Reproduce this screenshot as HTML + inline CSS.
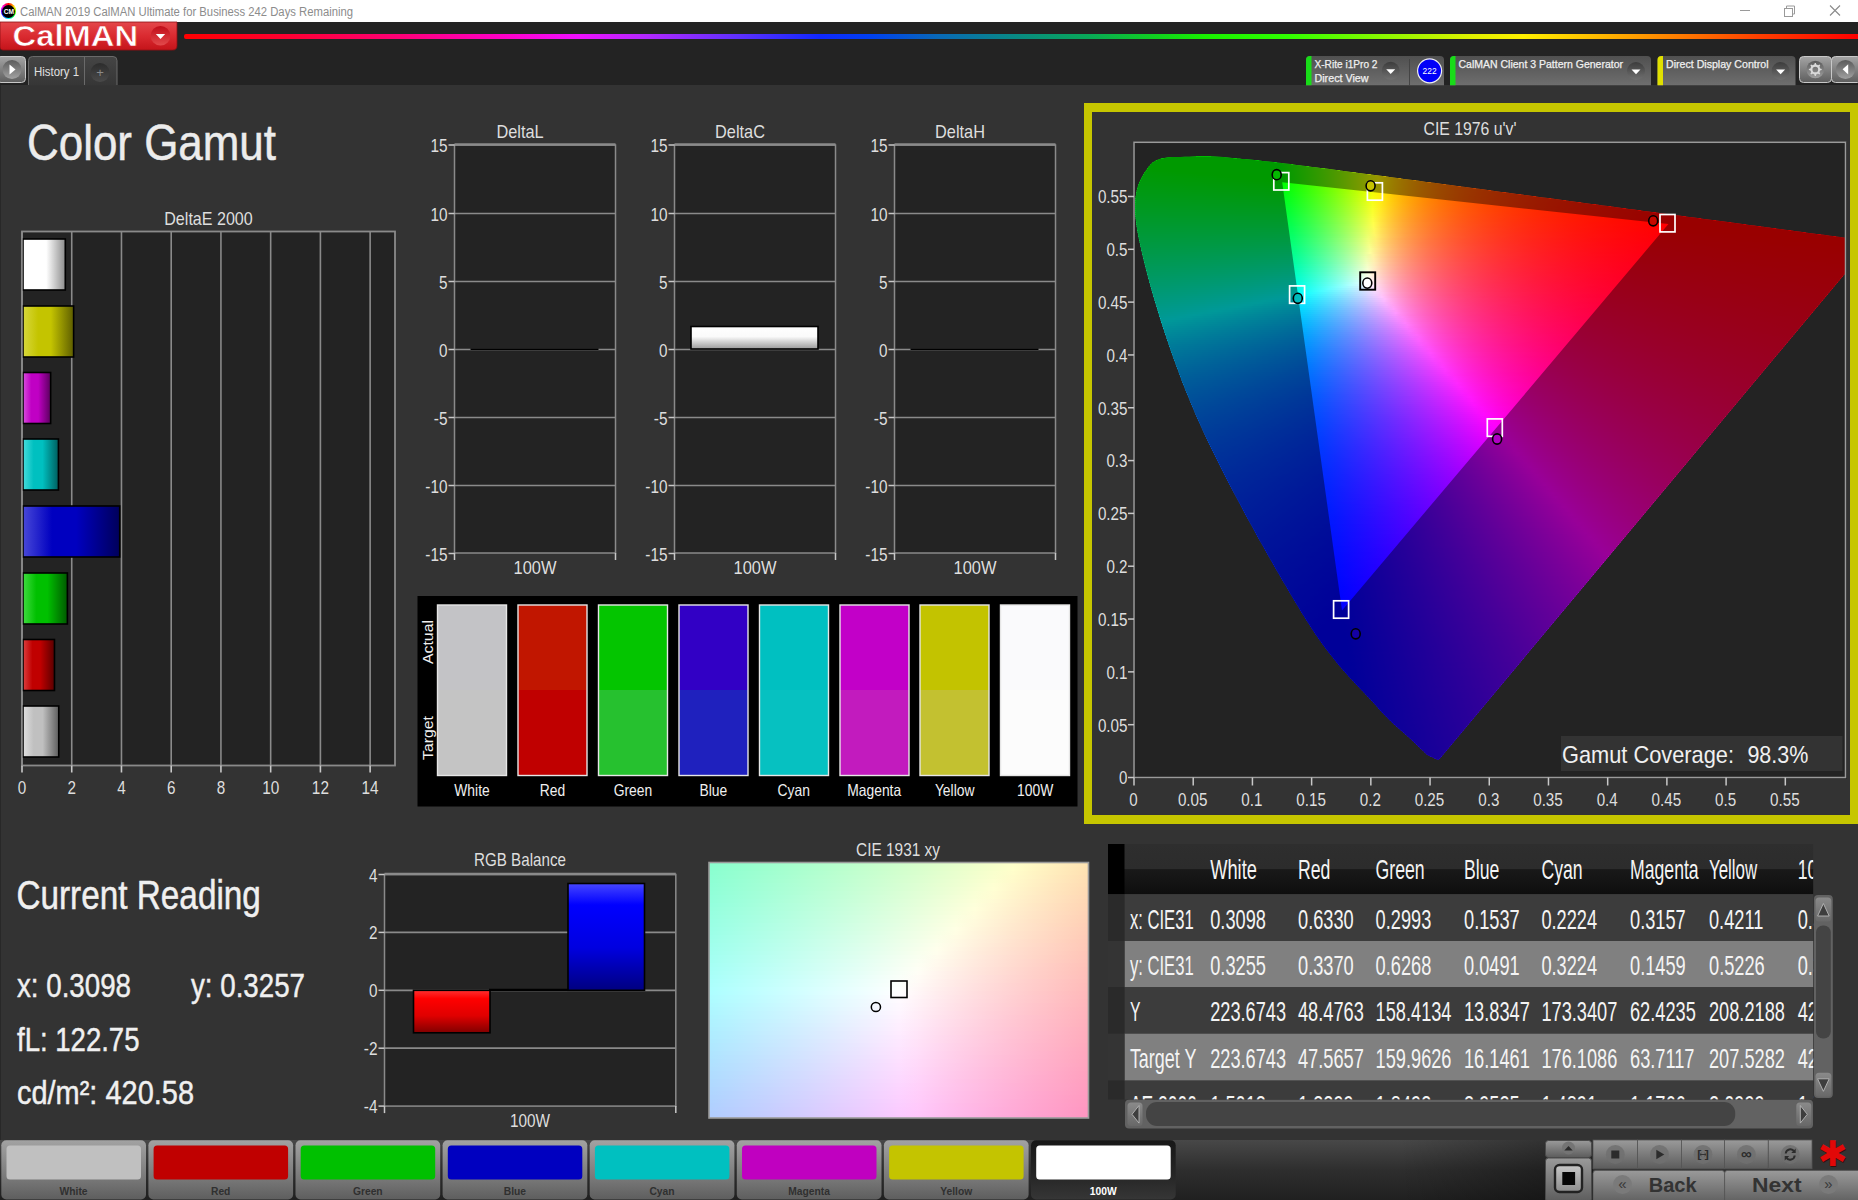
<!DOCTYPE html>
<html><head><meta charset="utf-8"><title>CalMAN</title>
<style>
html,body{margin:0;padding:0;background:#333;overflow:hidden}
body{width:1858px;height:1200px;position:relative;font-family:"Liberation Sans",sans-serif}
#r{position:absolute;left:0;top:0;width:1858px;height:1200px;overflow:hidden;background:#333}
#r div{position:absolute}
#r svg{position:absolute;left:0;top:0}
svg text{font-family:"Liberation Sans",sans-serif}
</style></head><body><div id="r">
<div style="left:0px;top:0px;width:1858px;height:22px;background:#fff"></div>
<div style="left:0px;top:22px;width:1858px;height:63.3px;background:#232323"></div>
<div style="left:0px;top:85.3px;width:1px;height:1055px;background:#282828"></div>
<div style="left:184px;top:34px;width:1674px;height:5px;background:linear-gradient(90deg,#ff0000 0%,#ff0030 6%,#ff0078 13%,#ff00c8 19%,#f010ff 23.5%,#b428ff 27.5%,#6030ff 33%,#1028ff 38%,#0040f0 41%,#0868b8 45%,#088c80 50%,#08a858 54%,#10d020 58%,#18f000 61%,#30ff00 66%,#90f800 72%,#e0f000 77%,#fff000 80%,#ffc000 84%,#ff8000 89%,#ff4000 94%,#ff0000 100%);border-radius:2px 0 0 2px"></div>
<div style="left:1.2px;top:3.4px;width:15.2px;height:15.2px;border-radius:50%;background:conic-gradient(#f00,#ff0,#0f0,#0ff,#00f,#f0f,#f00)"></div>
<div style="left:2.3px;top:4.5px;width:13px;height:13px;border-radius:50%;background:#000"></div>
<div style="left:1084px;top:103px;width:774px;height:721px;background:#c6c600"></div>
<div style="left:1092px;top:112px;width:757.5px;height:703px;background:#333"></div>
<div style="left:1133px;top:141.5px;width:713.5px;height:637px;background:#232323"></div>
<div style="left:1134.0px;top:142.3px;width:711.5px;height:635.2px;overflow:hidden;clip-path:polygon(305.9px 616.2px,304.1px 617.6px,293.4px 612.7px,291.7px 611.1px,289.8px 609.3px,288.5px 608.0px,286.9px 606.6px,285.3px 605.0px,283.5px 603.3px,281.6px 601.4px,279.5px 599.4px,277.2px 597.2px,274.9px 595.1px,272.4px 592.9px,269.9px 590.7px,267.3px 588.4px,265.9px 587.2px,264.5px 586.0px,263.0px 584.7px,261.5px 583.3px,259.9px 581.9px,258.3px 580.4px,256.7px 578.8px,254.9px 577.1px,253.2px 575.3px,251.3px 573.4px,249.4px 571.5px,247.4px 569.4px,245.4px 567.1px,243.3px 564.8px,241.1px 562.3px,238.8px 559.7px,236.5px 557.2px,234.1px 554.7px,231.7px 552.1px,229.2px 549.5px,226.7px 546.9px,224.2px 544.2px,221.5px 541.4px,218.9px 538.5px,216.1px 535.6px,213.3px 532.5px,210.4px 529.3px,207.5px 525.9px,204.5px 522.4px,201.5px 518.7px,198.4px 514.8px,195.2px 510.8px,191.9px 506.5px,188.6px 502.0px,185.2px 497.2px,181.7px 492.2px,178.2px 486.9px,174.6px 481.3px,170.9px 475.4px,167.0px 469.2px,163.0px 462.5px,158.7px 455.4px,154.4px 448.0px,149.8px 440.3px,145.1px 432.3px,140.4px 424.0px,135.5px 415.5px,130.6px 406.8px,125.6px 397.9px,120.6px 388.9px,115.6px 379.8px,110.6px 370.6px,105.6px 361.3px,100.7px 352.0px,95.8px 342.8px,91.0px 333.5px,86.4px 324.4px,81.9px 315.3px,77.5px 306.4px,73.3px 297.6px,69.2px 289.0px,65.4px 280.6px,61.8px 272.5px,58.4px 264.5px,55.0px 256.3px,51.7px 248.1px,48.4px 239.9px,45.3px 231.5px,42.2px 223.2px,39.2px 214.9px,36.3px 206.6px,33.4px 198.3px,30.7px 190.1px,28.0px 181.9px,25.5px 173.9px,23.1px 166.0px,20.7px 158.2px,18.5px 150.6px,16.4px 143.1px,14.4px 135.9px,12.5px 128.8px,10.8px 122.0px,9.2px 115.5px,7.7px 109.2px,6.4px 103.2px,5.2px 97.6px,4.1px 92.2px,3.2px 87.2px,2.5px 82.5px,1.9px 78.0px,1.5px 73.8px,1.2px 69.8px,1.1px 66.0px,1.1px 62.5px,1.3px 59.2px,1.5px 56.1px,1.9px 53.2px,2.4px 50.4px,2.9px 47.8px,3.6px 45.3px,4.3px 43.0px,5.1px 40.8px,6.0px 38.7px,6.9px 36.7px,7.9px 34.8px,9.0px 33.0px,10.0px 31.2px,11.1px 29.5px,12.3px 27.9px,13.4px 26.2px,14.5px 24.6px,15.8px 23.1px,17.1px 21.7px,18.4px 20.5px,19.9px 19.4px,23.1px 17.7px,26.6px 16.4px,30.3px 15.6px,34.3px 15.0px,38.3px 14.7px,42.5px 14.6px,46.7px 14.6px,51.0px 14.5px,55.2px 14.5px,59.4px 14.2px,63.5px 14.0px,67.6px 13.9px,71.8px 13.9px,76.0px 14.0px,80.3px 14.2px,84.7px 14.5px,89.1px 14.8px,93.7px 15.2px,96.0px 15.4px,98.3px 15.7px,100.7px 15.9px,103.1px 16.1px,105.5px 16.3px,107.9px 16.6px,110.4px 16.8px,113.0px 17.0px,115.5px 17.3px,118.1px 17.5px,120.6px 17.8px,123.2px 18.0px,125.9px 18.3px,128.5px 18.6px,131.1px 18.9px,133.8px 19.2px,136.5px 19.5px,139.3px 19.8px,142.0px 20.1px,144.8px 20.4px,147.7px 20.8px,150.5px 21.1px,153.4px 21.5px,156.4px 21.8px,159.3px 22.2px,162.4px 22.6px,165.4px 23.0px,168.6px 23.4px,171.7px 23.8px,175.0px 24.2px,178.2px 24.6px,181.6px 25.0px,184.9px 25.4px,188.3px 25.9px,191.8px 26.3px,195.3px 26.7px,198.8px 27.2px,202.4px 27.7px,206.0px 28.1px,209.7px 28.6px,213.3px 29.1px,217.1px 29.6px,220.9px 30.1px,224.7px 30.6px,228.5px 31.1px,232.5px 31.6px,236.4px 32.1px,240.4px 32.7px,244.5px 33.2px,248.5px 33.8px,252.7px 34.3px,256.9px 34.9px,261.1px 35.4px,265.4px 36.0px,269.7px 36.6px,274.1px 37.2px,278.5px 37.7px,283.1px 38.3px,287.7px 38.9px,292.3px 39.6px,297.0px 40.2px,301.8px 40.8px,306.6px 41.5px,311.5px 42.1px,316.5px 42.8px,321.4px 43.4px,326.4px 44.1px,331.5px 44.8px,336.5px 45.5px,341.6px 46.1px,346.8px 46.8px,351.9px 47.5px,357.0px 48.2px,362.2px 48.9px,367.3px 49.6px,372.5px 50.3px,377.7px 51.0px,382.8px 51.6px,387.9px 52.3px,393.1px 53.0px,398.2px 53.7px,403.4px 54.4px,408.7px 55.1px,414.0px 55.8px,419.4px 56.5px,424.8px 57.2px,430.2px 58.0px,435.7px 58.7px,441.1px 59.4px,446.6px 60.2px,452.1px 60.9px,457.5px 61.6px,463.0px 62.3px,468.4px 63.1px,473.8px 63.8px,479.1px 64.5px,484.4px 65.2px,489.6px 65.9px,494.8px 66.6px,499.9px 67.3px,504.9px 67.9px,509.8px 68.6px,514.6px 69.2px,519.4px 69.9px,524.0px 70.5px,528.6px 71.1px,533.2px 71.7px,537.7px 72.3px,542.2px 72.9px,546.6px 73.5px,551.0px 74.1px,555.4px 74.7px,559.7px 75.2px,563.9px 75.8px,568.1px 76.4px,572.2px 76.9px,576.3px 77.5px,580.3px 78.0px,584.3px 78.5px,588.2px 79.0px,592.0px 79.5px,595.8px 80.0px,599.5px 80.5px,603.1px 81.0px,606.7px 81.5px,610.1px 82.0px,613.5px 82.4px,616.9px 82.9px,620.1px 83.3px,623.3px 83.7px,626.3px 84.1px,629.3px 84.5px,632.3px 84.9px,635.1px 85.3px,637.9px 85.7px,640.6px 86.0px,643.2px 86.4px,645.8px 86.7px,648.3px 87.0px,650.8px 87.4px,653.2px 87.7px,655.6px 88.0px,657.9px 88.3px,660.2px 88.6px,662.4px 88.9px,666.7px 89.5px,670.9px 90.1px,674.9px 90.6px,678.9px 91.1px,682.7px 91.6px,686.2px 92.1px,689.6px 92.5px,692.8px 93.0px,695.8px 93.4px,698.7px 93.8px,701.4px 94.1px,704.0px 94.5px,706.4px 94.8px,708.8px 95.1px,711.0px 95.4px,714.1px 95.8px,716.7px 96.2px,719.0px 96.5px,721.6px 96.8px,723.9px 97.1px,726.3px 97.5px,728.7px 97.8px,731.0px 98.1px,733.3px 98.4px,735.6px 98.7px,737.9px 99.0px)"><div style="left:61.9px;top:12.0px;width:15.3px;height:2.5px;background:linear-gradient(90deg,#00ff00,#00ff00,#00ff00,#00ff00)"></div><div style="left:26.9px;top:14.0px;width:76.4px;height:2.5px;background:linear-gradient(90deg,#00ff00,#00ff00,#00ff00,#00ff00,#00ff00,#00ff00,#00ff00,#00ff00,#00ff00,#00ff00,#00ff00,#00ff00)"></div><div style="left:21.0px;top:16.0px;width:103.6px;height:2.5px;background:linear-gradient(90deg,#00ff00,#00ff00,#00ff00,#00ff00,#00ff00,#00ff00,#00ff00,#00ff00,#00ff00,#00ff00,#00ff00,#00ff00,#00ff00,#00ff00,#00ff00)"></div><div style="left:17.6px;top:18.0px;width:125.1px;height:2.5px;background:linear-gradient(90deg,#00ff00,#00ff00,#00ff00,#00ff00,#00ff00,#00ff00,#00ff00,#00ff00,#00ff00,#00ff00,#00ff00,#00ff00,#00ff00,#00ff00,#00ff00,#00ff00,#00ff00,#00ff00)"></div><div style="left:15.3px;top:20.0px;width:143.8px;height:2.5px;background:linear-gradient(90deg,#00ff00,#00ff00,#00ff00,#00ff00,#00ff00,#00ff00,#00ff00,#00ff00,#00ff00,#00ff00,#00ff00,#00ff00,#00ff00,#00ff00,#00ff00,#00ff00,#00ff00,#00ff00,#00ff00,#0dff00,#1cff00)"></div><div style="left:13.5px;top:22.0px;width:161.5px;height:2.5px;background:linear-gradient(90deg,#00ff00,#00ff00,#00ff00,#00ff00,#00ff00,#00ff00,#00ff00,#00ff00,#00ff00,#00ff00,#00ff00,#00ff00,#00ff00,#00ff00,#00ff00,#00ff00,#00ff00,#00ff00,#00ff00,#0fff00,#1eff00,#2eff00,#3fff00)"></div><div style="left:12.1px;top:24.0px;width:178.9px;height:2.5px;background:linear-gradient(90deg,#00ff00,#00ff00,#00ff00,#00ff00,#00ff00,#00ff00,#00ff00,#00ff00,#00ff00,#00ff00,#00ff00,#00ff00,#00ff00,#00ff00,#00ff00,#00ff00,#00ff00,#00ff00,#00ff00,#10ff00,#1fff00,#30ff00,#41ff00,#53ff00,#65ff00)"></div><div style="left:10.7px;top:26.0px;width:195.8px;height:2.5px;background:linear-gradient(90deg,#00ff03,#00ff02,#00ff01,#00ff00,#00ff00,#00ff00,#00ff00,#00ff00,#00ff00,#00ff00,#00ff00,#00ff00,#00ff00,#00ff00,#00ff00,#00ff00,#00ff00,#00ff00,#00ff00,#04ff00,#13ff00,#23ff00,#33ff00,#44ff00,#56ff00,#68ff00,#7aff00,#8eff00)"></div><div style="left:9.3px;top:28.0px;width:212.4px;height:2.5px;background:linear-gradient(90deg,#00ff05,#00ff04,#00ff03,#00ff02,#00ff01,#00ff00,#00ff00,#00ff00,#00ff00,#00ff00,#00ff00,#00ff00,#00ff00,#00ff00,#00ff00,#00ff00,#00ff00,#00ff00,#00ff00,#04ff00,#13ff00,#23ff00,#33ff00,#45ff00,#56ff00,#69ff00,#7cff00,#90ff00,#a4ff00,#baff00)"></div><div style="left:8.1px;top:30.0px;width:228.8px;height:2.5px;background:linear-gradient(90deg,#00ff08,#00ff07,#00ff06,#00ff05,#00ff04,#00ff03,#00ff02,#00ff01,#00ff00,#00ff00,#00ff00,#00ff00,#00ff00,#00ff00,#00ff00,#00ff00,#00ff00,#00ff00,#00ff00,#03ff00,#12ff00,#22ff00,#33ff00,#44ff00,#56ff00,#69ff00,#7cff00,#90ff00,#a5ff00,#bbff00,#d2ff00,#e9ff00)"></div><div style="left:6.9px;top:32.0px;width:245.0px;height:2.5px;background:linear-gradient(90deg,#00ff0b,#00ff0a,#00ff09,#00ff08,#00ff07,#00ff06,#00ff05,#00ff04,#00ff03,#00ff02,#00ff01,#00ff00,#00ff00,#00ff00,#00ff00,#00ff00,#00ff00,#00ff00,#00ff00,#01ff00,#11ff00,#21ff00,#32ff00,#43ff00,#56ff00,#68ff00,#7cff00,#90ff00,#a5ff00,#bbff00,#d2ff00,#eaff00,#fffb00,#ffe400)"></div><div style="left:5.8px;top:34.0px;width:261.1px;height:2.5px;background:linear-gradient(90deg,#00ff0d,#00ff0c,#00ff0b,#00ff0b,#00ff0a,#00ff09,#00ff08,#00ff07,#00ff06,#00ff05,#00ff04,#00ff02,#00ff01,#00ff00,#00ff00,#00ff00,#00ff00,#00ff00,#00ff00,#00ff00,#10ff00,#20ff00,#31ff00,#43ff00,#55ff00,#68ff00,#7bff00,#90ff00,#a5ff00,#bbff00,#d3ff00,#ebff00,#fffa00,#ffe300,#ffcf00,#ffbd00)"></div><div style="left:4.8px;top:36.0px;width:277.2px;height:2.5px;background:linear-gradient(90deg,#00ff10,#00ff0f,#00ff0e,#00ff0d,#00ff0c,#00ff0b,#00ff0b,#00ff0a,#00ff09,#00ff08,#00ff07,#00ff05,#00ff04,#00ff03,#00ff02,#00ff01,#00ff00,#00ff00,#00ff00,#00ff00,#0eff00,#1fff00,#30ff00,#42ff00,#54ff00,#67ff00,#7bff00,#8fff00,#a5ff00,#bbff00,#d3ff00,#ebff00,#fff900,#ffe200,#ffce00,#ffbc00,#ffad00,#ff9f00)"></div><div style="left:4.0px;top:38.0px;width:293.1px;height:2.5px;background:linear-gradient(90deg,#00ff12,#00ff12,#00ff11,#00ff10,#00ff0f,#00ff0e,#00ff0e,#00ff0d,#00ff0c,#00ff0b,#00ff0a,#00ff09,#00ff08,#00ff07,#00ff06,#00ff04,#00ff03,#00ff02,#00ff01,#00ff00,#05ff00,#15ff00,#25ff00,#36ff00,#48ff00,#5aff00,#6dff00,#81ff00,#95ff00,#abff00,#c1ff00,#d8ff00,#f0ff00,#fff500,#ffdf00,#ffcb00,#ffba00,#ffab00,#ff9e00,#ff9200,#ff8700)"></div><div style="left:3.2px;top:40.0px;width:308.9px;height:2.5px;background:linear-gradient(90deg,#00ff15,#00ff14,#00ff14,#00ff13,#00ff12,#00ff11,#00ff10,#00ff10,#00ff0f,#00ff0e,#00ff0d,#00ff0c,#00ff0b,#00ff0a,#00ff09,#00ff08,#00ff06,#00ff05,#00ff04,#00ff03,#04ff01,#14ff00,#24ff00,#35ff00,#47ff00,#59ff00,#6dff00,#80ff00,#95ff00,#abff00,#c1ff00,#d9ff00,#f1ff00,#fff400,#ffde00,#ffca00,#ffb900,#ffaa00,#ff9d00,#ff9100,#ff8600,#ff7c00,#ff7300)"></div><div style="left:2.5px;top:42.0px;width:324.6px;height:2.5px;background:linear-gradient(90deg,#00ff18,#00ff17,#00ff16,#00ff16,#00ff15,#00ff14,#00ff13,#00ff12,#00ff12,#00ff11,#00ff10,#00ff0f,#00ff0e,#00ff0d,#00ff0c,#00ff0b,#00ff0a,#00ff09,#00ff07,#00ff06,#03ff05,#13ff04,#23ff02,#35ff01,#46ff00,#59ff00,#6cff00,#80ff00,#95ff00,#abff00,#c1ff00,#d9ff00,#f2ff00,#fff300,#ffdd00,#ffc900,#ffb800,#ffa900,#ff9c00,#ff9000,#ff8500,#ff7b00,#ff7300,#ff6a00,#ff6300)"></div><div style="left:1.9px;top:44.0px;width:340.2px;height:2.5px;background:linear-gradient(90deg,#00ff1a,#00ff1a,#00ff19,#00ff18,#00ff18,#00ff17,#00ff16,#00ff15,#00ff14,#00ff14,#00ff13,#00ff12,#00ff11,#00ff10,#00ff0f,#00ff0e,#00ff0d,#00ff0c,#00ff0b,#00ff0a,#02ff08,#12ff07,#22ff06,#34ff05,#46ff03,#58ff02,#6cff00,#80ff00,#95ff00,#abff00,#c1ff00,#d9ff00,#f2ff00,#fff200,#ffdc00,#ffc900,#ffb800,#ffa900,#ff9b00,#ff8f00,#ff8500,#ff7b00,#ff7200,#ff6a00,#ff6200,#ff5b00,#ff5500)"></div><div style="left:1.4px;top:46.0px;width:355.7px;height:2.5px;background:linear-gradient(90deg,#00ff1d,#00ff1c,#00ff1c,#00ff1b,#00ff1a,#00ff1a,#00ff19,#00ff18,#00ff17,#00ff17,#00ff16,#00ff15,#00ff14,#00ff13,#00ff12,#00ff11,#00ff10,#00ff0f,#00ff0e,#00ff0d,#01ff0c,#11ff0b,#22ff09,#33ff08,#45ff07,#58ff06,#6bff04,#7fff03,#94ff01,#aaff00,#c1ff00,#d9ff00,#f2ff00,#fff200,#ffdc00,#ffc800,#ffb700,#ffa800,#ff9b00,#ff8f00,#ff8400,#ff7a00,#ff7100,#ff6900,#ff6200,#ff5b00,#ff5500,#ff4f00,#ff4900)"></div><div style="left:0.9px;top:48.0px;width:371.1px;height:2.5px;background:linear-gradient(90deg,#00ff20,#00ff1f,#00ff1e,#00ff1e,#00ff1d,#00ff1c,#00ff1c,#00ff1b,#00ff1a,#00ff1a,#00ff19,#00ff18,#00ff17,#00ff16,#00ff15,#00ff14,#00ff14,#00ff13,#00ff12,#00ff10,#00ff0f,#10ff0e,#21ff0d,#32ff0c,#44ff0b,#57ff09,#6bff08,#7fff07,#94ff05,#aaff04,#c1ff02,#d9ff00,#f3ff00,#fff200,#ffdb00,#ffc800,#ffb600,#ffa700,#ff9a00,#ff8e00,#ff8300,#ff7900,#ff7100,#ff6800,#ff6100,#ff5a00,#ff5400,#ff4e00,#ff4900,#ff4400,#ff3f00)"></div><div style="left:0.6px;top:50.0px;width:386.4px;height:2.5px;background:linear-gradient(90deg,#00ff22,#00ff22,#00ff21,#00ff21,#00ff20,#00ff1f,#00ff1f,#00ff1e,#00ff1d,#00ff1d,#00ff1c,#00ff1b,#00ff1a,#00ff19,#00ff19,#00ff18,#00ff17,#00ff16,#00ff15,#00ff14,#00ff13,#0fff12,#20ff11,#31ff10,#44ff0e,#56ff0d,#6aff0c,#7fff0b,#94ff09,#aaff08,#c1ff06,#daff05,#f3ff03,#fff101,#ffdb00,#ffc700,#ffb600,#ffa700,#ff9900,#ff8d00,#ff8300,#ff7900,#ff7000,#ff6800,#ff6000,#ff5a00,#ff5300,#ff4d00,#ff4800,#ff4300,#ff3e00,#ff3a00,#ff3600)"></div><div style="left:0.3px;top:52.0px;width:401.7px;height:2.5px;background:linear-gradient(90deg,#00ff25,#00ff24,#00ff24,#00ff23,#00ff23,#00ff22,#00ff22,#00ff21,#00ff20,#00ff20,#00ff1f,#00ff1e,#00ff1d,#00ff1d,#00ff1c,#00ff1b,#00ff1a,#00ff19,#00ff18,#00ff17,#00ff17,#0eff15,#1fff14,#31ff13,#43ff12,#56ff11,#6aff10,#7eff0f,#94ff0d,#aaff0c,#c1ff0a,#daff09,#f3ff07,#fff105,#ffda03,#ffc602,#ffb500,#ffa600,#ff9900,#ff8d00,#ff8200,#ff7800,#ff6f00,#ff6700,#ff6000,#ff5900,#ff5300,#ff4d00,#ff4800,#ff4200,#ff3e00,#ff3900,#ff3500,#ff3100,#ff2e00)"></div><div style="left:0.0px;top:54.0px;width:416.9px;height:2.5px;background:linear-gradient(90deg,#00ff28,#00ff27,#00ff27,#00ff26,#00ff26,#00ff25,#00ff24,#00ff24,#00ff23,#00ff23,#00ff22,#00ff21,#00ff21,#00ff20,#00ff1f,#00ff1e,#00ff1e,#00ff1d,#00ff1c,#00ff1b,#00ff1a,#0dff19,#1eff18,#30ff17,#42ff16,#55ff15,#69ff14,#7eff13,#93ff11,#aaff10,#c1ff0f,#daff0d,#f4ff0c,#fff00a,#ffd907,#ffc605,#ffb504,#ffa602,#ff9801,#ff8c00,#ff8100,#ff7800,#ff6f00,#ff6700,#ff5f00,#ff5800,#ff5200,#ff4c00,#ff4700,#ff4200,#ff3d00,#ff3900,#ff3500,#ff3100,#ff2d00,#ff2a00,#ff2700)"></div><div style="left:0.0px;top:56.0px;width:432.0px;height:2.5px;background:linear-gradient(90deg,#00ff2a,#00ff2a,#00ff29,#00ff29,#00ff28,#00ff28,#00ff27,#00ff27,#00ff26,#00ff26,#00ff25,#00ff24,#00ff24,#00ff23,#00ff22,#00ff22,#00ff21,#00ff20,#00ff1f,#00ff1f,#00ff1e,#0dff1d,#1eff1c,#30ff1b,#42ff1a,#55ff19,#69ff18,#7eff17,#94ff16,#aaff14,#c2ff13,#dbff12,#f4ff10,#ffef0e,#ffd90b,#ffc509,#ffb407,#ffa505,#ff9704,#ff8b02,#ff8101,#ff7700,#ff6e00,#ff6600,#ff5f00,#ff5800,#ff5200,#ff4c00,#ff4600,#ff4100,#ff3d00,#ff3800,#ff3400,#ff3000,#ff2d00,#ff2900,#ff2600,#ff2300,#ff2000)"></div><div style="left:0.0px;top:58.0px;width:446.9px;height:2.5px;background:linear-gradient(90deg,#00ff2d,#00ff2d,#00ff2c,#00ff2c,#00ff2b,#00ff2b,#00ff2a,#00ff2a,#00ff29,#00ff29,#00ff28,#00ff28,#00ff27,#00ff26,#00ff26,#00ff25,#00ff24,#00ff24,#00ff23,#00ff22,#00ff21,#0cff20,#1dff20,#2fff1f,#42ff1e,#55ff1d,#69ff1c,#7eff1b,#94ff1a,#aaff19,#c2ff17,#dbff16,#f5ff15,#ffef12,#ffd80f,#ffc40d,#ffb30b,#ffa409,#ff9707,#ff8b05,#ff8004,#ff7603,#ff6d02,#ff6501,#ff5e00,#ff5700,#ff5100,#ff4b00,#ff4600,#ff4100,#ff3c00,#ff3800,#ff3400,#ff3000,#ff2c00,#ff2900,#ff2600,#ff2300,#ff2000,#ff1d00,#ff1b00)"></div><div style="left:0.0px;top:60.0px;width:461.9px;height:2.5px;background:linear-gradient(90deg,#00ff30,#00ff2f,#00ff2f,#00ff2f,#00ff2e,#00ff2e,#00ff2d,#00ff2d,#00ff2c,#00ff2c,#00ff2b,#00ff2b,#00ff2a,#00ff2a,#00ff29,#00ff28,#00ff28,#00ff27,#00ff26,#00ff26,#00ff25,#0cff24,#1dff23,#2fff23,#41ff22,#55ff21,#69ff20,#7eff1f,#94ff1e,#abff1d,#c3ff1c,#dcff1b,#f6ff1a,#ffee17,#ffd713,#ffc411,#ffb20e,#ffa30c,#ff960a,#ff8a08,#ff7f07,#ff7605,#ff6d04,#ff6503,#ff5d02,#ff5701,#ff5000,#ff4b00,#ff4500,#ff4000,#ff3c00,#ff3700,#ff3300,#ff2f00,#ff2c00,#ff2800,#ff2500,#ff2200,#ff1f00,#ff1d00,#ff1a00,#ff1800,#ff1500)"></div><div style="left:0.0px;top:62.0px;width:476.9px;height:2.5px;background:linear-gradient(90deg,#00ff32,#00ff32,#00ff32,#00ff31,#00ff31,#00ff31,#00ff30,#00ff30,#00ff2f,#00ff2f,#00ff2e,#00ff2e,#00ff2d,#00ff2d,#00ff2c,#00ff2c,#00ff2b,#00ff2b,#00ff2a,#00ff29,#00ff29,#0bff28,#1dff27,#2eff27,#41ff26,#55ff25,#69ff24,#7eff23,#94ff22,#abff21,#c3ff20,#dcff1f,#f6ff1e,#ffed1b,#ffd617,#ffc314,#ffb212,#ffa30f,#ff950d,#ff890b,#ff7f0a,#ff7508,#ff6c07,#ff6405,#ff5d04,#ff5603,#ff5002,#ff4a01,#ff4500,#ff4000,#ff3b00,#ff3700,#ff3300,#ff2f00,#ff2b00,#ff2800,#ff2500,#ff2200,#ff1f00,#ff1c00,#ff1a00,#ff1700,#ff1500,#ff1300,#ff1100)"></div><div style="left:0.0px;top:64.0px;width:491.9px;height:2.5px;background:linear-gradient(90deg,#00ff35,#00ff35,#00ff35,#00ff34,#00ff34,#00ff33,#00ff33,#00ff33,#00ff32,#00ff32,#00ff31,#00ff31,#00ff31,#00ff30,#00ff30,#00ff2f,#00ff2f,#00ff2e,#00ff2e,#00ff2d,#00ff2c,#0bff2c,#1cff2b,#2eff2a,#41ff2a,#54ff29,#69ff28,#7eff27,#94ff27,#abff26,#c3ff25,#ddff24,#f7ff23,#ffec1f,#ffd61c,#ffc218,#ffb115,#ffa213,#ff9510,#ff890e,#ff7e0c,#ff740b,#ff6c09,#ff6408,#ff5c06,#ff5505,#ff4f04,#ff4a03,#ff4402,#ff3f01,#ff3b01,#ff3600,#ff3200,#ff2e00,#ff2b00,#ff2800,#ff2400,#ff2100,#ff1f00,#ff1c00,#ff1900,#ff1700,#ff1500,#ff1200,#ff1000,#ff0e00,#ff0c00)"></div><div style="left:0.0px;top:66.0px;width:506.9px;height:2.5px;background:linear-gradient(90deg,#00ff38,#00ff38,#00ff37,#00ff37,#00ff37,#00ff36,#00ff36,#00ff36,#00ff35,#00ff35,#00ff35,#00ff34,#00ff34,#00ff33,#00ff33,#00ff33,#00ff32,#00ff32,#00ff31,#00ff31,#00ff30,#0aff30,#1cff2f,#2eff2e,#41ff2e,#54ff2d,#69ff2c,#7eff2c,#94ff2b,#abff2a,#c4ff29,#ddff29,#f8ff28,#ffec24,#ffd520,#ffc11c,#ffb019,#ffa116,#ff9413,#ff8811,#ff7d0f,#ff740d,#ff6b0c,#ff630a,#ff5c09,#ff5508,#ff4f06,#ff4905,#ff4404,#ff3f03,#ff3a03,#ff3602,#ff3201,#ff2e00,#ff2a00,#ff2700,#ff2400,#ff2100,#ff1e00,#ff1b00,#ff1900,#ff1600,#ff1400,#ff1200,#ff1000,#ff0e00,#ff0c00,#ff0a00,#ff0800)"></div><div style="left:0.0px;top:68.0px;width:521.9px;height:2.5px;background:linear-gradient(90deg,#00ff3b,#00ff3b,#00ff3a,#00ff3a,#00ff3a,#00ff39,#00ff39,#00ff39,#00ff39,#00ff38,#00ff38,#00ff38,#00ff37,#00ff37,#00ff36,#00ff36,#00ff36,#00ff35,#00ff35,#00ff34,#00ff34,#0aff33,#1bff33,#2dff32,#40ff32,#54ff31,#68ff31,#7eff30,#94ff2f,#acff2f,#c4ff2e,#deff2d,#f9ff2d,#ffeb28,#ffd424,#ffc120,#ffb01c,#ffa019,#ff9317,#ff8714,#ff7d12,#ff7310,#ff6a0e,#ff620d,#ff5b0b,#ff540a,#ff4e09,#ff4807,#ff4306,#ff3e05,#ff3a04,#ff3504,#ff3103,#ff2e02,#ff2a01,#ff2701,#ff2300,#ff2000,#ff1e00,#ff1b00,#ff1800,#ff1600,#ff1400,#ff1200,#ff0f00,#ff0d00,#ff0c00,#ff0a00,#ff0800,#ff0600,#ff0500)"></div><div style="left:0.0px;top:70.0px;width:536.9px;height:2.5px;background:linear-gradient(90deg,#00ff3e,#00ff3d,#00ff3d,#00ff3d,#00ff3d,#00ff3c,#00ff3c,#00ff3c,#00ff3c,#00ff3b,#00ff3b,#00ff3b,#00ff3b,#00ff3a,#00ff3a,#00ff3a,#00ff39,#00ff39,#00ff38,#00ff38,#00ff38,#09ff37,#1bff37,#2dff36,#40ff36,#54ff36,#68ff35,#7eff34,#94ff34,#acff33,#c4ff33,#deff32,#f9ff31,#ffea2d,#ffd328,#ffc024,#ffaf20,#ffa01d,#ff921a,#ff8717,#ff7c15,#ff7213,#ff6a11,#ff620f,#ff5a0d,#ff540c,#ff4e0b,#ff4809,#ff4308,#ff3e07,#ff3906,#ff3505,#ff3104,#ff2d04,#ff2903,#ff2602,#ff2301,#ff2001,#ff1d00,#ff1b00,#ff1800,#ff1600,#ff1300,#ff1100,#ff0f00,#ff0d00,#ff0b00,#ff0900,#ff0800,#ff0600,#ff0400,#ff0300,#ff0100)"></div><div style="left:0.0px;top:72.0px;width:551.9px;height:2.5px;background:linear-gradient(90deg,#00ff40,#00ff40,#00ff40,#00ff40,#00ff40,#00ff3f,#00ff3f,#00ff3f,#00ff3f,#00ff3f,#00ff3e,#00ff3e,#00ff3e,#00ff3e,#00ff3d,#00ff3d,#00ff3d,#00ff3d,#00ff3c,#00ff3c,#00ff3c,#09ff3b,#1aff3b,#2dff3b,#40ff3a,#54ff3a,#68ff39,#7eff39,#94ff38,#acff38,#c5ff37,#dfff37,#faff36,#ffe931,#ffd32c,#ffbf27,#ffae23,#ff9f20,#ff921d,#ff861a,#ff7b18,#ff7215,#ff6913,#ff6112,#ff5a10,#ff530e,#ff4d0d,#ff470c,#ff420a,#ff3d09,#ff3908,#ff3407,#ff3006,#ff2d05,#ff2904,#ff2604,#ff2303,#ff2002,#ff1d02,#ff1a01,#ff1800,#ff1500,#ff1300,#ff1100,#ff0f00,#ff0d00,#ff0b00,#ff0900,#ff0700,#ff0600,#ff0400,#ff0200,#ff0100,#ff0000,#ff0000)"></div><div style="left:0.0px;top:74.0px;width:566.9px;height:2.5px;background:linear-gradient(90deg,#00ff43,#00ff43,#00ff43,#00ff43,#00ff43,#00ff42,#00ff42,#00ff42,#00ff42,#00ff42,#00ff42,#00ff41,#00ff41,#00ff41,#00ff41,#00ff41,#00ff40,#00ff40,#00ff40,#00ff40,#00ff3f,#08ff3f,#1aff3f,#2cff3f,#3fff3e,#53ff3e,#68ff3e,#7eff3d,#95ff3d,#acff3d,#c5ff3c,#dfff3c,#fbff3b,#ffe936,#ffd230,#ffbe2b,#ffad27,#ff9e23,#ff9120,#ff851d,#ff7b1a,#ff7118,#ff6816,#ff6014,#ff5912,#ff5211,#ff4c0f,#ff470e,#ff410c,#ff3d0b,#ff380a,#ff3409,#ff3008,#ff2c07,#ff2906,#ff2505,#ff2205,#ff1f04,#ff1c03,#ff1a02,#ff1702,#ff1501,#ff1201,#ff1000,#ff0e00,#ff0c00,#ff0a00,#ff0900,#ff0700,#ff0500,#ff0400,#ff0200,#ff0100,#ff0000,#ff0000,#ff0000,#ff0000)"></div><div style="left:0.2px;top:76.0px;width:581.7px;height:2.5px;background:linear-gradient(90deg,#00ff46,#00ff46,#00ff46,#00ff46,#00ff46,#00ff46,#00ff45,#00ff45,#00ff45,#00ff45,#00ff45,#00ff45,#00ff45,#00ff45,#00ff44,#00ff44,#00ff44,#00ff44,#00ff44,#00ff44,#00ff43,#08ff43,#1aff43,#2cff43,#3fff43,#53ff42,#68ff42,#7eff42,#95ff42,#adff41,#c6ff41,#e0ff41,#fcff41,#ffe73a,#ffd134,#ffbd2f,#ffac2b,#ff9d27,#ff9023,#ff8420,#ff7a1d,#ff701b,#ff6819,#ff6016,#ff5815,#ff5213,#ff4c11,#ff4610,#ff410e,#ff3c0d,#ff370c,#ff330b,#ff2f0a,#ff2b09,#ff2808,#ff2507,#ff2206,#ff1f05,#ff1c05,#ff1904,#ff1703,#ff1403,#ff1202,#ff1001,#ff0e01,#ff0c00,#ff0a00,#ff0800,#ff0600,#ff0500,#ff0300,#ff0200,#ff0000,#ff0000,#ff0000,#ff0000,#ff0000,#ff0000,#ff0000)"></div><div style="left:0.4px;top:78.0px;width:596.5px;height:2.5px;background:linear-gradient(90deg,#00ff49,#00ff49,#00ff49,#00ff49,#00ff49,#00ff49,#00ff49,#00ff48,#00ff48,#00ff48,#00ff48,#00ff48,#00ff48,#00ff48,#00ff48,#00ff48,#00ff48,#00ff48,#00ff48,#00ff47,#00ff47,#08ff47,#1aff47,#2cff47,#3fff47,#54ff47,#69ff47,#7fff46,#96ff46,#aeff46,#c7ff46,#e1ff46,#fdff46,#ffe63f,#ffd038,#ffbc33,#ffab2e,#ff9c2a,#ff8f26,#ff8323,#ff7920,#ff6f1d,#ff671b,#ff5f19,#ff5817,#ff5115,#ff4b13,#ff4512,#ff4010,#ff3b0f,#ff370e,#ff330c,#ff2f0b,#ff2b0a,#ff2709,#ff2408,#ff2108,#ff1e07,#ff1b06,#ff1905,#ff1605,#ff1404,#ff1203,#ff1003,#ff0d02,#ff0b02,#ff0a01,#ff0801,#ff0600,#ff0400,#ff0300,#ff0100,#ff0000,#ff0000,#ff0000,#ff0000,#ff0000,#ff0000,#ff0000,#ff0000,#ff0000)"></div><div style="left:0.7px;top:80.0px;width:611.3px;height:2.5px;background:linear-gradient(90deg,#00ff4c,#00ff4c,#00ff4c,#00ff4c,#00ff4c,#00ff4c,#00ff4c,#00ff4c,#00ff4c,#00ff4c,#00ff4c,#00ff4c,#00ff4c,#00ff4c,#00ff4b,#00ff4b,#00ff4b,#00ff4b,#00ff4b,#00ff4b,#00ff4b,#08ff4b,#1aff4b,#2cff4b,#40ff4b,#54ff4b,#69ff4b,#7fff4b,#96ff4b,#afff4b,#c8ff4b,#e3ff4b,#ffff4b,#ffe543,#ffce3c,#ffbb37,#ffaa32,#ff9b2d,#ff8e2a,#ff8326,#ff7823,#ff6f20,#ff661e,#ff5e1b,#ff5719,#ff5017,#ff4a15,#ff4514,#ff4012,#ff3b11,#ff3610,#ff320e,#ff2e0d,#ff2a0c,#ff270b,#ff240a,#ff2109,#ff1e08,#ff1b07,#ff1807,#ff1606,#ff1305,#ff1105,#ff0f04,#ff0d03,#ff0b03,#ff0902,#ff0702,#ff0601,#ff0401,#ff0300,#ff0100,#ff0000,#ff0000,#ff0000,#ff0000,#ff0000,#ff0000,#ff0000,#ff0000,#ff0000,#ff0000,#ff0000)"></div><div style="left:0.9px;top:82.0px;width:626.0px;height:2.5px;background:linear-gradient(90deg,#00ff4f,#00ff4f,#00ff4f,#00ff4f,#00ff4f,#00ff4f,#00ff4f,#00ff4f,#00ff4f,#00ff4f,#00ff4f,#00ff4f,#00ff4f,#00ff4f,#00ff4f,#00ff4f,#00ff4f,#00ff4f,#00ff4f,#00ff4f,#00ff4f,#07ff4f,#19ff4f,#2cff4f,#40ff50,#54ff50,#6aff50,#80ff50,#97ff50,#afff50,#c9ff50,#e4ff50,#fffe50,#ffe448,#ffcd41,#ffba3b,#ffa935,#ff9a31,#ff8d2d,#ff8229,#ff7726,#ff6e23,#ff6520,#ff5d1e,#ff561c,#ff5019,#ff4a18,#ff4416,#ff3f14,#ff3a13,#ff3611,#ff3110,#ff2e0f,#ff2a0e,#ff260d,#ff230c,#ff200b,#ff1d0a,#ff1a09,#ff1808,#ff1507,#ff1307,#ff1106,#ff0f05,#ff0d05,#ff0b04,#ff0903,#ff0703,#ff0502,#ff0402,#ff0201,#ff0101,#ff0000,#ff0000,#ff0000,#ff0000,#ff0000,#ff0000,#ff0000,#ff0000,#ff0000,#ff0000,#ff0000,#ff0000,#ff0000)"></div><div style="left:1.2px;top:84.0px;width:640.8px;height:2.5px;background:linear-gradient(90deg,#00ff52,#00ff52,#00ff52,#00ff52,#00ff52,#00ff52,#00ff52,#00ff52,#00ff52,#00ff52,#00ff52,#00ff52,#00ff53,#00ff53,#00ff53,#00ff53,#00ff53,#00ff53,#00ff53,#00ff53,#00ff53,#07ff54,#1aff54,#2cff54,#40ff54,#55ff54,#6aff54,#80ff54,#98ff55,#b0ff55,#caff55,#e5ff55,#fffd55,#ffe24c,#ffcc45,#ffb93e,#ffa839,#ff9934,#ff8c30,#ff812c,#ff7629,#ff6d26,#ff6423,#ff5d20,#ff551e,#ff4f1c,#ff491a,#ff4318,#ff3e16,#ff3915,#ff3513,#ff3112,#ff2d11,#ff290f,#ff260e,#ff230d,#ff200c,#ff1d0b,#ff1a0a,#ff170a,#ff1509,#ff1308,#ff1007,#ff0e07,#ff0c06,#ff0a05,#ff0805,#ff0704,#ff0504,#ff0303,#ff0202,#ff0002,#ff0002,#ff0001,#ff0001,#ff0000,#ff0000,#ff0000,#ff0000,#ff0000,#ff0000,#ff0000,#ff0000,#ff0000,#ff0000,#ff0000,#ff0000)"></div><div style="left:1.5px;top:86.0px;width:655.5px;height:2.5px;background:linear-gradient(90deg,#00ff55,#00ff55,#00ff55,#00ff55,#00ff55,#00ff55,#00ff55,#00ff55,#00ff56,#00ff56,#00ff56,#00ff56,#00ff56,#00ff56,#00ff56,#00ff57,#00ff57,#00ff57,#00ff57,#00ff57,#00ff58,#07ff58,#1aff58,#2dff58,#40ff58,#55ff59,#6bff59,#81ff59,#99ff59,#b1ff5a,#cbff5a,#e6ff5a,#fffb59,#ffe150,#ffcb49,#ffb842,#ffa73c,#ff9837,#ff8b33,#ff802f,#ff752b,#ff6c28,#ff6325,#ff5c23,#ff5520,#ff4e1e,#ff481c,#ff431a,#ff3e18,#ff3917,#ff3415,#ff3014,#ff2c12,#ff2911,#ff2510,#ff220f,#ff1f0e,#ff1c0d,#ff190c,#ff170b,#ff140a,#ff1209,#ff1009,#ff0e08,#ff0c07,#ff0a06,#ff0806,#ff0605,#ff0505,#ff0304,#ff0104,#ff0003,#ff0003,#ff0002,#ff0002,#ff0001,#ff0001,#ff0000,#ff0000,#ff0000,#ff0000,#ff0000,#ff0000,#ff0000,#ff0000,#ff0000,#ff0000,#ff0000,#ff0000)"></div><div style="left:1.8px;top:88.0px;width:670.2px;height:2.5px;background:linear-gradient(90deg,#00ff58,#00ff58,#00ff58,#00ff58,#00ff58,#00ff58,#00ff58,#00ff59,#00ff59,#00ff59,#00ff59,#00ff59,#00ff5a,#00ff5a,#00ff5a,#00ff5a,#00ff5b,#00ff5b,#00ff5b,#00ff5b,#00ff5c,#07ff5c,#1aff5c,#2dff5d,#41ff5d,#55ff5d,#6bff5e,#82ff5e,#9aff5e,#b2ff5f,#ccff5f,#e8ff60,#fff95e,#ffdf55,#ffc94d,#ffb646,#ffa640,#ff973b,#ff8a36,#ff7f32,#ff742e,#ff6b2b,#ff6328,#ff5b25,#ff5423,#ff4d20,#ff481e,#ff421c,#ff3d1a,#ff3819,#ff3417,#ff3015,#ff2c14,#ff2813,#ff2512,#ff2210,#ff1f0f,#ff1c0e,#ff190d,#ff160c,#ff140b,#ff120b,#ff0f0a,#ff0d09,#ff0b08,#ff0908,#ff0807,#ff0606,#ff0406,#ff0305,#ff0105,#ff0004,#ff0004,#ff0003,#ff0003,#ff0002,#ff0002,#ff0001,#ff0001,#ff0001,#ff0000,#ff0000,#ff0000,#ff0000,#ff0000,#ff0000,#ff0000,#ff0000,#ff0000,#ff0000,#ff0000)"></div><div style="left:2.2px;top:90.0px;width:684.8px;height:2.5px;background:linear-gradient(90deg,#00ff5b,#00ff5b,#00ff5b,#00ff5b,#00ff5b,#00ff5c,#00ff5c,#00ff5c,#00ff5c,#00ff5c,#00ff5d,#00ff5d,#00ff5d,#00ff5e,#00ff5e,#00ff5e,#00ff5e,#00ff5f,#00ff5f,#00ff60,#00ff60,#08ff60,#1aff61,#2dff61,#41ff62,#56ff62,#6cff62,#83ff63,#9aff63,#b4ff64,#ceff65,#e9ff65,#fff863,#ffde59,#ffc851,#ffb54a,#ffa443,#ff963e,#ff8939,#ff7e35,#ff7331,#ff6a2e,#ff622a,#ff5a27,#ff5325,#ff4d22,#ff4720,#ff411e,#ff3c1c,#ff381a,#ff3319,#ff2f17,#ff2b16,#ff2814,#ff2413,#ff2112,#ff1e11,#ff1b10,#ff190f,#ff160e,#ff140d,#ff110c,#ff0f0b,#ff0d0a,#ff0b0a,#ff0909,#ff0708,#ff0508,#ff0407,#ff0206,#ff0106,#ff0005,#ff0005,#ff0004,#ff0004,#ff0003,#ff0003,#ff0002,#ff0002,#ff0001,#ff0001,#ff0001,#ff0000,#ff0000,#ff0000,#ff0000,#ff0000,#ff0000,#ff0000,#ff0000,#ff0000,#ff0000,#ff0000)"></div><div style="left:2.6px;top:92.0px;width:699.4px;height:2.5px;background:linear-gradient(90deg,#00ff5e,#00ff5e,#00ff5e,#00ff5e,#00ff5f,#00ff5f,#00ff5f,#00ff5f,#00ff60,#00ff60,#00ff60,#00ff61,#00ff61,#00ff61,#00ff62,#00ff62,#00ff62,#00ff63,#00ff63,#00ff64,#00ff64,#08ff65,#1aff65,#2dff66,#42ff66,#57ff67,#6cff67,#83ff68,#9bff69,#b5ff69,#cfff6a,#ebff6b,#fff668,#ffdc5e,#ffc655,#ffb44d,#ffa347,#ff9541,#ff883c,#ff7d38,#ff7234,#ff6930,#ff612d,#ff592a,#ff5227,#ff4c25,#ff4622,#ff4120,#ff3c1e,#ff371c,#ff331b,#ff2e19,#ff2b18,#ff2716,#ff2415,#ff2114,#ff1e12,#ff1b11,#ff1810,#ff150f,#ff130e,#ff110d,#ff0f0d,#ff0d0c,#ff0b0b,#ff090a,#ff0709,#ff0509,#ff0308,#ff0207,#ff0007,#ff0006,#ff0006,#ff0005,#ff0005,#ff0004,#ff0004,#ff0003,#ff0003,#ff0002,#ff0002,#ff0002,#ff0001,#ff0001,#ff0000,#ff0000,#ff0000,#ff0000,#ff0000,#ff0000,#ff0000,#ff0000,#ff0000,#ff0000,#ff0000)"></div><div style="left:3.0px;top:94.0px;width:708.5px;height:2.5px;background:linear-gradient(90deg,#00ff61,#00ff61,#00ff61,#00ff61,#00ff62,#00ff62,#00ff62,#00ff63,#00ff63,#00ff63,#00ff64,#00ff64,#00ff65,#00ff65,#00ff65,#00ff66,#00ff66,#00ff67,#00ff67,#00ff68,#00ff68,#09ff69,#1cff6a,#2fff6a,#43ff6b,#59ff6c,#6fff6c,#86ff6d,#9eff6e,#b8ff6f,#d3ff6f,#efff70,#fff26b,#ffd961,#ffc358,#ffb151,#ffa04a,#ff9244,#ff863f,#ff7a3a,#ff7036,#ff6732,#ff5f2f,#ff582c,#ff5129,#ff4a27,#ff4524,#ff3f22,#ff3a20,#ff361e,#ff311c,#ff2d1b,#ff2a19,#ff2618,#ff2316,#ff2015,#ff1d14,#ff1a13,#ff1711,#ff1510,#ff120f,#ff100f,#ff0e0e,#ff0c0d,#ff0a0c,#ff080b,#ff060b,#ff040a,#ff0309,#ff0108,#ff0008,#ff0007,#ff0007,#ff0006,#ff0006,#ff0005,#ff0005,#ff0004,#ff0004,#ff0003,#ff0003,#ff0002,#ff0002,#ff0002,#ff0001,#ff0001,#ff0001,#ff0000,#ff0000,#ff0000,#ff0000,#ff0000,#ff0000,#ff0000,#ff0000,#ff0000)"></div><div style="left:3.4px;top:96.0px;width:708.1px;height:2.5px;background:linear-gradient(90deg,#00ff64,#00ff64,#00ff64,#00ff65,#00ff65,#00ff65,#00ff66,#00ff66,#00ff67,#00ff67,#00ff67,#00ff68,#00ff68,#00ff69,#00ff69,#00ff6a,#00ff6a,#00ff6b,#00ff6c,#00ff6c,#00ff6d,#09ff6d,#1cff6e,#2fff6f,#44ff70,#59ff70,#70ff71,#87ff72,#9fff73,#b9ff74,#d4ff75,#f1ff76,#fff070,#ffd765,#ffc25c,#ffaf54,#ff9f4d,#ff9147,#ff8542,#ff793d,#ff6f39,#ff6635,#ff5e32,#ff572e,#ff502b,#ff4a29,#ff4426,#ff3f24,#ff3a22,#ff3520,#ff311e,#ff2d1c,#ff291b,#ff2519,#ff2218,#ff1f17,#ff1c15,#ff1914,#ff1713,#ff1412,#ff1211,#ff0f10,#ff0d0f,#ff0b0e,#ff090d,#ff070c,#ff060c,#ff040b,#ff020a,#ff010a,#ff0009,#ff0008,#ff0008,#ff0007,#ff0007,#ff0006,#ff0006,#ff0005,#ff0005,#ff0004,#ff0004,#ff0003,#ff0003,#ff0002,#ff0002,#ff0002,#ff0001,#ff0001,#ff0001,#ff0000,#ff0000,#ff0000,#ff0000,#ff0000,#ff0000,#ff0000)"></div><div style="left:3.8px;top:98.0px;width:707.7px;height:2.5px;background:linear-gradient(90deg,#00ff67,#00ff67,#00ff67,#00ff68,#00ff68,#00ff69,#00ff69,#00ff6a,#00ff6a,#00ff6b,#00ff6b,#00ff6c,#00ff6c,#00ff6d,#00ff6d,#00ff6e,#00ff6e,#00ff6f,#00ff70,#00ff70,#00ff71,#09ff72,#1cff73,#30ff74,#44ff74,#5aff75,#70ff76,#88ff77,#a1ff78,#baff79,#d6ff7a,#f2ff7c,#ffef75,#ffd66a,#ffc060,#ffae58,#ff9e51,#ff904b,#ff8445,#ff7840,#ff6f3c,#ff6638,#ff5d34,#ff5631,#ff4f2e,#ff492b,#ff4328,#ff3e26,#ff3924,#ff3422,#ff3020,#ff2c1e,#ff281d,#ff251b,#ff221a,#ff1e18,#ff1c17,#ff1916,#ff1614,#ff1413,#ff1112,#ff0f11,#ff0d10,#ff0b0f,#ff090f,#ff070e,#ff050d,#ff040c,#ff020b,#ff000b,#ff000a,#ff0009,#ff0009,#ff0008,#ff0008,#ff0007,#ff0007,#ff0006,#ff0006,#ff0005,#ff0005,#ff0004,#ff0004,#ff0003,#ff0003,#ff0003,#ff0002,#ff0002,#ff0001,#ff0001,#ff0001,#ff0000,#ff0000,#ff0000,#ff0000,#ff0000)"></div><div style="left:4.2px;top:100.0px;width:707.3px;height:2.5px;background:linear-gradient(90deg,#00ff6a,#00ff6a,#00ff6b,#00ff6b,#00ff6c,#00ff6c,#00ff6d,#00ff6d,#00ff6e,#00ff6e,#00ff6f,#00ff6f,#00ff70,#00ff71,#00ff71,#00ff72,#00ff73,#00ff73,#00ff74,#00ff75,#00ff76,#09ff76,#1cff77,#30ff78,#45ff79,#5aff7a,#71ff7b,#89ff7c,#a2ff7e,#bcff7f,#d7ff80,#f4ff81,#ffed7a,#ffd46e,#ffbf64,#ffad5c,#ff9d54,#ff8f4e,#ff8248,#ff7743,#ff6e3f,#ff653a,#ff5d37,#ff5533,#ff4e30,#ff482d,#ff422b,#ff3d28,#ff3826,#ff3424,#ff2f22,#ff2c20,#ff281e,#ff241d,#ff211b,#ff1e1a,#ff1b18,#ff1817,#ff1616,#ff1315,#ff1114,#ff0f13,#ff0c12,#ff0a11,#ff0910,#ff070f,#ff050e,#ff030d,#ff020d,#ff000c,#ff000b,#ff000b,#ff000a,#ff0009,#ff0009,#ff0008,#ff0008,#ff0007,#ff0007,#ff0006,#ff0006,#ff0005,#ff0005,#ff0004,#ff0004,#ff0003,#ff0003,#ff0003,#ff0002,#ff0002,#ff0002,#ff0001,#ff0001,#ff0001,#ff0000,#ff0000)"></div><div style="left:4.6px;top:102.0px;width:706.9px;height:2.5px;background:linear-gradient(90deg,#00ff6d,#00ff6d,#00ff6e,#00ff6e,#00ff6f,#00ff70,#00ff70,#00ff71,#00ff71,#00ff72,#00ff72,#00ff73,#00ff74,#00ff74,#00ff75,#00ff76,#00ff77,#00ff77,#00ff78,#00ff79,#00ff7a,#0aff7b,#1dff7c,#31ff7d,#45ff7e,#5bff7f,#72ff80,#8aff82,#a3ff83,#bdff84,#d9ff86,#f6ff87,#ffeb7e,#ffd372,#ffbe68,#ffab60,#ff9c58,#ff8e51,#ff814b,#ff7646,#ff6d41,#ff643d,#ff5c39,#ff5436,#ff4e32,#ff4730,#ff422d,#ff3d2a,#ff3828,#ff3326,#ff2f24,#ff2b22,#ff2720,#ff241e,#ff211d,#ff1d1b,#ff1b1a,#ff1819,#ff1517,#ff1316,#ff1015,#ff0e14,#ff0c13,#ff0a12,#ff0811,#ff0610,#ff050f,#ff030f,#ff010e,#ff000d,#ff000c,#ff000c,#ff000b,#ff000a,#ff000a,#ff0009,#ff0009,#ff0008,#ff0008,#ff0007,#ff0007,#ff0006,#ff0006,#ff0005,#ff0005,#ff0004,#ff0004,#ff0003,#ff0003,#ff0003,#ff0002,#ff0002,#ff0002,#ff0001,#ff0001,#ff0001)"></div><div style="left:5.0px;top:104.0px;width:706.5px;height:2.5px;background:linear-gradient(90deg,#00ff70,#00ff71,#00ff71,#00ff72,#00ff72,#00ff73,#00ff74,#00ff74,#00ff75,#00ff75,#00ff76,#00ff77,#00ff78,#00ff78,#00ff79,#00ff7a,#00ff7b,#00ff7c,#00ff7d,#00ff7e,#00ff7f,#0aff80,#1dff81,#31ff82,#46ff83,#5cff84,#73ff86,#8bff87,#a4ff88,#beff8a,#daff8c,#f8ff8d,#ffe983,#ffd177,#ffbc6c,#ffaa63,#ff9a5b,#ff8d55,#ff804e,#ff7549,#ff6c44,#ff6340,#ff5b3c,#ff5438,#ff4d35,#ff4732,#ff412f,#ff3c2c,#ff372a,#ff3228,#ff2e26,#ff2a24,#ff2722,#ff2320,#ff201e,#ff1d1d,#ff1a1b,#ff171a,#ff1519,#ff1218,#ff1016,#ff0e15,#ff0c14,#ff0a13,#ff0812,#ff0611,#ff0411,#ff0210,#ff010f,#ff000e,#ff000d,#ff000d,#ff000c,#ff000b,#ff000b,#ff000a,#ff000a,#ff0009,#ff0008,#ff0008,#ff0007,#ff0007,#ff0006,#ff0006,#ff0006,#ff0005,#ff0005,#ff0004,#ff0004,#ff0004,#ff0003,#ff0003,#ff0002,#ff0002,#ff0002,#ff0001)"></div><div style="left:5.5px;top:106.0px;width:706.0px;height:2.5px;background:linear-gradient(90deg,#00ff73,#00ff74,#00ff75,#00ff75,#00ff76,#00ff76,#00ff77,#00ff78,#00ff78,#00ff79,#00ff7a,#00ff7b,#00ff7c,#00ff7c,#00ff7d,#00ff7e,#00ff7f,#00ff80,#00ff81,#00ff82,#00ff83,#0aff84,#1dff86,#31ff87,#46ff88,#5cff8a,#74ff8b,#8cff8c,#a5ff8e,#c0ff90,#dcff91,#f9ff93,#ffe888,#ffcf7b,#ffbb70,#ffa967,#ff995f,#ff8b58,#ff7f52,#ff744c,#ff6b47,#ff6242,#ff5a3e,#ff533b,#ff4c37,#ff4634,#ff4031,#ff3b2e,#ff362c,#ff322a,#ff2e27,#ff2a25,#ff2623,#ff2322,#ff1f20,#ff1c1e,#ff1a1d,#ff171c,#ff141a,#ff1219,#ff0f18,#ff0d17,#ff0b16,#ff0915,#ff0714,#ff0513,#ff0412,#ff0211,#ff0010,#ff000f,#ff000f,#ff000e,#ff000d,#ff000c,#ff000c,#ff000b,#ff000b,#ff000a,#ff0009,#ff0009,#ff0008,#ff0008,#ff0007,#ff0007,#ff0006,#ff0006,#ff0006,#ff0005,#ff0005,#ff0004,#ff0004,#ff0004,#ff0003,#ff0003,#ff0003,#ff0002)"></div><div style="left:5.9px;top:108.0px;width:705.6px;height:2.5px;background:linear-gradient(90deg,#00ff77,#00ff77,#00ff78,#00ff79,#00ff79,#00ff7a,#00ff7b,#00ff7b,#00ff7c,#00ff7d,#00ff7e,#00ff7f,#00ff7f,#00ff80,#00ff81,#00ff82,#00ff83,#00ff84,#00ff86,#00ff87,#00ff88,#0aff89,#1eff8a,#32ff8c,#47ff8d,#5dff8f,#74ff90,#8dff92,#a6ff94,#c1ff95,#ddff97,#fbff99,#ffe68c,#ffce7f,#ffb974,#ffa76b,#ff9862,#ff8a5b,#ff7e55,#ff734f,#ff6a4a,#ff6145,#ff5941,#ff523d,#ff4b39,#ff4536,#ff4033,#ff3a30,#ff362e,#ff312b,#ff2d29,#ff2927,#ff2525,#ff2223,#ff1f22,#ff1c20,#ff191f,#ff161d,#ff141c,#ff111a,#ff0f19,#ff0d18,#ff0b17,#ff0916,#ff0715,#ff0514,#ff0313,#ff0212,#ff0011,#ff0010,#ff0010,#ff000f,#ff000e,#ff000d,#ff000d,#ff000c,#ff000c,#ff000b,#ff000a,#ff000a,#ff0009,#ff0009,#ff0008,#ff0008,#ff0007,#ff0007,#ff0006,#ff0006,#ff0006,#ff0005,#ff0005,#ff0004,#ff0004,#ff0004,#ff0003,#ff0003)"></div><div style="left:6.4px;top:110.0px;width:705.1px;height:2.5px;background:linear-gradient(90deg,#00ff7a,#00ff7b,#00ff7b,#00ff7c,#00ff7d,#00ff7d,#00ff7e,#00ff7f,#00ff80,#00ff81,#00ff82,#00ff83,#00ff83,#00ff84,#00ff86,#00ff87,#00ff88,#00ff89,#00ff8a,#00ff8b,#00ff8d,#0aff8e,#1eff8f,#32ff91,#48ff92,#5eff94,#75ff96,#8eff98,#a8ff99,#c3ff9b,#dfff9d,#fdffa0,#ffe491,#ffcc84,#ffb878,#ffa66e,#ff9766,#ff895e,#ff7d58,#ff7252,#ff694d,#ff6048,#ff5843,#ff513f,#ff4a3c,#ff4438,#ff3f35,#ff3a32,#ff3530,#ff312d,#ff2c2b,#ff2929,#ff2527,#ff2225,#ff1e23,#ff1b22,#ff1820,#ff161f,#ff131d,#ff111c,#ff0f1b,#ff0c19,#ff0a18,#ff0817,#ff0616,#ff0515,#ff0314,#ff0113,#ff0012,#ff0012,#ff0011,#ff0010,#ff000f,#ff000f,#ff000e,#ff000d,#ff000d,#ff000c,#ff000b,#ff000b,#ff000a,#ff000a,#ff0009,#ff0009,#ff0008,#ff0008,#ff0007,#ff0007,#ff0006,#ff0006,#ff0006,#ff0005,#ff0005,#ff0004,#ff0004,#ff0004)"></div><div style="left:6.9px;top:112.0px;width:704.6px;height:2.5px;background:linear-gradient(90deg,#00ff7d,#00ff7e,#00ff7f,#00ff7f,#00ff80,#00ff81,#00ff82,#00ff83,#00ff84,#00ff85,#00ff86,#00ff87,#00ff88,#00ff89,#00ff8a,#00ff8b,#00ff8c,#00ff8e,#00ff8f,#00ff90,#00ff92,#0fff93,#23ff95,#38ff96,#4eff98,#65ff9a,#7dff9c,#96ff9e,#b1ffa0,#cdffa2,#eaffa4,#fff5a0,#ffda91,#ffc384,#ffb078,#ff9f6f,#ff9066,#ff835f,#ff7758,#ff6d52,#ff644d,#ff5c48,#ff5444,#ff4d40,#ff473c,#ff4139,#ff3c36,#ff3733,#ff3231,#ff2e2e,#ff2a2c,#ff262a,#ff2228,#ff1f26,#ff1c24,#ff1922,#ff1621,#ff141f,#ff111e,#ff0f1c,#ff0d1b,#ff0b1a,#ff0919,#ff0718,#ff0517,#ff0316,#ff0115,#ff0014,#ff0013,#ff0012,#ff0011,#ff0010,#ff0010,#ff000f,#ff000e,#ff000e,#ff000d,#ff000c,#ff000c,#ff000b,#ff000b,#ff000a,#ff000a,#ff0009,#ff0009,#ff0008,#ff0008,#ff0007,#ff0007,#ff0006,#ff0006,#ff0006,#ff0005,#ff0005,#ff0004)"></div><div style="left:7.3px;top:114.0px;width:704.2px;height:2.5px;background:linear-gradient(90deg,#00ff80,#00ff81,#00ff82,#00ff83,#00ff84,#00ff85,#00ff86,#00ff86,#00ff87,#00ff88,#00ff8a,#00ff8b,#00ff8c,#00ff8d,#00ff8e,#00ff8f,#00ff91,#00ff92,#00ff93,#00ff95,#00ff97,#0fff98,#23ff9a,#39ff9c,#4fff9d,#66ff9f,#7effa1,#97ffa3,#b2ffa6,#ceffa8,#ecffab,#fff3a5,#ffd895,#ffc188,#ffae7c,#ff9d72,#ff8f6a,#ff8262,#ff765b,#ff6c55,#ff6350,#ff5b4b,#ff5346,#ff4c42,#ff463f,#ff403b,#ff3b38,#ff3635,#ff3132,#ff2d30,#ff292e,#ff252b,#ff2229,#ff1f27,#ff1b26,#ff1924,#ff1622,#ff1321,#ff111f,#ff0e1e,#ff0c1d,#ff0a1b,#ff081a,#ff0619,#ff0418,#ff0317,#ff0116,#ff0015,#ff0014,#ff0013,#ff0012,#ff0012,#ff0011,#ff0010,#ff000f,#ff000f,#ff000e,#ff000d,#ff000d,#ff000c,#ff000c,#ff000b,#ff000a,#ff000a,#ff0009,#ff0009,#ff0008,#ff0008,#ff0008,#ff0007,#ff0007,#ff0006,#ff0006,#ff0006,#ff0005)"></div><div style="left:7.8px;top:116.0px;width:703.7px;height:2.5px;background:linear-gradient(90deg,#00ff84,#00ff85,#00ff85,#00ff86,#00ff87,#00ff88,#00ff89,#00ff8a,#00ff8b,#00ff8c,#00ff8d,#00ff8f,#00ff90,#00ff91,#00ff92,#00ff94,#00ff95,#00ff97,#00ff98,#00ff9a,#00ff9b,#10ff9d,#24ff9f,#39ffa1,#4fffa3,#67ffa5,#7fffa7,#99ffa9,#b4ffac,#d0ffae,#eeffb1,#fff1aa,#ffd69a,#ffc08c,#ffad80,#ff9c76,#ff8d6d,#ff8165,#ff755e,#ff6b58,#ff6253,#ff5a4e,#ff5249,#ff4b45,#ff4541,#ff3f3d,#ff3a3a,#ff3537,#ff3134,#ff2c32,#ff282f,#ff252d,#ff212b,#ff1e29,#ff1b27,#ff1825,#ff1524,#ff1322,#ff1021,#ff0e1f,#ff0c1e,#ff0a1d,#ff081b,#ff061a,#ff0419,#ff0218,#ff0117,#ff0016,#ff0015,#ff0014,#ff0013,#ff0013,#ff0012,#ff0011,#ff0010,#ff0010,#ff000f,#ff000e,#ff000e,#ff000d,#ff000c,#ff000c,#ff000b,#ff000b,#ff000a,#ff000a,#ff0009,#ff0009,#ff0008,#ff0008,#ff0008,#ff0007,#ff0007,#ff0006,#ff0006)"></div><div style="left:8.3px;top:118.0px;width:703.2px;height:2.5px;background:linear-gradient(90deg,#00ff87,#00ff88,#00ff89,#00ff8a,#00ff8b,#00ff8c,#00ff8d,#00ff8e,#00ff8f,#00ff90,#00ff92,#00ff93,#00ff94,#00ff95,#00ff97,#00ff98,#00ff9a,#00ff9b,#00ff9d,#00ff9f,#00ffa0,#10ffa2,#24ffa4,#3affa6,#50ffa8,#68ffaa,#80ffad,#9affaf,#b5ffb2,#d2ffb5,#f0ffb7,#ffefaf,#ffd59e,#ffbe90,#ffab84,#ff9b7a,#ff8c70,#ff7f68,#ff7461,#ff6a5b,#ff6155,#ff5950,#ff514b,#ff4b47,#ff4443,#ff3f40,#ff393c,#ff3539,#ff3036,#ff2c34,#ff2831,#ff242f,#ff212d,#ff1d2b,#ff1a29,#ff1827,#ff1525,#ff1224,#ff1022,#ff0e21,#ff0b1f,#ff091e,#ff071d,#ff051c,#ff041a,#ff0219,#ff0018,#ff0017,#ff0016,#ff0015,#ff0015,#ff0014,#ff0013,#ff0012,#ff0011,#ff0011,#ff0010,#ff000f,#ff000f,#ff000e,#ff000d,#ff000d,#ff000c,#ff000c,#ff000b,#ff000b,#ff000a,#ff000a,#ff0009,#ff0009,#ff0008,#ff0008,#ff0007,#ff0007,#ff0007)"></div><div style="left:8.8px;top:120.0px;width:702.7px;height:2.5px;background:linear-gradient(90deg,#00ff8b,#00ff8b,#00ff8c,#00ff8d,#00ff8f,#00ff90,#00ff91,#00ff92,#00ff93,#00ff94,#00ff96,#00ff97,#00ff98,#00ff9a,#00ff9b,#00ff9d,#00ff9e,#00ffa0,#00ffa2,#00ffa3,#00ffa5,#10ffa7,#25ffa9,#3affac,#51ffae,#68ffb0,#81ffb3,#9bffb5,#b7ffb8,#d4ffbb,#f2ffbe,#ffedb4,#ffd3a3,#ffbd94,#ffaa88,#ff997d,#ff8b74,#ff7e6c,#ff7364,#ff695e,#ff6058,#ff5853,#ff514e,#ff4a4a,#ff4446,#ff3e42,#ff393e,#ff343b,#ff2f38,#ff2b36,#ff2733,#ff2431,#ff202e,#ff1d2c,#ff1a2a,#ff1729,#ff1427,#ff1225,#ff0f24,#ff0d22,#ff0b21,#ff091f,#ff071e,#ff051d,#ff031c,#ff011b,#ff0019,#ff0018,#ff0017,#ff0017,#ff0016,#ff0015,#ff0014,#ff0013,#ff0012,#ff0012,#ff0011,#ff0010,#ff0010,#ff000f,#ff000e,#ff000e,#ff000d,#ff000d,#ff000c,#ff000c,#ff000b,#ff000a,#ff000a,#ff000a,#ff0009,#ff0009,#ff0008,#ff0008,#ff0007)"></div><div style="left:9.3px;top:122.0px;width:702.2px;height:2.5px;background:linear-gradient(90deg,#00ff8e,#00ff8f,#00ff90,#00ff91,#00ff92,#00ff93,#00ff95,#00ff96,#00ff97,#00ff98,#00ff9a,#00ff9b,#00ff9d,#00ff9e,#00ffa0,#00ffa1,#00ffa3,#00ffa5,#00ffa7,#00ffa8,#00ffaa,#11ffad,#25ffaf,#3bffb1,#52ffb3,#69ffb6,#82ffb9,#9dffbb,#b8ffbe,#d5ffc1,#f4ffc5,#ffebb8,#ffd1a7,#ffbb98,#ffa88c,#ff9881,#ff8a77,#ff7d6f,#ff7267,#ff6861,#ff5f5b,#ff5755,#ff5050,#ff494c,#ff4348,#ff3d44,#ff3841,#ff333d,#ff2f3a,#ff2a38,#ff2735,#ff2332,#ff2030,#ff1c2e,#ff192c,#ff162a,#ff1428,#ff1127,#ff0f25,#ff0d23,#ff0a22,#ff0821,#ff061f,#ff051e,#ff031d,#ff011c,#ff001b,#ff001a,#ff0019,#ff0018,#ff0017,#ff0016,#ff0015,#ff0014,#ff0013,#ff0013,#ff0012,#ff0011,#ff0011,#ff0010,#ff000f,#ff000f,#ff000e,#ff000d,#ff000d,#ff000c,#ff000c,#ff000b,#ff000b,#ff000a,#ff000a,#ff0009,#ff0009,#ff0009,#ff0008)"></div><div style="left:9.8px;top:124.0px;width:701.7px;height:2.5px;background:linear-gradient(90deg,#00ff91,#00ff93,#00ff94,#00ff95,#00ff96,#00ff97,#00ff98,#00ff9a,#00ff9b,#00ff9c,#00ff9e,#00ff9f,#00ffa1,#00ffa2,#00ffa4,#00ffa6,#00ffa8,#00ffa9,#00ffab,#00ffad,#00ffb0,#11ffb2,#26ffb4,#3cffb7,#52ffb9,#6affbc,#84ffbf,#9effc2,#baffc5,#d7ffc8,#f6ffcb,#ffe9bd,#ffcfab,#ffb99c,#ffa790,#ff9684,#ff887b,#ff7c72,#ff716a,#ff6764,#ff5e5d,#ff5658,#ff4f53,#ff484e,#ff424a,#ff3c46,#ff3743,#ff323f,#ff2e3c,#ff2a39,#ff2637,#ff2234,#ff1f32,#ff1c30,#ff192e,#ff162c,#ff132a,#ff1128,#ff0e26,#ff0c25,#ff0a23,#ff0822,#ff0621,#ff041f,#ff021e,#ff011d,#ff001c,#ff001b,#ff001a,#ff0019,#ff0018,#ff0017,#ff0016,#ff0015,#ff0014,#ff0014,#ff0013,#ff0012,#ff0011,#ff0011,#ff0010,#ff0010,#ff000f,#ff000e,#ff000e,#ff000d,#ff000d,#ff000c,#ff000c,#ff000b,#ff000b,#ff000a,#ff000a,#ff0009,#ff0009)"></div><div style="left:10.3px;top:126.0px;width:701.2px;height:2.5px;background:linear-gradient(90deg,#00ff95,#00ff96,#00ff97,#00ff98,#00ff9a,#00ff9b,#00ff9c,#00ff9e,#00ff9f,#00ffa0,#00ffa2,#00ffa4,#00ffa5,#00ffa7,#00ffa9,#00ffaa,#00ffac,#00ffae,#00ffb0,#00ffb3,#00ffb5,#12ffb7,#27ffba,#3cffbc,#53ffbf,#6bffc2,#85ffc5,#9fffc8,#bbffcb,#d9ffcf,#f8ffd2,#ffe7c2,#ffcdb0,#ffb8a0,#ffa593,#ff9588,#ff877e,#ff7b75,#ff706d,#ff6666,#ff5d60,#ff555a,#ff4e55,#ff4751,#ff414c,#ff3c48,#ff3645,#ff3241,#ff2d3e,#ff293b,#ff2539,#ff2236,#ff1e34,#ff1b31,#ff182f,#ff152d,#ff132b,#ff102a,#ff0e28,#ff0c26,#ff0925,#ff0723,#ff0622,#ff0421,#ff021f,#ff001e,#ff001d,#ff001c,#ff001b,#ff001a,#ff0019,#ff0018,#ff0017,#ff0016,#ff0015,#ff0015,#ff0014,#ff0013,#ff0012,#ff0012,#ff0011,#ff0010,#ff0010,#ff000f,#ff000f,#ff000e,#ff000e,#ff000d,#ff000c,#ff000c,#ff000b,#ff000b,#ff000b,#ff000a,#ff000a)"></div><div style="left:10.8px;top:128.0px;width:700.7px;height:2.5px;background:linear-gradient(90deg,#00ff98,#00ff9a,#00ff9b,#00ff9c,#00ff9d,#00ff9f,#00ffa0,#00ffa2,#00ffa3,#00ffa5,#00ffa6,#00ffa8,#00ffaa,#00ffab,#00ffad,#00ffaf,#00ffb1,#00ffb3,#00ffb5,#00ffb8,#00ffba,#12ffbd,#27ffbf,#3dffc2,#54ffc5,#6cffc8,#86ffcb,#a1ffce,#bdffd2,#dbffd5,#fbffd9,#ffe5c7,#ffccb4,#ffb6a5,#ffa497,#ff948b,#ff8681,#ff7a78,#ff6f70,#ff6569,#ff5c63,#ff545d,#ff4d58,#ff4653,#ff404f,#ff3b4b,#ff3647,#ff3143,#ff2d40,#ff283d,#ff253a,#ff2138,#ff1e35,#ff1b33,#ff1831,#ff152f,#ff122d,#ff102b,#ff0d29,#ff0b28,#ff0926,#ff0725,#ff0523,#ff0322,#ff0221,#ff001f,#ff001e,#ff001d,#ff001c,#ff001b,#ff001a,#ff0019,#ff0018,#ff0017,#ff0016,#ff0016,#ff0015,#ff0014,#ff0013,#ff0013,#ff0012,#ff0011,#ff0011,#ff0010,#ff000f,#ff000f,#ff000e,#ff000e,#ff000d,#ff000d,#ff000c,#ff000c,#ff000b,#ff000b,#ff000a)"></div><div style="left:11.3px;top:130.0px;width:700.2px;height:2.5px;background:linear-gradient(90deg,#00ff9c,#00ff9d,#00ff9f,#00ffa0,#00ffa1,#00ffa3,#00ffa4,#00ffa6,#00ffa7,#00ffa9,#00ffaa,#00ffac,#00ffae,#00ffb0,#00ffb2,#00ffb4,#00ffb6,#00ffb8,#00ffbb,#00ffbd,#00ffbf,#13ffc2,#28ffc5,#3effc8,#55ffcb,#6effce,#87ffd1,#a2ffd5,#bfffd8,#ddffdc,#fdffe0,#ffe3cc,#ffcab9,#ffb4a9,#ffa29b,#ff928f,#ff8485,#ff787c,#ff6d73,#ff646c,#ff5b66,#ff5360,#ff4c5a,#ff4655,#ff4051,#ff3a4d,#ff3549,#ff3045,#ff2c42,#ff283f,#ff243c,#ff203a,#ff1d37,#ff1a35,#ff1732,#ff1430,#ff122e,#ff0f2d,#ff0d2b,#ff0b29,#ff0928,#ff0726,#ff0525,#ff0323,#ff0122,#ff0021,#ff001f,#ff001e,#ff001d,#ff001c,#ff001b,#ff001a,#ff0019,#ff0018,#ff0018,#ff0017,#ff0016,#ff0015,#ff0014,#ff0014,#ff0013,#ff0012,#ff0012,#ff0011,#ff0010,#ff0010,#ff000f,#ff000f,#ff000e,#ff000e,#ff000d,#ff000d,#ff000c,#ff000c,#ff000b)"></div><div style="left:11.9px;top:132.0px;width:699.6px;height:2.5px;background:linear-gradient(90deg,#00ffa0,#00ffa1,#00ffa2,#00ffa4,#00ffa5,#00ffa7,#00ffa8,#00ffaa,#00ffab,#00ffad,#00ffaf,#00ffb1,#00ffb3,#00ffb5,#00ffb7,#00ffb9,#00ffbb,#00ffbd,#00ffc0,#00ffc2,#00ffc5,#13ffc8,#28ffcb,#3fffce,#56ffd1,#6fffd4,#89ffd8,#a4ffdb,#c1ffdf,#dfffe3,#ffffe8,#ffe1d0,#ffc8bd,#ffb3ad,#ffa19f,#ff9193,#ff8388,#ff777f,#ff6c76,#ff636f,#ff5a68,#ff5262,#ff4b5d,#ff4558,#ff3f53,#ff394f,#ff344b,#ff3047,#ff2b44,#ff2741,#ff233e,#ff203b,#ff1d39,#ff1936,#ff1734,#ff1432,#ff1130,#ff0f2e,#ff0c2c,#ff0a2b,#ff0829,#ff0627,#ff0426,#ff0225,#ff0123,#ff0022,#ff0021,#ff001f,#ff001e,#ff001d,#ff001c,#ff001b,#ff001a,#ff0019,#ff0019,#ff0018,#ff0017,#ff0016,#ff0015,#ff0015,#ff0014,#ff0013,#ff0012,#ff0012,#ff0011,#ff0011,#ff0010,#ff000f,#ff000f,#ff000e,#ff000e,#ff000d,#ff000d,#ff000c,#ff000c)"></div><div style="left:12.4px;top:134.0px;width:697.7px;height:2.5px;background:linear-gradient(90deg,#00ffa3,#00ffa5,#00ffa6,#00ffa7,#00ffa9,#00ffab,#00ffac,#00ffae,#00ffb0,#00ffb1,#00ffb3,#00ffb5,#00ffb7,#00ffb9,#00ffbb,#00ffbe,#00ffc0,#00ffc2,#00ffc5,#00ffc7,#00ffca,#13ffcd,#28ffd0,#3effd3,#56ffd7,#6fffda,#88ffde,#a4ffe2,#c1ffe6,#dfffea,#fffeee,#ffe0d6,#ffc7c3,#ffb2b2,#ffa0a3,#ff9097,#ff838c,#ff7782,#ff6c7a,#ff6272,#ff5a6b,#ff5265,#ff4b60,#ff445a,#ff3e56,#ff3951,#ff344d,#ff2f4a,#ff2b46,#ff2743,#ff2340,#ff203d,#ff1c3b,#ff1938,#ff1636,#ff1434,#ff1132,#ff0f30,#ff0c2e,#ff0a2c,#ff082a,#ff0629,#ff0427,#ff0226,#ff0025,#ff0023,#ff0022,#ff0021,#ff0020,#ff001f,#ff001e,#ff001d,#ff001c,#ff001b,#ff001a,#ff0019,#ff0018,#ff0017,#ff0016,#ff0016,#ff0015,#ff0014,#ff0013,#ff0013,#ff0012,#ff0012,#ff0011,#ff0010,#ff0010,#ff000f,#ff000f,#ff000e,#ff000e,#ff000d,#ff000d)"></div><div style="left:12.9px;top:136.0px;width:695.5px;height:2.5px;background:linear-gradient(90deg,#00ffa7,#00ffa8,#00ffaa,#00ffab,#00ffad,#00ffaf,#00ffb0,#00ffb2,#00ffb4,#00ffb6,#00ffb8,#00ffba,#00ffbc,#00ffbe,#00ffc0,#00ffc3,#00ffc5,#00ffc8,#00ffcb,#00ffcd,#02ffd0,#17ffd3,#2dffd7,#44ffda,#5cffde,#75ffe1,#90ffe5,#acffe9,#caffee,#e9fff3,#fff4ed,#ffd7d6,#ffc0c2,#ffabb2,#ff9aa3,#ff8b97,#ff7e8c,#ff7283,#ff687a,#ff5e73,#ff566c,#ff4e66,#ff4860,#ff415b,#ff3c56,#ff3652,#ff314e,#ff2d4a,#ff2947,#ff2544,#ff2141,#ff1e3e,#ff1a3b,#ff1739,#ff1437,#ff1234,#ff0f32,#ff0d30,#ff0b2e,#ff082d,#ff062b,#ff0429,#ff0328,#ff0126,#ff0025,#ff0024,#ff0023,#ff0021,#ff0020,#ff001f,#ff001e,#ff001d,#ff001c,#ff001b,#ff001a,#ff0019,#ff0018,#ff0018,#ff0017,#ff0016,#ff0015,#ff0015,#ff0014,#ff0013,#ff0013,#ff0012,#ff0011,#ff0011,#ff0010,#ff0010,#ff000f,#ff000f,#ff000e,#ff000e)"></div><div style="left:13.5px;top:138.0px;width:693.3px;height:2.5px;background:linear-gradient(90deg,#00ffab,#00ffac,#00ffae,#00ffaf,#00ffb1,#00ffb3,#00ffb4,#00ffb6,#00ffb8,#00ffba,#00ffbc,#00ffbe,#00ffc0,#00ffc3,#00ffc5,#00ffc8,#00ffca,#00ffcd,#00ffd0,#00ffd3,#01ffd6,#16ffd9,#2cffdc,#43ffe0,#5bffe4,#75ffe8,#8fffec,#acfff0,#c9fff5,#e9fffa,#fff4f4,#ffd7dc,#ffbfc8,#ffabb7,#ff9aa8,#ff8b9c,#ff7d91,#ff7287,#ff677e,#ff5e76,#ff566f,#ff4e69,#ff4763,#ff415e,#ff3b59,#ff3655,#ff3151,#ff2d4d,#ff2849,#ff2446,#ff2143,#ff1d40,#ff1a3d,#ff173b,#ff1438,#ff1236,#ff0f34,#ff0d32,#ff0a30,#ff082e,#ff062d,#ff042b,#ff0229,#ff0128,#ff0027,#ff0025,#ff0024,#ff0023,#ff0022,#ff0020,#ff001f,#ff001e,#ff001d,#ff001c,#ff001b,#ff001a,#ff001a,#ff0019,#ff0018,#ff0017,#ff0016,#ff0016,#ff0015,#ff0014,#ff0014,#ff0013,#ff0012,#ff0012,#ff0011,#ff0011,#ff0010,#ff000f,#ff000f,#ff000e)"></div><div style="left:14.0px;top:140.0px;width:691.1px;height:2.5px;background:linear-gradient(90deg,#00ffae,#00ffb0,#00ffb2,#00ffb3,#00ffb5,#00ffb7,#00ffb9,#00ffba,#00ffbc,#00ffbe,#00ffc1,#00ffc3,#00ffc5,#00ffc8,#00ffca,#00ffcd,#00ffcf,#00ffd2,#00ffd5,#00ffd8,#01ffdb,#16ffdf,#2cffe2,#43ffe6,#5bffea,#74ffee,#8ffff2,#abfff7,#c9fffc,#e7fdff,#fff4fb,#ffd7e2,#ffbfcd,#ffabbc,#ff9aad,#ff8aa0,#ff7d95,#ff728b,#ff6782,#ff5e7a,#ff5673,#ff4e6c,#ff4766,#ff4161,#ff3b5c,#ff3657,#ff3153,#ff2c4f,#ff284c,#ff2448,#ff2145,#ff1d42,#ff1a3f,#ff173d,#ff143a,#ff1138,#ff0f36,#ff0d34,#ff0a32,#ff0830,#ff062e,#ff042d,#ff022b,#ff0129,#ff0028,#ff0027,#ff0025,#ff0024,#ff0023,#ff0022,#ff0021,#ff0020,#ff001e,#ff001d,#ff001d,#ff001c,#ff001b,#ff001a,#ff0019,#ff0018,#ff0017,#ff0017,#ff0016,#ff0015,#ff0015,#ff0014,#ff0013,#ff0013,#ff0012,#ff0011,#ff0011,#ff0010,#ff0010,#ff000f)"></div><div style="left:14.6px;top:142.0px;width:688.9px;height:2.5px;background:linear-gradient(90deg,#00ffb2,#00ffb4,#00ffb5,#00ffb7,#00ffb9,#00ffbb,#00ffbd,#00ffbf,#00ffc1,#00ffc3,#00ffc5,#00ffc8,#00ffca,#00ffcd,#00ffcf,#00ffd2,#00ffd5,#00ffd8,#00ffdb,#00ffde,#05ffe2,#1affe5,#31ffe9,#48ffed,#61fff1,#7bfff6,#97fffa,#b4ffff,#cefaff,#eaf5ff,#ffeaf9,#ffcfe1,#ffb8cd,#ffa4bc,#ff94ad,#ff85a0,#ff7895,#ff6d8b,#ff6382,#ff5a7a,#ff5273,#ff4b6d,#ff4467,#ff3e61,#ff385c,#ff3358,#ff2e54,#ff2a50,#ff264c,#ff2249,#ff1e46,#ff1b43,#ff1840,#ff153d,#ff123b,#ff1039,#ff0d36,#ff0b34,#ff0932,#ff0731,#ff052f,#ff032d,#ff012b,#ff002a,#ff0029,#ff0027,#ff0026,#ff0025,#ff0023,#ff0022,#ff0021,#ff0020,#ff001f,#ff001e,#ff001d,#ff001c,#ff001b,#ff001a,#ff0019,#ff0019,#ff0018,#ff0017,#ff0016,#ff0016,#ff0015,#ff0014,#ff0014,#ff0013,#ff0012,#ff0012,#ff0011,#ff0011,#ff0010)"></div><div style="left:15.1px;top:144.0px;width:686.7px;height:2.5px;background:linear-gradient(90deg,#00ffb6,#00ffb8,#00ffb9,#00ffbb,#00ffbd,#00ffbf,#00ffc1,#00ffc3,#00ffc5,#00ffc8,#00ffca,#00ffcc,#00ffcf,#00ffd2,#00ffd4,#00ffd7,#00ffda,#00ffdd,#00ffe0,#00ffe4,#04ffe7,#1affeb,#30ffef,#48fff3,#61fff8,#7bfffc,#95fdff,#aff8ff,#c9f3ff,#e3eeff,#fee9ff,#ffcee7,#ffb8d2,#ffa4c1,#ff93b2,#ff85a4,#ff7899,#ff6d8f,#ff6386,#ff5a7e,#ff5276,#ff4a70,#ff446a,#ff3e64,#ff385f,#ff335a,#ff2e56,#ff2a52,#ff264e,#ff224b,#ff1e48,#ff1b45,#ff1842,#ff153f,#ff123d,#ff103a,#ff0d38,#ff0b36,#ff0934,#ff0632,#ff0430,#ff032f,#ff012d,#ff002b,#ff002a,#ff0029,#ff0027,#ff0026,#ff0025,#ff0023,#ff0022,#ff0021,#ff0020,#ff001f,#ff001e,#ff001d,#ff001c,#ff001b,#ff001b,#ff001a,#ff0019,#ff0018,#ff0017,#ff0017,#ff0016,#ff0015,#ff0015,#ff0014,#ff0013,#ff0013,#ff0012,#ff0012,#ff0011)"></div><div style="left:15.7px;top:146.0px;width:684.4px;height:2.5px;background:linear-gradient(90deg,#00ffba,#00ffbc,#00ffbd,#00ffbf,#00ffc1,#00ffc3,#00ffc5,#00ffc8,#00ffca,#00ffcc,#00ffcf,#00ffd1,#00ffd4,#00ffd6,#00ffd9,#00ffdc,#00ffdf,#00ffe3,#00ffe6,#00ffea,#04ffed,#19fff1,#30fff5,#47fff9,#60fffe,#79fbff,#91f7ff,#aaf2ff,#c3edff,#dde8ff,#f7e3ff,#ffceed,#ffb7d8,#ffa4c6,#ff93b6,#ff85a9,#ff789d,#ff6d93,#ff6289,#ff5a81,#ff517a,#ff4a73,#ff436d,#ff3d67,#ff3862,#ff335d,#ff2e59,#ff2a55,#ff2551,#ff224d,#ff1e4a,#ff1b47,#ff1844,#ff1541,#ff123f,#ff0f3c,#ff0d3a,#ff0b38,#ff0836,#ff0634,#ff0432,#ff0230,#ff012f,#ff002d,#ff002b,#ff002a,#ff0029,#ff0027,#ff0026,#ff0025,#ff0024,#ff0022,#ff0021,#ff0020,#ff001f,#ff001e,#ff001d,#ff001d,#ff001c,#ff001b,#ff001a,#ff0019,#ff0018,#ff0018,#ff0017,#ff0016,#ff0016,#ff0015,#ff0014,#ff0014,#ff0013,#ff0013,#ff0012)"></div><div style="left:16.3px;top:148.0px;width:682.2px;height:2.5px;background:linear-gradient(90deg,#00ffbe,#00ffc0,#00ffc1,#00ffc3,#00ffc6,#00ffc8,#00ffca,#00ffcc,#00ffcf,#00ffd1,#00ffd4,#00ffd6,#00ffd9,#00ffdc,#00ffdf,#00ffe2,#00ffe5,#00ffe9,#00ffec,#00fff0,#08fff4,#1efff8,#35fffc,#4dfdff,#64f8ff,#7cf4ff,#94efff,#adeaff,#c6e5ff,#dfe0ff,#f9dbff,#ffc6ec,#ffb0d7,#ff9dc5,#ff8db6,#ff7fa9,#ff739d,#ff6893,#ff5e89,#ff5681,#ff4e7a,#ff4773,#ff406d,#ff3a67,#ff3562,#ff305d,#ff2b59,#ff2755,#ff2351,#ff1f4e,#ff1c4a,#ff1947,#ff1644,#ff1342,#ff103f,#ff0e3d,#ff0b3a,#ff0938,#ff0736,#ff0534,#ff0332,#ff0131,#ff002f,#ff002d,#ff002c,#ff002a,#ff0029,#ff0028,#ff0026,#ff0025,#ff0024,#ff0023,#ff0022,#ff0021,#ff0020,#ff001f,#ff001e,#ff001d,#ff001c,#ff001b,#ff001a,#ff001a,#ff0019,#ff0018,#ff0017,#ff0017,#ff0016,#ff0015,#ff0015,#ff0014,#ff0013,#ff0013)"></div><div style="left:16.8px;top:150.0px;width:679.9px;height:2.5px;background:linear-gradient(90deg,#00ffc2,#00ffc4,#00ffc6,#00ffc8,#00ffca,#00ffcc,#00ffce,#00ffd1,#00ffd3,#00ffd6,#00ffd8,#00ffdb,#00ffde,#00ffe1,#00ffe4,#00ffe7,#00ffeb,#00ffee,#00fff2,#00fff6,#07fffa,#1dfffe,#34fbff,#4af7ff,#61f2ff,#79eeff,#90e9ff,#a8e4ff,#c1dfff,#dadaff,#f3d5ff,#ffc6f2,#ffb0dd,#ff9dca,#ff8dbb,#ff7fad,#ff73a1,#ff6897,#ff5e8d,#ff5585,#ff4e7d,#ff4776,#ff4070,#ff3a6a,#ff3565,#ff3060,#ff2b5c,#ff2757,#ff2354,#ff1f50,#ff1c4d,#ff1949,#ff1646,#ff1344,#ff1041,#ff0d3f,#ff0b3c,#ff093a,#ff0738,#ff0536,#ff0334,#ff0132,#ff0031,#ff002f,#ff002d,#ff002c,#ff002a,#ff0029,#ff0028,#ff0027,#ff0025,#ff0024,#ff0023,#ff0022,#ff0021,#ff0020,#ff001f,#ff001e,#ff001d,#ff001c,#ff001b,#ff001b,#ff001a,#ff0019,#ff0018,#ff0018,#ff0017,#ff0016,#ff0016,#ff0015,#ff0014,#ff0014)"></div><div style="left:17.4px;top:152.0px;width:677.7px;height:2.5px;background:linear-gradient(90deg,#00ffc6,#00ffc8,#00ffca,#00ffcc,#00ffce,#00ffd0,#00ffd3,#00ffd5,#00ffd8,#00ffda,#00ffdd,#00ffe0,#00ffe3,#00ffe6,#00ffe9,#00ffed,#00fff0,#00fff4,#00fff8,#00fffc,#07feff,#1cfaff,#32f5ff,#48f1ff,#5fecff,#75e8ff,#8de3ff,#a4deff,#bcdaff,#d4d5ff,#edd0ff,#ffc5f8,#ffafe2,#ff9dd0,#ff8dc0,#ff7fb2,#ff72a5,#ff679b,#ff5e91,#ff5588,#ff4d80,#ff4679,#ff4073,#ff3a6d,#ff3568,#ff3063,#ff2b5e,#ff275a,#ff2356,#ff1f52,#ff1c4f,#ff184c,#ff1549,#ff1246,#ff1043,#ff0d40,#ff0b3e,#ff093c,#ff063a,#ff0438,#ff0236,#ff0134,#ff0032,#ff0030,#ff002f,#ff002d,#ff002c,#ff002a,#ff0029,#ff0028,#ff0027,#ff0025,#ff0024,#ff0023,#ff0022,#ff0021,#ff0020,#ff001f,#ff001e,#ff001d,#ff001d,#ff001c,#ff001b,#ff001a,#ff0019,#ff0019,#ff0018,#ff0017,#ff0017,#ff0016,#ff0015,#ff0015)"></div><div style="left:18.0px;top:154.0px;width:675.4px;height:2.5px;background:linear-gradient(90deg,#00ffca,#00ffcc,#00ffce,#00ffd0,#00ffd2,#00ffd5,#00ffd7,#00ffda,#00ffdc,#00ffdf,#00ffe2,#00ffe5,#00ffe8,#00ffeb,#00ffef,#00fff2,#00fff6,#00fff9,#00fffd,#00fcff,#06f8ff,#1bf4ff,#30f0ff,#46ebff,#5ce7ff,#72e2ff,#89deff,#a0d9ff,#b7d4ff,#cfcfff,#e7caff,#ffc5ff,#ffafe8,#ff9cd5,#ff8cc5,#ff7eb6,#ff72aa,#ff679f,#ff5e95,#ff558c,#ff4d84,#ff467d,#ff4076,#ff3a70,#ff346a,#ff2f65,#ff2b61,#ff265c,#ff2258,#ff1f54,#ff1b51,#ff184e,#ff154b,#ff1248,#ff1045,#ff0d42,#ff0b40,#ff083e,#ff063b,#ff0439,#ff0237,#ff0035,#ff0034,#ff0032,#ff0030,#ff002f,#ff002d,#ff002c,#ff002b,#ff0029,#ff0028,#ff0027,#ff0026,#ff0024,#ff0023,#ff0022,#ff0021,#ff0020,#ff001f,#ff001e,#ff001e,#ff001d,#ff001c,#ff001b,#ff001a,#ff001a,#ff0019,#ff0018,#ff0018,#ff0017,#ff0016,#ff0016)"></div><div style="left:18.6px;top:156.0px;width:673.2px;height:2.5px;background:linear-gradient(90deg,#00ffce,#00ffd0,#00ffd2,#00ffd4,#00ffd7,#00ffd9,#00ffdc,#00ffde,#00ffe1,#00ffe4,#00ffe7,#00ffea,#00ffed,#00fff1,#00fff4,#00fff8,#00fffc,#00feff,#00faff,#00f6ff,#0af2ff,#1fedff,#34e9ff,#4ae4ff,#5fe0ff,#75dbff,#8cd7ff,#a3d2ff,#bacdff,#d1c9ff,#e9c4ff,#ffbdfd,#ffa8e7,#ff96d4,#ff87c4,#ff79b6,#ff6da9,#ff639e,#ff5995,#ff518c,#ff4a84,#ff437d,#ff3c76,#ff3770,#ff326b,#ff2d66,#ff2861,#ff245d,#ff2059,#ff1d55,#ff1951,#ff164e,#ff134b,#ff1048,#ff0e45,#ff0b43,#ff0940,#ff073e,#ff053c,#ff033a,#ff0138,#ff0036,#ff0034,#ff0032,#ff0031,#ff002f,#ff002e,#ff002c,#ff002b,#ff002a,#ff0028,#ff0027,#ff0026,#ff0025,#ff0024,#ff0023,#ff0022,#ff0021,#ff0020,#ff001f,#ff001e,#ff001d,#ff001c,#ff001b,#ff001b,#ff001a,#ff0019,#ff0019,#ff0018,#ff0017,#ff0017)"></div><div style="left:19.2px;top:158.0px;width:670.9px;height:2.5px;background:linear-gradient(90deg,#00ffd2,#00ffd4,#00ffd6,#00ffd9,#00ffdb,#00ffde,#00ffe0,#00ffe3,#00ffe6,#00ffe9,#00ffec,#00ffef,#00fff3,#00fff6,#00fffa,#00fffe,#00fcff,#00f8ff,#00f4ff,#00f0ff,#09ecff,#1ee8ff,#32e3ff,#47dfff,#5ddbff,#72d6ff,#88d2ff,#9fcdff,#b5c8ff,#ccc4ff,#e4bfff,#fbbaff,#ffa8ec,#ff96d9,#ff86c9,#ff79ba,#ff6dad,#ff63a2,#ff5998,#ff518f,#ff4987,#ff4280,#ff3c79,#ff3773,#ff316d,#ff2c68,#ff2863,#ff245f,#ff205b,#ff1c57,#ff1954,#ff1650,#ff134d,#ff104a,#ff0e47,#ff0b45,#ff0942,#ff0740,#ff053e,#ff033b,#ff0139,#ff0037,#ff0036,#ff0034,#ff0032,#ff0031,#ff002f,#ff002e,#ff002c,#ff002b,#ff002a,#ff0028,#ff0027,#ff0026,#ff0025,#ff0024,#ff0023,#ff0022,#ff0021,#ff0020,#ff001f,#ff001e,#ff001d,#ff001d,#ff001c,#ff001b,#ff001a,#ff001a,#ff0019,#ff0018,#ff0017)"></div><div style="left:19.8px;top:160.0px;width:668.7px;height:2.5px;background:linear-gradient(90deg,#00ffd6,#00ffd8,#00ffdb,#00ffdd,#00ffe0,#00ffe2,#00ffe5,#00ffe8,#00ffeb,#00ffee,#00fff1,#00fff4,#00fff8,#00fffc,#00ffff,#00fbff,#00f7ff,#00f3ff,#00efff,#00ebff,#09e7ff,#1de3ff,#31deff,#46daff,#5ad6ff,#70d1ff,#85cdff,#9bc8ff,#b1c3ff,#c7bfff,#debaff,#f5b5ff,#ffa7f2,#ff95de,#ff86cd,#ff79bf,#ff6db2,#ff62a6,#ff599c,#ff5193,#ff498b,#ff4283,#ff3c7c,#ff3676,#ff3170,#ff2c6b,#ff2866,#ff2462,#ff205d,#ff1c59,#ff1956,#ff1652,#ff134f,#ff104c,#ff0d49,#ff0b46,#ff0944,#ff0642,#ff043f,#ff023d,#ff003b,#ff0039,#ff0037,#ff0035,#ff0034,#ff0032,#ff0031,#ff002f,#ff002e,#ff002c,#ff002b,#ff002a,#ff0028,#ff0027,#ff0026,#ff0025,#ff0024,#ff0023,#ff0022,#ff0021,#ff0020,#ff001f,#ff001e,#ff001e,#ff001d,#ff001c,#ff001b,#ff001b,#ff001a,#ff0019,#ff0018)"></div><div style="left:20.4px;top:162.0px;width:666.4px;height:2.5px;background:linear-gradient(90deg,#00ffda,#00ffdc,#00ffdf,#00ffe2,#00ffe4,#00ffe7,#00ffea,#00ffed,#00fff0,#00fff3,#00fff7,#00fffa,#00fffe,#00fdff,#00f9ff,#00f5ff,#00f1ff,#00edff,#00e9ff,#00e5ff,#0ce1ff,#20dcff,#34d8ff,#49d4ff,#5ecfff,#73cbff,#88c7ff,#9ec2ff,#b4bdff,#cab9ff,#e1b4ff,#f7afff,#ffa0f0,#ff8fdd,#ff80cc,#ff73be,#ff68b1,#ff5ea6,#ff559c,#ff4d93,#ff468a,#ff3f83,#ff397c,#ff3376,#ff2e70,#ff2a6b,#ff2566,#ff2162,#ff1e5e,#ff1a5a,#ff1756,#ff1453,#ff114f,#ff0e4c,#ff0c49,#ff0947,#ff0744,#ff0542,#ff0340,#ff013d,#ff003b,#ff0039,#ff0038,#ff0036,#ff0034,#ff0032,#ff0031,#ff002f,#ff002e,#ff002d,#ff002b,#ff002a,#ff0029,#ff0028,#ff0026,#ff0025,#ff0024,#ff0023,#ff0022,#ff0021,#ff0020,#ff0020,#ff001f,#ff001e,#ff001d,#ff001c,#ff001c,#ff001b,#ff001a,#ff0019)"></div><div style="left:21.0px;top:164.0px;width:664.1px;height:2.5px;background:linear-gradient(90deg,#00ffde,#00ffe1,#00ffe3,#00ffe6,#00ffe9,#00ffec,#00ffef,#00fff2,#00fff5,#00fff8,#00fffc,#00ffff,#00fbff,#00f7ff,#00f3ff,#00f0ff,#00ecff,#00e8ff,#00e4ff,#00e0ff,#0cdcff,#1fd8ff,#33d3ff,#47cfff,#5bcbff,#70c6ff,#85c2ff,#9abdff,#b0b9ff,#c5b4ff,#dbafff,#f2abff,#ffa0f6,#ff8fe2,#ff80d1,#ff73c2,#ff68b5,#ff5eaa,#ff559f,#ff4d96,#ff458e,#ff3f86,#ff397f,#ff3379,#ff2e73,#ff296e,#ff2569,#ff2164,#ff1d60,#ff1a5c,#ff1758,#ff1455,#ff1151,#ff0e4e,#ff0b4b,#ff0949,#ff0746,#ff0544,#ff0341,#ff013f,#ff003d,#ff003b,#ff0039,#ff0037,#ff0036,#ff0034,#ff0032,#ff0031,#ff002f,#ff002e,#ff002d,#ff002b,#ff002a,#ff0029,#ff0028,#ff0027,#ff0025,#ff0024,#ff0023,#ff0022,#ff0022,#ff0021,#ff0020,#ff001f,#ff001e,#ff001d,#ff001d,#ff001c,#ff001b,#ff001a)"></div><div style="left:21.6px;top:166.0px;width:661.9px;height:2.5px;background:linear-gradient(90deg,#00ffe3,#00ffe5,#00ffe8,#00ffea,#00ffed,#00fff0,#00fff3,#00fff7,#00fffa,#00fffd,#00fdff,#00faff,#00f6ff,#00f2ff,#00eeff,#00ebff,#00e7ff,#00e3ff,#00dfff,#00dbff,#0bd7ff,#1ed3ff,#32cfff,#45caff,#59c6ff,#6dc2ff,#82bdff,#96b9ff,#abb4ff,#c1b0ff,#d6abff,#eca7ff,#ffa0fc,#ff8ee7,#ff80d6,#ff73c7,#ff67ba,#ff5dae,#ff54a3,#ff4c9a,#ff4591,#ff3e89,#ff3882,#ff337c,#ff2e76,#ff2970,#ff256b,#ff2167,#ff1d62,#ff1a5e,#ff165a,#ff1357,#ff1054,#ff0e50,#ff0b4d,#ff094b,#ff0748,#ff0445,#ff0243,#ff0141,#ff003f,#ff003d,#ff003b,#ff0039,#ff0037,#ff0035,#ff0034,#ff0032,#ff0031,#ff002f,#ff002e,#ff002d,#ff002b,#ff002a,#ff0029,#ff0028,#ff0027,#ff0026,#ff0025,#ff0024,#ff0023,#ff0022,#ff0021,#ff0020,#ff001f,#ff001e,#ff001e,#ff001d,#ff001c,#ff001b)"></div><div style="left:22.2px;top:168.0px;width:659.6px;height:2.5px;background:linear-gradient(90deg,#00ffe7,#00ffea,#00ffec,#00ffef,#00fff2,#00fff5,#00fff8,#00fffc,#00ffff,#00fbff,#00f8ff,#00f4ff,#00f0ff,#00edff,#00e9ff,#00e5ff,#00e1ff,#00ddff,#00d9ff,#00d5ff,#0fd1ff,#22cdff,#35c9ff,#48c5ff,#5cc0ff,#70bcff,#85b8ff,#99b3ff,#aeafff,#c3aaff,#d9a6ff,#efa1ff,#ff99f9,#ff88e6,#ff7ad5,#ff6ec6,#ff63b9,#ff59ad,#ff50a3,#ff4999,#ff4291,#ff3b89,#ff3582,#ff307c,#ff2b76,#ff2770,#ff226b,#ff1f67,#ff1b62,#ff185e,#ff145b,#ff1157,#ff0f54,#ff0c51,#ff0a4e,#ff074b,#ff0548,#ff0346,#ff0143,#ff0041,#ff003f,#ff003d,#ff003b,#ff0039,#ff0037,#ff0036,#ff0034,#ff0032,#ff0031,#ff0030,#ff002e,#ff002d,#ff002c,#ff002a,#ff0029,#ff0028,#ff0027,#ff0026,#ff0025,#ff0024,#ff0023,#ff0022,#ff0021,#ff0020,#ff001f,#ff001f,#ff001e,#ff001d,#ff001c)"></div><div style="left:22.8px;top:170.0px;width:657.3px;height:2.5px;background:linear-gradient(90deg,#00ffeb,#00ffee,#00fff1,#00fff4,#00fff7,#00fffa,#00fffd,#00fdff,#00faff,#00f6ff,#00f3ff,#00efff,#00ecff,#00e8ff,#00e4ff,#00e0ff,#00ddff,#00d9ff,#00d5ff,#00d1ff,#0ecdff,#21c9ff,#34c5ff,#47c0ff,#5abcff,#6eb8ff,#82b4ff,#96afff,#aaabff,#bfa6ff,#d4a2ff,#e99dff,#ff98ff,#ff88eb,#ff7ada,#ff6dca,#ff62bd,#ff59b1,#ff50a6,#ff489d,#ff4194,#ff3b8c,#ff3585,#ff307f,#ff2b79,#ff2673,#ff226e,#ff1e69,#ff1b65,#ff1761,#ff145d,#ff1159,#ff0e56,#ff0c53,#ff0950,#ff074d,#ff054a,#ff0347,#ff0145,#ff0043,#ff0041,#ff003f,#ff003d,#ff003b,#ff0039,#ff0037,#ff0035,#ff0034,#ff0032,#ff0031,#ff002f,#ff002e,#ff002d,#ff002c,#ff002a,#ff0029,#ff0028,#ff0027,#ff0026,#ff0025,#ff0024,#ff0023,#ff0022,#ff0021,#ff0020,#ff0020,#ff001f,#ff001e,#ff001d)"></div><div style="left:23.4px;top:172.0px;width:655.0px;height:2.5px;background:linear-gradient(90deg,#00fff0,#00fff2,#00fff5,#00fff8,#00fffc,#00ffff,#00fcff,#00f8ff,#00f5ff,#00f1ff,#00eeff,#00eaff,#00e7ff,#00e3ff,#00dfff,#00dcff,#00d8ff,#00d4ff,#00d0ff,#00ccff,#0dc8ff,#20c4ff,#32c0ff,#45bcff,#58b8ff,#6bb4ff,#7fb0ff,#93abff,#a7a7ff,#bba2ff,#cf9eff,#e499ff,#f995ff,#ff88f0,#ff79de,#ff6dcf,#ff62c1,#ff58b5,#ff50aa,#ff48a0,#ff4198,#ff3b90,#ff3588,#ff2f82,#ff2b7c,#ff2676,#ff2271,#ff1e6c,#ff1a67,#ff1763,#ff145f,#ff115b,#ff0e58,#ff0c55,#ff0952,#ff074f,#ff054c,#ff0349,#ff0147,#ff0044,#ff0042,#ff0040,#ff003e,#ff003c,#ff003a,#ff0039,#ff0037,#ff0035,#ff0034,#ff0032,#ff0031,#ff002f,#ff002e,#ff002d,#ff002c,#ff002a,#ff0029,#ff0028,#ff0027,#ff0026,#ff0025,#ff0024,#ff0023,#ff0022,#ff0021,#ff0021,#ff0020,#ff001f,#ff001e)"></div><div style="left:24.0px;top:174.0px;width:652.7px;height:2.5px;background:linear-gradient(90deg,#00fff4,#00fff7,#00fffa,#00fffd,#00feff,#00faff,#00f7ff,#00f4ff,#00f0ff,#00edff,#00e9ff,#00e6ff,#00e2ff,#00dfff,#00dbff,#00d7ff,#00d4ff,#00d0ff,#00ccff,#00c8ff,#0dc4ff,#1fc0ff,#31bcff,#43b8ff,#56b4ff,#69b0ff,#7cacff,#8fa7ff,#a3a3ff,#b79fff,#cb9aff,#df96ff,#f491ff,#ff87f6,#ff79e3,#ff6dd3,#ff62c5,#ff58b9,#ff4fae,#ff48a4,#ff419b,#ff3a93,#ff348b,#ff2f85,#ff2a7e,#ff2679,#ff2273,#ff1e6e,#ff1a6a,#ff1765,#ff1461,#ff115e,#ff0e5a,#ff0b57,#ff0954,#ff0751,#ff044e,#ff024b,#ff0049,#ff0046,#ff0044,#ff0042,#ff0040,#ff003e,#ff003c,#ff003a,#ff0038,#ff0037,#ff0035,#ff0034,#ff0032,#ff0031,#ff002f,#ff002e,#ff002d,#ff002c,#ff002b,#ff0029,#ff0028,#ff0027,#ff0026,#ff0025,#ff0024,#ff0023,#ff0023,#ff0022,#ff0021,#ff0020,#ff001f)"></div><div style="left:24.7px;top:176.0px;width:650.4px;height:2.5px;background:linear-gradient(90deg,#00fff9,#00fffc,#00ffff,#00fcff,#00f9ff,#00f5ff,#00f2ff,#00efff,#00ebff,#00e8ff,#00e4ff,#00e1ff,#00ddff,#00daff,#00d6ff,#00d2ff,#00cfff,#00cbff,#00c7ff,#00c3ff,#10bfff,#22bbff,#34b7ff,#46b3ff,#59afff,#6cabff,#7fa7ff,#92a2ff,#a69eff,#b99aff,#cd95ff,#e291ff,#f68cff,#ff81f4,#ff74e2,#ff68d2,#ff5dc4,#ff54b8,#ff4cad,#ff44a3,#ff3d9b,#ff3792,#ff328b,#ff2c84,#ff287e,#ff2378,#ff1f73,#ff1c6e,#ff186a,#ff1565,#ff1261,#ff0f5e,#ff0c5a,#ff0a57,#ff0754,#ff0551,#ff034e,#ff014b,#ff0049,#ff0046,#ff0044,#ff0042,#ff0040,#ff003e,#ff003c,#ff003a,#ff0039,#ff0037,#ff0035,#ff0034,#ff0032,#ff0031,#ff0030,#ff002e,#ff002d,#ff002c,#ff002b,#ff002a,#ff0029,#ff0027,#ff0026,#ff0025,#ff0025,#ff0024,#ff0023,#ff0022,#ff0021,#ff0020)"></div><div style="left:25.3px;top:178.0px;width:648.1px;height:2.5px;background:linear-gradient(90deg,#00fffd,#00feff,#00fbff,#00f7ff,#00f4ff,#00f1ff,#00eeff,#00eaff,#00e7ff,#00e3ff,#00e0ff,#00dcff,#00d9ff,#00d5ff,#00d2ff,#00ceff,#00caff,#00c7ff,#00c3ff,#00bfff,#0fbbff,#21b7ff,#33b3ff,#45afff,#57abff,#69a7ff,#7ca3ff,#8f9fff,#a29aff,#b596ff,#c992ff,#dd8dff,#f189ff,#ff81f9,#ff73e7,#ff67d7,#ff5dc9,#ff54bc,#ff4bb1,#ff44a7,#ff3d9e,#ff3796,#ff318e,#ff2c87,#ff2781,#ff237b,#ff1f76,#ff1b71,#ff186c,#ff1468,#ff1164,#ff0f60,#ff0c5c,#ff0959,#ff0756,#ff0553,#ff0350,#ff014d,#ff004b,#ff0048,#ff0046,#ff0044,#ff0042,#ff0040,#ff003e,#ff003c,#ff003a,#ff0038,#ff0037,#ff0035,#ff0034,#ff0032,#ff0031,#ff0030,#ff002e,#ff002d,#ff002c,#ff002b,#ff002a,#ff0029,#ff0028,#ff0027,#ff0026,#ff0025,#ff0024,#ff0023,#ff0022,#ff0021)"></div><div style="left:25.9px;top:180.0px;width:645.8px;height:2.5px;background:linear-gradient(90deg,#00fcff,#00f9ff,#00f6ff,#00f3ff,#00f0ff,#00ecff,#00e9ff,#00e6ff,#00e2ff,#00dfff,#00dcff,#00d8ff,#00d5ff,#00d1ff,#00ceff,#00caff,#00c6ff,#00c3ff,#00bfff,#00bbff,#0fb7ff,#20b3ff,#32afff,#43abff,#55a7ff,#67a3ff,#799fff,#8c9bff,#9f97ff,#b293ff,#c58eff,#d88aff,#ec85ff,#ff80fe,#ff73eb,#ff67db,#ff5dcd,#ff53c0,#ff4bb5,#ff43ab,#ff3da1,#ff3799,#ff3191,#ff2c8a,#ff2784,#ff237e,#ff1f78,#ff1b73,#ff176e,#ff146a,#ff1166,#ff0e62,#ff0c5e,#ff095b,#ff0758,#ff0555,#ff0252,#ff004f,#ff004c,#ff004a,#ff0048,#ff0045,#ff0043,#ff0041,#ff003f,#ff003d,#ff003c,#ff003a,#ff0038,#ff0037,#ff0035,#ff0034,#ff0032,#ff0031,#ff0030,#ff002e,#ff002d,#ff002c,#ff002b,#ff002a,#ff0029,#ff0028,#ff0027,#ff0026,#ff0025,#ff0024,#ff0023,#ff0022)"></div><div style="left:26.6px;top:182.0px;width:643.5px;height:2.5px;background:linear-gradient(90deg,#00f8ff,#00f5ff,#00f2ff,#00eeff,#00ebff,#00e8ff,#00e5ff,#00e1ff,#00deff,#00dbff,#00d7ff,#00d4ff,#00d0ff,#00cdff,#00c9ff,#00c5ff,#00c2ff,#00beff,#00baff,#01b6ff,#12b3ff,#23afff,#35abff,#46a7ff,#58a3ff,#6a9fff,#7c9bff,#8f96ff,#a192ff,#b48eff,#c78aff,#db85ff,#ee81ff,#ff7bfc,#ff6eea,#ff62da,#ff58cc,#ff4fbf,#ff47b4,#ff40aa,#ff39a1,#ff3498,#ff2e91,#ff298a,#ff2584,#ff207e,#ff1c78,#ff1973,#ff156e,#ff126a,#ff0f66,#ff0d62,#ff0a5e,#ff075b,#ff0558,#ff0355,#ff0152,#ff004f,#ff004c,#ff004a,#ff0048,#ff0045,#ff0043,#ff0041,#ff003f,#ff003d,#ff003c,#ff003a,#ff0038,#ff0037,#ff0035,#ff0034,#ff0032,#ff0031,#ff0030,#ff002f,#ff002d,#ff002c,#ff002b,#ff002a,#ff0029,#ff0028,#ff0027,#ff0026,#ff0025,#ff0024,#ff0023)"></div><div style="left:27.2px;top:184.0px;width:641.2px;height:2.5px;background:linear-gradient(90deg,#00f3ff,#00f0ff,#00edff,#00eaff,#00e7ff,#00e4ff,#00e0ff,#00ddff,#00daff,#00d6ff,#00d3ff,#00d0ff,#00ccff,#00c9ff,#00c5ff,#00c1ff,#00beff,#00baff,#00b6ff,#01b3ff,#12afff,#22abff,#33a7ff,#45a3ff,#569fff,#689bff,#7a97ff,#8c93ff,#9e8fff,#b18bff,#c386ff,#d682ff,#ea7eff,#fd79ff,#ff6dee,#ff62de,#ff58d0,#ff4fc3,#ff47b8,#ff40ad,#ff39a4,#ff339c,#ff2e94,#ff298d,#ff2486,#ff2080,#ff1c7b,#ff1976,#ff1571,#ff126c,#ff0f68,#ff0c64,#ff0a60,#ff075d,#ff055a,#ff0357,#ff0154,#ff0051,#ff004e,#ff004c,#ff0049,#ff0047,#ff0045,#ff0043,#ff0041,#ff003f,#ff003d,#ff003b,#ff003a,#ff0038,#ff0037,#ff0035,#ff0034,#ff0032,#ff0031,#ff0030,#ff002f,#ff002d,#ff002c,#ff002b,#ff002a,#ff0029,#ff0028,#ff0027,#ff0026,#ff0025,#ff0024)"></div><div style="left:27.9px;top:186.0px;width:638.9px;height:2.5px;background:linear-gradient(90deg,#00efff,#00ecff,#00e9ff,#00e6ff,#00e3ff,#00e0ff,#00dcff,#00d9ff,#00d6ff,#00d2ff,#00cfff,#00ccff,#00c8ff,#00c5ff,#00c1ff,#00beff,#00baff,#00b6ff,#00b3ff,#00afff,#11abff,#21a8ff,#32a4ff,#43a0ff,#549cff,#6698ff,#7794ff,#8990ff,#9b8cff,#ad88ff,#bf83ff,#d27fff,#e57bff,#f876ff,#ff6df3,#ff61e3,#ff57d4,#ff4ec7,#ff46bb,#ff3fb1,#ff39a8,#ff339f,#ff2d97,#ff2990,#ff2489,#ff2083,#ff1c7d,#ff1878,#ff1573,#ff126f,#ff0f6a,#ff0c66,#ff0963,#ff075f,#ff055c,#ff0359,#ff0056,#ff0053,#ff0050,#ff004d,#ff004b,#ff0049,#ff0047,#ff0044,#ff0042,#ff0040,#ff003f,#ff003d,#ff003b,#ff003a,#ff0038,#ff0036,#ff0035,#ff0034,#ff0032,#ff0031,#ff0030,#ff002f,#ff002d,#ff002c,#ff002b,#ff002a,#ff0029,#ff0028,#ff0027,#ff0026,#ff0025)"></div><div style="left:28.5px;top:188.0px;width:636.5px;height:2.5px;background:linear-gradient(90deg,#00ebff,#00e8ff,#00e5ff,#00e2ff,#00deff,#00dbff,#00d8ff,#00d5ff,#00d1ff,#00ceff,#00cbff,#00c7ff,#00c4ff,#00c0ff,#00bdff,#00b9ff,#00b6ff,#00b2ff,#00aeff,#04abff,#14a7ff,#25a3ff,#359fff,#469bff,#5798ff,#6994ff,#7a90ff,#8c8bff,#9e87ff,#b083ff,#c27fff,#d57bff,#e776ff,#fa72ff,#ff68f1,#ff5de1,#ff53d3,#ff4bc6,#ff43ba,#ff3cb0,#ff36a7,#ff309e,#ff2b97,#ff268f,#ff2189,#ff1d83,#ff1a7d,#ff1678,#ff1373,#ff106f,#ff0d6a,#ff0a66,#ff0863,#ff055f,#ff035c,#ff0159,#ff0056,#ff0053,#ff0050,#ff004e,#ff004b,#ff0049,#ff0047,#ff0045,#ff0042,#ff0041,#ff003f,#ff003d,#ff003b,#ff003a,#ff0038,#ff0037,#ff0035,#ff0034,#ff0032,#ff0031,#ff0030,#ff002f,#ff002e,#ff002c,#ff002b,#ff002a,#ff0029,#ff0028,#ff0027,#ff0026)"></div><div style="left:29.2px;top:190.0px;width:634.2px;height:2.5px;background:linear-gradient(90deg,#00e7ff,#00e4ff,#00e1ff,#00deff,#00dbff,#00d7ff,#00d4ff,#00d1ff,#00ceff,#00caff,#00c7ff,#00c4ff,#00c0ff,#00bdff,#00b9ff,#00b6ff,#00b2ff,#00afff,#00abff,#03a7ff,#13a4ff,#24a0ff,#349cff,#4598ff,#5594ff,#6690ff,#788cff,#8988ff,#9b84ff,#ac80ff,#be7cff,#d078ff,#e374ff,#f56fff,#ff67f6,#ff5ce6,#ff53d7,#ff4aca,#ff42be,#ff3cb4,#ff35aa,#ff30a2,#ff2a9a,#ff2692,#ff218c,#ff1d85,#ff1980,#ff167a,#ff1375,#ff0f71,#ff0d6d,#ff0a68,#ff0765,#ff0561,#ff035e,#ff015a,#ff0057,#ff0055,#ff0052,#ff004f,#ff004d,#ff004a,#ff0048,#ff0046,#ff0044,#ff0042,#ff0040,#ff003e,#ff003d,#ff003b,#ff0039,#ff0038,#ff0036,#ff0035,#ff0034,#ff0032,#ff0031,#ff0030,#ff002f,#ff002e,#ff002c,#ff002b,#ff002a,#ff0029,#ff0028,#ff0027)"></div><div style="left:29.8px;top:192.0px;width:631.9px;height:2.5px;background:linear-gradient(90deg,#00e3ff,#00e0ff,#00ddff,#00daff,#00d7ff,#00d4ff,#00d0ff,#00cdff,#00caff,#00c7ff,#00c3ff,#00c0ff,#00bdff,#00b9ff,#00b6ff,#00b2ff,#00afff,#00abff,#00a8ff,#03a4ff,#13a0ff,#239dff,#3399ff,#4395ff,#5491ff,#648dff,#758aff,#8686ff,#9882ff,#a97dff,#bb79ff,#cc75ff,#de71ff,#f16dff,#ff67fb,#ff5cea,#ff52db,#ff4ace,#ff42c2,#ff3bb7,#ff35ae,#ff2fa5,#ff2a9d,#ff2595,#ff218f,#ff1d88,#ff1982,#ff167d,#ff1278,#ff0f73,#ff0c6f,#ff0a6b,#ff0767,#ff0563,#ff0360,#ff005c,#ff0059,#ff0056,#ff0054,#ff0051,#ff004f,#ff004c,#ff004a,#ff0048,#ff0046,#ff0044,#ff0042,#ff0040,#ff003e,#ff003c,#ff003b,#ff0039,#ff0038,#ff0036,#ff0035,#ff0034,#ff0032,#ff0031,#ff0030,#ff002f,#ff002e,#ff002d,#ff002b,#ff002a,#ff0029,#ff0028)"></div><div style="left:30.5px;top:194.0px;width:629.5px;height:2.5px;background:linear-gradient(90deg,#00dfff,#00dcff,#00d9ff,#00d6ff,#00d3ff,#00d0ff,#00ccff,#00c9ff,#00c6ff,#00c3ff,#00bfff,#00bcff,#00b9ff,#00b5ff,#00b2ff,#00aeff,#00abff,#00a7ff,#00a4ff,#06a0ff,#169cff,#2699ff,#3695ff,#4691ff,#578dff,#6789ff,#7885ff,#8981ff,#9a7dff,#ac79ff,#bd75ff,#cf71ff,#e16dff,#f369ff,#ff62f9,#ff57e8,#ff4ed9,#ff46cc,#ff3fc1,#ff38b6,#ff32ad,#ff2ca4,#ff279c,#ff2395,#ff1e8e,#ff1a88,#ff1782,#ff137d,#ff1078,#ff0d73,#ff0b6f,#ff086b,#ff0567,#ff0363,#ff0160,#ff005c,#ff0059,#ff0056,#ff0054,#ff0051,#ff004f,#ff004c,#ff004a,#ff0048,#ff0046,#ff0044,#ff0042,#ff0040,#ff003e,#ff003d,#ff003b,#ff0039,#ff0038,#ff0036,#ff0035,#ff0034,#ff0032,#ff0031,#ff0030,#ff002f,#ff002e,#ff002d,#ff002c,#ff002b,#ff002a)"></div><div style="left:31.2px;top:196.0px;width:627.2px;height:2.5px;background:linear-gradient(90deg,#00dbff,#00d8ff,#00d5ff,#00d2ff,#00cfff,#00ccff,#00c9ff,#00c6ff,#00c2ff,#00bfff,#00bcff,#00b9ff,#00b5ff,#00b2ff,#00aeff,#00abff,#00a8ff,#00a4ff,#00a0ff,#069dff,#1599ff,#2596ff,#3592ff,#458eff,#558aff,#6586ff,#7683ff,#867fff,#977bff,#a877ff,#ba73ff,#cb6fff,#dd6aff,#ef66ff,#ff61fd,#ff57ed,#ff4ede,#ff46d0,#ff3ec5,#ff37ba,#ff31b0,#ff2ca7,#ff279f,#ff2298,#ff1e91,#ff1a8b,#ff1685,#ff137f,#ff107a,#ff0d75,#ff0a71,#ff086d,#ff0569,#ff0365,#ff0162,#ff005e,#ff005b,#ff0058,#ff0055,#ff0053,#ff0050,#ff004e,#ff004c,#ff0049,#ff0047,#ff0045,#ff0043,#ff0041,#ff0040,#ff003e,#ff003c,#ff003b,#ff0039,#ff0038,#ff0036,#ff0035,#ff0034,#ff0032,#ff0031,#ff0030,#ff002f,#ff002e,#ff002d,#ff002c,#ff002b)"></div><div style="left:31.8px;top:198.0px;width:624.9px;height:2.5px;background:linear-gradient(90deg,#00d8ff,#00d5ff,#00d2ff,#00cfff,#00cbff,#00c8ff,#00c5ff,#00c2ff,#00bfff,#00bcff,#00b8ff,#00b5ff,#00b2ff,#00afff,#00abff,#00a8ff,#00a4ff,#00a1ff,#009dff,#069aff,#1596ff,#2493ff,#348fff,#438bff,#5387ff,#6384ff,#7380ff,#847cff,#9478ff,#a574ff,#b670ff,#c76cff,#d968ff,#ea64ff,#fc60ff,#ff57f1,#ff4de2,#ff45d4,#ff3ec8,#ff37bd,#ff31b4,#ff2cab,#ff27a2,#ff229b,#ff1e94,#ff1a8d,#ff1687,#ff1382,#ff107d,#ff0d78,#ff0a73,#ff076f,#ff056b,#ff0367,#ff0164,#ff0060,#ff005d,#ff005a,#ff0057,#ff0055,#ff0052,#ff0050,#ff004d,#ff004b,#ff0049,#ff0047,#ff0045,#ff0043,#ff0041,#ff003f,#ff003e,#ff003c,#ff003b,#ff0039,#ff0038,#ff0036,#ff0035,#ff0034,#ff0032,#ff0031,#ff0030,#ff002f,#ff002e,#ff002d,#ff002c)"></div><div style="left:32.5px;top:200.0px;width:622.5px;height:2.5px;background:linear-gradient(90deg,#00d4ff,#00d1ff,#00ceff,#00cbff,#00c8ff,#00c5ff,#00c2ff,#00bfff,#00bcff,#00b8ff,#00b5ff,#00b2ff,#00afff,#00abff,#00a8ff,#00a5ff,#00a1ff,#009eff,#009aff,#0597ff,#1493ff,#2390ff,#338cff,#4288ff,#5285ff,#6181ff,#717dff,#8179ff,#9276ff,#a272ff,#b36eff,#c46aff,#d566ff,#e662ff,#f75eff,#ff56f6,#ff4de6,#ff45d9,#ff3dcc,#ff37c1,#ff31b7,#ff2bae,#ff26a5,#ff229e,#ff1d97,#ff1a90,#ff168a,#ff1384,#ff0f7f,#ff0c7a,#ff0a76,#ff0771,#ff056d,#ff0269,#ff0066,#ff0062,#ff005f,#ff005c,#ff0059,#ff0056,#ff0054,#ff0051,#ff004f,#ff004d,#ff004a,#ff0048,#ff0046,#ff0044,#ff0043,#ff0041,#ff003f,#ff003d,#ff003c,#ff003a,#ff0039,#ff0038,#ff0036,#ff0035,#ff0034,#ff0032,#ff0031,#ff0030,#ff002f,#ff002e,#ff002d)"></div><div style="left:33.2px;top:202.0px;width:620.2px;height:2.5px;background:linear-gradient(90deg,#00d0ff,#00cdff,#00caff,#00c7ff,#00c4ff,#00c1ff,#00beff,#00bbff,#00b8ff,#00b5ff,#00b1ff,#00aeff,#00abff,#00a8ff,#00a4ff,#00a1ff,#009eff,#009aff,#0097ff,#0893ff,#1790ff,#268cff,#3688ff,#4585ff,#5481ff,#647dff,#7479ff,#8476ff,#9472ff,#a56eff,#b56aff,#c666ff,#d762ff,#e85eff,#fa5aff,#ff52f4,#ff49e4,#ff41d7,#ff3acb,#ff33c0,#ff2eb6,#ff28ad,#ff24a5,#ff1f9d,#ff1b96,#ff178f,#ff1489,#ff1084,#ff0d7f,#ff0b7a,#ff0875,#ff0571,#ff036d,#ff0169,#ff0066,#ff0062,#ff005f,#ff005c,#ff0059,#ff0056,#ff0054,#ff0051,#ff004f,#ff004d,#ff004a,#ff0048,#ff0046,#ff0044,#ff0043,#ff0041,#ff003f,#ff003d,#ff003c,#ff003a,#ff0039,#ff0038,#ff0036,#ff0035,#ff0034,#ff0032,#ff0031,#ff0030,#ff002f,#ff002e)"></div><div style="left:33.9px;top:204.0px;width:617.8px;height:2.5px;background:linear-gradient(90deg,#00cdff,#00caff,#00c7ff,#00c4ff,#00c1ff,#00beff,#00bbff,#00b8ff,#00b5ff,#00b1ff,#00aeff,#00abff,#00a8ff,#00a5ff,#00a1ff,#009eff,#009bff,#0097ff,#0094ff,#0890ff,#178dff,#2589ff,#3486ff,#4482ff,#537eff,#627bff,#7277ff,#8273ff,#926fff,#a26bff,#b268ff,#c364ff,#d360ff,#e45cff,#f558ff,#ff51f8,#ff48e9,#ff41db,#ff39cf,#ff33c3,#ff2db9,#ff28b0,#ff23a8,#ff1fa0,#ff1b99,#ff1792,#ff138c,#ff1086,#ff0d81,#ff0a7c,#ff0878,#ff0573,#ff036f,#ff016b,#ff0068,#ff0064,#ff0061,#ff005e,#ff005b,#ff0058,#ff0055,#ff0053,#ff0050,#ff004e,#ff004c,#ff004a,#ff0048,#ff0046,#ff0044,#ff0042,#ff0041,#ff003f,#ff003d,#ff003c,#ff003a,#ff0039,#ff0037,#ff0036,#ff0035,#ff0034,#ff0032,#ff0031,#ff0030,#ff002f)"></div><div style="left:34.6px;top:206.0px;width:615.4px;height:2.5px;background:linear-gradient(90deg,#00c9ff,#00c7ff,#00c4ff,#00c1ff,#00beff,#00bbff,#00b8ff,#00b5ff,#00b1ff,#00aeff,#00abff,#00a8ff,#00a5ff,#00a2ff,#009eff,#009bff,#0098ff,#0094ff,#0091ff,#088dff,#168aff,#2586ff,#3383ff,#427fff,#517cff,#6078ff,#7074ff,#7f71ff,#8f6dff,#9f69ff,#af65ff,#bf61ff,#cf5eff,#e05aff,#f156ff,#ff51fd,#ff48ed,#ff40df,#ff39d2,#ff33c7,#ff2dbd,#ff28b3,#ff23ab,#ff1ea3,#ff1a9c,#ff1795,#ff138f,#ff1089,#ff0d84,#ff0a7f,#ff077a,#ff0575,#ff0371,#ff006d,#ff006a,#ff0066,#ff0063,#ff0060,#ff005d,#ff005a,#ff0057,#ff0055,#ff0052,#ff0050,#ff004e,#ff004b,#ff0049,#ff0047,#ff0045,#ff0044,#ff0042,#ff0040,#ff003f,#ff003d,#ff003c,#ff003a,#ff0039,#ff0037,#ff0036,#ff0035,#ff0034,#ff0032,#ff0031,#ff0030)"></div><div style="left:35.3px;top:208.0px;width:613.1px;height:2.5px;background:linear-gradient(90deg,#00c6ff,#00c3ff,#00c0ff,#00bdff,#00baff,#00b7ff,#00b4ff,#00b1ff,#00aeff,#00abff,#00a8ff,#00a5ff,#00a1ff,#009eff,#009bff,#0098ff,#0094ff,#0091ff,#008dff,#0a8aff,#1986ff,#2783ff,#367fff,#457cff,#5478ff,#6375ff,#7371ff,#826dff,#9269ff,#a266ff,#b262ff,#c25eff,#d25aff,#e256ff,#f352ff,#ff4cfa,#ff44eb,#ff3cdd,#ff36d1,#ff30c6,#ff2abc,#ff25b2,#ff20aa,#ff1ca2,#ff189b,#ff1494,#ff118e,#ff0e88,#ff0b83,#ff087e,#ff0679,#ff0375,#ff0171,#ff006d,#ff0069,#ff0066,#ff0063,#ff005f,#ff005d,#ff005a,#ff0057,#ff0054,#ff0052,#ff0050,#ff004d,#ff004b,#ff0049,#ff0047,#ff0045,#ff0044,#ff0042,#ff0040,#ff003f,#ff003d,#ff003c,#ff003a,#ff0039,#ff0037,#ff0036,#ff0035,#ff0034,#ff0032,#ff0031)"></div><div style="left:36.0px;top:210.0px;width:610.7px;height:2.5px;background:linear-gradient(90deg,#00c3ff,#00c0ff,#00bdff,#00baff,#00b7ff,#00b4ff,#00b1ff,#00aeff,#00abff,#00a8ff,#00a5ff,#00a2ff,#009eff,#009bff,#0098ff,#0095ff,#0091ff,#008eff,#008bff,#0a87ff,#1884ff,#2780ff,#357dff,#4479ff,#5376ff,#6172ff,#716fff,#806bff,#8f67ff,#9f63ff,#ae60ff,#be5cff,#ce58ff,#de54ff,#ef50ff,#ff4cff,#ff44ef,#ff3ce1,#ff35d5,#ff2fc9,#ff2abf,#ff25b6,#ff20ad,#ff1ca5,#ff189e,#ff1497,#ff1191,#ff0e8b,#ff0b86,#ff0881,#ff057c,#ff0377,#ff0173,#ff006f,#ff006b,#ff0068,#ff0065,#ff0061,#ff005e,#ff005c,#ff0059,#ff0056,#ff0054,#ff0051,#ff004f,#ff004d,#ff004b,#ff0049,#ff0047,#ff0045,#ff0043,#ff0042,#ff0040,#ff003e,#ff003d,#ff003b,#ff003a,#ff0039,#ff0037,#ff0036,#ff0035,#ff0034,#ff0032)"></div><div style="left:36.7px;top:212.0px;width:608.3px;height:2.5px;background:linear-gradient(90deg,#00c0ff,#00bdff,#00baff,#00b7ff,#00b4ff,#00b1ff,#00aeff,#00abff,#00a8ff,#00a5ff,#00a2ff,#009fff,#009cff,#0098ff,#0095ff,#0092ff,#008fff,#008bff,#0088ff,#0a85ff,#1881ff,#267eff,#347aff,#4377ff,#5173ff,#6070ff,#6f6cff,#7e69ff,#8d65ff,#9c61ff,#ab5eff,#bb5aff,#cb56ff,#da52ff,#eb4eff,#fb4aff,#ff43f3,#ff3ce5,#ff35d8,#ff2fcd,#ff29c2,#ff24b9,#ff20b0,#ff1ba8,#ff17a1,#ff149a,#ff1094,#ff0d8e,#ff0a88,#ff0883,#ff057e,#ff037a,#ff0075,#ff0071,#ff006d,#ff006a,#ff0067,#ff0063,#ff0060,#ff005d,#ff005b,#ff0058,#ff0055,#ff0053,#ff0051,#ff004e,#ff004c,#ff004a,#ff0048,#ff0047,#ff0045,#ff0043,#ff0041,#ff0040,#ff003e,#ff003d,#ff003b,#ff003a,#ff0039,#ff0037,#ff0036,#ff0035,#ff0034)"></div><div style="left:37.4px;top:214.0px;width:606.0px;height:2.5px;background:linear-gradient(90deg,#00bcff,#00baff,#00b7ff,#00b4ff,#00b1ff,#00aeff,#00abff,#00a8ff,#00a5ff,#00a2ff,#009fff,#009cff,#0098ff,#0095ff,#0092ff,#008fff,#008bff,#0088ff,#0085ff,#0d81ff,#1b7eff,#297bff,#3777ff,#4574ff,#5470ff,#626dff,#7169ff,#8065ff,#8f62ff,#9f5eff,#ae5aff,#be56ff,#cd53ff,#dd4fff,#ed4bff,#fd47ff,#ff3ff1,#ff38e3,#ff32d7,#ff2ccb,#ff26c1,#ff21b8,#ff1daf,#ff19a7,#ff15a0,#ff1299,#ff0e93,#ff0b8d,#ff0887,#ff0682,#ff037e,#ff0179,#ff0075,#ff0071,#ff006d,#ff006a,#ff0066,#ff0063,#ff0060,#ff005d,#ff005a,#ff0058,#ff0055,#ff0053,#ff0051,#ff004e,#ff004c,#ff004a,#ff0048,#ff0046,#ff0045,#ff0043,#ff0041,#ff0040,#ff003e,#ff003d,#ff003b,#ff003a,#ff0039,#ff0037,#ff0036,#ff0035)"></div><div style="left:38.1px;top:216.0px;width:603.6px;height:2.5px;background:linear-gradient(90deg,#00b9ff,#00b7ff,#00b4ff,#00b1ff,#00aeff,#00abff,#00a8ff,#00a5ff,#00a2ff,#009fff,#009cff,#0099ff,#0096ff,#0093ff,#008fff,#008cff,#0089ff,#0086ff,#0082ff,#0c7fff,#1a7cff,#2878ff,#3675ff,#4471ff,#526eff,#616aff,#6f67ff,#7e63ff,#8d60ff,#9c5cff,#ab58ff,#ba55ff,#ca51ff,#d94dff,#e949ff,#f945ff,#ff3ff5,#ff38e7,#ff31db,#ff2bcf,#ff26c5,#ff21bb,#ff1db2,#ff18aa,#ff15a3,#ff119c,#ff0e95,#ff0b90,#ff088a,#ff0585,#ff0380,#ff017b,#ff0077,#ff0073,#ff006f,#ff006c,#ff0068,#ff0065,#ff0062,#ff005f,#ff005c,#ff0059,#ff0057,#ff0054,#ff0052,#ff0050,#ff004e,#ff004c,#ff004a,#ff0048,#ff0046,#ff0044,#ff0043,#ff0041,#ff003f,#ff003e,#ff003d,#ff003b,#ff003a,#ff0038,#ff0037,#ff0036)"></div><div style="left:38.8px;top:218.0px;width:601.2px;height:2.5px;background:linear-gradient(90deg,#00b6ff,#00b4ff,#00b1ff,#00aeff,#00abff,#00a8ff,#00a5ff,#00a2ff,#009fff,#009cff,#0099ff,#0096ff,#0093ff,#0090ff,#008dff,#008aff,#0086ff,#0083ff,#0080ff,#0c7dff,#1979ff,#2776ff,#3573ff,#436fff,#516cff,#5f68ff,#6d65ff,#7c61ff,#8a5eff,#995aff,#a856ff,#b753ff,#c64fff,#d64bff,#e547ff,#f544ff,#ff3efa,#ff37eb,#ff31de,#ff2bd3,#ff26c8,#ff21be,#ff1cb5,#ff18ad,#ff14a6,#ff119f,#ff0e98,#ff0b92,#ff088d,#ff0587,#ff0382,#ff007e,#ff0079,#ff0075,#ff0071,#ff006e,#ff006a,#ff0067,#ff0064,#ff0061,#ff005e,#ff005b,#ff0059,#ff0056,#ff0054,#ff0052,#ff004f,#ff004d,#ff004b,#ff0049,#ff0048,#ff0046,#ff0044,#ff0042,#ff0041,#ff003f,#ff003e,#ff003c,#ff003b,#ff003a,#ff0038,#ff0037)"></div><div style="left:39.5px;top:220.0px;width:598.8px;height:2.5px;background:linear-gradient(90deg,#00b3ff,#00b1ff,#00aeff,#00abff,#00a8ff,#00a5ff,#00a2ff,#009fff,#009cff,#0099ff,#0096ff,#0093ff,#0090ff,#008dff,#008aff,#0086ff,#0083ff,#0080ff,#017dff,#0f79ff,#1c76ff,#2a73ff,#386fff,#466cff,#5469ff,#6265ff,#7062ff,#7f5eff,#8d5aff,#9c57ff,#ab53ff,#ba4fff,#c94cff,#d848ff,#e844ff,#f740ff,#ff3bf7,#ff34e9,#ff2ddc,#ff28d1,#ff23c6,#ff1ebd,#ff1ab4,#ff16ac,#ff12a5,#ff0f9e,#ff0c97,#ff0991,#ff068c,#ff0387,#ff0182,#ff007d,#ff0079,#ff0075,#ff0071,#ff006d,#ff006a,#ff0067,#ff0063,#ff0060,#ff005e,#ff005b,#ff0058,#ff0056,#ff0054,#ff0051,#ff004f,#ff004d,#ff004b,#ff0049,#ff0047,#ff0046,#ff0044,#ff0042,#ff0041,#ff003f,#ff003e,#ff003c,#ff003b,#ff003a,#ff0038)"></div><div style="left:40.2px;top:222.0px;width:596.4px;height:2.5px;background:linear-gradient(90deg,#00b0ff,#00aeff,#00abff,#00a8ff,#00a5ff,#00a2ff,#009fff,#009cff,#0099ff,#0097ff,#0093ff,#0090ff,#008dff,#008aff,#0087ff,#0084ff,#0081ff,#007eff,#017aff,#0e77ff,#1c74ff,#2971ff,#376dff,#446aff,#5266ff,#6063ff,#6e60ff,#7c5cff,#8b59ff,#9955ff,#a851ff,#b74eff,#c64aff,#d546ff,#e443ff,#f33fff,#ff3afb,#ff33ed,#ff2de0,#ff27d5,#ff22ca,#ff1ec0,#ff19b7,#ff15af,#ff12a8,#ff0ea1,#ff0b9a,#ff0894,#ff068e,#ff0389,#ff0184,#ff007f,#ff007b,#ff0077,#ff0073,#ff006f,#ff006c,#ff0068,#ff0065,#ff0062,#ff005f,#ff005d,#ff005a,#ff0058,#ff0055,#ff0053,#ff0051,#ff004f,#ff004d,#ff004b,#ff0049,#ff0047,#ff0045,#ff0044,#ff0042,#ff0040,#ff003f,#ff003e,#ff003c,#ff003b,#ff003a)"></div><div style="left:41.0px;top:224.0px;width:594.0px;height:2.5px;background:linear-gradient(90deg,#00aeff,#00abff,#00a8ff,#00a5ff,#00a2ff,#00a0ff,#009dff,#009aff,#0097ff,#0094ff,#0091ff,#008eff,#008bff,#0088ff,#0085ff,#0082ff,#007fff,#007bff,#0178ff,#0e75ff,#1b72ff,#286eff,#366bff,#4368ff,#5164ff,#5f61ff,#6c5eff,#7a5aff,#8857ff,#9753ff,#a550ff,#b44cff,#c248ff,#d145ff,#e041ff,#ef3dff,#fe3aff,#ff33f1,#ff2de4,#ff27d8,#ff22cd,#ff1dc4,#ff19ba,#ff15b2,#ff11aa,#ff0ea3,#ff0b9d,#ff0897,#ff0591,#ff038b,#ff0086,#ff0082,#ff007d,#ff0079,#ff0075,#ff0071,#ff006e,#ff006a,#ff0067,#ff0064,#ff0061,#ff005e,#ff005c,#ff0059,#ff0057,#ff0055,#ff0052,#ff0050,#ff004e,#ff004c,#ff004a,#ff0048,#ff0047,#ff0045,#ff0043,#ff0042,#ff0040,#ff003f,#ff003d,#ff003c,#ff003b)"></div><div style="left:41.7px;top:226.0px;width:591.6px;height:2.5px;background:linear-gradient(90deg,#00abff,#00a8ff,#00a5ff,#00a2ff,#00a0ff,#009dff,#009aff,#0097ff,#0094ff,#0091ff,#008eff,#008bff,#0088ff,#0085ff,#0082ff,#007fff,#007cff,#0078ff,#0475ff,#1172ff,#1e6fff,#2b6bff,#3868ff,#4665ff,#5461ff,#615eff,#6f5bff,#7d57ff,#8b54ff,#9950ff,#a84dff,#b649ff,#c545ff,#d442ff,#e33eff,#f23aff,#ff36fd,#ff2fef,#ff29e2,#ff24d6,#ff1fcc,#ff1bc2,#ff16b9,#ff13b1,#ff0fa9,#ff0ca2,#ff099c,#ff0696,#ff0390,#ff018b,#ff0086,#ff0081,#ff007d,#ff0078,#ff0075,#ff0071,#ff006d,#ff006a,#ff0067,#ff0064,#ff0061,#ff005e,#ff005b,#ff0059,#ff0057,#ff0054,#ff0052,#ff0050,#ff004e,#ff004c,#ff004a,#ff0048,#ff0047,#ff0045,#ff0043,#ff0042,#ff0040,#ff003f,#ff003d,#ff003c)"></div><div style="left:42.5px;top:228.0px;width:589.2px;height:2.5px;background:linear-gradient(90deg,#00a8ff,#00a5ff,#00a3ff,#00a0ff,#009dff,#009aff,#0097ff,#0094ff,#0091ff,#008fff,#008cff,#0089ff,#0086ff,#0083ff,#0080ff,#007cff,#0079ff,#0076ff,#0473ff,#1070ff,#1d6dff,#2a69ff,#3766ff,#4563ff,#525fff,#605cff,#6d59ff,#7b55ff,#8952ff,#974eff,#a54bff,#b347ff,#c244ff,#d040ff,#df3cff,#ee39ff,#fd35ff,#ff2ff3,#ff29e6,#ff24da,#ff1fcf,#ff1ac5,#ff16bc,#ff12b4,#ff0fac,#ff0ca5,#ff099f,#ff0698,#ff0393,#ff018d,#ff0088,#ff0083,#ff007f,#ff007b,#ff0077,#ff0073,#ff006f,#ff006c,#ff0069,#ff0066,#ff0063,#ff0060,#ff005d,#ff005b,#ff0058,#ff0056,#ff0054,#ff0051,#ff004f,#ff004d,#ff004c,#ff004a,#ff0048,#ff0046,#ff0045,#ff0043,#ff0041,#ff0040,#ff003f,#ff003d)"></div><div style="left:43.2px;top:230.0px;width:586.8px;height:2.5px;background:linear-gradient(90deg,#00a5ff,#00a3ff,#00a0ff,#009dff,#009aff,#0098ff,#0095ff,#0092ff,#008fff,#008cff,#0089ff,#0086ff,#0083ff,#0080ff,#007dff,#007aff,#0077ff,#0074ff,#0371ff,#106eff,#1d6bff,#2a67ff,#3664ff,#4461ff,#515eff,#5e5aff,#6b57ff,#7954ff,#8750ff,#944dff,#a249ff,#b046ff,#bf42ff,#cd3fff,#db3bff,#ea37ff,#f934ff,#ff2ef7,#ff29ea,#ff23de,#ff1ed3,#ff1ac9,#ff16bf,#ff12b7,#ff0eaf,#ff0ba8,#ff08a1,#ff059b,#ff0395,#ff0090,#ff008a,#ff0086,#ff0081,#ff007d,#ff0079,#ff0075,#ff0071,#ff006e,#ff006b,#ff0067,#ff0064,#ff0062,#ff005f,#ff005c,#ff005a,#ff0057,#ff0055,#ff0053,#ff0051,#ff004f,#ff004d,#ff004b,#ff0049,#ff0048,#ff0046,#ff0044,#ff0043,#ff0041,#ff0040,#ff003e)"></div><div style="left:44.0px;top:232.0px;width:584.3px;height:2.5px;background:linear-gradient(90deg,#00a3ff,#00a0ff,#009dff,#009aff,#0098ff,#0095ff,#0092ff,#008fff,#008cff,#0089ff,#0086ff,#0084ff,#0081ff,#007eff,#007aff,#0077ff,#0074ff,#0071ff,#066eff,#136bff,#1f68ff,#2c65ff,#3961ff,#465eff,#535bff,#6157ff,#6e54ff,#7c51ff,#894dff,#974aff,#a546ff,#b343ff,#c13fff,#d03cff,#de38ff,#ec34ff,#fb31ff,#ff2bf4,#ff25e7,#ff20dc,#ff1cd1,#ff17c7,#ff13be,#ff10b6,#ff0cae,#ff09a7,#ff06a0,#ff049a,#ff0194,#ff008f,#ff008a,#ff0085,#ff0080,#ff007c,#ff0078,#ff0074,#ff0071,#ff006d,#ff006a,#ff0067,#ff0064,#ff0061,#ff005f,#ff005c,#ff005a,#ff0057,#ff0055,#ff0053,#ff0051,#ff004f,#ff004d,#ff004b,#ff0049,#ff0047,#ff0046,#ff0044,#ff0043,#ff0041,#ff0040)"></div><div style="left:44.7px;top:234.0px;width:581.9px;height:2.5px;background:linear-gradient(90deg,#00a0ff,#009dff,#009bff,#0098ff,#0095ff,#0092ff,#0090ff,#008dff,#008aff,#0087ff,#0084ff,#0081ff,#007eff,#007bff,#0078ff,#0075ff,#0072ff,#006fff,#066cff,#1269ff,#1f66ff,#2b63ff,#385fff,#455cff,#5259ff,#5f56ff,#6c52ff,#7a4fff,#874cff,#9548ff,#a245ff,#b041ff,#be3eff,#cc3aff,#da37ff,#e933ff,#f72fff,#ff2bf8,#ff25eb,#ff20df,#ff1bd4,#ff17ca,#ff13c1,#ff0fb9,#ff0cb1,#ff09aa,#ff06a3,#ff039d,#ff0197,#ff0091,#ff008c,#ff0087,#ff0083,#ff007e,#ff007a,#ff0076,#ff0073,#ff006f,#ff006c,#ff0069,#ff0066,#ff0063,#ff0060,#ff005e,#ff005b,#ff0059,#ff0057,#ff0054,#ff0052,#ff0050,#ff004e,#ff004c,#ff004b,#ff0049,#ff0047,#ff0045,#ff0044,#ff0042,#ff0041)"></div><div style="left:45.5px;top:236.0px;width:579.5px;height:2.5px;background:linear-gradient(90deg,#009eff,#009bff,#0098ff,#0095ff,#0093ff,#0090ff,#008dff,#008aff,#0088ff,#0085ff,#0082ff,#007fff,#007cff,#0079ff,#0076ff,#0073ff,#0070ff,#006dff,#066aff,#1267ff,#1e64ff,#2b61ff,#375eff,#445aff,#5157ff,#5e54ff,#6b51ff,#784dff,#854aff,#9247ff,#a043ff,#ad40ff,#bb3cff,#c939ff,#d735ff,#e532ff,#f32eff,#ff2afd,#ff25ef,#ff1fe3,#ff1bd8,#ff16ce,#ff13c4,#ff0fbc,#ff0cb4,#ff08ac,#ff06a6,#ff039f,#ff0099,#ff0094,#ff008e,#ff008a,#ff0085,#ff0081,#ff007c,#ff0079,#ff0075,#ff0071,#ff006e,#ff006b,#ff0068,#ff0065,#ff0062,#ff005f,#ff005d,#ff005a,#ff0058,#ff0056,#ff0054,#ff0052,#ff0050,#ff004e,#ff004c,#ff004a,#ff0048,#ff0047,#ff0045,#ff0044,#ff0042)"></div><div style="left:46.2px;top:238.0px;width:577.0px;height:2.5px;background:linear-gradient(90deg,#009bff,#0098ff,#0096ff,#0093ff,#0090ff,#008dff,#008bff,#0088ff,#0085ff,#0082ff,#007fff,#007cff,#0079ff,#0077ff,#0074ff,#0071ff,#006eff,#006aff,#0867ff,#1564ff,#2161ff,#2d5eff,#3a5bff,#4758ff,#5354ff,#6051ff,#6d4eff,#7a4bff,#8847ff,#9544ff,#a340ff,#b03dff,#be3aff,#cc36ff,#da33ff,#e82fff,#f62bff,#ff27fa,#ff22ed,#ff1de1,#ff18d6,#ff14cc,#ff10c3,#ff0dba,#ff09b2,#ff06ab,#ff04a4,#ff019e,#ff0098,#ff0093,#ff008e,#ff0089,#ff0084,#ff0080,#ff007c,#ff0078,#ff0074,#ff0071,#ff006d,#ff006a,#ff0067,#ff0064,#ff0062,#ff005f,#ff005c,#ff005a,#ff0058,#ff0056,#ff0053,#ff0051,#ff004f,#ff004e,#ff004c,#ff004a,#ff0048,#ff0047,#ff0045,#ff0044)"></div><div style="left:47.0px;top:240.0px;width:574.6px;height:2.5px;background:linear-gradient(90deg,#0099ff,#0096ff,#0093ff,#0091ff,#008eff,#008bff,#0088ff,#0086ff,#0083ff,#0080ff,#007dff,#007aff,#0077ff,#0074ff,#0071ff,#006fff,#006cff,#0069ff,#0865ff,#1462ff,#205fff,#2d5cff,#3959ff,#4656ff,#5253ff,#5f50ff,#6c4cff,#7949ff,#8646ff,#9342ff,#a03fff,#ad3cff,#bb38ff,#c835ff,#d631ff,#e42eff,#f22aff,#ff27fe,#ff21f1,#ff1ce4,#ff18d9,#ff14cf,#ff10c6,#ff0cbd,#ff09b5,#ff06ae,#ff03a7,#ff01a1,#ff009b,#ff0095,#ff0090,#ff008b,#ff0086,#ff0082,#ff007e,#ff007a,#ff0076,#ff0073,#ff006f,#ff006c,#ff0069,#ff0066,#ff0063,#ff0061,#ff005e,#ff005c,#ff0059,#ff0057,#ff0055,#ff0053,#ff0051,#ff004f,#ff004d,#ff004b,#ff004a,#ff0048,#ff0046,#ff0045)"></div><div style="left:47.8px;top:242.0px;width:572.2px;height:2.5px;background:linear-gradient(90deg,#0096ff,#0094ff,#0091ff,#008eff,#008cff,#0089ff,#0086ff,#0083ff,#0081ff,#007eff,#007bff,#0078ff,#0075ff,#0072ff,#006fff,#006dff,#006aff,#0067ff,#0864ff,#1461ff,#205eff,#2c5aff,#3857ff,#4454ff,#5151ff,#5d4eff,#6a4bff,#7747ff,#8444ff,#9041ff,#9e3eff,#ab3aff,#b837ff,#c534ff,#d330ff,#e12dff,#ee29ff,#fc26ff,#ff21f4,#ff1ce8,#ff17dd,#ff13d3,#ff0fc9,#ff0cc0,#ff09b8,#ff06b1,#ff03aa,#ff00a3,#ff009d,#ff0098,#ff0092,#ff008d,#ff0089,#ff0084,#ff0080,#ff007c,#ff0078,#ff0075,#ff0071,#ff006e,#ff006b,#ff0068,#ff0065,#ff0062,#ff0060,#ff005d,#ff005b,#ff0059,#ff0057,#ff0054,#ff0052,#ff0050,#ff004f,#ff004d,#ff004b,#ff0049,#ff0048,#ff0046)"></div><div style="left:48.6px;top:244.0px;width:569.7px;height:2.5px;background:linear-gradient(90deg,#0094ff,#0091ff,#008eff,#008cff,#0089ff,#0086ff,#0084ff,#0081ff,#007eff,#007bff,#0078ff,#0076ff,#0073ff,#0070ff,#006dff,#006aff,#0067ff,#0064ff,#0a61ff,#165eff,#225bff,#2f58ff,#3b55ff,#4752ff,#534eff,#604bff,#6d48ff,#7945ff,#8642ff,#933eff,#a03bff,#ad38ff,#bb34ff,#c831ff,#d62dff,#e32aff,#f126ff,#ff23ff,#ff1ef2,#ff19e6,#ff15db,#ff11d1,#ff0dc7,#ff0abf,#ff07b7,#ff04b0,#ff01a9,#ff00a2,#ff009c,#ff0097,#ff0091,#ff008d,#ff0088,#ff0083,#ff007f,#ff007b,#ff0078,#ff0074,#ff0071,#ff006d,#ff006a,#ff0067,#ff0065,#ff0062,#ff005f,#ff005d,#ff005b,#ff0058,#ff0056,#ff0054,#ff0052,#ff0050,#ff004e,#ff004c,#ff004b,#ff0049,#ff0047)"></div><div style="left:49.4px;top:246.0px;width:567.2px;height:2.5px;background:linear-gradient(90deg,#0091ff,#008fff,#008cff,#008aff,#0087ff,#0084ff,#0081ff,#007fff,#007cff,#0079ff,#0076ff,#0074ff,#0071ff,#006eff,#006bff,#0068ff,#0065ff,#0062ff,#0a5fff,#165cff,#2259ff,#2e56ff,#3a53ff,#4650ff,#524dff,#5f4aff,#6b47ff,#7843ff,#8440ff,#913dff,#9e3aff,#ab36ff,#b833ff,#c530ff,#d22cff,#e029ff,#ed25ff,#fb22ff,#ff1df6,#ff19e9,#ff14de,#ff10d4,#ff0dcb,#ff09c2,#ff06ba,#ff03b2,#ff01ab,#ff00a5,#ff009f,#ff0099,#ff0094,#ff008f,#ff008a,#ff0086,#ff0081,#ff007d,#ff007a,#ff0076,#ff0073,#ff006f,#ff006c,#ff0069,#ff0066,#ff0064,#ff0061,#ff005f,#ff005c,#ff005a,#ff0058,#ff0056,#ff0054,#ff0052,#ff0050,#ff004e,#ff004c,#ff004a,#ff0049)"></div><div style="left:50.1px;top:248.0px;width:564.8px;height:2.5px;background:linear-gradient(90deg,#008fff,#008dff,#008aff,#0087ff,#0085ff,#0082ff,#007fff,#007dff,#007aff,#0077ff,#0074ff,#0072ff,#006fff,#006cff,#0069ff,#0066ff,#0063ff,#0060ff,#0a5eff,#165bff,#2158ff,#2d55ff,#3952ff,#454eff,#514bff,#5d48ff,#6945ff,#7642ff,#823fff,#8f3cff,#9b38ff,#a835ff,#b532ff,#c22eff,#cf2bff,#dc28ff,#ea24ff,#f721ff,#ff1df9,#ff18ed,#ff14e2,#ff10d7,#ff0cce,#ff09c5,#ff06bd,#ff03b5,#ff00ae,#ff00a8,#ff00a1,#ff009c,#ff0096,#ff0091,#ff008c,#ff0088,#ff0084,#ff0080,#ff007c,#ff0078,#ff0075,#ff0071,#ff006e,#ff006b,#ff0068,#ff0065,#ff0063,#ff0060,#ff005e,#ff005b,#ff0059,#ff0057,#ff0055,#ff0053,#ff0051,#ff004f,#ff004e,#ff004c,#ff004a)"></div><div style="left:50.9px;top:250.0px;width:562.3px;height:2.5px;background:linear-gradient(90deg,#008dff,#008aff,#0088ff,#0085ff,#0082ff,#0080ff,#007dff,#007aff,#0078ff,#0075ff,#0072ff,#006fff,#006cff,#006aff,#0067ff,#0064ff,#0061ff,#015eff,#0d5bff,#1858ff,#2455ff,#3052ff,#3c4fff,#484cff,#5449ff,#6046ff,#6c43ff,#783fff,#853cff,#9139ff,#9e36ff,#ab32ff,#b82fff,#c52cff,#d228ff,#df25ff,#ec22ff,#fa1eff,#ff1af7,#ff15eb,#ff11e0,#ff0ed5,#ff0acc,#ff07c3,#ff04bb,#ff01b4,#ff00ad,#ff00a6,#ff00a0,#ff009b,#ff0095,#ff0090,#ff008b,#ff0087,#ff0083,#ff007f,#ff007b,#ff0077,#ff0074,#ff0071,#ff006d,#ff006a,#ff0068,#ff0065,#ff0062,#ff0060,#ff005d,#ff005b,#ff0059,#ff0057,#ff0055,#ff0053,#ff0051,#ff004f,#ff004d,#ff004b)"></div><div style="left:51.7px;top:252.0px;width:559.8px;height:2.5px;background:linear-gradient(90deg,#008bff,#0088ff,#0085ff,#0083ff,#0080ff,#007eff,#007bff,#0078ff,#0076ff,#0073ff,#0070ff,#006dff,#006bff,#0068ff,#0065ff,#0062ff,#005fff,#015cff,#0c59ff,#1856ff,#2353ff,#2f50ff,#3b4dff,#464aff,#5247ff,#5e44ff,#6a41ff,#773eff,#833bff,#8f38ff,#9c35ff,#a831ff,#b52eff,#c22bff,#cf27ff,#dc24ff,#e921ff,#f61dff,#ff19fb,#ff15ee,#ff11e3,#ff0dd9,#ff0acf,#ff06c6,#ff03be,#ff01b7,#ff00b0,#ff00a9,#ff00a3,#ff009d,#ff0098,#ff0093,#ff008e,#ff0089,#ff0085,#ff0081,#ff007d,#ff0079,#ff0076,#ff0072,#ff006f,#ff006c,#ff0069,#ff0067,#ff0064,#ff0061,#ff005f,#ff005d,#ff005a,#ff0058,#ff0056,#ff0054,#ff0052,#ff0050,#ff004f,#ff004d)"></div><div style="left:52.6px;top:254.0px;width:557.4px;height:2.5px;background:linear-gradient(90deg,#0088ff,#0086ff,#0083ff,#0081ff,#007eff,#007cff,#0079ff,#0076ff,#0074ff,#0071ff,#006eff,#006bff,#0069ff,#0066ff,#0063ff,#0060ff,#005dff,#015bff,#0c58ff,#1755ff,#2352ff,#2e4fff,#3a4cff,#4549ff,#5146ff,#5d43ff,#6940ff,#753dff,#813aff,#8d36ff,#9933ff,#a630ff,#b22dff,#bf2aff,#cc26ff,#d823ff,#e520ff,#f21cff,#ff19fe,#ff15f2,#ff10e6,#ff0ddc,#ff09d2,#ff06c9,#ff03c1,#ff00ba,#ff00b2,#ff00ac,#ff00a5,#ff00a0,#ff009a,#ff0095,#ff0090,#ff008b,#ff0087,#ff0083,#ff007f,#ff007b,#ff0078,#ff0074,#ff0071,#ff006e,#ff006b,#ff0068,#ff0066,#ff0063,#ff0061,#ff005e,#ff005c,#ff005a,#ff0058,#ff0056,#ff0054,#ff0052,#ff0050,#ff004e)"></div><div style="left:53.4px;top:256.0px;width:554.9px;height:2.5px;background:linear-gradient(90deg,#0086ff,#0084ff,#0081ff,#007fff,#007cff,#0079ff,#0077ff,#0074ff,#0071ff,#006fff,#006cff,#0069ff,#0066ff,#0064ff,#0061ff,#005eff,#005bff,#0358ff,#0f55ff,#1a52ff,#2550ff,#314dff,#3c4aff,#4847ff,#5444ff,#6040ff,#6b3dff,#783aff,#8437ff,#9034ff,#9c31ff,#a92eff,#b52aff,#c227ff,#ce24ff,#db21ff,#e81dff,#f51aff,#ff16fc,#ff12ef,#ff0ee4,#ff0ada,#ff07d0,#ff04c8,#ff01bf,#ff00b8,#ff00b1,#ff00aa,#ff00a4,#ff009e,#ff0099,#ff0094,#ff008f,#ff008b,#ff0086,#ff0082,#ff007e,#ff007b,#ff0077,#ff0074,#ff0071,#ff006d,#ff006b,#ff0068,#ff0065,#ff0063,#ff0060,#ff005e,#ff005c,#ff0059,#ff0057,#ff0055,#ff0053,#ff0051,#ff0050)"></div><div style="left:54.2px;top:258.0px;width:552.4px;height:2.5px;background:linear-gradient(90deg,#0084ff,#0082ff,#007fff,#007dff,#007aff,#0077ff,#0075ff,#0072ff,#006fff,#006dff,#006aff,#0067ff,#0065ff,#0062ff,#005fff,#005cff,#0059ff,#0357ff,#0e54ff,#1a51ff,#254eff,#304bff,#3b48ff,#4745ff,#5342ff,#5e3fff,#6a3cff,#7639ff,#8236ff,#8e33ff,#9a30ff,#a62dff,#b229ff,#bf26ff,#cb23ff,#d820ff,#e51cff,#f219ff,#ff16ff,#ff11f3,#ff0ee8,#ff0add,#ff07d4,#ff04cb,#ff01c2,#ff00bb,#ff00b4,#ff00ad,#ff00a7,#ff00a1,#ff009b,#ff0096,#ff0091,#ff008d,#ff0088,#ff0084,#ff0080,#ff007d,#ff0079,#ff0076,#ff0072,#ff006f,#ff006c,#ff006a,#ff0067,#ff0064,#ff0062,#ff005f,#ff005d,#ff005b,#ff0059,#ff0057,#ff0055,#ff0053,#ff0051)"></div><div style="left:55.0px;top:260.0px;width:549.9px;height:2.5px;background:linear-gradient(90deg,#0082ff,#0080ff,#007dff,#007bff,#0078ff,#0075ff,#0073ff,#0070ff,#006eff,#006bff,#0068ff,#0066ff,#0063ff,#0060ff,#005dff,#005bff,#0058ff,#0355ff,#0e52ff,#194fff,#244cff,#2f4aff,#3b47ff,#4644ff,#5141ff,#5d3eff,#683bff,#7438ff,#8035ff,#8c32ff,#982fff,#a42bff,#b028ff,#bc25ff,#c822ff,#d51fff,#e11bff,#ee18ff,#fb15ff,#ff11f7,#ff0deb,#ff0ae1,#ff06d7,#ff03ce,#ff00c5,#ff00be,#ff00b6,#ff00b0,#ff00a9,#ff00a3,#ff009e,#ff0099,#ff0094,#ff008f,#ff008b,#ff0086,#ff0082,#ff007f,#ff007b,#ff0078,#ff0074,#ff0071,#ff006e,#ff006b,#ff0069,#ff0066,#ff0063,#ff0061,#ff005f,#ff005c,#ff005a,#ff0058,#ff0056,#ff0054,#ff0052)"></div><div style="left:55.9px;top:262.0px;width:547.4px;height:2.5px;background:linear-gradient(90deg,#0080ff,#007eff,#007bff,#0078ff,#0076ff,#0073ff,#0071ff,#006eff,#006bff,#0069ff,#0066ff,#0063ff,#0061ff,#005eff,#005bff,#0058ff,#0056ff,#0653ff,#1150ff,#1c4dff,#274aff,#3247ff,#3d44ff,#4941ff,#543eff,#5f3bff,#6b38ff,#7735ff,#8332ff,#8e2fff,#9a2cff,#a629ff,#b326ff,#bf23ff,#cb1fff,#d81cff,#e419ff,#f116ff,#fe12ff,#ff0ef4,#ff0be9,#ff07de,#ff04d5,#ff01cc,#ff00c4,#ff00bc,#ff00b5,#ff00ae,#ff00a8,#ff00a2,#ff009d,#ff0097,#ff0093,#ff008e,#ff008a,#ff0085,#ff0082,#ff007e,#ff007a,#ff0077,#ff0074,#ff0070,#ff006e,#ff006b,#ff0068,#ff0065,#ff0063,#ff0060,#ff005e,#ff005c,#ff005a,#ff0058,#ff0056,#ff0054)"></div><div style="left:56.7px;top:264.0px;width:544.9px;height:2.5px;background:linear-gradient(90deg,#007eff,#007cff,#0079ff,#0076ff,#0074ff,#0071ff,#006fff,#006cff,#006aff,#0067ff,#0064ff,#0062ff,#005fff,#005cff,#005aff,#0057ff,#0054ff,#0651ff,#104eff,#1b4cff,#2649ff,#3146ff,#3c43ff,#4740ff,#533dff,#5e3aff,#6a37ff,#7534ff,#8131ff,#8c2eff,#982bff,#a428ff,#b025ff,#bc22ff,#c81fff,#d51bff,#e118ff,#ed15ff,#fa12ff,#ff0ef8,#ff0aec,#ff07e2,#ff04d8,#ff01cf,#ff00c7,#ff00bf,#ff00b8,#ff00b1,#ff00ab,#ff00a5,#ff009f,#ff009a,#ff0095,#ff0090,#ff008c,#ff0088,#ff0084,#ff0080,#ff007c,#ff0079,#ff0075,#ff0072,#ff006f,#ff006c,#ff006a,#ff0067,#ff0065,#ff0062,#ff0060,#ff005e,#ff005b,#ff0059,#ff0057,#ff0055)"></div><div style="left:57.5px;top:266.0px;width:542.4px;height:2.5px;background:linear-gradient(90deg,#007cff,#007aff,#0077ff,#0075ff,#0072ff,#0070ff,#006dff,#006aff,#0068ff,#0065ff,#0063ff,#0060ff,#005dff,#005bff,#0058ff,#0055ff,#0052ff,#0650ff,#104dff,#1b4aff,#2647ff,#3145ff,#3b42ff,#473fff,#523cff,#5d39ff,#6836ff,#7333ff,#7f30ff,#8a2dff,#962aff,#a227ff,#ae24ff,#b921ff,#c51eff,#d21bff,#de17ff,#ea14ff,#f611ff,#ff0dfb,#ff0af0,#ff06e5,#ff03db,#ff00d2,#ff00ca,#ff00c2,#ff00ba,#ff00b4,#ff00ad,#ff00a7,#ff00a2,#ff009c,#ff0097,#ff0092,#ff008e,#ff008a,#ff0086,#ff0082,#ff007e,#ff007b,#ff0077,#ff0074,#ff0071,#ff006e,#ff006b,#ff0069,#ff0066,#ff0064,#ff0061,#ff005f,#ff005d,#ff005b,#ff0059,#ff0057)"></div><div style="left:58.4px;top:268.0px;width:539.8px;height:2.5px;background:linear-gradient(90deg,#007aff,#0078ff,#0075ff,#0073ff,#0070ff,#006eff,#006bff,#0068ff,#0066ff,#0063ff,#0061ff,#005eff,#005bff,#0059ff,#0056ff,#0053ff,#0050ff,#084eff,#134bff,#1d48ff,#2845ff,#3342ff,#3e3fff,#493dff,#543aff,#5f37ff,#6b34ff,#7631ff,#822eff,#8d2bff,#9928ff,#a425ff,#b022ff,#bc1eff,#c81bff,#d418ff,#e115ff,#ed12ff,#f90fff,#ff0bf8,#ff07ed,#ff04e3,#ff01d9,#ff00d0,#ff00c8,#ff00c0,#ff00b9,#ff00b2,#ff00ac,#ff00a6,#ff00a0,#ff009b,#ff0096,#ff0091,#ff008d,#ff0089,#ff0085,#ff0081,#ff007d,#ff007a,#ff0077,#ff0073,#ff0070,#ff006e,#ff006b,#ff0068,#ff0066,#ff0063,#ff0061,#ff005f,#ff005c,#ff005a,#ff0058)"></div><div style="left:59.2px;top:270.0px;width:537.3px;height:2.5px;background:linear-gradient(90deg,#0078ff,#0076ff,#0073ff,#0071ff,#006eff,#006cff,#0069ff,#0067ff,#0064ff,#0061ff,#005fff,#005cff,#005aff,#0057ff,#0054ff,#0052ff,#004fff,#084cff,#1249ff,#1d47ff,#2844ff,#3241ff,#3d3eff,#483bff,#5338ff,#5e36ff,#6933ff,#7430ff,#802dff,#8b2aff,#9727ff,#a224ff,#ae21ff,#ba1eff,#c51aff,#d117ff,#dd14ff,#e911ff,#f60eff,#ff0bfc,#ff07f1,#ff04e6,#ff01dc,#ff00d3,#ff00cb,#ff00c3,#ff00bc,#ff00b5,#ff00ae,#ff00a8,#ff00a3,#ff009d,#ff0098,#ff0094,#ff008f,#ff008b,#ff0087,#ff0083,#ff007f,#ff007c,#ff0078,#ff0075,#ff0072,#ff006f,#ff006c,#ff006a,#ff0067,#ff0065,#ff0062,#ff0060,#ff005e,#ff005c,#ff005a)"></div><div style="left:60.1px;top:272.0px;width:534.8px;height:2.5px;background:linear-gradient(90deg,#0076ff,#0074ff,#0071ff,#006fff,#006cff,#006aff,#0067ff,#0065ff,#0062ff,#0060ff,#005dff,#005bff,#0058ff,#0055ff,#0053ff,#0050ff,#004dff,#084bff,#1248ff,#1d45ff,#2742ff,#3240ff,#3c3dff,#473aff,#5237ff,#5d34ff,#6831ff,#732fff,#7e2cff,#8929ff,#9526ff,#a023ff,#ab20ff,#b71dff,#c31aff,#ce17ff,#da13ff,#e610ff,#f20dff,#fe0aff,#ff07f4,#ff03e9,#ff00df,#ff00d6,#ff00ce,#ff00c6,#ff00be,#ff00b7,#ff00b1,#ff00ab,#ff00a5,#ff00a0,#ff009b,#ff0096,#ff0091,#ff008d,#ff0089,#ff0085,#ff0081,#ff007e,#ff007a,#ff0077,#ff0074,#ff0071,#ff006e,#ff006c,#ff0069,#ff0066,#ff0064,#ff0062,#ff005f,#ff005d,#ff005b)"></div><div style="left:61.0px;top:274.0px;width:532.2px;height:2.5px;background:linear-gradient(90deg,#0074ff,#0072ff,#006fff,#006dff,#006aff,#0068ff,#0065ff,#0063ff,#0060ff,#005eff,#005bff,#0059ff,#0056ff,#0053ff,#0051ff,#004eff,#004bff,#0a49ff,#1546ff,#1f43ff,#2a40ff,#343eff,#3f3bff,#4a38ff,#5435ff,#5f32ff,#6a2fff,#762cff,#8129ff,#8c27ff,#9724ff,#a321ff,#ae1eff,#ba1aff,#c517ff,#d114ff,#dd11ff,#e90eff,#f50bff,#ff08fd,#ff04f1,#ff01e7,#ff00dd,#ff00d4,#ff00cc,#ff00c4,#ff00bd,#ff00b6,#ff00af,#ff00a9,#ff00a4,#ff009e,#ff0099,#ff0095,#ff0090,#ff008c,#ff0088,#ff0084,#ff0080,#ff007d,#ff007a,#ff0076,#ff0073,#ff0070,#ff006e,#ff006b,#ff0068,#ff0066,#ff0063,#ff0061,#ff005f,#ff005d)"></div><div style="left:61.9px;top:276.0px;width:529.7px;height:2.5px;background:linear-gradient(90deg,#0072ff,#0070ff,#006eff,#006bff,#0069ff,#0066ff,#0064ff,#0061ff,#005fff,#005cff,#005aff,#0057ff,#0054ff,#0052ff,#004fff,#004dff,#004aff,#0a47ff,#1445ff,#1f42ff,#293fff,#333cff,#3e3aff,#4937ff,#5334ff,#5e31ff,#692eff,#742bff,#7f28ff,#8a26ff,#9523ff,#a020ff,#ac1dff,#b71aff,#c317ff,#ce14ff,#da10ff,#e60dff,#f20aff,#fe07ff,#ff04f5,#ff01ea,#ff00e0,#ff00d7,#ff00cf,#ff00c7,#ff00bf,#ff00b9,#ff00b2,#ff00ac,#ff00a6,#ff00a1,#ff009c,#ff0097,#ff0092,#ff008e,#ff008a,#ff0086,#ff0082,#ff007f,#ff007b,#ff0078,#ff0075,#ff0072,#ff006f,#ff006d,#ff006a,#ff0067,#ff0065,#ff0063,#ff0060,#ff005e)"></div><div style="left:62.8px;top:278.0px;width:527.1px;height:2.5px;background:linear-gradient(90deg,#0071ff,#006eff,#006cff,#0069ff,#0067ff,#0065ff,#0062ff,#0060ff,#005dff,#005bff,#0058ff,#0056ff,#0053ff,#0050ff,#004eff,#004bff,#0049ff,#0a46ff,#1443ff,#1e41ff,#293eff,#333bff,#3d38ff,#4836ff,#5233ff,#5d30ff,#682dff,#722aff,#7d27ff,#8825ff,#9322ff,#9e1fff,#a91cff,#b519ff,#c016ff,#cb13ff,#d710ff,#e30dff,#ee0aff,#fa07ff,#ff03f8,#ff00ee,#ff00e4,#ff00da,#ff00d2,#ff00ca,#ff00c2,#ff00bb,#ff00b5,#ff00af,#ff00a9,#ff00a3,#ff009e,#ff0099,#ff0095,#ff0090,#ff008c,#ff0088,#ff0084,#ff0081,#ff007d,#ff007a,#ff0077,#ff0074,#ff0071,#ff006e,#ff006c,#ff0069,#ff0067,#ff0064,#ff0062,#ff0060)"></div><div style="left:63.6px;top:280.0px;width:524.6px;height:2.5px;background:linear-gradient(90deg,#006fff,#006cff,#006aff,#0068ff,#0065ff,#0063ff,#0060ff,#005eff,#005bff,#0059ff,#0056ff,#0054ff,#0051ff,#004eff,#004cff,#0049ff,#0247ff,#0c44ff,#1641ff,#213fff,#2b3cff,#3539ff,#4036ff,#4a34ff,#5531ff,#5f2eff,#6a2bff,#7528ff,#8025ff,#8b22ff,#9620ff,#a11dff,#ac1aff,#b717ff,#c314ff,#ce11ff,#da0eff,#e50bff,#f107ff,#fd04ff,#ff01f6,#ff00eb,#ff00e1,#ff00d8,#ff00d0,#ff00c8,#ff00c0,#ff00b9,#ff00b3,#ff00ad,#ff00a7,#ff00a2,#ff009d,#ff0098,#ff0093,#ff008f,#ff008b,#ff0087,#ff0083,#ff0080,#ff007c,#ff0079,#ff0076,#ff0073,#ff0070,#ff006e,#ff006b,#ff0068,#ff0066,#ff0064,#ff0061)"></div><div style="left:64.5px;top:282.0px;width:522.0px;height:2.5px;background:linear-gradient(90deg,#006dff,#006bff,#0068ff,#0066ff,#0063ff,#0061ff,#005fff,#005cff,#005aff,#0057ff,#0055ff,#0052ff,#0050ff,#004dff,#004aff,#0048ff,#0245ff,#0c43ff,#1640ff,#203dff,#2a3bff,#3538ff,#3f35ff,#4932ff,#5430ff,#5e2dff,#692aff,#7327ff,#7e24ff,#8922ff,#941fff,#9f1cff,#aa19ff,#b516ff,#c013ff,#cb10ff,#d70dff,#e20aff,#ee07ff,#f904ff,#ff01f9,#ff00ee,#ff00e4,#ff00db,#ff00d3,#ff00cb,#ff00c3,#ff00bc,#ff00b6,#ff00b0,#ff00aa,#ff00a4,#ff009f,#ff009a,#ff0096,#ff0091,#ff008d,#ff0089,#ff0085,#ff0082,#ff007e,#ff007b,#ff0078,#ff0075,#ff0072,#ff006f,#ff006d,#ff006a,#ff0068,#ff0065,#ff0063)"></div><div style="left:65.5px;top:284.0px;width:519.4px;height:2.5px;background:linear-gradient(90deg,#006bff,#0069ff,#0067ff,#0064ff,#0062ff,#005fff,#005dff,#005bff,#0058ff,#0056ff,#0053ff,#0051ff,#004eff,#004cff,#0049ff,#0046ff,#0244ff,#0c41ff,#163fff,#203cff,#2a39ff,#3437ff,#3e34ff,#4831ff,#532fff,#5d2cff,#6729ff,#7226ff,#7d23ff,#8721ff,#921eff,#9d1bff,#a818ff,#b315ff,#be12ff,#c90fff,#d40cff,#df09ff,#eb06ff,#f603ff,#ff00fd,#ff00f2,#ff00e8,#ff00de,#ff00d6,#ff00ce,#ff00c6,#ff00bf,#ff00b8,#ff00b2,#ff00ac,#ff00a7,#ff00a2,#ff009d,#ff0098,#ff0093,#ff008f,#ff008b,#ff0087,#ff0084,#ff0080,#ff007d,#ff007a,#ff0077,#ff0074,#ff0071,#ff006e,#ff006c,#ff0069,#ff0067,#ff0065)"></div><div style="left:66.4px;top:286.0px;width:516.8px;height:2.5px;background:linear-gradient(90deg,#006aff,#0067ff,#0065ff,#0062ff,#0060ff,#005eff,#005bff,#0059ff,#0056ff,#0054ff,#0051ff,#004fff,#004cff,#004aff,#0047ff,#0045ff,#0542ff,#0e3fff,#183dff,#223aff,#2c37ff,#3635ff,#4132ff,#4b2fff,#552dff,#602aff,#6a27ff,#7524ff,#7f21ff,#8a1fff,#951cff,#9f19ff,#aa16ff,#b513ff,#c010ff,#cc0dff,#d70aff,#e207ff,#ee04ff,#f901ff,#ff00fa,#ff00ef,#ff00e5,#ff00dc,#ff00d3,#ff00cb,#ff00c4,#ff00bd,#ff00b7,#ff00b0,#ff00ab,#ff00a5,#ff00a0,#ff009b,#ff0097,#ff0092,#ff008e,#ff008a,#ff0086,#ff0083,#ff007f,#ff007c,#ff0079,#ff0076,#ff0073,#ff0070,#ff006e,#ff006b,#ff0069,#ff0066)"></div><div style="left:67.3px;top:288.0px;width:514.2px;height:2.5px;background:linear-gradient(90deg,#0068ff,#0066ff,#0063ff,#0061ff,#005eff,#005cff,#005aff,#0057ff,#0055ff,#0052ff,#0050ff,#004dff,#004bff,#0048ff,#0046ff,#0043ff,#0541ff,#0e3eff,#183cff,#2239ff,#2c36ff,#3634ff,#4031ff,#4a2eff,#542cff,#5e29ff,#6926ff,#7323ff,#7e21ff,#881eff,#931bff,#9d18ff,#a815ff,#b312ff,#be0fff,#c90cff,#d40aff,#df07ff,#ea04ff,#f601ff,#ff00fd,#ff00f2,#ff00e8,#ff00df,#ff00d6,#ff00ce,#ff00c7,#ff00c0,#ff00b9,#ff00b3,#ff00ad,#ff00a8,#ff00a2,#ff009e,#ff0099,#ff0094,#ff0090,#ff008c,#ff0088,#ff0085,#ff0081,#ff007e,#ff007b,#ff0078,#ff0075,#ff0072,#ff006f,#ff006d,#ff006a,#ff0068)"></div><div style="left:68.2px;top:290.0px;width:511.6px;height:2.5px;background:linear-gradient(90deg,#0066ff,#0064ff,#0062ff,#005fff,#005dff,#005aff,#0058ff,#0056ff,#0053ff,#0051ff,#004eff,#004cff,#004aff,#0047ff,#0045ff,#0042ff,#053fff,#0e3dff,#183aff,#2238ff,#2b35ff,#3533ff,#3f30ff,#492dff,#532bff,#5d28ff,#6725ff,#7222ff,#7c20ff,#861dff,#911aff,#9b17ff,#a614ff,#b112ff,#bb0fff,#c60cff,#d109ff,#dc06ff,#e703ff,#f200ff,#fd00ff,#ff00f6,#ff00ec,#ff00e2,#ff00d9,#ff00d1,#ff00ca,#ff00c3,#ff00bc,#ff00b6,#ff00b0,#ff00aa,#ff00a5,#ff00a0,#ff009b,#ff0097,#ff0092,#ff008e,#ff008a,#ff0087,#ff0083,#ff0080,#ff007d,#ff007a,#ff0077,#ff0074,#ff0071,#ff006e,#ff006c,#ff0069)"></div><div style="left:69.1px;top:292.0px;width:509.0px;height:2.5px;background:linear-gradient(90deg,#0065ff,#0062ff,#0060ff,#005eff,#005bff,#0059ff,#0056ff,#0054ff,#0052ff,#004fff,#004dff,#004aff,#0048ff,#0045ff,#0043ff,#0040ff,#073eff,#103bff,#1a38ff,#2436ff,#2e33ff,#3831ff,#412eff,#4c2bff,#5629ff,#6026ff,#6a23ff,#7420ff,#7f1eff,#891bff,#9318ff,#9e15ff,#a912ff,#b310ff,#be0dff,#c90aff,#d407ff,#df04ff,#ea01ff,#f500ff,#ff00fe,#ff00f3,#ff00e9,#ff00e0,#ff00d7,#ff00cf,#ff00c8,#ff00c1,#ff00ba,#ff00b4,#ff00ae,#ff00a9,#ff00a3,#ff009e,#ff009a,#ff0095,#ff0091,#ff008d,#ff0089,#ff0086,#ff0082,#ff007f,#ff007c,#ff0079,#ff0076,#ff0073,#ff0070,#ff006e,#ff006b)"></div><div style="left:70.1px;top:294.0px;width:506.4px;height:2.5px;background:linear-gradient(90deg,#0063ff,#0061ff,#005eff,#005cff,#005aff,#0057ff,#0055ff,#0053ff,#0050ff,#004eff,#004bff,#0049ff,#0046ff,#0044ff,#0041ff,#003fff,#073cff,#103aff,#1a37ff,#2335ff,#2d32ff,#3730ff,#412dff,#4b2aff,#5528ff,#5f25ff,#6922ff,#7320ff,#7d1dff,#871aff,#9217ff,#9c15ff,#a612ff,#b10fff,#bc0cff,#c609ff,#d106ff,#dc03ff,#e700ff,#f200ff,#fd00ff,#ff00f6,#ff00ec,#ff00e3,#ff00da,#ff00d2,#ff00ca,#ff00c3,#ff00bd,#ff00b7,#ff00b1,#ff00ab,#ff00a6,#ff00a1,#ff009c,#ff0098,#ff0093,#ff008f,#ff008b,#ff0088,#ff0084,#ff0081,#ff007e,#ff007a,#ff0077,#ff0075,#ff0072,#ff006f,#ff006d)"></div><div style="left:71.0px;top:296.0px;width:503.8px;height:2.5px;background:linear-gradient(90deg,#0061ff,#005fff,#005dff,#005aff,#0058ff,#0056ff,#0053ff,#0051ff,#004fff,#004cff,#004aff,#0047ff,#0045ff,#0043ff,#0040ff,#003eff,#073bff,#1039ff,#1a36ff,#2334ff,#2d31ff,#362eff,#402cff,#4a29ff,#5427ff,#5d24ff,#6721ff,#711fff,#7b1cff,#8619ff,#9017ff,#9a14ff,#a411ff,#af0eff,#b90bff,#c409ff,#ce06ff,#d903ff,#e400ff,#ef00ff,#fa00ff,#ff00fa,#ff00ef,#ff00e6,#ff00dd,#ff00d5,#ff00cd,#ff00c6,#ff00bf,#ff00b9,#ff00b3,#ff00ae,#ff00a8,#ff00a3,#ff009e,#ff009a,#ff0095,#ff0091,#ff008d,#ff008a,#ff0086,#ff0083,#ff007f,#ff007c,#ff0079,#ff0076,#ff0074,#ff0071,#ff006e)"></div><div style="left:72.0px;top:298.0px;width:501.2px;height:2.5px;background:linear-gradient(90deg,#0060ff,#005dff,#005bff,#0059ff,#0056ff,#0054ff,#0052ff,#004fff,#004dff,#004bff,#0048ff,#0046ff,#0043ff,#0041ff,#003eff,#003cff,#0939ff,#1237ff,#1c34ff,#2532ff,#2f2fff,#392dff,#422aff,#4c27ff,#5625ff,#6022ff,#6a1fff,#741dff,#7e1aff,#8817ff,#9215ff,#9d12ff,#a70fff,#b20cff,#bc09ff,#c707ff,#d104ff,#dc01ff,#e700ff,#f200ff,#fd00ff,#ff00f7,#ff00ed,#ff00e3,#ff00db,#ff00d3,#ff00cb,#ff00c4,#ff00be,#ff00b7,#ff00b1,#ff00ac,#ff00a7,#ff00a2,#ff009d,#ff0098,#ff0094,#ff0090,#ff008c,#ff0089,#ff0085,#ff0082,#ff007e,#ff007b,#ff0078,#ff0075,#ff0073,#ff0070)"></div><div style="left:72.9px;top:300.0px;width:498.6px;height:2.5px;background:linear-gradient(90deg,#005eff,#005cff,#005aff,#0057ff,#0055ff,#0053ff,#0050ff,#004eff,#004cff,#0049ff,#0047ff,#0044ff,#0042ff,#0040ff,#003dff,#003bff,#0938ff,#1236ff,#1c33ff,#2531ff,#2f2eff,#382cff,#4229ff,#4b26ff,#5524ff,#5f21ff,#691fff,#721cff,#7c19ff,#8617ff,#9114ff,#9b11ff,#a50eff,#af0cff,#ba09ff,#c406ff,#cf03ff,#d900ff,#e400ff,#ee00ff,#f900ff,#ff00fa,#ff00f0,#ff00e7,#ff00de,#ff00d6,#ff00ce,#ff00c7,#ff00c0,#ff00ba,#ff00b4,#ff00ae,#ff00a9,#ff00a4,#ff009f,#ff009b,#ff0096,#ff0092,#ff008e,#ff008b,#ff0087,#ff0084,#ff0080,#ff007d,#ff007a,#ff0077,#ff0075,#ff0072)"></div><div style="left:73.9px;top:302.0px;width:495.9px;height:2.5px;background:linear-gradient(90deg,#005dff,#005aff,#0058ff,#0056ff,#0054ff,#0051ff,#004fff,#004dff,#004aff,#0048ff,#0046ff,#0043ff,#0041ff,#003eff,#003cff,#003aff,#0937ff,#1235ff,#1b32ff,#2530ff,#2e2dff,#372bff,#4128ff,#4a26ff,#5423ff,#5e20ff,#671eff,#711bff,#7b18ff,#8516ff,#8f13ff,#9910ff,#a30eff,#ad0bff,#b708ff,#c106ff,#cc03ff,#d600ff,#e100ff,#eb00ff,#f600ff,#ff00fd,#ff00f3,#ff00ea,#ff00e1,#ff00d9,#ff00d1,#ff00ca,#ff00c3,#ff00bd,#ff00b7,#ff00b1,#ff00ab,#ff00a6,#ff00a2,#ff009d,#ff0099,#ff0094,#ff0090,#ff008d,#ff0089,#ff0086,#ff0082,#ff007f,#ff007c,#ff0079,#ff0076,#ff0074)"></div><div style="left:74.8px;top:304.0px;width:493.3px;height:2.5px;background:linear-gradient(90deg,#005bff,#0059ff,#0057ff,#0054ff,#0052ff,#0050ff,#004dff,#004bff,#0049ff,#0046ff,#0044ff,#0042ff,#003fff,#003dff,#003aff,#0238ff,#0b35ff,#1433ff,#1e30ff,#272eff,#302bff,#3a29ff,#4326ff,#4d24ff,#5621ff,#601fff,#6a1cff,#7419ff,#7d17ff,#8714ff,#9111ff,#9b0fff,#a60cff,#b009ff,#ba06ff,#c404ff,#cf01ff,#d900ff,#e400ff,#ee00ff,#f900ff,#ff00fa,#ff00f0,#ff00e7,#ff00de,#ff00d6,#ff00cf,#ff00c8,#ff00c1,#ff00bb,#ff00b5,#ff00af,#ff00aa,#ff00a5,#ff00a0,#ff009b,#ff0097,#ff0093,#ff008f,#ff008b,#ff0088,#ff0084,#ff0081,#ff007e,#ff007b,#ff0078,#ff0075)"></div><div style="left:75.8px;top:306.0px;width:490.7px;height:2.5px;background:linear-gradient(90deg,#0059ff,#0057ff,#0055ff,#0053ff,#0051ff,#004eff,#004cff,#004aff,#0047ff,#0045ff,#0043ff,#0040ff,#003eff,#003cff,#0039ff,#0237ff,#0b34ff,#1432ff,#1d2fff,#272dff,#302aff,#3928ff,#4325ff,#4c23ff,#5520ff,#5f1eff,#691bff,#7218ff,#7c16ff,#8613ff,#9011ff,#990eff,#a30bff,#ae09ff,#b806ff,#c203ff,#cc00ff,#d600ff,#e100ff,#eb00ff,#f600ff,#ff00fe,#ff00f4,#ff00ea,#ff00e1,#ff00d9,#ff00d2,#ff00ca,#ff00c4,#ff00bd,#ff00b7,#ff00b2,#ff00ac,#ff00a7,#ff00a2,#ff009e,#ff0099,#ff0095,#ff0091,#ff008d,#ff008a,#ff0086,#ff0083,#ff0080,#ff007d,#ff007a,#ff0077)"></div><div style="left:76.8px;top:308.0px;width:488.0px;height:2.5px;background:linear-gradient(90deg,#0058ff,#0056ff,#0054ff,#0051ff,#004fff,#004dff,#004bff,#0048ff,#0046ff,#0044ff,#0041ff,#003fff,#003dff,#003aff,#0038ff,#0236ff,#0b33ff,#1431ff,#1d2eff,#262cff,#2f29ff,#3927ff,#4224ff,#4b22ff,#541fff,#5e1dff,#671aff,#7118ff,#7a15ff,#8413ff,#8e10ff,#980dff,#a10bff,#ab08ff,#b505ff,#bf03ff,#c900ff,#d400ff,#de00ff,#e800ff,#f200ff,#fd00ff,#ff00f7,#ff00ed,#ff00e5,#ff00dc,#ff00d4,#ff00cd,#ff00c6,#ff00c0,#ff00ba,#ff00b4,#ff00af,#ff00aa,#ff00a5,#ff00a0,#ff009c,#ff0097,#ff0093,#ff0090,#ff008c,#ff0088,#ff0085,#ff0082,#ff007f,#ff007c,#ff0079)"></div><div style="left:77.8px;top:310.0px;width:485.4px;height:2.5px;background:linear-gradient(90deg,#0057ff,#0054ff,#0052ff,#0050ff,#004eff,#004bff,#0049ff,#0047ff,#0044ff,#0042ff,#0040ff,#003dff,#003bff,#0039ff,#0036ff,#0434ff,#0d32ff,#162fff,#1f2dff,#282aff,#3228ff,#3b25ff,#4423ff,#4d20ff,#571eff,#601bff,#6a19ff,#7316ff,#7d13ff,#8711ff,#900eff,#9a0bff,#a409ff,#ae06ff,#b803ff,#c201ff,#cc00ff,#d700ff,#e100ff,#eb00ff,#f600ff,#ff00fe,#ff00f4,#ff00eb,#ff00e2,#ff00da,#ff00d2,#ff00cb,#ff00c4,#ff00be,#ff00b8,#ff00b2,#ff00ad,#ff00a8,#ff00a3,#ff009e,#ff009a,#ff0096,#ff0092,#ff008e,#ff008b,#ff0087,#ff0084,#ff0081,#ff007e,#ff007b)"></div><div style="left:78.7px;top:312.0px;width:482.7px;height:2.5px;background:linear-gradient(90deg,#0055ff,#0053ff,#0051ff,#004eff,#004cff,#004aff,#0048ff,#0045ff,#0043ff,#0041ff,#003fff,#003cff,#003aff,#0038ff,#0035ff,#0433ff,#0d30ff,#162eff,#1f2cff,#2829ff,#3127ff,#3a24ff,#4322ff,#4d1fff,#561dff,#5f1aff,#6918ff,#7215ff,#7c13ff,#8510ff,#8f0dff,#980bff,#a208ff,#ac06ff,#b603ff,#c000ff,#ca00ff,#d400ff,#de00ff,#e800ff,#f200ff,#fd00ff,#ff00f7,#ff00ee,#ff00e5,#ff00dd,#ff00d5,#ff00ce,#ff00c7,#ff00c1,#ff00bb,#ff00b5,#ff00af,#ff00aa,#ff00a5,#ff00a1,#ff009c,#ff0098,#ff0094,#ff0090,#ff008d,#ff0089,#ff0086,#ff0083,#ff007f,#ff007d)"></div><div style="left:79.7px;top:314.0px;width:480.1px;height:2.5px;background:linear-gradient(90deg,#0054ff,#0051ff,#004fff,#004dff,#004bff,#0049ff,#0046ff,#0044ff,#0042ff,#0040ff,#003dff,#003bff,#0039ff,#0036ff,#0034ff,#0532ff,#0d2fff,#162dff,#1f2bff,#2828ff,#3126ff,#3a23ff,#4321ff,#4c1eff,#551cff,#5e1aff,#6717ff,#7114ff,#7a12ff,#830fff,#8d0dff,#960aff,#a008ff,#aa05ff,#b302ff,#bd00ff,#c700ff,#d100ff,#db00ff,#e500ff,#ef00ff,#f900ff,#ff00fb,#ff00f1,#ff00e8,#ff00e0,#ff00d8,#ff00d1,#ff00ca,#ff00c3,#ff00bd,#ff00b7,#ff00b2,#ff00ad,#ff00a8,#ff00a3,#ff009f,#ff009a,#ff0096,#ff0092,#ff008f,#ff008b,#ff0088,#ff0084,#ff0081,#ff007e)"></div><div style="left:80.7px;top:316.0px;width:477.4px;height:2.5px;background:linear-gradient(90deg,#0052ff,#0050ff,#004eff,#004cff,#0049ff,#0047ff,#0045ff,#0043ff,#0040ff,#003eff,#003cff,#003aff,#0037ff,#0035ff,#0033ff,#0730ff,#0f2eff,#182bff,#2129ff,#2a27ff,#3324ff,#3c22ff,#451fff,#4e1dff,#571aff,#6118ff,#6a15ff,#7313ff,#7d10ff,#860eff,#900bff,#9908ff,#a306ff,#ad03ff,#b600ff,#c000ff,#ca00ff,#d400ff,#de00ff,#e800ff,#f200ff,#fc00ff,#ff00f7,#ff00ee,#ff00e5,#ff00dd,#ff00d6,#ff00ce,#ff00c8,#ff00c1,#ff00bb,#ff00b5,#ff00b0,#ff00ab,#ff00a6,#ff00a1,#ff009d,#ff0099,#ff0095,#ff0091,#ff008d,#ff008a,#ff0087,#ff0083,#ff0080)"></div><div style="left:81.7px;top:318.0px;width:474.8px;height:2.5px;background:linear-gradient(90deg,#0051ff,#004fff,#004cff,#004aff,#0048ff,#0046ff,#0044ff,#0041ff,#003fff,#003dff,#003bff,#0038ff,#0036ff,#0034ff,#0031ff,#072fff,#0f2dff,#182aff,#2128ff,#2a26ff,#3223ff,#3b21ff,#441eff,#4d1cff,#561aff,#5f17ff,#6915ff,#7212ff,#7b10ff,#840dff,#8e0aff,#9708ff,#a105ff,#aa03ff,#b400ff,#be00ff,#c700ff,#d100ff,#db00ff,#e500ff,#ef00ff,#f900ff,#ff00fb,#ff00f1,#ff00e8,#ff00e0,#ff00d8,#ff00d1,#ff00ca,#ff00c4,#ff00be,#ff00b8,#ff00b3,#ff00ad,#ff00a8,#ff00a4,#ff009f,#ff009b,#ff0097,#ff0093,#ff008f,#ff008c,#ff0089,#ff0085,#ff0082)"></div><div style="left:82.7px;top:320.0px;width:472.1px;height:2.5px;background:linear-gradient(90deg,#004fff,#004dff,#004bff,#0049ff,#0047ff,#0044ff,#0042ff,#0040ff,#003eff,#003bff,#0039ff,#0037ff,#0035ff,#0032ff,#0030ff,#092eff,#112bff,#1a29ff,#2326ff,#2c24ff,#3522ff,#3e1fff,#471dff,#501aff,#5918ff,#6215ff,#6b13ff,#7410ff,#7e0eff,#870bff,#9109ff,#9a06ff,#a403ff,#ad01ff,#b700ff,#c100ff,#ca00ff,#d400ff,#de00ff,#e800ff,#f200ff,#fc00ff,#ff00f8,#ff00ee,#ff00e6,#ff00de,#ff00d6,#ff00cf,#ff00c8,#ff00c2,#ff00bc,#ff00b6,#ff00b1,#ff00ac,#ff00a7,#ff00a2,#ff009e,#ff009a,#ff0096,#ff0092,#ff008e,#ff008b,#ff0087,#ff0084)"></div><div style="left:83.7px;top:322.0px;width:469.4px;height:2.5px;background:linear-gradient(90deg,#004eff,#004cff,#004aff,#0048ff,#0045ff,#0043ff,#0041ff,#003fff,#003dff,#003aff,#0038ff,#0036ff,#0034ff,#0031ff,#002fff,#092dff,#112aff,#1a28ff,#2326ff,#2b23ff,#3421ff,#3d1eff,#461cff,#4f1aff,#5817ff,#6115ff,#6a12ff,#7310ff,#7c0dff,#850bff,#8f08ff,#9806ff,#a203ff,#ab00ff,#b500ff,#be00ff,#c800ff,#d200ff,#db00ff,#e500ff,#ef00ff,#f900ff,#ff00fb,#ff00f2,#ff00e9,#ff00e1,#ff00d9,#ff00d2,#ff00cb,#ff00c4,#ff00be,#ff00b9,#ff00b3,#ff00ae,#ff00a9,#ff00a4,#ff00a0,#ff009c,#ff0098,#ff0094,#ff0090,#ff008d,#ff0089,#ff0086)"></div><div style="left:84.7px;top:324.0px;width:466.7px;height:2.5px;background:linear-gradient(90deg,#004dff,#004bff,#0048ff,#0046ff,#0044ff,#0042ff,#0040ff,#003eff,#003bff,#0039ff,#0037ff,#0035ff,#0032ff,#0030ff,#002eff,#092cff,#1129ff,#1a27ff,#2225ff,#2b22ff,#3420ff,#3c1eff,#451bff,#4e19ff,#5716ff,#6014ff,#6911ff,#720fff,#7b0dff,#840aff,#8d08ff,#9605ff,#a002ff,#a900ff,#b200ff,#bc00ff,#c500ff,#cf00ff,#d900ff,#e200ff,#ec00ff,#f600ff,#ff00fe,#ff00f5,#ff00ec,#ff00e4,#ff00dc,#ff00d4,#ff00ce,#ff00c7,#ff00c1,#ff00bb,#ff00b6,#ff00b0,#ff00ab,#ff00a7,#ff00a2,#ff009e,#ff009a,#ff0096,#ff0092,#ff008f,#ff008b,#ff0088)"></div><div style="left:85.7px;top:326.0px;width:464.1px;height:2.5px;background:linear-gradient(90deg,#004bff,#0049ff,#0047ff,#0045ff,#0043ff,#0041ff,#003eff,#003cff,#003aff,#0038ff,#0035ff,#0033ff,#0031ff,#002fff,#022cff,#0b2aff,#1328ff,#1c25ff,#2523ff,#2d21ff,#361eff,#3f1cff,#471aff,#5017ff,#5915ff,#6212ff,#6b10ff,#740dff,#7d0bff,#8708ff,#9006ff,#9903ff,#a201ff,#ac00ff,#b500ff,#bf00ff,#c800ff,#d200ff,#dc00ff,#e500ff,#ef00ff,#f900ff,#ff00fb,#ff00f2,#ff00e9,#ff00e1,#ff00d9,#ff00d2,#ff00cb,#ff00c5,#ff00bf,#ff00b9,#ff00b4,#ff00af,#ff00aa,#ff00a5,#ff00a1,#ff009c,#ff0098,#ff0094,#ff0091,#ff008d,#ff008a)"></div><div style="left:86.7px;top:328.0px;width:461.4px;height:2.5px;background:linear-gradient(90deg,#004aff,#0048ff,#0046ff,#0044ff,#0042ff,#003fff,#003dff,#003bff,#0039ff,#0037ff,#0034ff,#0032ff,#0030ff,#002eff,#032bff,#0b29ff,#1327ff,#1c25ff,#2422ff,#2d20ff,#351eff,#3e1bff,#4719ff,#4f16ff,#5814ff,#6112ff,#6a0fff,#730dff,#7c0aff,#8508ff,#8e05ff,#9703ff,#a000ff,#aa00ff,#b300ff,#bc00ff,#c600ff,#cf00ff,#d900ff,#e200ff,#ec00ff,#f600ff,#ff00fe,#ff00f5,#ff00ec,#ff00e4,#ff00dc,#ff00d5,#ff00ce,#ff00c8,#ff00c1,#ff00bc,#ff00b6,#ff00b1,#ff00ac,#ff00a7,#ff00a3,#ff009f,#ff009a,#ff0097,#ff0093,#ff008f,#ff008c)"></div><div style="left:87.8px;top:330.0px;width:458.7px;height:2.5px;background:linear-gradient(90deg,#0049ff,#0047ff,#0045ff,#0042ff,#0040ff,#003eff,#003cff,#003aff,#0038ff,#0036ff,#0033ff,#0031ff,#002fff,#002dff,#032aff,#0b28ff,#1326ff,#1c24ff,#2421ff,#2c1fff,#351dff,#3d1aff,#4618ff,#4f16ff,#5713ff,#6011ff,#690fff,#720cff,#7a0aff,#8307ff,#8c05ff,#9502ff,#9e00ff,#a800ff,#b100ff,#ba00ff,#c300ff,#cd00ff,#d600ff,#e000ff,#e900ff,#f300ff,#fc00ff,#ff00f8,#ff00ef,#ff00e7,#ff00df,#ff00d8,#ff00d1,#ff00ca,#ff00c4,#ff00be,#ff00b9,#ff00b3,#ff00ae,#ff00aa,#ff00a5,#ff00a1,#ff009d,#ff0099,#ff0095,#ff0091,#ff008e)"></div><div style="left:88.8px;top:332.0px;width:456.0px;height:2.5px;background:linear-gradient(90deg,#0047ff,#0045ff,#0043ff,#0041ff,#003fff,#003dff,#003bff,#0039ff,#0036ff,#0034ff,#0032ff,#0030ff,#002dff,#002bff,#0529ff,#0d27ff,#1524ff,#1e22ff,#2620ff,#2f1dff,#371bff,#4019ff,#4816ff,#5114ff,#5a12ff,#620fff,#6b0dff,#740aff,#7d08ff,#8606ff,#8f03ff,#9801ff,#a100ff,#aa00ff,#b400ff,#bd00ff,#c600ff,#d000ff,#d900ff,#e300ff,#ec00ff,#f600ff,#ff00fe,#ff00f5,#ff00ec,#ff00e4,#ff00dc,#ff00d5,#ff00ce,#ff00c8,#ff00c2,#ff00bc,#ff00b7,#ff00b1,#ff00ad,#ff00a8,#ff00a3,#ff009f,#ff009b,#ff0097,#ff0093,#ff0090)"></div><div style="left:89.8px;top:334.0px;width:453.3px;height:2.5px;background:linear-gradient(90deg,#0046ff,#0044ff,#0042ff,#0040ff,#003eff,#003cff,#003aff,#0037ff,#0035ff,#0033ff,#0031ff,#002fff,#002cff,#002aff,#0528ff,#0d26ff,#1524ff,#1d21ff,#261fff,#2e1dff,#371aff,#3f18ff,#4716ff,#5013ff,#5911ff,#610fff,#6a0cff,#730aff,#7c07ff,#8405ff,#8d03ff,#9600ff,#9f00ff,#a800ff,#b100ff,#bb00ff,#c400ff,#cd00ff,#d600ff,#e000ff,#e900ff,#f300ff,#fc00ff,#ff00f8,#ff00ef,#ff00e7,#ff00df,#ff00d8,#ff00d1,#ff00cb,#ff00c5,#ff00bf,#ff00b9,#ff00b4,#ff00af,#ff00aa,#ff00a6,#ff00a1,#ff009d,#ff0099,#ff0096,#ff0092)"></div><div style="left:90.8px;top:336.0px;width:450.6px;height:2.5px;background:linear-gradient(90deg,#0045ff,#0043ff,#0041ff,#003fff,#003dff,#003bff,#0038ff,#0036ff,#0034ff,#0032ff,#0030ff,#002eff,#002cff,#0029ff,#0527ff,#0d25ff,#1523ff,#1d20ff,#251eff,#2e1cff,#361aff,#3e17ff,#4715ff,#4f13ff,#5810ff,#600eff,#690cff,#7109ff,#7a07ff,#8305ff,#8c02ff,#9400ff,#9d00ff,#a600ff,#af00ff,#b800ff,#c100ff,#cb00ff,#d400ff,#dd00ff,#e600ff,#f000ff,#f900ff,#ff00fc,#ff00f3,#ff00ea,#ff00e2,#ff00db,#ff00d4,#ff00cd,#ff00c7,#ff00c1,#ff00bc,#ff00b6,#ff00b1,#ff00ad,#ff00a8,#ff00a4,#ff009f,#ff009c,#ff0098,#ff0094)"></div><div style="left:91.9px;top:338.0px;width:447.9px;height:2.5px;background:linear-gradient(90deg,#0044ff,#0042ff,#0040ff,#003dff,#003bff,#0039ff,#0037ff,#0035ff,#0033ff,#0031ff,#002eff,#002cff,#002aff,#0028ff,#0726ff,#0f23ff,#1721ff,#1f1fff,#281dff,#301aff,#3818ff,#4116ff,#4913ff,#5211ff,#5a0fff,#630cff,#6b0aff,#7408ff,#7d05ff,#8503ff,#8e00ff,#9700ff,#a000ff,#a900ff,#b200ff,#bb00ff,#c400ff,#ce00ff,#d700ff,#e000ff,#e900ff,#f300ff,#fc00ff,#ff00f8,#ff00f0,#ff00e7,#ff00e0,#ff00d8,#ff00d1,#ff00cb,#ff00c5,#ff00bf,#ff00ba,#ff00b4,#ff00af,#ff00ab,#ff00a6,#ff00a2,#ff009e,#ff009a,#ff0096)"></div><div style="left:92.9px;top:340.0px;width:445.2px;height:2.5px;background:linear-gradient(90deg,#0042ff,#0040ff,#003eff,#003cff,#003aff,#0038ff,#0036ff,#0034ff,#0032ff,#0030ff,#002dff,#002bff,#0029ff,#0027ff,#0725ff,#0f23ff,#1720ff,#1f1eff,#271cff,#2f1aff,#3817ff,#4015ff,#4813ff,#5110ff,#590eff,#620cff,#6a09ff,#7307ff,#7b05ff,#8402ff,#8d00ff,#9500ff,#9e00ff,#a700ff,#b000ff,#b900ff,#c200ff,#cb00ff,#d400ff,#dd00ff,#e600ff,#f000ff,#f900ff,#ff00fc,#ff00f3,#ff00ea,#ff00e3,#ff00db,#ff00d4,#ff00ce,#ff00c8,#ff00c2,#ff00bc,#ff00b7,#ff00b2,#ff00ad,#ff00a9,#ff00a4,#ff00a0,#ff009c,#ff0098)"></div><div style="left:93.9px;top:342.0px;width:442.5px;height:2.5px;background:linear-gradient(90deg,#0041ff,#003fff,#003dff,#003bff,#0039ff,#0037ff,#0035ff,#0033ff,#0031ff,#002fff,#002dff,#002aff,#0028ff,#0026ff,#0724ff,#0f22ff,#1720ff,#1f1dff,#271bff,#2f19ff,#3717ff,#3f14ff,#4812ff,#5010ff,#580eff,#600bff,#6909ff,#7107ff,#7a04ff,#8202ff,#8b00ff,#9400ff,#9c00ff,#a500ff,#ae00ff,#b700ff,#bf00ff,#c800ff,#d100ff,#da00ff,#e400ff,#ed00ff,#f600ff,#ff00ff,#ff00f6,#ff00ed,#ff00e6,#ff00de,#ff00d7,#ff00d1,#ff00ca,#ff00c4,#ff00bf,#ff00b9,#ff00b4,#ff00af,#ff00ab,#ff00a6,#ff00a2,#ff009e,#ff009a)"></div><div style="left:95.0px;top:344.0px;width:439.8px;height:2.5px;background:linear-gradient(90deg,#0040ff,#003eff,#003cff,#003aff,#0038ff,#0036ff,#0034ff,#0032ff,#002fff,#002dff,#002bff,#0029ff,#0027ff,#0125ff,#0923ff,#1120ff,#191eff,#211cff,#291aff,#3117ff,#3915ff,#4213ff,#4a11ff,#520eff,#5a0cff,#630aff,#6b07ff,#7405ff,#7c03ff,#8500ff,#8e00ff,#9600ff,#9f00ff,#a800ff,#b100ff,#ba00ff,#c200ff,#cb00ff,#d500ff,#de00ff,#e700ff,#f000ff,#f900ff,#ff00fc,#ff00f3,#ff00ea,#ff00e3,#ff00db,#ff00d5,#ff00ce,#ff00c8,#ff00c2,#ff00bd,#ff00b7,#ff00b2,#ff00ae,#ff00a9,#ff00a5,#ff00a1,#ff009d)"></div><div style="left:96.0px;top:346.0px;width:437.1px;height:2.5px;background:linear-gradient(90deg,#003fff,#003dff,#003bff,#0039ff,#0037ff,#0035ff,#0033ff,#0031ff,#002eff,#002cff,#002aff,#0028ff,#0026ff,#0124ff,#0922ff,#111fff,#191dff,#211bff,#2919ff,#3117ff,#3914ff,#4112ff,#4910ff,#510eff,#5a0bff,#6209ff,#6a07ff,#7305ff,#7b02ff,#8300ff,#8c00ff,#9500ff,#9d00ff,#a600ff,#af00ff,#b700ff,#c000ff,#c900ff,#d200ff,#db00ff,#e400ff,#ed00ff,#f600ff,#ff00ff,#ff00f6,#ff00ee,#ff00e6,#ff00de,#ff00d7,#ff00d1,#ff00cb,#ff00c5,#ff00bf,#ff00ba,#ff00b5,#ff00b0,#ff00ab,#ff00a7,#ff00a3,#ff009f)"></div><div style="left:97.1px;top:348.0px;width:434.4px;height:2.5px;background:linear-gradient(90deg,#003eff,#003cff,#003aff,#0038ff,#0035ff,#0033ff,#0031ff,#002fff,#002dff,#002bff,#0029ff,#0027ff,#0025ff,#0322ff,#0b20ff,#131eff,#1b1cff,#231aff,#2b17ff,#3315ff,#3b13ff,#4311ff,#4b0eff,#540cff,#5c0aff,#6408ff,#6d05ff,#7503ff,#7e01ff,#8600ff,#8f00ff,#9700ff,#a000ff,#a900ff,#b100ff,#ba00ff,#c300ff,#cc00ff,#d500ff,#de00ff,#e700ff,#f000ff,#f900ff,#ff00fb,#ff00f3,#ff00eb,#ff00e3,#ff00dc,#ff00d5,#ff00ce,#ff00c8,#ff00c2,#ff00bd,#ff00b8,#ff00b3,#ff00ae,#ff00a9,#ff00a5,#ff00a1)"></div><div style="left:98.1px;top:350.0px;width:431.6px;height:2.5px;background:linear-gradient(90deg,#003dff,#003bff,#0038ff,#0036ff,#0034ff,#0032ff,#0030ff,#002eff,#002cff,#002aff,#0028ff,#0026ff,#0024ff,#0322ff,#0b1fff,#131dff,#1b1bff,#2319ff,#2a17ff,#3215ff,#3a12ff,#4310ff,#4b0eff,#530cff,#5b09ff,#6307ff,#6b05ff,#7402ff,#7c00ff,#8500ff,#8d00ff,#9500ff,#9e00ff,#a700ff,#af00ff,#b800ff,#c100ff,#c900ff,#d200ff,#db00ff,#e400ff,#ed00ff,#f600ff,#ff00ff,#ff00f6,#ff00ee,#ff00e6,#ff00df,#ff00d8,#ff00d1,#ff00cb,#ff00c5,#ff00bf,#ff00ba,#ff00b5,#ff00b0,#ff00ac,#ff00a7,#ff00a3)"></div><div style="left:99.1px;top:352.0px;width:428.9px;height:2.5px;background:linear-gradient(90deg,#003bff,#0039ff,#0037ff,#0035ff,#0033ff,#0031ff,#002fff,#002dff,#002bff,#0029ff,#0027ff,#0025ff,#0023ff,#0321ff,#0b1fff,#131cff,#1b1aff,#2218ff,#2a16ff,#3214ff,#3a12ff,#420fff,#4a0dff,#520bff,#5a09ff,#6207ff,#6a04ff,#7202ff,#7b00ff,#8300ff,#8b00ff,#9400ff,#9c00ff,#a500ff,#ad00ff,#b600ff,#be00ff,#c700ff,#d000ff,#d800ff,#e100ff,#ea00ff,#f300ff,#fc00ff,#ff00f9,#ff00f1,#ff00e9,#ff00e1,#ff00da,#ff00d4,#ff00ce,#ff00c8,#ff00c2,#ff00bd,#ff00b8,#ff00b3,#ff00ae,#ff00aa,#ff00a6)"></div><div style="left:100.2px;top:354.0px;width:426.2px;height:2.5px;background:linear-gradient(90deg,#003aff,#0038ff,#0036ff,#0034ff,#0032ff,#0030ff,#002eff,#002cff,#002aff,#0028ff,#0026ff,#0024ff,#0022ff,#051fff,#0d1dff,#151bff,#1d19ff,#2417ff,#2c15ff,#3412ff,#3c10ff,#440eff,#4c0cff,#540aff,#5c07ff,#6405ff,#6d03ff,#7500ff,#7d00ff,#8600ff,#8e00ff,#9600ff,#9f00ff,#a700ff,#b000ff,#b900ff,#c100ff,#ca00ff,#d300ff,#dc00ff,#e500ff,#ed00ff,#f600ff,#ff00ff,#ff00f6,#ff00ee,#ff00e6,#ff00df,#ff00d8,#ff00d1,#ff00cb,#ff00c5,#ff00c0,#ff00bb,#ff00b6,#ff00b1,#ff00ac,#ff00a8)"></div><div style="left:101.3px;top:356.0px;width:423.5px;height:2.5px;background:linear-gradient(90deg,#0039ff,#0037ff,#0035ff,#0033ff,#0031ff,#002fff,#002dff,#002bff,#0029ff,#0027ff,#0025ff,#0023ff,#0021ff,#051fff,#0d1dff,#151aff,#1c18ff,#2416ff,#2c14ff,#3412ff,#3c10ff,#430dff,#4b0bff,#5309ff,#5b07ff,#6305ff,#6b02ff,#7400ff,#7c00ff,#8400ff,#8c00ff,#9500ff,#9d00ff,#a500ff,#ae00ff,#b600ff,#bf00ff,#c800ff,#d000ff,#d900ff,#e200ff,#ea00ff,#f300ff,#fc00ff,#ff00f9,#ff00f1,#ff00e9,#ff00e2,#ff00db,#ff00d4,#ff00ce,#ff00c8,#ff00c2,#ff00bd,#ff00b8,#ff00b3,#ff00af,#ff00aa)"></div><div style="left:102.3px;top:358.0px;width:420.7px;height:2.5px;background:linear-gradient(90deg,#0038ff,#0036ff,#0034ff,#0032ff,#0030ff,#002eff,#002cff,#002aff,#0028ff,#0026ff,#0024ff,#0022ff,#0020ff,#061eff,#0d1cff,#151aff,#1c18ff,#2415ff,#2b13ff,#3311ff,#3b0fff,#430dff,#4b0bff,#5208ff,#5a06ff,#6204ff,#6a02ff,#7200ff,#7a00ff,#8300ff,#8b00ff,#9300ff,#9b00ff,#a300ff,#ac00ff,#b400ff,#bd00ff,#c500ff,#ce00ff,#d600ff,#df00ff,#e700ff,#f000ff,#f900ff,#ff00fc,#ff00f4,#ff00ec,#ff00e5,#ff00de,#ff00d7,#ff00d1,#ff00cb,#ff00c5,#ff00c0,#ff00bb,#ff00b6,#ff00b1,#ff00ad)"></div><div style="left:103.4px;top:360.0px;width:418.0px;height:2.5px;background:linear-gradient(90deg,#0037ff,#0035ff,#0033ff,#0031ff,#002fff,#002dff,#002bff,#0029ff,#0027ff,#0025ff,#0023ff,#0021ff,#001fff,#071dff,#0f1aff,#1718ff,#1e16ff,#2614ff,#2e12ff,#3510ff,#3d0eff,#450bff,#4d09ff,#5507ff,#5d05ff,#6503ff,#6d00ff,#7500ff,#7d00ff,#8500ff,#8d00ff,#9600ff,#9e00ff,#a600ff,#af00ff,#b700ff,#c000ff,#c800ff,#d100ff,#d900ff,#e200ff,#eb00ff,#f400ff,#fc00ff,#ff00f9,#ff00f1,#ff00e9,#ff00e2,#ff00db,#ff00d4,#ff00ce,#ff00c8,#ff00c3,#ff00bd,#ff00b8,#ff00b3,#ff00af)"></div><div style="left:104.5px;top:362.0px;width:415.3px;height:2.5px;background:linear-gradient(90deg,#0036ff,#0034ff,#0032ff,#0030ff,#002eff,#002cff,#002aff,#0028ff,#0026ff,#0024ff,#0022ff,#0020ff,#001eff,#081cff,#0f1aff,#1618ff,#1e15ff,#2613ff,#2d11ff,#350fff,#3d0dff,#440bff,#4c09ff,#5406ff,#5c04ff,#6402ff,#6c00ff,#7400ff,#7c00ff,#8400ff,#8c00ff,#9400ff,#9c00ff,#a400ff,#ad00ff,#b500ff,#bd00ff,#c600ff,#ce00ff,#d700ff,#df00ff,#e800ff,#f000ff,#f900ff,#ff00fc,#ff00f4,#ff00ec,#ff00e5,#ff00de,#ff00d7,#ff00d1,#ff00cb,#ff00c5,#ff00c0,#ff00bb,#ff00b6,#ff00b1)"></div><div style="left:105.5px;top:364.0px;width:412.5px;height:2.5px;background:linear-gradient(90deg,#0035ff,#0033ff,#0031ff,#002fff,#002dff,#002bff,#0029ff,#0027ff,#0025ff,#0023ff,#0021ff,#001fff,#001dff,#081bff,#0f19ff,#1617ff,#1e15ff,#2513ff,#2d11ff,#340eff,#3c0cff,#440aff,#4b08ff,#5306ff,#5b04ff,#6302ff,#6a00ff,#7200ff,#7a00ff,#8200ff,#8a00ff,#9200ff,#9a00ff,#a200ff,#ab00ff,#b300ff,#bb00ff,#c300ff,#cc00ff,#d400ff,#dc00ff,#e500ff,#ed00ff,#f600ff,#ff00ff,#ff00f7,#ff00ef,#ff00e8,#ff00e1,#ff00da,#ff00d4,#ff00ce,#ff00c8,#ff00c3,#ff00bd,#ff00b8,#ff00b4)"></div><div style="left:106.6px;top:366.0px;width:409.8px;height:2.5px;background:linear-gradient(90deg,#0034ff,#0032ff,#0030ff,#002eff,#002cff,#002aff,#0028ff,#0026ff,#0024ff,#0022ff,#0020ff,#001eff,#021cff,#091aff,#1118ff,#1816ff,#2013ff,#2711ff,#2f0fff,#370dff,#3e0bff,#4609ff,#4e07ff,#5505ff,#5d02ff,#6500ff,#6d00ff,#7500ff,#7d00ff,#8500ff,#8d00ff,#9500ff,#9d00ff,#a500ff,#ad00ff,#b600ff,#be00ff,#c600ff,#cf00ff,#d700ff,#e000ff,#e800ff,#f100ff,#f900ff,#ff00fc,#ff00f4,#ff00ec,#ff00e5,#ff00de,#ff00d7,#ff00d1,#ff00cb,#ff00c5,#ff00c0,#ff00bb,#ff00b6)"></div><div style="left:107.7px;top:368.0px;width:407.0px;height:2.5px;background:linear-gradient(90deg,#0033ff,#0031ff,#002fff,#002dff,#002bff,#0029ff,#0027ff,#0025ff,#0023ff,#0021ff,#001fff,#001dff,#021bff,#0a19ff,#1117ff,#1815ff,#2013ff,#2711ff,#2f0fff,#360dff,#3e0aff,#4508ff,#4d06ff,#5404ff,#5c02ff,#6400ff,#6c00ff,#7300ff,#7b00ff,#8300ff,#8b00ff,#9300ff,#9b00ff,#a300ff,#ab00ff,#b300ff,#bc00ff,#c400ff,#cc00ff,#d500ff,#dd00ff,#e500ff,#ee00ff,#f600ff,#ff00ff,#ff00f7,#ff00ef,#ff00e8,#ff00e1,#ff00da,#ff00d4,#ff00ce,#ff00c8,#ff00c3,#ff00be,#ff00b9)"></div><div style="left:108.7px;top:370.0px;width:404.3px;height:2.5px;background:linear-gradient(90deg,#0032ff,#0030ff,#002eff,#002cff,#002aff,#0028ff,#0026ff,#0024ff,#0022ff,#0020ff,#001eff,#001cff,#041aff,#0b18ff,#1316ff,#1a14ff,#2212ff,#290fff,#310dff,#380bff,#4009ff,#4707ff,#4f05ff,#5703ff,#5f00ff,#6600ff,#6e00ff,#7600ff,#7e00ff,#8600ff,#8e00ff,#9600ff,#9e00ff,#a600ff,#ae00ff,#b700ff,#bf00ff,#c700ff,#cf00ff,#d800ff,#e000ff,#e900ff,#f100ff,#fa00ff,#ff00fc,#ff00f3,#ff00ec,#ff00e5,#ff00de,#ff00d7,#ff00d1,#ff00cb,#ff00c6,#ff00c0,#ff00bb)"></div><div style="left:109.8px;top:372.0px;width:401.5px;height:2.5px;background:linear-gradient(90deg,#0031ff,#002fff,#002dff,#002bff,#0029ff,#0027ff,#0025ff,#0023ff,#0021ff,#001fff,#001dff,#001bff,#0419ff,#0b17ff,#1315ff,#1a13ff,#2111ff,#290fff,#300dff,#380bff,#3f09ff,#4706ff,#4e04ff,#5602ff,#5d00ff,#6500ff,#6d00ff,#7500ff,#7c00ff,#8400ff,#8c00ff,#9400ff,#9c00ff,#a400ff,#ac00ff,#b400ff,#bc00ff,#c500ff,#cd00ff,#d500ff,#dd00ff,#e600ff,#ee00ff,#f700ff,#ff00ff,#ff00f7,#ff00ef,#ff00e8,#ff00e1,#ff00da,#ff00d4,#ff00ce,#ff00c8,#ff00c3,#ff00be)"></div><div style="left:110.9px;top:374.0px;width:398.8px;height:2.5px;background:linear-gradient(90deg,#0030ff,#002eff,#002cff,#002aff,#0028ff,#0026ff,#0024ff,#0022ff,#0020ff,#001eff,#001cff,#001aff,#0418ff,#0b16ff,#1314ff,#1a12ff,#2110ff,#280eff,#300cff,#370aff,#3f08ff,#4606ff,#4d04ff,#5502ff,#5c00ff,#6400ff,#6c00ff,#7300ff,#7b00ff,#8300ff,#8b00ff,#9200ff,#9a00ff,#a200ff,#aa00ff,#b200ff,#ba00ff,#c200ff,#ca00ff,#d200ff,#db00ff,#e300ff,#eb00ff,#f300ff,#fc00ff,#ff00fa,#ff00f2,#ff00eb,#ff00e4,#ff00dd,#ff00d7,#ff00d1,#ff00cb,#ff00c6,#ff00c0)"></div><div style="left:112.0px;top:376.0px;width:396.0px;height:2.5px;background:linear-gradient(90deg,#002fff,#002dff,#002bff,#0029ff,#0027ff,#0025ff,#0023ff,#0021ff,#001fff,#001dff,#001bff,#0019ff,#0617ff,#0d15ff,#1513ff,#1c11ff,#230fff,#2a0dff,#320bff,#3909ff,#4107ff,#4805ff,#5002ff,#5700ff,#5f00ff,#6700ff,#6e00ff,#7600ff,#7e00ff,#8500ff,#8d00ff,#9500ff,#9d00ff,#a500ff,#ad00ff,#b500ff,#bd00ff,#c500ff,#cd00ff,#d600ff,#de00ff,#e600ff,#ef00ff,#f700ff,#ff00ff,#ff00f6,#ff00ef,#ff00e7,#ff00e1,#ff00da,#ff00d4,#ff00ce,#ff00c8,#ff00c3)"></div><div style="left:113.1px;top:378.0px;width:393.3px;height:2.5px;background:linear-gradient(90deg,#002eff,#002cff,#002aff,#0028ff,#0026ff,#0024ff,#0022ff,#0020ff,#001eff,#001cff,#001aff,#0018ff,#0616ff,#0d14ff,#1412ff,#1c10ff,#230eff,#2a0cff,#310aff,#3908ff,#4006ff,#4704ff,#4f02ff,#5600ff,#5e00ff,#6500ff,#6d00ff,#7500ff,#7c00ff,#8400ff,#8c00ff,#9300ff,#9b00ff,#a300ff,#ab00ff,#b300ff,#bb00ff,#c300ff,#cb00ff,#d300ff,#db00ff,#e300ff,#ec00ff,#f400ff,#fc00ff,#ff00fa,#ff00f2,#ff00ea,#ff00e4,#ff00dd,#ff00d7,#ff00d1,#ff00cb,#ff00c6)"></div><div style="left:114.2px;top:380.0px;width:390.5px;height:2.5px;background:linear-gradient(90deg,#002dff,#002bff,#0029ff,#0027ff,#0025ff,#0023ff,#0021ff,#001fff,#001dff,#001bff,#001aff,#0018ff,#0616ff,#0d14ff,#1412ff,#1c10ff,#230eff,#2a0cff,#310aff,#3808ff,#3f06ff,#4704ff,#4e02ff,#5500ff,#5d00ff,#6400ff,#6c00ff,#7300ff,#7b00ff,#8200ff,#8a00ff,#9200ff,#9900ff,#a100ff,#a900ff,#b100ff,#b900ff,#c000ff,#c800ff,#d000ff,#d800ff,#e000ff,#e900ff,#f100ff,#f900ff,#ff00fd,#ff00f5,#ff00ee,#ff00e7,#ff00e0,#ff00da,#ff00d4,#ff00ce,#ff00c8)"></div><div style="left:115.3px;top:382.0px;width:387.7px;height:2.5px;background:linear-gradient(90deg,#002cff,#002aff,#0028ff,#0026ff,#0024ff,#0022ff,#0020ff,#001eff,#001cff,#001aff,#0018ff,#0116ff,#0814ff,#0f12ff,#1610ff,#1d0eff,#250cff,#2c0aff,#3308ff,#3a06ff,#4204ff,#4902ff,#5000ff,#5800ff,#5f00ff,#6700ff,#6e00ff,#7600ff,#7d00ff,#8500ff,#8d00ff,#9400ff,#9c00ff,#a400ff,#ac00ff,#b400ff,#bc00ff,#c400ff,#cc00ff,#d400ff,#dc00ff,#e400ff,#ec00ff,#f400ff,#fd00ff,#ff00f9,#ff00f2,#ff00ea,#ff00e3,#ff00dd,#ff00d7,#ff00d1,#ff00cb)"></div><div style="left:116.4px;top:384.0px;width:385.0px;height:2.5px;background:linear-gradient(90deg,#002bff,#0029ff,#0027ff,#0025ff,#0023ff,#0021ff,#001fff,#001dff,#001cff,#001aff,#0018ff,#0116ff,#0814ff,#0f12ff,#1610ff,#1d0eff,#240cff,#2b0aff,#3308ff,#3a06ff,#4104ff,#4802ff,#5000ff,#5700ff,#5e00ff,#6600ff,#6d00ff,#7400ff,#7c00ff,#8400ff,#8b00ff,#9300ff,#9a00ff,#a200ff,#aa00ff,#b200ff,#b900ff,#c100ff,#c900ff,#d100ff,#d900ff,#e100ff,#e900ff,#f100ff,#f900ff,#ff00fd,#ff00f5,#ff00ed,#ff00e6,#ff00e0,#ff00da,#ff00d4,#ff00ce)"></div><div style="left:117.5px;top:386.0px;width:382.2px;height:2.5px;background:linear-gradient(90deg,#002aff,#0028ff,#0026ff,#0024ff,#0022ff,#0020ff,#001eff,#001cff,#001aff,#0018ff,#0017ff,#0315ff,#0a13ff,#1111ff,#180fff,#1f0dff,#260bff,#2d09ff,#3507ff,#3c05ff,#4303ff,#4a00ff,#5200ff,#5900ff,#6100ff,#6800ff,#7000ff,#7700ff,#7f00ff,#8600ff,#8e00ff,#9600ff,#9d00ff,#a500ff,#ad00ff,#b500ff,#bd00ff,#c400ff,#cc00ff,#d400ff,#dc00ff,#e400ff,#ed00ff,#f500ff,#fd00ff,#ff00f9,#ff00f1,#ff00ea,#ff00e3,#ff00dd,#ff00d7,#ff00d1)"></div><div style="left:118.6px;top:388.0px;width:379.4px;height:2.5px;background:linear-gradient(90deg,#0029ff,#0027ff,#0025ff,#0023ff,#0021ff,#001fff,#001dff,#001cff,#001aff,#0018ff,#0016ff,#0314ff,#0a12ff,#1110ff,#180eff,#1f0cff,#260aff,#2d08ff,#3406ff,#3b04ff,#4302ff,#4a00ff,#5100ff,#5800ff,#6000ff,#6700ff,#6e00ff,#7600ff,#7d00ff,#8500ff,#8c00ff,#9400ff,#9b00ff,#a300ff,#ab00ff,#b200ff,#ba00ff,#c200ff,#ca00ff,#d200ff,#da00ff,#e200ff,#ea00ff,#f200ff,#fa00ff,#ff00fc,#ff00f4,#ff00ed,#ff00e6,#ff00e0,#ff00d9,#ff00d4)"></div><div style="left:119.7px;top:390.0px;width:376.6px;height:2.5px;background:linear-gradient(90deg,#0028ff,#0026ff,#0024ff,#0022ff,#0020ff,#001fff,#001dff,#001bff,#0019ff,#0017ff,#0015ff,#0313ff,#0a11ff,#110fff,#180dff,#1f0bff,#2609ff,#2d08ff,#3406ff,#3b04ff,#4202ff,#4900ff,#5000ff,#5700ff,#5f00ff,#6600ff,#6d00ff,#7400ff,#7c00ff,#8300ff,#8b00ff,#9200ff,#9a00ff,#a100ff,#a900ff,#b000ff,#b800ff,#c000ff,#c700ff,#cf00ff,#d700ff,#df00ff,#e700ff,#ee00ff,#f600ff,#fe00ff,#ff00f8,#ff00f0,#ff00e9,#ff00e3,#ff00dc,#ff00d6)"></div><div style="left:120.8px;top:392.0px;width:373.9px;height:2.5px;background:linear-gradient(90deg,#0027ff,#0025ff,#0023ff,#0021ff,#001fff,#001eff,#001cff,#001aff,#0018ff,#0016ff,#0014ff,#0512ff,#0c10ff,#130eff,#1a0cff,#210aff,#2808ff,#2f06ff,#3604ff,#3d02ff,#4400ff,#4b00ff,#5200ff,#5a00ff,#6100ff,#6800ff,#7000ff,#7700ff,#7e00ff,#8600ff,#8d00ff,#9500ff,#9c00ff,#a400ff,#ac00ff,#b300ff,#bb00ff,#c300ff,#cb00ff,#d200ff,#da00ff,#e200ff,#ea00ff,#f200ff,#fa00ff,#ff00fc,#ff00f4,#ff00ed,#ff00e6,#ff00df,#ff00d9)"></div><div style="left:121.9px;top:394.0px;width:371.1px;height:2.5px;background:linear-gradient(90deg,#0026ff,#0024ff,#0022ff,#0020ff,#001fff,#001dff,#001bff,#0019ff,#0017ff,#0015ff,#0013ff,#0511ff,#0c0fff,#130eff,#1a0cff,#210aff,#2708ff,#2e06ff,#3504ff,#3c02ff,#4300ff,#4a00ff,#5200ff,#5900ff,#6000ff,#6700ff,#6e00ff,#7600ff,#7d00ff,#8400ff,#8c00ff,#9300ff,#9b00ff,#a200ff,#aa00ff,#b100ff,#b900ff,#c000ff,#c800ff,#d000ff,#d800ff,#df00ff,#e700ff,#ef00ff,#f700ff,#ff00ff,#ff00f7,#ff00f0,#ff00e9,#ff00e3,#ff00dc)"></div><div style="left:123.0px;top:396.0px;width:368.3px;height:2.5px;background:linear-gradient(90deg,#0025ff,#0023ff,#0021ff,#0020ff,#001eff,#001cff,#001aff,#0018ff,#0016ff,#0014ff,#0013ff,#0511ff,#0c0fff,#130dff,#1a0bff,#2009ff,#2707ff,#2e05ff,#3503ff,#3c01ff,#4300ff,#4a00ff,#5100ff,#5800ff,#5f00ff,#6600ff,#6d00ff,#7400ff,#7b00ff,#8300ff,#8a00ff,#9100ff,#9900ff,#a000ff,#a700ff,#af00ff,#b600ff,#be00ff,#c600ff,#cd00ff,#d500ff,#dc00ff,#e400ff,#ec00ff,#f400ff,#fc00ff,#ff00fb,#ff00f3,#ff00ec,#ff00e6,#ff00df)"></div><div style="left:124.1px;top:398.0px;width:365.5px;height:2.5px;background:linear-gradient(90deg,#0024ff,#0022ff,#0020ff,#001fff,#001dff,#001bff,#0019ff,#0017ff,#0015ff,#0013ff,#0012ff,#0710ff,#0e0eff,#150cff,#1b0aff,#2208ff,#2906ff,#3004ff,#3702ff,#3e00ff,#4500ff,#4c00ff,#5300ff,#5a00ff,#6100ff,#6800ff,#7000ff,#7700ff,#7e00ff,#8500ff,#8d00ff,#9400ff,#9c00ff,#a300ff,#ab00ff,#b200ff,#ba00ff,#c100ff,#c900ff,#d100ff,#d800ff,#e000ff,#e800ff,#f000ff,#f700ff,#ff00ff,#ff00f7,#ff00f0,#ff00e9,#ff00e2)"></div><div style="left:125.2px;top:400.0px;width:362.7px;height:2.5px;background:linear-gradient(90deg,#0023ff,#0021ff,#0020ff,#001eff,#001cff,#001aff,#0018ff,#0016ff,#0015ff,#0013ff,#0111ff,#070fff,#0e0dff,#150bff,#1b09ff,#2207ff,#2906ff,#3004ff,#3602ff,#3d00ff,#4400ff,#4b00ff,#5200ff,#5900ff,#6000ff,#6700ff,#6e00ff,#7600ff,#7d00ff,#8400ff,#8b00ff,#9200ff,#9a00ff,#a100ff,#a800ff,#b000ff,#b700ff,#bf00ff,#c600ff,#ce00ff,#d500ff,#dd00ff,#e500ff,#ec00ff,#f400ff,#fc00ff,#ff00fa,#ff00f3,#ff00ec,#ff00e5)"></div><div style="left:126.4px;top:402.0px;width:359.9px;height:2.5px;background:linear-gradient(90deg,#0022ff,#0020ff,#001fff,#001dff,#001bff,#0019ff,#0017ff,#0015ff,#0014ff,#0012ff,#0210ff,#090eff,#100cff,#160aff,#1d08ff,#2406ff,#2b04ff,#3202ff,#3900ff,#3f00ff,#4600ff,#4d00ff,#5400ff,#5c00ff,#6300ff,#6a00ff,#7100ff,#7800ff,#7f00ff,#8700ff,#8e00ff,#9500ff,#9d00ff,#a400ff,#ac00ff,#b300ff,#bb00ff,#c200ff,#ca00ff,#d100ff,#d900ff,#e100ff,#e800ff,#f000ff,#f800ff,#ff00fe,#ff00f6,#ff00ef,#ff00e8)"></div><div style="left:127.5px;top:404.0px;width:357.1px;height:2.5px;background:linear-gradient(90deg,#0021ff,#0020ff,#001eff,#001cff,#001aff,#0018ff,#0017ff,#0015ff,#0013ff,#0011ff,#020fff,#090dff,#100bff,#160aff,#1d08ff,#2406ff,#2a04ff,#3102ff,#3800ff,#3f00ff,#4600ff,#4d00ff,#5400ff,#5b00ff,#6200ff,#6900ff,#7000ff,#7700ff,#7e00ff,#8500ff,#8c00ff,#9400ff,#9b00ff,#a200ff,#a900ff,#b100ff,#b800ff,#c000ff,#c700ff,#cf00ff,#d600ff,#de00ff,#e500ff,#ed00ff,#f500ff,#fd00ff,#ff00fa,#ff00f3,#ff00ec)"></div><div style="left:128.6px;top:406.0px;width:354.4px;height:2.5px;background:linear-gradient(90deg,#0021ff,#001fff,#001dff,#001bff,#0019ff,#0018ff,#0016ff,#0014ff,#0012ff,#0010ff,#030fff,#090dff,#100bff,#1609ff,#1d07ff,#2305ff,#2a03ff,#3101ff,#3800ff,#3e00ff,#4500ff,#4c00ff,#5300ff,#5a00ff,#6000ff,#6700ff,#6e00ff,#7500ff,#7c00ff,#8400ff,#8b00ff,#9200ff,#9900ff,#a000ff,#a700ff,#af00ff,#b600ff,#bd00ff,#c500ff,#cc00ff,#d300ff,#db00ff,#e200ff,#ea00ff,#f200ff,#f900ff,#ff00fd,#ff00f6,#ff00ef)"></div><div style="left:129.7px;top:408.0px;width:351.6px;height:2.5px;background:linear-gradient(90deg,#0020ff,#001eff,#001cff,#001aff,#0019ff,#0017ff,#0015ff,#0013ff,#0011ff,#000fff,#040eff,#0b0cff,#110aff,#1808ff,#1f06ff,#2504ff,#2c02ff,#3300ff,#3a00ff,#4000ff,#4700ff,#4e00ff,#5500ff,#5c00ff,#6300ff,#6a00ff,#7100ff,#7800ff,#7f00ff,#8600ff,#8d00ff,#9500ff,#9c00ff,#a300ff,#aa00ff,#b200ff,#b900ff,#c100ff,#c800ff,#cf00ff,#d700ff,#df00ff,#e600ff,#ee00ff,#f500ff,#fd00ff,#ff00f9,#ff00f2)"></div><div style="left:130.9px;top:410.0px;width:348.8px;height:2.5px;background:linear-gradient(90deg,#001fff,#001dff,#001bff,#001aff,#0018ff,#0016ff,#0014ff,#0012ff,#0011ff,#000fff,#040dff,#0b0bff,#1109ff,#1807ff,#1e05ff,#2504ff,#2c02ff,#3200ff,#3900ff,#4000ff,#4700ff,#4d00ff,#5400ff,#5b00ff,#6200ff,#6900ff,#7000ff,#7700ff,#7e00ff,#8500ff,#8c00ff,#9300ff,#9a00ff,#a100ff,#a800ff,#b000ff,#b700ff,#be00ff,#c500ff,#cd00ff,#d400ff,#dc00ff,#e300ff,#eb00ff,#f200ff,#fa00ff,#ff00fd,#ff00f5)"></div><div style="left:132.0px;top:412.0px;width:346.0px;height:2.5px;background:linear-gradient(90deg,#001eff,#001cff,#001bff,#0019ff,#0017ff,#0015ff,#0013ff,#0012ff,#0010ff,#000eff,#050cff,#0b0aff,#1109ff,#1807ff,#1e05ff,#2503ff,#2b01ff,#3200ff,#3900ff,#3f00ff,#4600ff,#4d00ff,#5300ff,#5a00ff,#6100ff,#6800ff,#6e00ff,#7500ff,#7c00ff,#8300ff,#8a00ff,#9100ff,#9800ff,#9f00ff,#a600ff,#ad00ff,#b500ff,#bc00ff,#c300ff,#ca00ff,#d100ff,#d900ff,#e000ff,#e800ff,#ef00ff,#f600ff,#fe00ff,#ff00f9)"></div><div style="left:133.1px;top:414.0px;width:343.1px;height:2.5px;background:linear-gradient(90deg,#001dff,#001bff,#001aff,#0018ff,#0016ff,#0014ff,#0012ff,#0011ff,#000fff,#000dff,#060bff,#0d09ff,#1308ff,#1a06ff,#2004ff,#2702ff,#2d00ff,#3400ff,#3b00ff,#4100ff,#4800ff,#4f00ff,#5600ff,#5c00ff,#6300ff,#6a00ff,#7100ff,#7800ff,#7f00ff,#8600ff,#8d00ff,#9400ff,#9b00ff,#a200ff,#a900ff,#b100ff,#b800ff,#bf00ff,#c600ff,#ce00ff,#d500ff,#dc00ff,#e400ff,#eb00ff,#f300ff,#fa00ff,#ff00fc)"></div><div style="left:134.3px;top:416.0px;width:340.3px;height:2.5px;background:linear-gradient(90deg,#001cff,#001bff,#0019ff,#0017ff,#0015ff,#0014ff,#0012ff,#0010ff,#000eff,#000cff,#060bff,#0d09ff,#1307ff,#1a05ff,#2003ff,#2601ff,#2d00ff,#3300ff,#3a00ff,#4100ff,#4700ff,#4e00ff,#5500ff,#5b00ff,#6200ff,#6900ff,#7000ff,#7700ff,#7d00ff,#8400ff,#8b00ff,#9200ff,#9900ff,#a000ff,#a700ff,#ae00ff,#b500ff,#bd00ff,#c400ff,#cb00ff,#d200ff,#da00ff,#e100ff,#e800ff,#f000ff,#f700ff,#ff00ff)"></div><div style="left:135.4px;top:418.0px;width:337.5px;height:2.5px;background:linear-gradient(90deg,#001cff,#001aff,#0018ff,#0016ff,#0015ff,#0013ff,#0011ff,#000fff,#000eff,#000cff,#060aff,#0d08ff,#1306ff,#1905ff,#2003ff,#2601ff,#2d00ff,#3300ff,#3a00ff,#4000ff,#4700ff,#4d00ff,#5400ff,#5a00ff,#6100ff,#6800ff,#6e00ff,#7500ff,#7c00ff,#8300ff,#8a00ff,#9000ff,#9700ff,#9e00ff,#a500ff,#ac00ff,#b300ff,#ba00ff,#c100ff,#c800ff,#d000ff,#d700ff,#de00ff,#e500ff,#ec00ff,#f400ff,#fb00ff)"></div><div style="left:136.6px;top:420.0px;width:334.7px;height:2.5px;background:linear-gradient(90deg,#001bff,#0019ff,#0017ff,#0015ff,#0014ff,#0012ff,#0010ff,#000eff,#000dff,#020bff,#0809ff,#0e07ff,#1505ff,#1b04ff,#2202ff,#2800ff,#2f00ff,#3500ff,#3c00ff,#4200ff,#4900ff,#4f00ff,#5600ff,#5d00ff,#6300ff,#6a00ff,#7100ff,#7800ff,#7f00ff,#8500ff,#8c00ff,#9300ff,#9a00ff,#a100ff,#a800ff,#af00ff,#b600ff,#be00ff,#c500ff,#cc00ff,#d300ff,#da00ff,#e200ff,#e900ff,#f000ff,#f800ff)"></div><div style="left:137.7px;top:422.0px;width:331.9px;height:2.5px;background:linear-gradient(90deg,#001aff,#0018ff,#0016ff,#0015ff,#0013ff,#0011ff,#0010ff,#000eff,#000cff,#020aff,#0808ff,#0e07ff,#1505ff,#1b03ff,#2101ff,#2800ff,#2e00ff,#3500ff,#3b00ff,#4200ff,#4800ff,#4f00ff,#5500ff,#5c00ff,#6200ff,#6900ff,#7000ff,#7600ff,#7d00ff,#8400ff,#8b00ff,#9200ff,#9800ff,#9f00ff,#a600ff,#ad00ff,#b400ff,#bb00ff,#c200ff,#c900ff,#d000ff,#d800ff,#df00ff,#e600ff,#ed00ff,#f400ff)"></div><div style="left:138.8px;top:424.0px;width:329.1px;height:2.5px;background:linear-gradient(90deg,#0019ff,#0017ff,#0016ff,#0014ff,#0012ff,#0010ff,#000fff,#000dff,#000bff,#0309ff,#0a07ff,#1006ff,#1604ff,#1d02ff,#2300ff,#2a00ff,#3000ff,#3700ff,#3d00ff,#4400ff,#4a00ff,#5100ff,#5700ff,#5e00ff,#6500ff,#6c00ff,#7200ff,#7900ff,#8000ff,#8700ff,#8e00ff,#9400ff,#9b00ff,#a200ff,#a900ff,#b000ff,#b700ff,#bf00ff,#c600ff,#cd00ff,#d400ff,#db00ff,#e300ff,#ea00ff,#f100ff)"></div><div style="left:140.0px;top:426.0px;width:326.3px;height:2.5px;background:linear-gradient(90deg,#0018ff,#0017ff,#0015ff,#0013ff,#0011ff,#0010ff,#000eff,#000cff,#000aff,#0409ff,#0a07ff,#1005ff,#1603ff,#1d02ff,#2300ff,#2900ff,#3000ff,#3600ff,#3d00ff,#4300ff,#4900ff,#5000ff,#5700ff,#5d00ff,#6400ff,#6a00ff,#7100ff,#7800ff,#7e00ff,#8500ff,#8c00ff,#9300ff,#9900ff,#a000ff,#a700ff,#ae00ff,#b500ff,#bc00ff,#c300ff,#ca00ff,#d100ff,#d800ff,#df00ff,#e700ff,#ee00ff)"></div><div style="left:141.2px;top:428.0px;width:323.4px;height:2.5px;background:linear-gradient(90deg,#0018ff,#0016ff,#0014ff,#0012ff,#0011ff,#000fff,#000dff,#000cff,#000aff,#0408ff,#0a06ff,#1005ff,#1603ff,#1d01ff,#2300ff,#2900ff,#2f00ff,#3600ff,#3c00ff,#4200ff,#4900ff,#4f00ff,#5600ff,#5c00ff,#6300ff,#6900ff,#7000ff,#7600ff,#7d00ff,#8300ff,#8a00ff,#9100ff,#9800ff,#9e00ff,#a500ff,#ac00ff,#b300ff,#ba00ff,#c100ff,#c800ff,#ce00ff,#d500ff,#dd00ff,#e400ff,#eb00ff)"></div><div style="left:142.3px;top:430.0px;width:320.6px;height:2.5px;background:linear-gradient(90deg,#0017ff,#0015ff,#0013ff,#0012ff,#0010ff,#000eff,#000cff,#000bff,#0009ff,#0507ff,#0c05ff,#1204ff,#1802ff,#1e00ff,#2500ff,#2b00ff,#3100ff,#3800ff,#3e00ff,#4400ff,#4b00ff,#5100ff,#5800ff,#5e00ff,#6500ff,#6c00ff,#7200ff,#7900ff,#8000ff,#8600ff,#8d00ff,#9400ff,#9b00ff,#a100ff,#a800ff,#af00ff,#b600ff,#bd00ff,#c400ff,#cb00ff,#d200ff,#d900ff,#e000ff,#e800ff)"></div><div style="left:143.5px;top:432.0px;width:317.8px;height:2.5px;background:linear-gradient(90deg,#0016ff,#0014ff,#0013ff,#0011ff,#000fff,#000dff,#000cff,#000aff,#0008ff,#0607ff,#0c05ff,#1203ff,#1801ff,#1e00ff,#2400ff,#2b00ff,#3100ff,#3700ff,#3d00ff,#4400ff,#4a00ff,#5100ff,#5700ff,#5d00ff,#6400ff,#6a00ff,#7100ff,#7700ff,#7e00ff,#8500ff,#8b00ff,#9200ff,#9900ff,#9f00ff,#a600ff,#ad00ff,#b400ff,#bb00ff,#c200ff,#c800ff,#cf00ff,#d600ff,#dd00ff,#e400ff)"></div><div style="left:144.6px;top:434.0px;width:315.0px;height:2.5px;background:linear-gradient(90deg,#0015ff,#0013ff,#0012ff,#0010ff,#000eff,#000dff,#000bff,#0009ff,#0107ff,#0706ff,#0d04ff,#1302ff,#1a00ff,#2000ff,#2600ff,#2d00ff,#3300ff,#3900ff,#4000ff,#4600ff,#4c00ff,#5300ff,#5900ff,#6000ff,#6600ff,#6d00ff,#7400ff,#7a00ff,#8100ff,#8800ff,#8e00ff,#9500ff,#9c00ff,#a300ff,#a900ff,#b000ff,#b700ff,#be00ff,#c500ff,#cc00ff,#d300ff,#da00ff,#e100ff)"></div><div style="left:145.8px;top:436.0px;width:312.1px;height:2.5px;background:linear-gradient(90deg,#0014ff,#0013ff,#0011ff,#000fff,#000eff,#000cff,#000aff,#0009ff,#0107ff,#0705ff,#0d03ff,#1402ff,#1a00ff,#2000ff,#2600ff,#2c00ff,#3200ff,#3900ff,#3f00ff,#4500ff,#4c00ff,#5200ff,#5800ff,#5f00ff,#6500ff,#6c00ff,#7200ff,#7900ff,#7f00ff,#8600ff,#8d00ff,#9300ff,#9a00ff,#a100ff,#a700ff,#ae00ff,#b500ff,#bc00ff,#c300ff,#c900ff,#d000ff,#d700ff,#de00ff)"></div><div style="left:147.0px;top:438.0px;width:309.3px;height:2.5px;background:linear-gradient(90deg,#0014ff,#0012ff,#0010ff,#000fff,#000dff,#000bff,#000aff,#0008ff,#0206ff,#0805ff,#0e03ff,#1401ff,#1a00ff,#2000ff,#2600ff,#2c00ff,#3200ff,#3800ff,#3e00ff,#4500ff,#4b00ff,#5100ff,#5700ff,#5e00ff,#6400ff,#6a00ff,#7100ff,#7700ff,#7e00ff,#8400ff,#8b00ff,#9100ff,#9800ff,#9e00ff,#a500ff,#ac00ff,#b200ff,#b900ff,#c000ff,#c700ff,#ce00ff,#d400ff,#db00ff)"></div><div style="left:148.1px;top:440.0px;width:306.4px;height:2.5px;background:linear-gradient(90deg,#0013ff,#0011ff,#0010ff,#000eff,#000cff,#000aff,#0009ff,#0007ff,#0305ff,#0904ff,#0f02ff,#1500ff,#1b00ff,#2100ff,#2800ff,#2e00ff,#3400ff,#3a00ff,#4000ff,#4700ff,#4d00ff,#5300ff,#5a00ff,#6000ff,#6700ff,#6d00ff,#7400ff,#7a00ff,#8100ff,#8700ff,#8e00ff,#9400ff,#9b00ff,#a200ff,#a800ff,#af00ff,#b600ff,#bd00ff,#c400ff,#ca00ff,#d100ff,#d800ff)"></div><div style="left:149.3px;top:442.0px;width:303.6px;height:2.5px;background:linear-gradient(90deg,#0012ff,#0011ff,#000fff,#000dff,#000cff,#000aff,#0008ff,#0006ff,#0305ff,#0903ff,#0f01ff,#1500ff,#1b00ff,#2100ff,#2700ff,#2d00ff,#3400ff,#3a00ff,#4000ff,#4600ff,#4c00ff,#5300ff,#5900ff,#5f00ff,#6500ff,#6c00ff,#7200ff,#7900ff,#7f00ff,#8500ff,#8c00ff,#9300ff,#9900ff,#a000ff,#a600ff,#ad00ff,#b400ff,#ba00ff,#c100ff,#c800ff,#ce00ff,#d500ff)"></div><div style="left:150.5px;top:444.0px;width:300.8px;height:2.5px;background:linear-gradient(90deg,#0011ff,#0010ff,#000eff,#000dff,#000bff,#0009ff,#0008ff,#0006ff,#0304ff,#0903ff,#0f01ff,#1500ff,#1b00ff,#2100ff,#2700ff,#2d00ff,#3300ff,#3900ff,#3f00ff,#4500ff,#4b00ff,#5200ff,#5800ff,#5e00ff,#6400ff,#6b00ff,#7100ff,#7700ff,#7d00ff,#8400ff,#8a00ff,#9100ff,#9700ff,#9e00ff,#a400ff,#ab00ff,#b100ff,#b800ff,#be00ff,#c500ff,#cc00ff,#d200ff)"></div><div style="left:151.6px;top:446.0px;width:297.9px;height:2.5px;background:linear-gradient(90deg,#0011ff,#000fff,#000dff,#000cff,#000aff,#0008ff,#0007ff,#0005ff,#0503ff,#0b02ff,#1100ff,#1700ff,#1d00ff,#2300ff,#2900ff,#2f00ff,#3500ff,#3b00ff,#4100ff,#4700ff,#4e00ff,#5400ff,#5a00ff,#6000ff,#6700ff,#6d00ff,#7300ff,#7a00ff,#8000ff,#8700ff,#8d00ff,#9400ff,#9a00ff,#a100ff,#a700ff,#ae00ff,#b500ff,#bb00ff,#c200ff,#c900ff,#cf00ff)"></div><div style="left:152.8px;top:448.0px;width:295.1px;height:2.5px;background:linear-gradient(90deg,#0010ff,#000eff,#000dff,#000bff,#0009ff,#0008ff,#0006ff,#0004ff,#0503ff,#0b01ff,#1100ff,#1700ff,#1d00ff,#2300ff,#2900ff,#2f00ff,#3500ff,#3b00ff,#4100ff,#4700ff,#4d00ff,#5300ff,#5900ff,#5f00ff,#6600ff,#6c00ff,#7200ff,#7800ff,#7f00ff,#8500ff,#8b00ff,#9200ff,#9800ff,#9f00ff,#a500ff,#ac00ff,#b200ff,#b900ff,#bf00ff,#c600ff,#cd00ff)"></div><div style="left:154.0px;top:450.0px;width:292.2px;height:2.5px;background:linear-gradient(90deg,#000fff,#000eff,#000cff,#000aff,#0009ff,#0007ff,#0005ff,#0104ff,#0702ff,#0c00ff,#1200ff,#1800ff,#1e00ff,#2400ff,#2a00ff,#3000ff,#3700ff,#3d00ff,#4300ff,#4900ff,#4f00ff,#5500ff,#5c00ff,#6200ff,#6800ff,#6e00ff,#7500ff,#7b00ff,#8200ff,#8800ff,#8e00ff,#9500ff,#9b00ff,#a200ff,#a900ff,#af00ff,#b600ff,#bc00ff,#c300ff,#ca00ff)"></div><div style="left:155.2px;top:452.0px;width:289.3px;height:2.5px;background:linear-gradient(90deg,#000fff,#000dff,#000bff,#000aff,#0008ff,#0006ff,#0005ff,#0103ff,#0701ff,#0d00ff,#1200ff,#1800ff,#1e00ff,#2400ff,#2a00ff,#3000ff,#3600ff,#3c00ff,#4200ff,#4800ff,#4e00ff,#5400ff,#5b00ff,#6100ff,#6700ff,#6d00ff,#7300ff,#7a00ff,#8000ff,#8600ff,#8d00ff,#9300ff,#9900ff,#a000ff,#a600ff,#ad00ff,#b300ff,#ba00ff,#c000ff,#c700ff)"></div><div style="left:156.4px;top:454.0px;width:286.5px;height:2.5px;background:linear-gradient(90deg,#000eff,#000cff,#000bff,#0009ff,#0007ff,#0006ff,#0004ff,#0103ff,#0701ff,#0d00ff,#1200ff,#1800ff,#1e00ff,#2400ff,#2a00ff,#3000ff,#3600ff,#3c00ff,#4100ff,#4700ff,#4d00ff,#5300ff,#5a00ff,#6000ff,#6600ff,#6c00ff,#7200ff,#7800ff,#7e00ff,#8500ff,#8b00ff,#9100ff,#9700ff,#9e00ff,#a400ff,#aa00ff,#b100ff,#b700ff,#be00ff,#c400ff)"></div><div style="left:157.6px;top:456.0px;width:283.6px;height:2.5px;background:linear-gradient(90deg,#000dff,#000cff,#000aff,#0008ff,#0007ff,#0005ff,#0003ff,#0302ff,#0800ff,#0e00ff,#1400ff,#1a00ff,#2000ff,#2600ff,#2c00ff,#3200ff,#3800ff,#3e00ff,#4400ff,#4a00ff,#5000ff,#5600ff,#5c00ff,#6200ff,#6800ff,#6f00ff,#7500ff,#7b00ff,#8100ff,#8800ff,#8e00ff,#9400ff,#9b00ff,#a100ff,#a800ff,#ae00ff,#b400ff,#bb00ff,#c200ff)"></div><div style="left:158.8px;top:458.0px;width:280.7px;height:2.5px;background:linear-gradient(90deg,#000cff,#000bff,#0009ff,#0008ff,#0006ff,#0004ff,#0003ff,#0301ff,#0900ff,#0e00ff,#1400ff,#1a00ff,#2000ff,#2500ff,#2b00ff,#3100ff,#3700ff,#3d00ff,#4300ff,#4900ff,#4f00ff,#5500ff,#5b00ff,#6100ff,#6700ff,#6d00ff,#7300ff,#7900ff,#8000ff,#8600ff,#8c00ff,#9200ff,#9900ff,#9f00ff,#a500ff,#ac00ff,#b200ff,#b800ff,#bf00ff)"></div><div style="left:160.0px;top:460.0px;width:277.9px;height:2.5px;background:linear-gradient(90deg,#000cff,#000aff,#0009ff,#0007ff,#0005ff,#0004ff,#0002ff,#0301ff,#0900ff,#0e00ff,#1400ff,#1a00ff,#2000ff,#2500ff,#2b00ff,#3100ff,#3700ff,#3c00ff,#4200ff,#4800ff,#4e00ff,#5400ff,#5a00ff,#6000ff,#6600ff,#6c00ff,#7200ff,#7800ff,#7e00ff,#8400ff,#8a00ff,#9000ff,#9700ff,#9d00ff,#a300ff,#a900ff,#b000ff,#b600ff,#bc00ff)"></div><div style="left:161.2px;top:462.0px;width:275.0px;height:2.5px;background:linear-gradient(90deg,#000bff,#000aff,#0008ff,#0006ff,#0005ff,#0003ff,#0001ff,#0500ff,#0a00ff,#1000ff,#1600ff,#1b00ff,#2100ff,#2700ff,#2d00ff,#3300ff,#3900ff,#3e00ff,#4400ff,#4a00ff,#5000ff,#5600ff,#5c00ff,#6200ff,#6800ff,#6f00ff,#7500ff,#7b00ff,#8100ff,#8700ff,#8d00ff,#9400ff,#9a00ff,#a000ff,#a600ff,#ad00ff,#b300ff,#ba00ff)"></div><div style="left:162.4px;top:464.0px;width:272.1px;height:2.5px;background:linear-gradient(90deg,#000aff,#0009ff,#0007ff,#0006ff,#0004ff,#0003ff,#0001ff,#0500ff,#0a00ff,#1000ff,#1600ff,#1b00ff,#2100ff,#2700ff,#2d00ff,#3200ff,#3800ff,#3e00ff,#4400ff,#4a00ff,#4f00ff,#5500ff,#5b00ff,#6100ff,#6700ff,#6d00ff,#7300ff,#7900ff,#7f00ff,#8500ff,#8b00ff,#9200ff,#9800ff,#9e00ff,#a400ff,#aa00ff,#b100ff,#b700ff)"></div><div style="left:163.6px;top:466.0px;width:269.2px;height:2.5px;background:linear-gradient(90deg,#000aff,#0008ff,#0007ff,#0005ff,#0003ff,#0002ff,#0000ff,#0600ff,#0c00ff,#1200ff,#1700ff,#1d00ff,#2300ff,#2900ff,#2e00ff,#3400ff,#3a00ff,#4000ff,#4600ff,#4c00ff,#5200ff,#5800ff,#5e00ff,#6400ff,#6a00ff,#7000ff,#7600ff,#7c00ff,#8200ff,#8800ff,#8f00ff,#9500ff,#9b00ff,#a100ff,#a800ff,#ae00ff,#b400ff)"></div><div style="left:164.8px;top:468.0px;width:266.4px;height:2.5px;background:linear-gradient(90deg,#0009ff,#0008ff,#0006ff,#0004ff,#0003ff,#0001ff,#0100ff,#0600ff,#0c00ff,#1200ff,#1700ff,#1d00ff,#2300ff,#2800ff,#2e00ff,#3400ff,#3a00ff,#3f00ff,#4500ff,#4b00ff,#5100ff,#5700ff,#5d00ff,#6300ff,#6900ff,#6f00ff,#7500ff,#7b00ff,#8100ff,#8700ff,#8d00ff,#9300ff,#9900ff,#9f00ff,#a500ff,#ac00ff,#b200ff)"></div><div style="left:166.0px;top:470.0px;width:263.5px;height:2.5px;background:linear-gradient(90deg,#0008ff,#0007ff,#0005ff,#0004ff,#0002ff,#0001ff,#0100ff,#0700ff,#0c00ff,#1200ff,#1700ff,#1d00ff,#2200ff,#2800ff,#2e00ff,#3300ff,#3900ff,#3f00ff,#4400ff,#4a00ff,#5000ff,#5600ff,#5c00ff,#6100ff,#6700ff,#6d00ff,#7300ff,#7900ff,#7f00ff,#8500ff,#8b00ff,#9100ff,#9700ff,#9d00ff,#a300ff,#a900ff,#af00ff)"></div><div style="left:167.3px;top:472.0px;width:260.6px;height:2.5px;background:linear-gradient(90deg,#0008ff,#0006ff,#0005ff,#0003ff,#0001ff,#0000ff,#0200ff,#0800ff,#0e00ff,#1300ff,#1900ff,#1e00ff,#2400ff,#2a00ff,#3000ff,#3500ff,#3b00ff,#4100ff,#4700ff,#4c00ff,#5200ff,#5800ff,#5e00ff,#6400ff,#6a00ff,#7000ff,#7600ff,#7c00ff,#8200ff,#8800ff,#8e00ff,#9400ff,#9a00ff,#a000ff,#a700ff,#ad00ff)"></div><div style="left:168.5px;top:474.0px;width:257.7px;height:2.5px;background:linear-gradient(90deg,#0007ff,#0006ff,#0004ff,#0002ff,#0001ff,#0000ff,#0300ff,#0800ff,#0e00ff,#1300ff,#1900ff,#1e00ff,#2400ff,#2a00ff,#2f00ff,#3500ff,#3a00ff,#4000ff,#4600ff,#4c00ff,#5100ff,#5700ff,#5d00ff,#6300ff,#6900ff,#6e00ff,#7400ff,#7a00ff,#8000ff,#8600ff,#8c00ff,#9200ff,#9800ff,#9e00ff,#a400ff,#aa00ff)"></div><div style="left:169.7px;top:476.0px;width:254.8px;height:2.5px;background:linear-gradient(90deg,#0006ff,#0005ff,#0003ff,#0002ff,#0000ff,#0000ff,#0400ff,#0a00ff,#0f00ff,#1500ff,#1a00ff,#2000ff,#2600ff,#2b00ff,#3100ff,#3700ff,#3d00ff,#4200ff,#4800ff,#4e00ff,#5400ff,#5a00ff,#6000ff,#6500ff,#6b00ff,#7100ff,#7700ff,#7d00ff,#8300ff,#8900ff,#8f00ff,#9600ff,#9c00ff,#a200ff,#a800ff)"></div><div style="left:171.0px;top:478.0px;width:251.8px;height:2.5px;background:linear-gradient(90deg,#0006ff,#0004ff,#0003ff,#0001ff,#0000ff,#0000ff,#0400ff,#0a00ff,#0f00ff,#1500ff,#1a00ff,#2000ff,#2500ff,#2b00ff,#3100ff,#3600ff,#3c00ff,#4200ff,#4700ff,#4d00ff,#5300ff,#5900ff,#5e00ff,#6400ff,#6a00ff,#7000ff,#7600ff,#7c00ff,#8200ff,#8700ff,#8d00ff,#9300ff,#9900ff,#a000ff,#a600ff)"></div><div style="left:172.3px;top:480.0px;width:248.9px;height:2.5px;background:linear-gradient(90deg,#0005ff,#0004ff,#0002ff,#0001ff,#0000ff,#0000ff,#0500ff,#0a00ff,#0f00ff,#1500ff,#1a00ff,#2000ff,#2500ff,#2b00ff,#3000ff,#3600ff,#3b00ff,#4100ff,#4700ff,#4c00ff,#5200ff,#5700ff,#5d00ff,#6300ff,#6900ff,#6e00ff,#7400ff,#7a00ff,#8000ff,#8600ff,#8b00ff,#9100ff,#9700ff,#9d00ff,#a300ff)"></div><div style="left:173.5px;top:482.0px;width:246.0px;height:2.5px;background:linear-gradient(90deg,#0005ff,#0003ff,#0001ff,#0000ff,#0000ff,#0000ff,#0600ff,#0b00ff,#1100ff,#1600ff,#1c00ff,#2100ff,#2700ff,#2d00ff,#3200ff,#3800ff,#3d00ff,#4300ff,#4900ff,#4f00ff,#5400ff,#5a00ff,#6000ff,#6600ff,#6b00ff,#7100ff,#7700ff,#7d00ff,#8300ff,#8900ff,#8f00ff,#9500ff,#9b00ff,#a100ff)"></div><div style="left:174.8px;top:484.0px;width:243.0px;height:2.5px;background:linear-gradient(90deg,#0004ff,#0002ff,#0001ff,#0000ff,#0000ff,#0100ff,#0600ff,#0c00ff,#1100ff,#1600ff,#1c00ff,#2100ff,#2700ff,#2c00ff,#3200ff,#3700ff,#3d00ff,#4200ff,#4800ff,#4e00ff,#5300ff,#5900ff,#5f00ff,#6400ff,#6a00ff,#7000ff,#7600ff,#7b00ff,#8100ff,#8700ff,#8d00ff,#9300ff,#9900ff,#9e00ff)"></div><div style="left:176.1px;top:486.0px;width:240.0px;height:2.5px;background:linear-gradient(90deg,#0003ff,#0002ff,#0000ff,#0000ff,#0000ff,#0100ff,#0700ff,#0c00ff,#1100ff,#1600ff,#1c00ff,#2100ff,#2700ff,#2c00ff,#3100ff,#3700ff,#3c00ff,#4200ff,#4700ff,#4d00ff,#5200ff,#5800ff,#5d00ff,#6300ff,#6900ff,#6e00ff,#7400ff,#7a00ff,#7f00ff,#8500ff,#8b00ff,#9100ff,#9600ff,#9c00ff)"></div><div style="left:177.4px;top:488.0px;width:237.0px;height:2.5px;background:linear-gradient(90deg,#0003ff,#0001ff,#0000ff,#0000ff,#0000ff,#0300ff,#0800ff,#0d00ff,#1300ff,#1800ff,#1d00ff,#2300ff,#2800ff,#2e00ff,#3300ff,#3900ff,#3e00ff,#4400ff,#4a00ff,#4f00ff,#5500ff,#5a00ff,#6000ff,#6600ff,#6b00ff,#7100ff,#7700ff,#7d00ff,#8200ff,#8800ff,#8e00ff,#9400ff,#9a00ff)"></div><div style="left:178.8px;top:490.0px;width:234.0px;height:2.5px;background:linear-gradient(90deg,#0002ff,#0001ff,#0000ff,#0000ff,#0000ff,#0300ff,#0800ff,#0d00ff,#1300ff,#1800ff,#1d00ff,#2300ff,#2800ff,#2d00ff,#3300ff,#3800ff,#3e00ff,#4300ff,#4900ff,#4e00ff,#5400ff,#5900ff,#5f00ff,#6400ff,#6a00ff,#7000ff,#7500ff,#7b00ff,#8100ff,#8600ff,#8c00ff,#9200ff,#9800ff)"></div><div style="left:180.1px;top:492.0px;width:231.0px;height:2.5px;background:linear-gradient(90deg,#0001ff,#0000ff,#0000ff,#0000ff,#0000ff,#0400ff,#0a00ff,#0f00ff,#1400ff,#1a00ff,#1f00ff,#2400ff,#2a00ff,#2f00ff,#3500ff,#3a00ff,#4000ff,#4500ff,#4b00ff,#5100ff,#5600ff,#5c00ff,#6200ff,#6700ff,#6d00ff,#7300ff,#7800ff,#7e00ff,#8400ff,#8a00ff,#9000ff,#9500ff)"></div><div style="left:181.5px;top:494.0px;width:228.0px;height:2.5px;background:linear-gradient(90deg,#0001ff,#0000ff,#0000ff,#0000ff,#0000ff,#0500ff,#0a00ff,#0f00ff,#1400ff,#1a00ff,#1f00ff,#2400ff,#2a00ff,#2f00ff,#3400ff,#3a00ff,#3f00ff,#4500ff,#4a00ff,#5000ff,#5500ff,#5b00ff,#6000ff,#6600ff,#6b00ff,#7100ff,#7700ff,#7c00ff,#8200ff,#8800ff,#8d00ff,#9300ff)"></div><div style="left:182.9px;top:496.0px;width:224.9px;height:2.5px;background:linear-gradient(90deg,#0000ff,#0000ff,#0000ff,#0000ff,#0100ff,#0600ff,#0b00ff,#1100ff,#1600ff,#1b00ff,#2100ff,#2600ff,#2c00ff,#3100ff,#3600ff,#3c00ff,#4100ff,#4700ff,#4d00ff,#5200ff,#5800ff,#5d00ff,#6300ff,#6900ff,#6e00ff,#7400ff,#7a00ff,#8000ff,#8500ff,#8b00ff,#9100ff)"></div><div style="left:184.3px;top:498.0px;width:221.8px;height:2.5px;background:linear-gradient(90deg,#0000ff,#0000ff,#0000ff,#0000ff,#0100ff,#0600ff,#0b00ff,#1100ff,#1600ff,#1b00ff,#2100ff,#2600ff,#2b00ff,#3100ff,#3600ff,#3b00ff,#4100ff,#4600ff,#4c00ff,#5100ff,#5700ff,#5c00ff,#6200ff,#6700ff,#6d00ff,#7200ff,#7800ff,#7e00ff,#8300ff,#8900ff,#8f00ff)"></div><div style="left:185.7px;top:500.0px;width:218.8px;height:2.5px;background:linear-gradient(90deg,#0000ff,#0000ff,#0000ff,#0000ff,#0200ff,#0700ff,#0c00ff,#1100ff,#1600ff,#1b00ff,#2100ff,#2600ff,#2b00ff,#3000ff,#3600ff,#3b00ff,#4000ff,#4600ff,#4b00ff,#5000ff,#5600ff,#5b00ff,#6000ff,#6600ff,#6b00ff,#7100ff,#7600ff,#7c00ff,#8100ff,#8700ff,#8d00ff)"></div><div style="left:187.1px;top:502.0px;width:215.7px;height:2.5px;background:linear-gradient(90deg,#0000ff,#0000ff,#0000ff,#0000ff,#0300ff,#0800ff,#0d00ff,#1200ff,#1800ff,#1d00ff,#2200ff,#2800ff,#2d00ff,#3200ff,#3800ff,#3d00ff,#4200ff,#4800ff,#4d00ff,#5300ff,#5800ff,#5e00ff,#6300ff,#6900ff,#6e00ff,#7400ff,#7a00ff,#7f00ff,#8500ff,#8b00ff)"></div><div style="left:188.6px;top:504.0px;width:212.5px;height:2.5px;background:linear-gradient(90deg,#0000ff,#0000ff,#0000ff,#0000ff,#0300ff,#0800ff,#0e00ff,#1300ff,#1800ff,#1d00ff,#2200ff,#2700ff,#2d00ff,#3200ff,#3700ff,#3c00ff,#4200ff,#4700ff,#4c00ff,#5200ff,#5700ff,#5d00ff,#6200ff,#6700ff,#6d00ff,#7200ff,#7800ff,#7d00ff,#8300ff,#8800ff)"></div><div style="left:190.1px;top:506.0px;width:209.4px;height:2.5px;background:linear-gradient(90deg,#0000ff,#0000ff,#0000ff,#0000ff,#0500ff,#0a00ff,#0f00ff,#1400ff,#1900ff,#1f00ff,#2400ff,#2900ff,#2f00ff,#3400ff,#3900ff,#3f00ff,#4400ff,#4900ff,#4f00ff,#5400ff,#5a00ff,#5f00ff,#6500ff,#6a00ff,#7000ff,#7500ff,#7b00ff,#8100ff,#8600ff)"></div><div style="left:191.6px;top:508.0px;width:206.2px;height:2.5px;background:linear-gradient(90deg,#0000ff,#0000ff,#0000ff,#0000ff,#0500ff,#0a00ff,#0f00ff,#1400ff,#1900ff,#1f00ff,#2400ff,#2900ff,#2e00ff,#3300ff,#3900ff,#3e00ff,#4300ff,#4900ff,#4e00ff,#5300ff,#5900ff,#5e00ff,#6300ff,#6900ff,#6e00ff,#7400ff,#7900ff,#7f00ff,#8400ff)"></div><div style="left:193.1px;top:510.0px;width:203.0px;height:2.5px;background:linear-gradient(90deg,#0000ff,#0000ff,#0000ff,#0100ff,#0600ff,#0b00ff,#1000ff,#1500ff,#1a00ff,#1f00ff,#2400ff,#2900ff,#2e00ff,#3300ff,#3800ff,#3d00ff,#4300ff,#4800ff,#4d00ff,#5200ff,#5800ff,#5d00ff,#6200ff,#6700ff,#6d00ff,#7200ff,#7700ff,#7d00ff,#8200ff)"></div><div style="left:194.6px;top:512.0px;width:199.8px;height:2.5px;background:linear-gradient(90deg,#0000ff,#0000ff,#0000ff,#0200ff,#0700ff,#0c00ff,#1100ff,#1600ff,#1b00ff,#2000ff,#2600ff,#2b00ff,#3000ff,#3500ff,#3a00ff,#4000ff,#4500ff,#4a00ff,#5000ff,#5500ff,#5a00ff,#6000ff,#6500ff,#6a00ff,#7000ff,#7500ff,#7b00ff,#8000ff)"></div><div style="left:196.2px;top:514.0px;width:196.6px;height:2.5px;background:linear-gradient(90deg,#0000ff,#0000ff,#0000ff,#0200ff,#0700ff,#0c00ff,#1100ff,#1600ff,#1b00ff,#2000ff,#2500ff,#2b00ff,#3000ff,#3500ff,#3a00ff,#3f00ff,#4400ff,#4900ff,#4f00ff,#5400ff,#5900ff,#5e00ff,#6400ff,#6900ff,#6e00ff,#7300ff,#7900ff,#7e00ff)"></div><div style="left:197.8px;top:516.0px;width:193.3px;height:2.5px;background:linear-gradient(90deg,#0000ff,#0000ff,#0000ff,#0400ff,#0900ff,#0e00ff,#1300ff,#1800ff,#1d00ff,#2200ff,#2700ff,#2c00ff,#3200ff,#3700ff,#3c00ff,#4100ff,#4700ff,#4c00ff,#5100ff,#5600ff,#5c00ff,#6100ff,#6700ff,#6c00ff,#7100ff,#7700ff,#7c00ff)"></div><div style="left:199.4px;top:518.0px;width:190.0px;height:2.5px;background:linear-gradient(90deg,#0000ff,#0000ff,#0000ff,#0400ff,#0900ff,#0e00ff,#1300ff,#1800ff,#1d00ff,#2200ff,#2700ff,#2c00ff,#3100ff,#3600ff,#3b00ff,#4100ff,#4600ff,#4b00ff,#5000ff,#5500ff,#5b00ff,#6000ff,#6500ff,#6a00ff,#7000ff,#7500ff,#7a00ff)"></div><div style="left:201.0px;top:520.0px;width:186.7px;height:2.5px;background:linear-gradient(90deg,#0000ff,#0000ff,#0000ff,#0500ff,#0a00ff,#0f00ff,#1500ff,#1a00ff,#1f00ff,#2400ff,#2900ff,#2e00ff,#3300ff,#3900ff,#3e00ff,#4300ff,#4800ff,#4d00ff,#5300ff,#5800ff,#5d00ff,#6300ff,#6800ff,#6d00ff,#7300ff,#7800ff)"></div><div style="left:202.7px;top:522.0px;width:183.4px;height:2.5px;background:linear-gradient(90deg,#0000ff,#0000ff,#0100ff,#0600ff,#0b00ff,#1000ff,#1500ff,#1a00ff,#1f00ff,#2400ff,#2900ff,#2e00ff,#3300ff,#3800ff,#3d00ff,#4200ff,#4700ff,#4d00ff,#5200ff,#5700ff,#5c00ff,#6100ff,#6700ff,#6c00ff,#7100ff,#7600ff)"></div><div style="left:204.4px;top:524.0px;width:180.0px;height:2.5px;background:linear-gradient(90deg,#0000ff,#0000ff,#0200ff,#0700ff,#0b00ff,#1000ff,#1500ff,#1a00ff,#1f00ff,#2400ff,#2900ff,#2e00ff,#3300ff,#3800ff,#3d00ff,#4200ff,#4700ff,#4c00ff,#5100ff,#5600ff,#5b00ff,#6000ff,#6500ff,#6a00ff,#6f00ff,#7400ff)"></div><div style="left:206.1px;top:526.0px;width:176.7px;height:2.5px;background:linear-gradient(90deg,#0000ff,#0000ff,#0300ff,#0800ff,#0d00ff,#1200ff,#1700ff,#1c00ff,#2100ff,#2600ff,#2b00ff,#3000ff,#3500ff,#3a00ff,#3f00ff,#4400ff,#4900ff,#4e00ff,#5300ff,#5800ff,#5e00ff,#6300ff,#6800ff,#6d00ff,#7300ff)"></div><div style="left:207.8px;top:528.0px;width:173.2px;height:2.5px;background:linear-gradient(90deg,#0000ff,#0000ff,#0400ff,#0900ff,#0d00ff,#1200ff,#1700ff,#1c00ff,#2100ff,#2600ff,#2a00ff,#2f00ff,#3400ff,#3900ff,#3e00ff,#4300ff,#4800ff,#4d00ff,#5200ff,#5700ff,#5c00ff,#6100ff,#6600ff,#6c00ff,#7100ff)"></div><div style="left:209.6px;top:530.0px;width:169.8px;height:2.5px;background:linear-gradient(90deg,#0000ff,#0000ff,#0500ff,#0a00ff,#0f00ff,#1400ff,#1900ff,#1d00ff,#2200ff,#2700ff,#2c00ff,#3100ff,#3600ff,#3b00ff,#4100ff,#4600ff,#4b00ff,#5000ff,#5500ff,#5a00ff,#5f00ff,#6400ff,#6a00ff,#6f00ff)"></div><div style="left:211.4px;top:532.0px;width:166.4px;height:2.5px;background:linear-gradient(90deg,#0000ff,#0100ff,#0600ff,#0a00ff,#0f00ff,#1400ff,#1900ff,#1e00ff,#2300ff,#2700ff,#2c00ff,#3100ff,#3600ff,#3b00ff,#4000ff,#4500ff,#4a00ff,#4f00ff,#5400ff,#5900ff,#5e00ff,#6300ff,#6800ff,#6d00ff)"></div><div style="left:213.2px;top:534.0px;width:162.9px;height:2.5px;background:linear-gradient(90deg,#0000ff,#0200ff,#0700ff,#0c00ff,#1100ff,#1600ff,#1a00ff,#1f00ff,#2400ff,#2900ff,#2e00ff,#3300ff,#3800ff,#3d00ff,#4200ff,#4700ff,#4c00ff,#5100ff,#5700ff,#5c00ff,#6100ff,#6600ff,#6b00ff)"></div><div style="left:215.0px;top:536.0px;width:159.4px;height:2.5px;background:linear-gradient(90deg,#0000ff,#0300ff,#0800ff,#0c00ff,#1100ff,#1600ff,#1b00ff,#2000ff,#2400ff,#2900ff,#2e00ff,#3300ff,#3800ff,#3d00ff,#4200ff,#4600ff,#4b00ff,#5000ff,#5500ff,#5a00ff,#5f00ff,#6400ff,#6900ff)"></div><div style="left:216.9px;top:538.0px;width:155.9px;height:2.5px;background:linear-gradient(90deg,#0000ff,#0400ff,#0900ff,#0e00ff,#1300ff,#1700ff,#1c00ff,#2100ff,#2600ff,#2b00ff,#3000ff,#3500ff,#3a00ff,#3f00ff,#4400ff,#4900ff,#4e00ff,#5300ff,#5800ff,#5d00ff,#6200ff,#6800ff)"></div><div style="left:218.7px;top:540.0px;width:152.3px;height:2.5px;background:linear-gradient(90deg,#0000ff,#0500ff,#0a00ff,#0e00ff,#1300ff,#1800ff,#1d00ff,#2100ff,#2600ff,#2b00ff,#3000ff,#3500ff,#3900ff,#3e00ff,#4300ff,#4800ff,#4d00ff,#5200ff,#5700ff,#5c00ff,#6100ff,#6600ff)"></div><div style="left:220.6px;top:542.0px;width:148.8px;height:2.5px;background:linear-gradient(90deg,#0100ff,#0600ff,#0b00ff,#1000ff,#1500ff,#1900ff,#1e00ff,#2300ff,#2800ff,#2d00ff,#3200ff,#3700ff,#3c00ff,#4100ff,#4600ff,#4b00ff,#5000ff,#5500ff,#5a00ff,#5f00ff,#6400ff)"></div><div style="left:222.5px;top:544.0px;width:145.2px;height:2.5px;background:linear-gradient(90deg,#0200ff,#0700ff,#0c00ff,#1000ff,#1500ff,#1a00ff,#1f00ff,#2300ff,#2800ff,#2d00ff,#3200ff,#3600ff,#3b00ff,#4000ff,#4500ff,#4a00ff,#4f00ff,#5400ff,#5800ff,#5d00ff,#6200ff)"></div><div style="left:224.4px;top:546.0px;width:141.6px;height:2.5px;background:linear-gradient(90deg,#0300ff,#0800ff,#0d00ff,#1200ff,#1700ff,#1b00ff,#2000ff,#2500ff,#2a00ff,#2f00ff,#3400ff,#3900ff,#3e00ff,#4300ff,#4800ff,#4c00ff,#5100ff,#5700ff,#5c00ff,#6100ff)"></div><div style="left:226.3px;top:548.0px;width:138.1px;height:2.5px;background:linear-gradient(90deg,#0400ff,#0900ff,#0e00ff,#1200ff,#1700ff,#1c00ff,#2000ff,#2500ff,#2a00ff,#2f00ff,#3300ff,#3800ff,#3d00ff,#4200ff,#4700ff,#4b00ff,#5000ff,#5500ff,#5a00ff,#5f00ff)"></div><div style="left:228.2px;top:550.0px;width:134.5px;height:2.5px;background:linear-gradient(90deg,#0500ff,#0a00ff,#0f00ff,#1400ff,#1800ff,#1d00ff,#2200ff,#2700ff,#2c00ff,#3100ff,#3600ff,#3a00ff,#3f00ff,#4400ff,#4900ff,#4e00ff,#5300ff,#5800ff,#5d00ff)"></div><div style="left:230.1px;top:552.0px;width:130.9px;height:2.5px;background:linear-gradient(90deg,#0600ff,#0b00ff,#1000ff,#1400ff,#1900ff,#1e00ff,#2200ff,#2700ff,#2c00ff,#3000ff,#3500ff,#3a00ff,#3f00ff,#4300ff,#4800ff,#4d00ff,#5200ff,#5700ff,#5c00ff)"></div><div style="left:232.0px;top:554.0px;width:127.4px;height:2.5px;background:linear-gradient(90deg,#0700ff,#0c00ff,#1100ff,#1600ff,#1a00ff,#1f00ff,#2400ff,#2900ff,#2e00ff,#3200ff,#3700ff,#3c00ff,#4100ff,#4600ff,#4b00ff,#5000ff,#5500ff,#5a00ff)"></div><div style="left:233.9px;top:556.0px;width:123.8px;height:2.5px;background:linear-gradient(90deg,#0800ff,#0d00ff,#1200ff,#1600ff,#1b00ff,#1f00ff,#2400ff,#2900ff,#2d00ff,#3200ff,#3700ff,#3c00ff,#4000ff,#4500ff,#4a00ff,#4f00ff,#5300ff,#5800ff)"></div><div style="left:235.7px;top:558.0px;width:120.3px;height:2.5px;background:linear-gradient(90deg,#0900ff,#0e00ff,#1200ff,#1700ff,#1b00ff,#2000ff,#2400ff,#2900ff,#2d00ff,#3200ff,#3600ff,#3b00ff,#3f00ff,#4400ff,#4900ff,#4d00ff,#5200ff,#5700ff)"></div><div style="left:237.5px;top:560.0px;width:116.8px;height:2.5px;background:linear-gradient(90deg,#0a00ff,#0f00ff,#1300ff,#1800ff,#1d00ff,#2100ff,#2600ff,#2a00ff,#2f00ff,#3400ff,#3800ff,#3d00ff,#4200ff,#4700ff,#4b00ff,#5000ff,#5500ff)"></div><div style="left:239.3px;top:562.0px;width:113.4px;height:2.5px;background:linear-gradient(90deg,#0b00ff,#1000ff,#1400ff,#1800ff,#1d00ff,#2100ff,#2600ff,#2a00ff,#2f00ff,#3300ff,#3800ff,#3c00ff,#4100ff,#4600ff,#4a00ff,#4f00ff,#5300ff)"></div><div style="left:241.1px;top:564.0px;width:109.9px;height:2.5px;background:linear-gradient(90deg,#0c00ff,#1100ff,#1500ff,#1a00ff,#1e00ff,#2300ff,#2800ff,#2c00ff,#3100ff,#3500ff,#3a00ff,#3f00ff,#4400ff,#4800ff,#4d00ff,#5200ff)"></div><div style="left:242.9px;top:566.0px;width:106.5px;height:2.5px;background:linear-gradient(90deg,#0d00ff,#1100ff,#1600ff,#1a00ff,#1f00ff,#2300ff,#2700ff,#2c00ff,#3000ff,#3500ff,#3900ff,#3e00ff,#4200ff,#4700ff,#4c00ff,#5000ff)"></div><div style="left:244.7px;top:568.0px;width:103.0px;height:2.5px;background:linear-gradient(90deg,#0e00ff,#1200ff,#1700ff,#1b00ff,#2000ff,#2500ff,#2900ff,#2e00ff,#3200ff,#3700ff,#3c00ff,#4000ff,#4500ff,#4a00ff,#4f00ff)"></div><div style="left:246.5px;top:570.0px;width:99.5px;height:2.5px;background:linear-gradient(90deg,#0f00ff,#1300ff,#1700ff,#1c00ff,#2000ff,#2500ff,#2900ff,#2e00ff,#3200ff,#3600ff,#3b00ff,#3f00ff,#4400ff,#4900ff,#4d00ff)"></div><div style="left:248.4px;top:572.0px;width:95.9px;height:2.5px;background:linear-gradient(90deg,#1000ff,#1400ff,#1900ff,#1d00ff,#2200ff,#2600ff,#2b00ff,#3000ff,#3400ff,#3900ff,#3d00ff,#4200ff,#4700ff,#4c00ff)"></div><div style="left:250.4px;top:574.0px;width:92.3px;height:2.5px;background:linear-gradient(90deg,#1100ff,#1500ff,#1900ff,#1e00ff,#2200ff,#2600ff,#2b00ff,#2f00ff,#3400ff,#3800ff,#3d00ff,#4100ff,#4500ff,#4a00ff)"></div><div style="left:252.3px;top:576.0px;width:88.6px;height:2.5px;background:linear-gradient(90deg,#1200ff,#1600ff,#1b00ff,#1f00ff,#2400ff,#2800ff,#2d00ff,#3100ff,#3600ff,#3b00ff,#3f00ff,#4400ff,#4800ff)"></div><div style="left:254.4px;top:578.0px;width:84.9px;height:2.5px;background:linear-gradient(90deg,#1300ff,#1700ff,#1b00ff,#1f00ff,#2400ff,#2800ff,#2d00ff,#3100ff,#3500ff,#3a00ff,#3e00ff,#4300ff,#4700ff)"></div><div style="left:256.4px;top:580.0px;width:81.2px;height:2.5px;background:linear-gradient(90deg,#1400ff,#1800ff,#1d00ff,#2100ff,#2600ff,#2a00ff,#2f00ff,#3300ff,#3800ff,#3c00ff,#4100ff,#4500ff)"></div><div style="left:258.6px;top:582.0px;width:77.4px;height:2.5px;background:linear-gradient(90deg,#1500ff,#1900ff,#1d00ff,#2100ff,#2600ff,#2a00ff,#2e00ff,#3300ff,#3700ff,#3b00ff,#4000ff,#4400ff)"></div><div style="left:260.7px;top:584.0px;width:73.5px;height:2.5px;background:linear-gradient(90deg,#1600ff,#1a00ff,#1f00ff,#2300ff,#2700ff,#2c00ff,#3000ff,#3500ff,#3900ff,#3e00ff,#4300ff)"></div><div style="left:263.0px;top:586.0px;width:69.6px;height:2.5px;background:linear-gradient(90deg,#1700ff,#1b00ff,#1f00ff,#2300ff,#2800ff,#2c00ff,#3000ff,#3400ff,#3900ff,#3d00ff,#4100ff)"></div><div style="left:265.3px;top:588.0px;width:65.7px;height:2.5px;background:linear-gradient(90deg,#1800ff,#1c00ff,#2100ff,#2500ff,#2900ff,#2e00ff,#3200ff,#3700ff,#3b00ff,#4000ff)"></div><div style="left:267.6px;top:590.0px;width:61.7px;height:2.5px;background:linear-gradient(90deg,#1900ff,#1d00ff,#2100ff,#2500ff,#2900ff,#2e00ff,#3200ff,#3600ff,#3a00ff,#3e00ff)"></div><div style="left:269.9px;top:592.0px;width:57.7px;height:2.5px;background:linear-gradient(90deg,#1a00ff,#1e00ff,#2300ff,#2700ff,#2b00ff,#3000ff,#3400ff,#3800ff,#3d00ff)"></div><div style="left:272.2px;top:594.0px;width:53.8px;height:2.5px;background:linear-gradient(90deg,#1b00ff,#1f00ff,#2300ff,#2700ff,#2b00ff,#2f00ff,#3300ff,#3700ff,#3b00ff)"></div><div style="left:274.4px;top:596.0px;width:49.9px;height:2.5px;background:linear-gradient(90deg,#1c00ff,#2000ff,#2500ff,#2900ff,#2d00ff,#3100ff,#3600ff,#3a00ff)"></div><div style="left:276.6px;top:598.0px;width:46.0px;height:2.5px;background:linear-gradient(90deg,#1d00ff,#2100ff,#2500ff,#2900ff,#2d00ff,#3100ff,#3500ff,#3900ff)"></div><div style="left:278.7px;top:600.0px;width:42.3px;height:2.5px;background:linear-gradient(90deg,#1e00ff,#2200ff,#2700ff,#2b00ff,#2f00ff,#3300ff,#3700ff)"></div><div style="left:280.7px;top:602.0px;width:38.5px;height:2.5px;background:linear-gradient(90deg,#1f00ff,#2300ff,#2700ff,#2b00ff,#2e00ff,#3200ff,#3600ff)"></div><div style="left:282.8px;top:604.0px;width:34.8px;height:2.5px;background:linear-gradient(90deg,#2000ff,#2400ff,#2800ff,#2c00ff,#3000ff,#3500ff)"></div><div style="left:284.9px;top:606.0px;width:31.0px;height:2.5px;background:linear-gradient(90deg,#2100ff,#2500ff,#2800ff,#2c00ff,#3000ff,#3300ff)"></div><div style="left:287.0px;top:608.0px;width:27.3px;height:2.5px;background:linear-gradient(90deg,#2200ff,#2600ff,#2a00ff,#2e00ff,#3200ff)"></div><div style="left:289.0px;top:610.0px;width:23.5px;height:2.5px;background:linear-gradient(90deg,#2300ff,#2600ff,#2a00ff,#2d00ff,#3100ff)"></div><div style="left:291.2px;top:612.0px;width:19.7px;height:2.5px;background:linear-gradient(90deg,#2400ff,#2800ff,#2b00ff,#2f00ff)"></div><div style="left:294.7px;top:614.0px;width:14.5px;height:2.5px;background:linear-gradient(90deg,#2600ff,#2a00ff,#2e00ff)"></div><div style="left:299.1px;top:616.0px;width:8.5px;height:2.5px;background:linear-gradient(90deg,#2800ff,#2a00ff,#2d00ff)"></div><div style="left:0;top:0;width:711.5px;height:635.2px;background:rgba(0,0,0,0.4);clip-path:polygon(evenodd,305.9px 616.2px,304.1px 617.6px,293.4px 612.7px,291.7px 611.1px,289.8px 609.3px,288.5px 608.0px,286.9px 606.6px,285.3px 605.0px,283.5px 603.3px,281.6px 601.4px,279.5px 599.4px,277.2px 597.2px,274.9px 595.1px,272.4px 592.9px,269.9px 590.7px,267.3px 588.4px,265.9px 587.2px,264.5px 586.0px,263.0px 584.7px,261.5px 583.3px,259.9px 581.9px,258.3px 580.4px,256.7px 578.8px,254.9px 577.1px,253.2px 575.3px,251.3px 573.4px,249.4px 571.5px,247.4px 569.4px,245.4px 567.1px,243.3px 564.8px,241.1px 562.3px,238.8px 559.7px,236.5px 557.2px,234.1px 554.7px,231.7px 552.1px,229.2px 549.5px,226.7px 546.9px,224.2px 544.2px,221.5px 541.4px,218.9px 538.5px,216.1px 535.6px,213.3px 532.5px,210.4px 529.3px,207.5px 525.9px,204.5px 522.4px,201.5px 518.7px,198.4px 514.8px,195.2px 510.8px,191.9px 506.5px,188.6px 502.0px,185.2px 497.2px,181.7px 492.2px,178.2px 486.9px,174.6px 481.3px,170.9px 475.4px,167.0px 469.2px,163.0px 462.5px,158.7px 455.4px,154.4px 448.0px,149.8px 440.3px,145.1px 432.3px,140.4px 424.0px,135.5px 415.5px,130.6px 406.8px,125.6px 397.9px,120.6px 388.9px,115.6px 379.8px,110.6px 370.6px,105.6px 361.3px,100.7px 352.0px,95.8px 342.8px,91.0px 333.5px,86.4px 324.4px,81.9px 315.3px,77.5px 306.4px,73.3px 297.6px,69.2px 289.0px,65.4px 280.6px,61.8px 272.5px,58.4px 264.5px,55.0px 256.3px,51.7px 248.1px,48.4px 239.9px,45.3px 231.5px,42.2px 223.2px,39.2px 214.9px,36.3px 206.6px,33.4px 198.3px,30.7px 190.1px,28.0px 181.9px,25.5px 173.9px,23.1px 166.0px,20.7px 158.2px,18.5px 150.6px,16.4px 143.1px,14.4px 135.9px,12.5px 128.8px,10.8px 122.0px,9.2px 115.5px,7.7px 109.2px,6.4px 103.2px,5.2px 97.6px,4.1px 92.2px,3.2px 87.2px,2.5px 82.5px,1.9px 78.0px,1.5px 73.8px,1.2px 69.8px,1.1px 66.0px,1.1px 62.5px,1.3px 59.2px,1.5px 56.1px,1.9px 53.2px,2.4px 50.4px,2.9px 47.8px,3.6px 45.3px,4.3px 43.0px,5.1px 40.8px,6.0px 38.7px,6.9px 36.7px,7.9px 34.8px,9.0px 33.0px,10.0px 31.2px,11.1px 29.5px,12.3px 27.9px,13.4px 26.2px,14.5px 24.6px,15.8px 23.1px,17.1px 21.7px,18.4px 20.5px,19.9px 19.4px,23.1px 17.7px,26.6px 16.4px,30.3px 15.6px,34.3px 15.0px,38.3px 14.7px,42.5px 14.6px,46.7px 14.6px,51.0px 14.5px,55.2px 14.5px,59.4px 14.2px,63.5px 14.0px,67.6px 13.9px,71.8px 13.9px,76.0px 14.0px,80.3px 14.2px,84.7px 14.5px,89.1px 14.8px,93.7px 15.2px,96.0px 15.4px,98.3px 15.7px,100.7px 15.9px,103.1px 16.1px,105.5px 16.3px,107.9px 16.6px,110.4px 16.8px,113.0px 17.0px,115.5px 17.3px,118.1px 17.5px,120.6px 17.8px,123.2px 18.0px,125.9px 18.3px,128.5px 18.6px,131.1px 18.9px,133.8px 19.2px,136.5px 19.5px,139.3px 19.8px,142.0px 20.1px,144.8px 20.4px,147.7px 20.8px,150.5px 21.1px,153.4px 21.5px,156.4px 21.8px,159.3px 22.2px,162.4px 22.6px,165.4px 23.0px,168.6px 23.4px,171.7px 23.8px,175.0px 24.2px,178.2px 24.6px,181.6px 25.0px,184.9px 25.4px,188.3px 25.9px,191.8px 26.3px,195.3px 26.7px,198.8px 27.2px,202.4px 27.7px,206.0px 28.1px,209.7px 28.6px,213.3px 29.1px,217.1px 29.6px,220.9px 30.1px,224.7px 30.6px,228.5px 31.1px,232.5px 31.6px,236.4px 32.1px,240.4px 32.7px,244.5px 33.2px,248.5px 33.8px,252.7px 34.3px,256.9px 34.9px,261.1px 35.4px,265.4px 36.0px,269.7px 36.6px,274.1px 37.2px,278.5px 37.7px,283.1px 38.3px,287.7px 38.9px,292.3px 39.6px,297.0px 40.2px,301.8px 40.8px,306.6px 41.5px,311.5px 42.1px,316.5px 42.8px,321.4px 43.4px,326.4px 44.1px,331.5px 44.8px,336.5px 45.5px,341.6px 46.1px,346.8px 46.8px,351.9px 47.5px,357.0px 48.2px,362.2px 48.9px,367.3px 49.6px,372.5px 50.3px,377.7px 51.0px,382.8px 51.6px,387.9px 52.3px,393.1px 53.0px,398.2px 53.7px,403.4px 54.4px,408.7px 55.1px,414.0px 55.8px,419.4px 56.5px,424.8px 57.2px,430.2px 58.0px,435.7px 58.7px,441.1px 59.4px,446.6px 60.2px,452.1px 60.9px,457.5px 61.6px,463.0px 62.3px,468.4px 63.1px,473.8px 63.8px,479.1px 64.5px,484.4px 65.2px,489.6px 65.9px,494.8px 66.6px,499.9px 67.3px,504.9px 67.9px,509.8px 68.6px,514.6px 69.2px,519.4px 69.9px,524.0px 70.5px,528.6px 71.1px,533.2px 71.7px,537.7px 72.3px,542.2px 72.9px,546.6px 73.5px,551.0px 74.1px,555.4px 74.7px,559.7px 75.2px,563.9px 75.8px,568.1px 76.4px,572.2px 76.9px,576.3px 77.5px,580.3px 78.0px,584.3px 78.5px,588.2px 79.0px,592.0px 79.5px,595.8px 80.0px,599.5px 80.5px,603.1px 81.0px,606.7px 81.5px,610.1px 82.0px,613.5px 82.4px,616.9px 82.9px,620.1px 83.3px,623.3px 83.7px,626.3px 84.1px,629.3px 84.5px,632.3px 84.9px,635.1px 85.3px,637.9px 85.7px,640.6px 86.0px,643.2px 86.4px,645.8px 86.7px,648.3px 87.0px,650.8px 87.4px,653.2px 87.7px,655.6px 88.0px,657.9px 88.3px,660.2px 88.6px,662.4px 88.9px,666.7px 89.5px,670.9px 90.1px,674.9px 90.6px,678.9px 91.1px,682.7px 91.6px,686.2px 92.1px,689.6px 92.5px,692.8px 93.0px,695.8px 93.4px,698.7px 93.8px,701.4px 94.1px,704.0px 94.5px,706.4px 94.8px,708.8px 95.1px,711.0px 95.4px,714.1px 95.8px,716.7px 96.2px,719.0px 96.5px,721.6px 96.8px,723.9px 97.1px,726.3px 97.5px,728.7px 97.8px,731.0px 98.1px,733.3px 98.4px,735.6px 98.7px,737.9px 99.0px,305.9px 616.2px,534.4px 81.8px,148.2px 39.9px,208.0px 468.1px,534.4px 81.8px,305.9px 616.2px)"></div></div>
<div style="left:709.0px;top:862.5px;width:379.5px;height:255.5px;overflow:hidden"><div style="left:0.0px;top:0.0px;width:379.5px;height:4.5px;background:linear-gradient(90deg,#89ffcf,#90ffce,#96ffce,#9dffce,#a4ffcd,#abffcd,#b2ffcd,#b9ffcd,#c0ffcc,#c8ffcc,#cfffcc,#d7ffcb,#deffcb,#e6ffcb,#eeffca,#f6ffca,#feffca,#fff8c4,#fff1be,#ffe9b8,#ffe3b2)"></div><div style="left:0.0px;top:4.0px;width:379.5px;height:4.5px;background:linear-gradient(90deg,#8affd0,#91ffd0,#97ffcf,#9effcf,#a5ffcf,#acffcf,#b3ffce,#baffce,#c2ffce,#c9ffcd,#d1ffcd,#d8ffcd,#e0ffcc,#e8ffcc,#efffcc,#f7ffcb,#ffffcb,#fff7c4,#ffefbe,#ffe8b8,#ffe1b2)"></div><div style="left:0.0px;top:8.0px;width:379.5px;height:4.5px;background:linear-gradient(90deg,#8bffd1,#92ffd1,#99ffd1,#9fffd1,#a6ffd0,#adffd0,#b4ffd0,#bcffcf,#c3ffcf,#caffcf,#d2ffce,#d9ffce,#e1ffce,#e9ffce,#f1ffcd,#f9ffcd,#fffdcb,#fff5c4,#ffeebe,#ffe7b8,#ffe0b2)"></div><div style="left:0.0px;top:12.0px;width:379.5px;height:4.5px;background:linear-gradient(90deg,#8cffd3,#93ffd2,#9affd2,#a1ffd2,#a7ffd2,#afffd1,#b6ffd1,#bdffd1,#c4ffd1,#ccffd0,#d3ffd0,#dbffd0,#e3ffcf,#eaffcf,#f2ffcf,#faffce,#fffbcb,#fff4c5,#ffecbe,#ffe5b8,#ffdeb3)"></div><div style="left:0.0px;top:16.0px;width:379.5px;height:4.5px;background:linear-gradient(90deg,#8dffd4,#94ffd4,#9bffd4,#a2ffd3,#a9ffd3,#b0ffd3,#b7ffd3,#beffd2,#c6ffd2,#cdffd2,#d5ffd1,#dcffd1,#e4ffd1,#ecffd1,#f4ffd0,#fcffd0,#fffacb,#fff2c5,#ffebbf,#ffe4b9,#ffddb3)"></div><div style="left:0.0px;top:20.0px;width:379.5px;height:4.5px;background:linear-gradient(90deg,#8effd6,#95ffd5,#9cffd5,#a3ffd5,#aaffd5,#b1ffd4,#b8ffd4,#bfffd4,#c7ffd3,#ceffd3,#d6ffd3,#deffd3,#e6ffd2,#edffd2,#f5ffd2,#feffd2,#fff8cc,#fff1c5,#ffe9bf,#ffe2b9,#ffdcb3)"></div><div style="left:0.0px;top:24.0px;width:379.5px;height:4.5px;background:linear-gradient(90deg,#8fffd7,#96ffd7,#9dffd6,#a4ffd6,#abffd6,#b2ffd6,#b9ffd5,#c1ffd5,#c8ffd5,#d0ffd5,#d7ffd4,#dfffd4,#e7ffd4,#efffd4,#f7ffd3,#ffffd3,#fff7cc,#ffefc5,#ffe8bf,#ffe1b9,#ffdab3)"></div><div style="left:0.0px;top:28.0px;width:379.5px;height:4.5px;background:linear-gradient(90deg,#90ffd8,#97ffd8,#9effd8,#a5ffd8,#acffd7,#b3ffd7,#bbffd7,#c2ffd7,#caffd6,#d1ffd6,#d9ffd6,#e1ffd6,#e8ffd5,#f0ffd5,#f9ffd5,#fffdd3,#fff5cc,#ffeec6,#ffe6bf,#ffe0b9,#ffd9b4)"></div><div style="left:0.0px;top:32.0px;width:379.5px;height:4.5px;background:linear-gradient(90deg,#91ffda,#98ffda,#9fffd9,#a6ffd9,#adffd9,#b5ffd9,#bcffd8,#c3ffd8,#cbffd8,#d3ffd8,#daffd7,#e2ffd7,#eaffd7,#f2ffd7,#faffd6,#fffcd3,#fff4cc,#ffecc6,#ffe5c0,#ffdeba,#ffd8b4)"></div><div style="left:0.0px;top:36.0px;width:379.5px;height:4.5px;background:linear-gradient(90deg,#92ffdb,#99ffdb,#a0ffdb,#a7ffdb,#afffda,#b6ffda,#bdffda,#c5ffda,#ccffd9,#d4ffd9,#dcffd9,#e4ffd9,#ecffd9,#f4ffd8,#fcffd8,#fffad4,#fff2cd,#ffebc6,#ffe4c0,#ffddba,#ffd6b4)"></div><div style="left:0.0px;top:40.0px;width:379.5px;height:4.5px;background:linear-gradient(90deg,#93ffdd,#9affdd,#a1ffdc,#a9ffdc,#b0ffdc,#b7ffdc,#beffdb,#c6ffdb,#ceffdb,#d5ffdb,#ddffdb,#e5ffda,#edffda,#f5ffda,#fdffda,#fff8d4,#fff1cd,#ffe9c6,#ffe2c0,#ffdbba,#ffd5b4)"></div><div style="left:0.0px;top:44.0px;width:379.5px;height:4.5px;background:linear-gradient(90deg,#95ffde,#9cffde,#a3ffde,#aaffde,#b1ffdd,#b8ffdd,#c0ffdd,#c7ffdd,#cfffdd,#d7ffdc,#dfffdc,#e7ffdc,#efffdc,#f7ffdb,#ffffdb,#fff7d4,#ffefcd,#ffe8c7,#ffe1c0,#ffdaba,#ffd4b5)"></div><div style="left:0.0px;top:48.0px;width:379.5px;height:4.5px;background:linear-gradient(90deg,#96ffe0,#9dffdf,#a4ffdf,#abffdf,#b2ffdf,#baffdf,#c1ffdf,#c9ffde,#d0ffde,#d8ffde,#e0ffde,#e8ffdd,#f0ffdd,#f8ffdd,#fffddb,#fff5d4,#ffeecd,#ffe6c7,#ffdfc1,#ffd9bb,#ffd2b5)"></div><div style="left:0.0px;top:52.0px;width:379.5px;height:4.5px;background:linear-gradient(90deg,#97ffe1,#9effe1,#a5ffe1,#acffe1,#b3ffe0,#bbffe0,#c2ffe0,#caffe0,#d2ffe0,#daffdf,#e1ffdf,#eaffdf,#f2ffdf,#faffdf,#fffcdc,#fff4d4,#ffecce,#ffe5c7,#ffdec1,#ffd7bb,#ffd1b5)"></div><div style="left:0.0px;top:56.0px;width:379.5px;height:4.5px;background:linear-gradient(90deg,#98ffe3,#9fffe3,#a6ffe2,#adffe2,#b5ffe2,#bcffe2,#c4ffe2,#cbffe1,#d3ffe1,#dbffe1,#e3ffe1,#ebffe1,#f3ffe1,#fcffe0,#fffadc,#fff2d5,#ffebce,#ffe3c7,#ffddc1,#ffd6bb,#ffd0b5)"></div><div style="left:0.0px;top:60.0px;width:379.5px;height:4.5px;background:linear-gradient(90deg,#99ffe4,#a0ffe4,#a7ffe4,#afffe4,#b6ffe4,#bdffe3,#c5ffe3,#cdffe3,#d5ffe3,#dcffe3,#e4ffe3,#edffe2,#f5ffe2,#fdffe2,#fff9dc,#fff1d5,#ffe9ce,#ffe2c8,#ffdbc1,#ffd5bb,#ffceb6)"></div><div style="left:0.0px;top:64.0px;width:379.5px;height:4.5px;background:linear-gradient(90deg,#9affe6,#a1ffe6,#a9ffe5,#b0ffe5,#b7ffe5,#bfffe5,#c6ffe5,#ceffe5,#d6ffe4,#deffe4,#e6ffe4,#eeffe4,#f6ffe4,#ffffe4,#fff7dc,#ffefd5,#ffe8ce,#ffe1c8,#ffdac2,#ffd3bc,#ffcdb6)"></div><div style="left:0.0px;top:68.0px;width:379.5px;height:4.5px;background:linear-gradient(90deg,#9bffe7,#a2ffe7,#aaffe7,#b1ffe7,#b9ffe7,#c0ffe7,#c8ffe6,#d0ffe6,#d7ffe6,#dfffe6,#e8ffe6,#f0ffe6,#f8ffe5,#fffee4,#fff5dc,#ffeed5,#ffe6ce,#ffdfc8,#ffd8c2,#ffd2bc,#ffccb6)"></div><div style="left:0.0px;top:72.0px;width:379.5px;height:4.5px;background:linear-gradient(90deg,#9cffe9,#a4ffe9,#abffe9,#b2ffe8,#baffe8,#c1ffe8,#c9ffe8,#d1ffe8,#d9ffe8,#e1ffe8,#e9ffe7,#f1ffe7,#faffe7,#fffce4,#fff4dd,#ffecd6,#ffe5cf,#ffdec8,#ffd7c2,#ffd1bc,#ffcab7)"></div><div style="left:0.0px;top:76.0px;width:379.5px;height:4.5px;background:linear-gradient(90deg,#9effea,#a5ffea,#acffea,#b4ffea,#bbffea,#c3ffea,#cbffea,#d2ffea,#daffe9,#e2ffe9,#ebffe9,#f3ffe9,#fbffe9,#fffae4,#fff2dd,#ffebd6,#ffe3cf,#ffdcc8,#ffd6c2,#ffcfbc,#ffc9b7)"></div><div style="left:0.0px;top:80.0px;width:379.5px;height:4.5px;background:linear-gradient(90deg,#9fffec,#a6ffec,#adffec,#b5ffec,#bcffec,#c4ffeb,#ccffeb,#d4ffeb,#dcffeb,#e4ffeb,#ecffeb,#f4ffeb,#fdffeb,#fff9e5,#fff1dd,#ffe9d6,#ffe2cf,#ffdbc9,#ffd4c3,#ffcebd,#ffc8b7)"></div><div style="left:0.0px;top:84.0px;width:379.5px;height:4.5px;background:linear-gradient(90deg,#a0ffee,#a7ffed,#afffed,#b6ffed,#beffed,#c5ffed,#cdffed,#d5ffed,#ddffed,#e5ffed,#eeffec,#f6ffec,#ffffec,#fff7e5,#ffefdd,#ffe7d6,#ffe0cf,#ffd9c9,#ffd3c3,#ffcdbd,#ffc7b7)"></div><div style="left:0.0px;top:88.0px;width:379.5px;height:4.5px;background:linear-gradient(90deg,#a1ffef,#a8ffef,#b0ffef,#b7ffef,#bfffef,#c7ffef,#cfffef,#d7ffee,#dfffee,#e7ffee,#efffee,#f8ffee,#fffeed,#fff5e5,#ffeddd,#ffe6d6,#ffdfd0,#ffd8c9,#ffd2c3,#ffcbbd,#ffc5b7)"></div><div style="left:0.0px;top:92.0px;width:379.5px;height:4.5px;background:linear-gradient(90deg,#a2fff1,#aafff1,#b1fff1,#b9fff1,#c0fff0,#c8fff0,#d0fff0,#d8fff0,#e0fff0,#e9fff0,#f1fff0,#f9fff0,#fffced,#fff4e5,#ffecde,#ffe4d7,#ffddd0,#ffd7c9,#ffd0c3,#ffcabd,#ffc4b8)"></div><div style="left:0.0px;top:96.0px;width:379.5px;height:4.5px;background:linear-gradient(90deg,#a3fff2,#abfff2,#b2fff2,#bafff2,#c2fff2,#cafff2,#d2fff2,#dafff2,#e2fff2,#eafff2,#f3fff2,#fbfff2,#fffaed,#fff2e5,#ffeade,#ffe3d7,#ffdcd0,#ffd5ca,#ffcfc3,#ffc9be,#ffc3b8)"></div><div style="left:0.0px;top:100.0px;width:379.5px;height:4.5px;background:linear-gradient(90deg,#a5fff4,#acfff4,#b4fff4,#bbfff4,#c3fff4,#cbfff4,#d3fff4,#dbfff4,#e3fff4,#ecfff3,#f4fff3,#fdfff3,#fff9ed,#fff1e5,#ffe9de,#ffe2d7,#ffdbd0,#ffd4ca,#ffcdc4,#ffc7be,#ffc2b8)"></div><div style="left:0.0px;top:104.0px;width:379.5px;height:4.5px;background:linear-gradient(90deg,#a6fff6,#adfff6,#b5fff6,#bdfff6,#c5fff5,#ccfff5,#d4fff5,#ddfff5,#e5fff5,#edfff5,#f6fff5,#fefff5,#fff7ed,#ffefe6,#ffe7de,#ffe0d7,#ffd9d0,#ffd2ca,#ffccc4,#ffc6be,#ffc0b8)"></div><div style="left:0.0px;top:108.0px;width:379.5px;height:4.5px;background:linear-gradient(90deg,#a7fff7,#affff7,#b6fff7,#befff7,#c6fff7,#cefff7,#d6fff7,#defff7,#e6fff7,#effff7,#f7fff7,#fffef6,#fff5ee,#ffede6,#ffe6de,#ffdfd7,#ffd8d1,#ffd1ca,#ffcbc4,#ffc5be,#ffbfb9)"></div><div style="left:0.0px;top:112.0px;width:379.5px;height:4.5px;background:linear-gradient(90deg,#a8fff9,#b0fff9,#b8fff9,#bffff9,#c7fff9,#cffff9,#d7fff9,#e0fff9,#e8fff9,#f1fff9,#f9fff9,#fffcf6,#fff4ee,#ffece6,#ffe4df,#ffddd8,#ffd6d1,#ffd0ca,#ffcac4,#ffc4bf,#ffbeb9)"></div><div style="left:0.0px;top:116.0px;width:379.5px;height:4.5px;background:linear-gradient(90deg,#aafffb,#b1fffb,#b9fffb,#c1fffb,#c9fffb,#d1fffb,#d9fffb,#e1fffb,#eafffb,#f2fffb,#fbfffb,#fffbf6,#fff2ee,#ffeae6,#ffe3df,#ffdcd8,#ffd5d1,#ffcecb,#ffc8c5,#ffc2bf,#ffbdb9)"></div><div style="left:0.0px;top:120.0px;width:379.5px;height:4.5px;background:linear-gradient(90deg,#abfffc,#b3fffc,#bafffc,#c2fffc,#cafffc,#d2fffc,#dafffc,#e3fffc,#ebfffc,#f4fffc,#fcfffc,#fff9f6,#fff1ee,#ffe9e6,#ffe1df,#ffdad8,#ffd3d1,#ffcdcb,#ffc7c5,#ffc1bf,#ffbbb9)"></div><div style="left:0.0px;top:124.0px;width:379.5px;height:4.5px;background:linear-gradient(90deg,#acfffe,#b4fffe,#bcfffe,#c4fffe,#ccfffe,#d4fffe,#dcfffe,#e4fffe,#edfffe,#f5fffe,#fefffe,#fff7f6,#ffefee,#ffe7e7,#ffe0df,#ffd9d8,#ffd2d2,#ffcccb,#ffc6c5,#ffc0bf,#ffbaba)"></div><div style="left:0.0px;top:128.0px;width:379.5px;height:4.5px;background:linear-gradient(90deg,#adfeff,#b4feff,#bcfeff,#c4feff,#ccfeff,#d4feff,#ddfeff,#e5feff,#edfeff,#f6feff,#fffeff,#fff6f7,#ffedee,#ffe6e7,#ffdedf,#ffd7d8,#ffd1d2,#ffcacb,#ffc4c5,#ffbebf,#ffb9ba)"></div><div style="left:0.0px;top:132.0px;width:379.5px;height:4.5px;background:linear-gradient(90deg,#adfcff,#b5fcff,#bcfcff,#c4fcff,#ccfcff,#d4fcff,#ddfcff,#e5fcff,#edfcff,#f6fcff,#fffcff,#fff4f7,#ffecef,#ffe4e7,#ffdde0,#ffd6d9,#ffcfd2,#ffc9cc,#ffc3c6,#ffbdc0,#ffb8ba)"></div><div style="left:0.0px;top:136.0px;width:379.5px;height:4.5px;background:linear-gradient(90deg,#adfbff,#b5fbff,#bcfbff,#c4fbff,#ccfbff,#d4faff,#ddfaff,#e5faff,#edfaff,#f6faff,#fffaff,#fff2f7,#ffeaef,#ffe3e7,#ffdbe0,#ffd5d9,#ffced2,#ffc8cc,#ffc2c6,#ffbcc0,#ffb6ba)"></div><div style="left:0.0px;top:140.0px;width:379.5px;height:4.5px;background:linear-gradient(90deg,#adf9ff,#b5f9ff,#bcf9ff,#c4f9ff,#ccf9ff,#d4f9ff,#ddf9ff,#e5f9ff,#edf9ff,#f6f8ff,#fef8ff,#fff1f7,#ffe9ef,#ffe1e7,#ffdae0,#ffd3d9,#ffcdd2,#ffc6cc,#ffc0c6,#ffbbc0,#ffb5bb)"></div><div style="left:0.0px;top:144.0px;width:379.5px;height:4.5px;background:linear-gradient(90deg,#adf7ff,#b5f7ff,#bdf7ff,#c4f7ff,#ccf7ff,#d4f7ff,#dcf7ff,#e5f7ff,#edf7ff,#f6f7ff,#fef7ff,#ffeff7,#ffe7ef,#ffe0e7,#ffd8e0,#ffd2d9,#ffcbd3,#ffc5cc,#ffbfc6,#ffb9c0,#ffb4bb)"></div><div style="left:0.0px;top:148.0px;width:379.5px;height:4.5px;background:linear-gradient(90deg,#adf6ff,#b5f6ff,#bdf5ff,#c4f5ff,#ccf5ff,#d4f5ff,#dcf5ff,#e5f5ff,#edf5ff,#f6f5ff,#fef5ff,#ffedf7,#ffe6ef,#ffdee8,#ffd7e0,#ffd0d9,#ffcad3,#ffc4cc,#ffbec6,#ffb8c1,#ffb3bb)"></div><div style="left:0.0px;top:152.0px;width:379.5px;height:4.5px;background:linear-gradient(90deg,#adf4ff,#b5f4ff,#bdf4ff,#c4f4ff,#ccf4ff,#d4f3ff,#dcf3ff,#e5f3ff,#edf3ff,#f5f3ff,#fef3ff,#ffecf7,#ffe4ef,#ffdde8,#ffd6e1,#ffcfda,#ffc8d3,#ffc2cd,#ffbdc7,#ffb7c1,#ffb2bb)"></div><div style="left:0.0px;top:156.0px;width:379.5px;height:4.5px;background:linear-gradient(90deg,#aef2ff,#b5f2ff,#bdf2ff,#c4f2ff,#ccf2ff,#d4f2ff,#dcf2ff,#e5f2ff,#edf1ff,#f5f1ff,#fef1ff,#ffeaf8,#ffe2f0,#ffdbe8,#ffd4e1,#ffcdda,#ffc7d3,#ffc1cd,#ffbbc7,#ffb6c1,#ffb0bc)"></div><div style="left:0.0px;top:160.0px;width:379.5px;height:4.5px;background:linear-gradient(90deg,#aef1ff,#b5f1ff,#bdf0ff,#c5f0ff,#ccf0ff,#d4f0ff,#dcf0ff,#e5f0ff,#edf0ff,#f5f0ff,#feefff,#ffe9f8,#ffe1f0,#ffdae8,#ffd3e1,#ffccda,#ffc6d3,#ffc0cd,#ffbac7,#ffb5c1,#ffafbc)"></div><div style="left:0.0px;top:164.0px;width:379.5px;height:4.5px;background:linear-gradient(90deg,#aeefff,#b5efff,#bdefff,#c5efff,#cceeff,#d4eeff,#dceeff,#e5eeff,#edeeff,#f5eeff,#feeeff,#ffe7f8,#ffdff0,#ffd8e8,#ffd1e1,#ffcbda,#ffc4d4,#ffbfcd,#ffb9c7,#ffb3c2,#ffaebc)"></div><div style="left:0.0px;top:168.0px;width:379.5px;height:4.5px;background:linear-gradient(90deg,#aeedff,#b5edff,#bdedff,#c5edff,#ccedff,#d4edff,#dcecff,#e4ecff,#edecff,#f5ecff,#feecff,#ffe5f8,#ffdef0,#ffd7e8,#ffd0e1,#ffc9da,#ffc3d4,#ffbdce,#ffb8c8,#ffb2c2,#ffadbc)"></div><div style="left:0.0px;top:172.0px;width:379.5px;height:4.5px;background:linear-gradient(90deg,#aeecff,#b5ecff,#bdebff,#c5ebff,#ccebff,#d4ebff,#dcebff,#e4ebff,#edeaff,#f5eaff,#fdeaff,#ffe4f8,#ffdcf0,#ffd5e9,#ffcee1,#ffc8db,#ffc2d4,#ffbcce,#ffb6c8,#ffb1c2,#ffacbc)"></div><div style="left:0.0px;top:176.0px;width:379.5px;height:4.5px;background:linear-gradient(90deg,#aeeaff,#b5eaff,#bdeaff,#c5eaff,#cce9ff,#d4e9ff,#dce9ff,#e4e9ff,#ede9ff,#f5e9ff,#fde8ff,#ffe2f8,#ffdbf0,#ffd4e9,#ffcde2,#ffc7db,#ffc0d4,#ffbbce,#ffb5c8,#ffb0c2,#ffabbd)"></div><div style="left:0.0px;top:180.0px;width:379.5px;height:4.5px;background:linear-gradient(90deg,#aee8ff,#b6e8ff,#bde8ff,#c5e8ff,#cce8ff,#d4e8ff,#dce7ff,#e4e7ff,#ece7ff,#f5e7ff,#fde7ff,#ffe1f8,#ffd9f1,#ffd2e9,#ffcce2,#ffc5db,#ffbfd4,#ffb9ce,#ffb4c8,#ffafc2,#ffa9bd)"></div><div style="left:0.0px;top:184.0px;width:379.5px;height:4.5px;background:linear-gradient(90deg,#aee7ff,#b6e7ff,#bde7ff,#c5e6ff,#cce6ff,#d4e6ff,#dce6ff,#e4e6ff,#ece5ff,#f5e5ff,#fde5ff,#ffdff9,#ffd8f1,#ffd1e9,#ffcae2,#ffc4db,#ffbed5,#ffb8ce,#ffb3c8,#ffadc3,#ffa8bd)"></div><div style="left:0.0px;top:188.0px;width:379.5px;height:4.5px;background:linear-gradient(90deg,#aee5ff,#b6e5ff,#bde5ff,#c5e5ff,#cce5ff,#d4e4ff,#dce4ff,#e4e4ff,#ece4ff,#f5e4ff,#fde3ff,#ffdef9,#ffd6f1,#ffcfe9,#ffc9e2,#ffc3db,#ffbdd5,#ffb7cf,#ffb1c9,#ffacc3,#ffa7bd)"></div><div style="left:0.0px;top:192.0px;width:379.5px;height:4.5px;background:linear-gradient(90deg,#aee4ff,#b6e3ff,#bde3ff,#c5e3ff,#cce3ff,#d4e3ff,#dce2ff,#e4e2ff,#ece2ff,#f4e2ff,#fde2ff,#ffdcf9,#ffd5f1,#ffcee9,#ffc7e2,#ffc1db,#ffbbd5,#ffb6cf,#ffb0c9,#ffabc3,#ffa6be)"></div><div style="left:0.0px;top:196.0px;width:379.5px;height:4.5px;background:linear-gradient(90deg,#aee2ff,#b6e2ff,#bde2ff,#c5e1ff,#cde1ff,#d4e1ff,#dce1ff,#e4e1ff,#ece0ff,#f4e0ff,#fde0ff,#ffdaf9,#ffd3f1,#ffcdea,#ffc6e3,#ffc0dc,#ffbad5,#ffb4cf,#ffafc9,#ffaac3,#ffa5be)"></div><div style="left:0.0px;top:200.0px;width:379.5px;height:4.5px;background:linear-gradient(90deg,#afe1ff,#b6e0ff,#bde0ff,#c5e0ff,#cde0ff,#d4dfff,#dcdfff,#e4dfff,#ecdfff,#f4deff,#fddeff,#ffd9f9,#ffd2f1,#ffcbea,#ffc5e3,#ffbfdc,#ffb9d5,#ffb3cf,#ffaec9,#ffa9c4,#ffa4be)"></div><div style="left:0.0px;top:204.0px;width:379.5px;height:4.5px;background:linear-gradient(90deg,#afdfff,#b6dfff,#bddfff,#c5deff,#cddeff,#d4deff,#dcdeff,#e4ddff,#ecddff,#f4ddff,#fcddff,#ffd7f9,#ffd0f1,#ffcaea,#ffc3e3,#ffbddc,#ffb7d6,#ffb2cf,#ffadc9,#ffa7c4,#ffa3be)"></div><div style="left:0.0px;top:208.0px;width:379.5px;height:4.5px;background:linear-gradient(90deg,#afddff,#b6ddff,#bdddff,#c5ddff,#cddcff,#d4dcff,#dcdcff,#e4dcff,#ecdbff,#f4dbff,#fcdbff,#ffd6f9,#ffcff2,#ffc8ea,#ffc2e3,#ffbcdc,#ffb6d6,#ffb1d0,#ffabca,#ffa6c4,#ffa1be)"></div><div style="left:0.0px;top:212.0px;width:379.5px;height:4.5px;background:linear-gradient(90deg,#afdcff,#b6dcff,#bedbff,#c5dbff,#cddbff,#d4dbff,#dcdaff,#e4daff,#ecdaff,#f4daff,#fcd9ff,#ffd4fa,#ffcdf2,#ffc7ea,#ffc1e3,#ffbbdc,#ffb5d6,#ffafd0,#ffaaca,#ffa5c4,#ffa0bf)"></div><div style="left:0.0px;top:216.0px;width:379.5px;height:4.5px;background:linear-gradient(90deg,#afdaff,#b6daff,#bedaff,#c5daff,#cdd9ff,#d4d9ff,#dcd9ff,#e4d8ff,#ecd8ff,#f4d8ff,#fcd8ff,#ffd3fa,#ffccf2,#ffc5ea,#ffbfe3,#ffb9dd,#ffb4d6,#ffaed0,#ffa9ca,#ffa4c4,#ff9fbf)"></div><div style="left:0.0px;top:220.0px;width:379.5px;height:4.5px;background:linear-gradient(90deg,#afd9ff,#b6d9ff,#bed8ff,#c5d8ff,#cdd8ff,#d4d7ff,#dcd7ff,#e4d7ff,#ecd7ff,#f4d6ff,#fcd6ff,#ffd1fa,#ffcbf2,#ffc4eb,#ffbee4,#ffb8dd,#ffb2d6,#ffadd0,#ffa8ca,#ffa3c5,#ff9ebf)"></div><div style="left:0.0px;top:224.0px;width:379.5px;height:4.5px;background:linear-gradient(90deg,#afd7ff,#b6d7ff,#bed7ff,#c5d6ff,#cdd6ff,#d4d6ff,#dcd6ff,#e4d5ff,#ecd5ff,#f4d5ff,#fcd4ff,#ffd0fa,#ffc9f2,#ffc3eb,#ffbde4,#ffb7dd,#ffb1d7,#ffacd0,#ffa7ca,#ffa2c5,#ff9dbf)"></div><div style="left:0.0px;top:228.0px;width:379.5px;height:4.5px;background:linear-gradient(90deg,#afd6ff,#b6d5ff,#bed5ff,#c5d5ff,#cdd5ff,#d4d4ff,#dcd4ff,#e4d4ff,#ecd3ff,#f4d3ff,#fcd3ff,#ffcefa,#ffc8f2,#ffc1eb,#ffbbe4,#ffb5dd,#ffb0d7,#ffaad1,#ffa5cb,#ffa1c5,#ff9cc0)"></div><div style="left:0.0px;top:232.0px;width:379.5px;height:4.5px;background:linear-gradient(90deg,#afd4ff,#b6d4ff,#bed4ff,#c5d3ff,#cdd3ff,#d4d3ff,#dcd2ff,#e4d2ff,#ecd2ff,#f4d2ff,#fcd1ff,#ffcdfa,#ffc6f3,#ffc0eb,#ffbae4,#ffb4dd,#ffafd7,#ffa9d1,#ffa4cb,#ff9fc5,#ff9bc0)"></div><div style="left:0.0px;top:236.0px;width:379.5px;height:4.5px;background:linear-gradient(90deg,#afd3ff,#b7d2ff,#bed2ff,#c5d2ff,#cdd2ff,#d4d1ff,#dcd1ff,#e4d1ff,#ebd0ff,#f3d0ff,#fbd0ff,#ffccfa,#ffc5f3,#ffbfeb,#ffb9e4,#ffb3de,#ffadd7,#ffa8d1,#ffa3cb,#ff9ec5,#ff9ac0)"></div><div style="left:0.0px;top:240.0px;width:379.5px;height:4.5px;background:linear-gradient(90deg,#afd1ff,#b7d1ff,#bed1ff,#c5d0ff,#cdd0ff,#d4d0ff,#dccfff,#e4cfff,#ebcfff,#f3ceff,#fbceff,#ffcafb,#ffc3f3,#ffbdeb,#ffb7e4,#ffb2de,#ffacd7,#ffa7d1,#ffa2cb,#ff9dc6,#ff99c0)"></div><div style="left:0.0px;top:244.0px;width:379.5px;height:4.5px;background:linear-gradient(90deg,#b0d0ff,#b7cfff,#becfff,#c5cfff,#cdceff,#d4ceff,#dcceff,#e4cdff,#ebcdff,#f3cdff,#fbccff,#ffc9fb,#ffc2f3,#ffbcec,#ffb6e5,#ffb0de,#ffabd7,#ffa6d1,#ffa1cb,#ff9cc6,#ff97c0)"></div><div style="left:0.0px;top:248.0px;width:379.5px;height:4.5px;background:linear-gradient(90deg,#b0ceff,#b7ceff,#beceff,#c5cdff,#cdcdff,#d4cdff,#dcccff,#e3ccff,#ebccff,#f3cbff,#fbcbff,#ffc7fb,#ffc1f3,#ffbbec,#ffb5e5,#ffafde,#ffaad8,#ffa4d2,#ffa0cc,#ff9bc6,#ff96c1)"></div><div style="left:0.0px;top:252.0px;width:379.5px;height:4.0px;background:linear-gradient(90deg,#b0cdff,#b7cdff,#beccff,#c5ccff,#cdccff,#d4cbff,#dccbff,#e3cbff,#ebcaff,#f3caff,#fbc9ff,#ffc6fb,#ffbff3,#ffb9ec,#ffb3e5,#ffaede,#ffa8d8,#ffa3d2,#ff9ecc,#ff9ac6,#ff95c1)"></div></div>
<svg width="1858" height="1200" viewBox="0 0 1858 1200">
<defs>
<linearGradient id="gRedBtn" x1="0" y1="0" x2="0" y2="1"><stop offset="0" stop-color="#e4474b"/><stop offset="0.5" stop-color="#da2a30"/><stop offset="1" stop-color="#c4141a"/></linearGradient>
<linearGradient id="gRedCirc" x1="0" y1="0" x2="0" y2="1"><stop offset="0" stop-color="#c00c18"/><stop offset="1" stop-color="#e24a4c"/></linearGradient>
<linearGradient id="gBtnLight" x1="0" y1="0" x2="0" y2="1"><stop offset="0" stop-color="#a4a4a4"/><stop offset="1" stop-color="#5e5e5e"/></linearGradient>
<linearGradient id="gCircP" x1="0" y1="0" x2="0" y2="1"><stop offset="0" stop-color="#5c5c5c"/><stop offset="1" stop-color="#a2a2a2"/></linearGradient>
<linearGradient id="gCircD" x1="0" y1="0" x2="0" y2="1"><stop offset="0" stop-color="#2c2c2c"/><stop offset="1" stop-color="#4a4a4a"/></linearGradient>
<linearGradient id="gTab" x1="0" y1="0" x2="0" y2="1"><stop offset="0" stop-color="#454545"/><stop offset="1" stop-color="#363636"/></linearGradient>
<linearGradient id="gDev" x1="0" y1="0" x2="0" y2="1"><stop offset="0" stop-color="#505050"/><stop offset="1" stop-color="#6e6e6e"/></linearGradient>
<linearGradient id="gCirc" x1="0" y1="0" x2="0" y2="1"><stop offset="0" stop-color="#3c3c3c"/><stop offset="1" stop-color="#707070"/></linearGradient>
<linearGradient id="gCircL" x1="0" y1="0" x2="0" y2="1"><stop offset="0" stop-color="#6a6a6a"/><stop offset="1" stop-color="#a8a8a8"/></linearGradient>

<linearGradient id="gCircI" x1="0" y1="0" x2="0" y2="1"><stop offset="0" stop-color="#5a5a5a"/><stop offset="1" stop-color="#a0a0a0"/></linearGradient>
<linearGradient id="gWhiteV" x1="0" y1="0" x2="0" y2="1"><stop offset="0" stop-color="#fff"/><stop offset="0.45" stop-color="#fafafa"/><stop offset="1" stop-color="#9a9a9a"/></linearGradient>
<linearGradient id="gb0" x1="0" y1="0" x2="1" y2="0"><stop offset="0" stop-color="#ffffff"/><stop offset="0.3" stop-color="#ffffff"/><stop offset="0.55" stop-color="#ffffff"/><stop offset="1" stop-color="#8c8c8c"/></linearGradient>
<linearGradient id="gb1" x1="0" y1="0" x2="1" y2="0"><stop offset="0" stop-color="#d8d83c"/><stop offset="0.3" stop-color="#c4c400"/><stop offset="0.55" stop-color="#c4c400"/><stop offset="1" stop-color="#5e5e00"/></linearGradient>
<linearGradient id="gb2" x1="0" y1="0" x2="1" y2="0"><stop offset="0" stop-color="#d850dc"/><stop offset="0.3" stop-color="#c000c4"/><stop offset="0.55" stop-color="#c000c4"/><stop offset="1" stop-color="#5a005e"/></linearGradient>
<linearGradient id="gb3" x1="0" y1="0" x2="1" y2="0"><stop offset="0" stop-color="#48dcdc"/><stop offset="0.3" stop-color="#00c0c0"/><stop offset="0.55" stop-color="#00c0c0"/><stop offset="1" stop-color="#005e5e"/></linearGradient>
<linearGradient id="gb4" x1="0" y1="0" x2="1" y2="0"><stop offset="0" stop-color="#4848d8"/><stop offset="0.3" stop-color="#0000c0"/><stop offset="0.55" stop-color="#0000c0"/><stop offset="1" stop-color="#00005a"/></linearGradient>
<linearGradient id="gb5" x1="0" y1="0" x2="1" y2="0"><stop offset="0" stop-color="#40dc40"/><stop offset="0.3" stop-color="#00c000"/><stop offset="0.55" stop-color="#00c000"/><stop offset="1" stop-color="#005a00"/></linearGradient>
<linearGradient id="gb6" x1="0" y1="0" x2="1" y2="0"><stop offset="0" stop-color="#dc4040"/><stop offset="0.3" stop-color="#c00000"/><stop offset="0.55" stop-color="#c00000"/><stop offset="1" stop-color="#5a0000"/></linearGradient>
<linearGradient id="gb7" x1="0" y1="0" x2="1" y2="0"><stop offset="0" stop-color="#e0e0e0"/><stop offset="0.3" stop-color="#c0c0c0"/><stop offset="0.55" stop-color="#c0c0c0"/><stop offset="1" stop-color="#5e5e5e"/></linearGradient>
<linearGradient id="gRedV" x1="0" y1="0" x2="0" y2="1"><stop offset="0" stop-color="#ff3030"/><stop offset="0.2" stop-color="#ff0000"/><stop offset="0.6" stop-color="#e00000"/><stop offset="1" stop-color="#800000"/></linearGradient>
<linearGradient id="gBlueV" x1="0" y1="0" x2="0" y2="1"><stop offset="0" stop-color="#4646ff"/><stop offset="0.2" stop-color="#0000ff"/><stop offset="0.6" stop-color="#0000e0"/><stop offset="1" stop-color="#000080"/></linearGradient>
<linearGradient id="gHdr" x1="0" y1="0" x2="0" y2="1"><stop offset="0" stop-color="#2e2e2e"/><stop offset="0.49" stop-color="#2c2c2c"/><stop offset="0.51" stop-color="#191919"/><stop offset="1" stop-color="#0e0e0e"/></linearGradient>
<clipPath id="cpTab"><rect x="1108" y="844" width="705.2" height="255.4"/></clipPath>
<linearGradient id="gSb" x1="0" y1="0" x2="1" y2="0"><stop offset="0" stop-color="#4a4a4a"/><stop offset="1" stop-color="#404040"/></linearGradient>
<linearGradient id="gArrowBtn" x1="0" y1="0" x2="0" y2="1"><stop offset="0" stop-color="#8a8a8a"/><stop offset="1" stop-color="#686868"/></linearGradient>
<linearGradient id="gBar" x1="0" y1="0" x2="0" y2="1"><stop offset="0" stop-color="#484848"/><stop offset="0.5" stop-color="#2e2e2e"/><stop offset="1" stop-color="#202020"/></linearGradient>
<linearGradient id="gSel" x1="0" y1="0" x2="0" y2="1"><stop offset="0" stop-color="#181818"/><stop offset="0.6" stop-color="#262626"/><stop offset="1" stop-color="#363636"/></linearGradient>
<linearGradient id="gSwBtn" x1="0" y1="0" x2="0" y2="1"><stop offset="0" stop-color="#a2a2a2"/><stop offset="0.65" stop-color="#787878"/><stop offset="1" stop-color="#5e5e5e"/></linearGradient>
<linearGradient id="gCtl" x1="0" y1="0" x2="0" y2="1"><stop offset="0" stop-color="#9a9a9a"/><stop offset="1" stop-color="#5c5c5c"/></linearGradient>
<linearGradient id="gBarH" x1="0" y1="0" x2="1" y2="0"><stop offset="0" stop-color="#000" stop-opacity="0"/><stop offset="1" stop-color="#000" stop-opacity="0.4"/></linearGradient>
<linearGradient id="gStop" x1="0" y1="0" x2="0" y2="1"><stop offset="0" stop-color="#c8c8c8"/><stop offset="1" stop-color="#8c8c8c"/></linearGradient>
</defs>
<text x="3.7" y="13.7" font-size="7.2" fill="#fff" textLength="10.3" lengthAdjust="spacingAndGlyphs" font-weight="bold">CM</text>
<text x="20.0" y="15.5" font-size="12.5" fill="#8c8c8c" textLength="333.0" lengthAdjust="spacingAndGlyphs">CalMAN 2019 CalMAN Ultimate for Business 242 Days Remaining</text>
<line x1="1740" y1="10.5" x2="1750" y2="10.5" stroke="#9a9a9a" stroke-width="1"/>
<rect x="1784.5" y="8.5" width="8" height="8" fill="none" stroke="#9a9a9a"/><path d="M1786.5 8.5v-2.5h8v8h-2" fill="none" stroke="#9a9a9a"/>
<path d="M1830 5.5l10 10M1840 5.5l-10 10" stroke="#8a8a8a" stroke-width="1.1" fill="none"/>
<path d="M0 22h177v23.6q0 4.5-4.5 4.5H3q-3 0-3-3z" fill="url(#gRedBtn)" stroke="#8e1014" stroke-width="0.8"/>
<text x="12.6" y="45.6" font-size="29.2" fill="#fff" textLength="125.5" lengthAdjust="spacingAndGlyphs" font-weight="bold" stroke="#d9282e" stroke-width="0.55">CalMAN</text>
<circle cx="160.5" cy="35.8" r="9.8" fill="url(#gRedCirc)"/>
<path d="M155.8 34l4.7 5 4.7-5z" fill="#fff"/>
<rect x="-3" y="56.5" width="28.5" height="26" rx="4" fill="url(#gBtnLight)" stroke="#c8c8c8" stroke-width="1"/>
<circle cx="12" cy="69.5" r="9.5" fill="url(#gCircP)"/>
<path d="M9.5 64.5l6 5-6 5z" fill="#fff"/>
<path d="M28.5 85.3v-24.8q0-4 4-4h80.5q4 0 4 4v24.8z" fill="url(#gTab)"/><path d="M28.5 85v-24.5q0-4 4-4h80.5q4 0 4 4v24.5" fill="none" stroke="#6a6a6a" stroke-width="1"/>
<line x1="84.5" y1="57" x2="84.5" y2="85" stroke="#6a6a6a" stroke-width="1"/>
<text x="34.0" y="76.0" font-size="12.5" fill="#e0e0e0" textLength="45.0" lengthAdjust="spacingAndGlyphs">History 1</text>
<circle cx="100" cy="72.5" r="9.5" fill="url(#gCircD)"/>
<text x="100.0" y="77.0" font-size="13" fill="#8a8a8a" textLength="7.6" lengthAdjust="spacingAndGlyphs" text-anchor="middle">+</text>
<path d="M1306 85.2v-25.2q0-4 4-4h130q4 0 4 4v25.2z" fill="url(#gDev)"/>
<path d="M1306 85.2v-25.2q0-4 4-4h1.5v29.2z" fill="#18dc18"/>
<text x="1314.5" y="67.5" font-size="10.5" fill="#f0f0f0" textLength="63.0" lengthAdjust="spacingAndGlyphs" stroke="#f0f0f0" stroke-width="0.25">X-Rite i1Pro 2</text>
<text x="1314.5" y="81.5" font-size="10.5" fill="#f0f0f0" textLength="54.0" lengthAdjust="spacingAndGlyphs" stroke="#f0f0f0" stroke-width="0.25">Direct View</text>
<circle cx="1390.7" cy="70.8" r="9" fill="url(#gCirc)"/>
<path d="M1386.2 69.3l4.5 4.8 4.5-4.8z" fill="#fff"/>
<line x1="1409.5" y1="59" x2="1409.5" y2="85.2" stroke="#444" stroke-width="1"/>
<circle cx="1429.6" cy="70.8" r="12" fill="#0000f8" stroke="#f0f0f0" stroke-width="1.2"/>
<text x="1429.6" y="74.2" font-size="9" fill="#fff" textLength="14.0" lengthAdjust="spacingAndGlyphs" text-anchor="middle">222</text>
<path d="M1450 85.2v-25.2q0-4 4-4h193q4 0 4 4v25.2z" fill="url(#gDev)"/>
<path d="M1450 85.2v-25.2q0-4 4-4h1.5v29.2z" fill="#18dc18"/>
<text x="1458.5" y="67.5" font-size="10.5" fill="#f0f0f0" textLength="164.5" lengthAdjust="spacingAndGlyphs" stroke="#f0f0f0" stroke-width="0.25">CalMAN Client 3 Pattern Generator</text>
<circle cx="1636" cy="71" r="9" fill="url(#gCirc)"/>
<path d="M1631.5 69.5l4.5 4.8 4.5-4.8z" fill="#fff"/>
<path d="M1657.5 85.2v-25.2q0-4 4-4h130.0q4 0 4 4v25.2z" fill="url(#gDev)"/>
<path d="M1657.5 85.2v-25.2q0-4 4-4h1.5v29.2z" fill="#e0e000"/>
<text x="1666.0" y="67.5" font-size="10.5" fill="#f0f0f0" textLength="102.5" lengthAdjust="spacingAndGlyphs" stroke="#f0f0f0" stroke-width="0.25">Direct Display Control</text>
<circle cx="1780.6" cy="71" r="9" fill="url(#gCirc)"/>
<path d="M1776.1 69.5l4.5 4.8 4.5-4.8z" fill="#fff"/>
<rect x="1799.5" y="56.5" width="32" height="26" rx="4" fill="url(#gBtnLight)" stroke="#c8c8c8" stroke-width="1"/>
<rect x="1831.5" y="56.5" width="30" height="26" rx="4" fill="url(#gBtnLight)" stroke="#c8c8c8" stroke-width="1"/>
<g transform="translate(1815.3,69.5) scale(0.92)"><circle r="9.6" fill="url(#gCircI)"/><circle r="4.2" fill="none" stroke="#dadada" stroke-width="2.2"/><path d="M4.40 -1.34L6.97 -0.61L6.97 0.61L4.40 1.34zM4.06 2.16L5.36 4.50L4.50 5.36L2.16 4.06zM1.34 4.40L0.61 6.97L-0.61 6.97L-1.34 4.40zM-2.16 4.06L-4.50 5.36L-5.36 4.50L-4.06 2.16zM-4.40 1.34L-6.97 0.61L-6.97 -0.61L-4.40 -1.34zM-4.06 -2.16L-5.36 -4.50L-4.50 -5.36L-2.16 -4.06zM-1.34 -4.40L-0.61 -6.97L0.61 -6.97L1.34 -4.40zM2.16 -4.06L4.50 -5.36L5.36 -4.50L4.06 -2.16z" fill="#dadada"/></g>
<circle cx="1845.5" cy="69.5" r="9.6" fill="url(#gCircI)"/><path d="M1848.2 64.2l-5.6 5.1 5.6 5.1z" fill="#fff"/>
<text x="27.0" y="160.0" font-size="50" fill="#ececec" textLength="249.0" lengthAdjust="spacingAndGlyphs" stroke="#ececec" stroke-width="0.5">Color Gamut</text>
<rect x="22.0" y="231.5" width="373.0" height="534.0" fill="#232323" stroke="#8a8a8a" stroke-width="1.8"/>
<line x1="71.73333333333333" y1="231.5" x2="71.73333333333333" y2="765.5" stroke="#8a8a8a" stroke-width="1.6"/>
<line x1="121.46666666666667" y1="231.5" x2="121.46666666666667" y2="765.5" stroke="#8a8a8a" stroke-width="1.6"/>
<line x1="171.2" y1="231.5" x2="171.2" y2="765.5" stroke="#8a8a8a" stroke-width="1.6"/>
<line x1="220.93333333333334" y1="231.5" x2="220.93333333333334" y2="765.5" stroke="#8a8a8a" stroke-width="1.6"/>
<line x1="270.6666666666667" y1="231.5" x2="270.6666666666667" y2="765.5" stroke="#8a8a8a" stroke-width="1.6"/>
<line x1="320.4" y1="231.5" x2="320.4" y2="765.5" stroke="#8a8a8a" stroke-width="1.6"/>
<line x1="370.1333333333333" y1="231.5" x2="370.1333333333333" y2="765.5" stroke="#8a8a8a" stroke-width="1.6"/>
<line x1="22.0" y1="765.5" x2="22.0" y2="772.5" stroke="#c8c8c8" stroke-width="1.6"/>
<text x="22.0" y="794.2" font-size="18.5" fill="#dedede" textLength="8.5" lengthAdjust="spacingAndGlyphs" text-anchor="middle">0</text>
<line x1="71.73333333333333" y1="765.5" x2="71.73333333333333" y2="772.5" stroke="#c8c8c8" stroke-width="1.6"/>
<text x="71.7" y="794.2" font-size="18.5" fill="#dedede" textLength="8.5" lengthAdjust="spacingAndGlyphs" text-anchor="middle">2</text>
<line x1="121.46666666666667" y1="765.5" x2="121.46666666666667" y2="772.5" stroke="#c8c8c8" stroke-width="1.6"/>
<text x="121.5" y="794.2" font-size="18.5" fill="#dedede" textLength="8.5" lengthAdjust="spacingAndGlyphs" text-anchor="middle">4</text>
<line x1="171.2" y1="765.5" x2="171.2" y2="772.5" stroke="#c8c8c8" stroke-width="1.6"/>
<text x="171.2" y="794.2" font-size="18.5" fill="#dedede" textLength="8.5" lengthAdjust="spacingAndGlyphs" text-anchor="middle">6</text>
<line x1="220.93333333333334" y1="765.5" x2="220.93333333333334" y2="772.5" stroke="#c8c8c8" stroke-width="1.6"/>
<text x="220.9" y="794.2" font-size="18.5" fill="#dedede" textLength="8.5" lengthAdjust="spacingAndGlyphs" text-anchor="middle">8</text>
<line x1="270.6666666666667" y1="765.5" x2="270.6666666666667" y2="772.5" stroke="#c8c8c8" stroke-width="1.6"/>
<text x="270.7" y="794.2" font-size="18.5" fill="#dedede" textLength="17.1" lengthAdjust="spacingAndGlyphs" text-anchor="middle">10</text>
<line x1="320.4" y1="765.5" x2="320.4" y2="772.5" stroke="#c8c8c8" stroke-width="1.6"/>
<text x="320.4" y="794.2" font-size="18.5" fill="#dedede" textLength="17.1" lengthAdjust="spacingAndGlyphs" text-anchor="middle">12</text>
<line x1="370.1333333333333" y1="765.5" x2="370.1333333333333" y2="772.5" stroke="#c8c8c8" stroke-width="1.6"/>
<text x="370.1" y="794.2" font-size="18.5" fill="#dedede" textLength="17.1" lengthAdjust="spacingAndGlyphs" text-anchor="middle">14</text>
<text x="208.5" y="224.5" font-size="19" fill="#dedede" textLength="88.5" lengthAdjust="spacingAndGlyphs" text-anchor="middle">DeltaE 2000</text>
<rect x="23.0" y="239.0" width="42.28966666666666" height="51" fill="url(#gb0)" stroke="#000" stroke-width="1.6"/>
<rect x="23.0" y="306.0" width="50.620000000000005" height="51" fill="url(#gb1)" stroke="#000" stroke-width="1.6"/>
<rect x="23.0" y="372.5" width="27.65812" height="51" fill="url(#gb2)" stroke="#000" stroke-width="1.6"/>
<rect x="23.0" y="439.0" width="35.42895333333333" height="51" fill="url(#gb3)" stroke="#000" stroke-width="1.6"/>
<rect x="23.0" y="506.0" width="96.71036666666667" height="51" fill="url(#gb4)" stroke="#000" stroke-width="1.6"/>
<rect x="23.0" y="573.0" width="44.38592666666666" height="51" fill="url(#gb5)" stroke="#000" stroke-width="1.6"/>
<rect x="23.0" y="639.5" width="31.47018" height="51" fill="url(#gb6)" stroke="#000" stroke-width="1.6"/>
<rect x="23.0" y="706.0" width="35.732326666666665" height="51" fill="url(#gb7)" stroke="#000" stroke-width="1.6"/>
<line x1="22.0" y1="231.5" x2="22.0" y2="765.5" stroke="#8a8a8a" stroke-width="1.5"/>
<rect x="454.5" y="145.0" width="161.0" height="408.0" fill="#232323" stroke="#8a8a8a" stroke-width="1.5"/>
<line x1="454.5" y1="144.5" x2="615.5" y2="144.5" stroke="#8a8a8a" stroke-width="2.5"/>
<line x1="448.5" y1="145.0" x2="454.5" y2="145.0" stroke="#c8c8c8" stroke-width="1.5"/>
<text x="447.5" y="152.0" font-size="18.5" fill="#dedede" textLength="17.1" lengthAdjust="spacingAndGlyphs" text-anchor="end">15</text>
<line x1="454.5" y1="213.5" x2="615.5" y2="213.5" stroke="#8a8a8a" stroke-width="1.7"/>
<line x1="448.5" y1="213.5" x2="454.5" y2="213.5" stroke="#c8c8c8" stroke-width="1.5"/>
<text x="447.5" y="220.5" font-size="18.5" fill="#dedede" textLength="17.1" lengthAdjust="spacingAndGlyphs" text-anchor="end">10</text>
<line x1="454.5" y1="281.5" x2="615.5" y2="281.5" stroke="#8a8a8a" stroke-width="1.7"/>
<line x1="448.5" y1="281.5" x2="454.5" y2="281.5" stroke="#c8c8c8" stroke-width="1.5"/>
<text x="447.5" y="288.5" font-size="18.5" fill="#dedede" textLength="8.5" lengthAdjust="spacingAndGlyphs" text-anchor="end">5</text>
<line x1="454.5" y1="349.5" x2="615.5" y2="349.5" stroke="#8a8a8a" stroke-width="1.7"/>
<line x1="448.5" y1="349.5" x2="454.5" y2="349.5" stroke="#c8c8c8" stroke-width="1.5"/>
<text x="447.5" y="356.5" font-size="18.5" fill="#dedede" textLength="8.5" lengthAdjust="spacingAndGlyphs" text-anchor="end">0</text>
<line x1="454.5" y1="417.5" x2="615.5" y2="417.5" stroke="#8a8a8a" stroke-width="1.7"/>
<line x1="448.5" y1="417.5" x2="454.5" y2="417.5" stroke="#c8c8c8" stroke-width="1.5"/>
<text x="447.5" y="424.5" font-size="18.5" fill="#dedede" textLength="13.7" lengthAdjust="spacingAndGlyphs" text-anchor="end">-5</text>
<line x1="454.5" y1="485.5" x2="615.5" y2="485.5" stroke="#8a8a8a" stroke-width="1.7"/>
<line x1="448.5" y1="485.5" x2="454.5" y2="485.5" stroke="#c8c8c8" stroke-width="1.5"/>
<text x="447.5" y="492.5" font-size="18.5" fill="#dedede" textLength="22.2" lengthAdjust="spacingAndGlyphs" text-anchor="end">-10</text>
<line x1="448.5" y1="553.5" x2="454.5" y2="553.5" stroke="#c8c8c8" stroke-width="1.5"/>
<text x="447.5" y="560.5" font-size="18.5" fill="#dedede" textLength="22.2" lengthAdjust="spacingAndGlyphs" text-anchor="end">-15</text>
<line x1="454.5" y1="553.0" x2="454.5" y2="560.0" stroke="#c8c8c8" stroke-width="1.5"/>
<line x1="615.5" y1="553.0" x2="615.5" y2="560.0" stroke="#c8c8c8" stroke-width="1.5"/>
<text x="535.0" y="573.5" font-size="18.5" fill="#dedede" textLength="43.0" lengthAdjust="spacingAndGlyphs" text-anchor="middle">100W</text>
<text x="520.0" y="137.5" font-size="19" fill="#dedede" textLength="47.2" lengthAdjust="spacingAndGlyphs" text-anchor="middle">DeltaL</text>
<line x1="470.5" y1="349.3" x2="598.5" y2="349.3" stroke="#000" stroke-width="1.6"/>
<rect x="674.5" y="145.0" width="161.0" height="408.0" fill="#232323" stroke="#8a8a8a" stroke-width="1.5"/>
<line x1="674.5" y1="144.5" x2="835.5" y2="144.5" stroke="#8a8a8a" stroke-width="2.5"/>
<line x1="668.5" y1="145.0" x2="674.5" y2="145.0" stroke="#c8c8c8" stroke-width="1.5"/>
<text x="667.5" y="152.0" font-size="18.5" fill="#dedede" textLength="17.1" lengthAdjust="spacingAndGlyphs" text-anchor="end">15</text>
<line x1="674.5" y1="213.5" x2="835.5" y2="213.5" stroke="#8a8a8a" stroke-width="1.7"/>
<line x1="668.5" y1="213.5" x2="674.5" y2="213.5" stroke="#c8c8c8" stroke-width="1.5"/>
<text x="667.5" y="220.5" font-size="18.5" fill="#dedede" textLength="17.1" lengthAdjust="spacingAndGlyphs" text-anchor="end">10</text>
<line x1="674.5" y1="281.5" x2="835.5" y2="281.5" stroke="#8a8a8a" stroke-width="1.7"/>
<line x1="668.5" y1="281.5" x2="674.5" y2="281.5" stroke="#c8c8c8" stroke-width="1.5"/>
<text x="667.5" y="288.5" font-size="18.5" fill="#dedede" textLength="8.5" lengthAdjust="spacingAndGlyphs" text-anchor="end">5</text>
<line x1="674.5" y1="349.5" x2="835.5" y2="349.5" stroke="#8a8a8a" stroke-width="1.7"/>
<line x1="668.5" y1="349.5" x2="674.5" y2="349.5" stroke="#c8c8c8" stroke-width="1.5"/>
<text x="667.5" y="356.5" font-size="18.5" fill="#dedede" textLength="8.5" lengthAdjust="spacingAndGlyphs" text-anchor="end">0</text>
<line x1="674.5" y1="417.5" x2="835.5" y2="417.5" stroke="#8a8a8a" stroke-width="1.7"/>
<line x1="668.5" y1="417.5" x2="674.5" y2="417.5" stroke="#c8c8c8" stroke-width="1.5"/>
<text x="667.5" y="424.5" font-size="18.5" fill="#dedede" textLength="13.7" lengthAdjust="spacingAndGlyphs" text-anchor="end">-5</text>
<line x1="674.5" y1="485.5" x2="835.5" y2="485.5" stroke="#8a8a8a" stroke-width="1.7"/>
<line x1="668.5" y1="485.5" x2="674.5" y2="485.5" stroke="#c8c8c8" stroke-width="1.5"/>
<text x="667.5" y="492.5" font-size="18.5" fill="#dedede" textLength="22.2" lengthAdjust="spacingAndGlyphs" text-anchor="end">-10</text>
<line x1="668.5" y1="553.5" x2="674.5" y2="553.5" stroke="#c8c8c8" stroke-width="1.5"/>
<text x="667.5" y="560.5" font-size="18.5" fill="#dedede" textLength="22.2" lengthAdjust="spacingAndGlyphs" text-anchor="end">-15</text>
<line x1="674.5" y1="553.0" x2="674.5" y2="560.0" stroke="#c8c8c8" stroke-width="1.5"/>
<line x1="835.5" y1="553.0" x2="835.5" y2="560.0" stroke="#c8c8c8" stroke-width="1.5"/>
<text x="755.0" y="573.5" font-size="18.5" fill="#dedede" textLength="43.0" lengthAdjust="spacingAndGlyphs" text-anchor="middle">100W</text>
<text x="740.0" y="137.5" font-size="19" fill="#dedede" textLength="49.9" lengthAdjust="spacingAndGlyphs" text-anchor="middle">DeltaC</text>
<rect x="691" y="326.5" width="127" height="22.5" fill="url(#gWhiteV)" stroke="#000" stroke-width="1.6"/>
<rect x="894.5" y="145.0" width="161.0" height="408.0" fill="#232323" stroke="#8a8a8a" stroke-width="1.5"/>
<line x1="894.5" y1="144.5" x2="1055.5" y2="144.5" stroke="#8a8a8a" stroke-width="2.5"/>
<line x1="888.5" y1="145.0" x2="894.5" y2="145.0" stroke="#c8c8c8" stroke-width="1.5"/>
<text x="887.5" y="152.0" font-size="18.5" fill="#dedede" textLength="17.1" lengthAdjust="spacingAndGlyphs" text-anchor="end">15</text>
<line x1="894.5" y1="213.5" x2="1055.5" y2="213.5" stroke="#8a8a8a" stroke-width="1.7"/>
<line x1="888.5" y1="213.5" x2="894.5" y2="213.5" stroke="#c8c8c8" stroke-width="1.5"/>
<text x="887.5" y="220.5" font-size="18.5" fill="#dedede" textLength="17.1" lengthAdjust="spacingAndGlyphs" text-anchor="end">10</text>
<line x1="894.5" y1="281.5" x2="1055.5" y2="281.5" stroke="#8a8a8a" stroke-width="1.7"/>
<line x1="888.5" y1="281.5" x2="894.5" y2="281.5" stroke="#c8c8c8" stroke-width="1.5"/>
<text x="887.5" y="288.5" font-size="18.5" fill="#dedede" textLength="8.5" lengthAdjust="spacingAndGlyphs" text-anchor="end">5</text>
<line x1="894.5" y1="349.5" x2="1055.5" y2="349.5" stroke="#8a8a8a" stroke-width="1.7"/>
<line x1="888.5" y1="349.5" x2="894.5" y2="349.5" stroke="#c8c8c8" stroke-width="1.5"/>
<text x="887.5" y="356.5" font-size="18.5" fill="#dedede" textLength="8.5" lengthAdjust="spacingAndGlyphs" text-anchor="end">0</text>
<line x1="894.5" y1="417.5" x2="1055.5" y2="417.5" stroke="#8a8a8a" stroke-width="1.7"/>
<line x1="888.5" y1="417.5" x2="894.5" y2="417.5" stroke="#c8c8c8" stroke-width="1.5"/>
<text x="887.5" y="424.5" font-size="18.5" fill="#dedede" textLength="13.7" lengthAdjust="spacingAndGlyphs" text-anchor="end">-5</text>
<line x1="894.5" y1="485.5" x2="1055.5" y2="485.5" stroke="#8a8a8a" stroke-width="1.7"/>
<line x1="888.5" y1="485.5" x2="894.5" y2="485.5" stroke="#c8c8c8" stroke-width="1.5"/>
<text x="887.5" y="492.5" font-size="18.5" fill="#dedede" textLength="22.2" lengthAdjust="spacingAndGlyphs" text-anchor="end">-10</text>
<line x1="888.5" y1="553.5" x2="894.5" y2="553.5" stroke="#c8c8c8" stroke-width="1.5"/>
<text x="887.5" y="560.5" font-size="18.5" fill="#dedede" textLength="22.2" lengthAdjust="spacingAndGlyphs" text-anchor="end">-15</text>
<line x1="894.5" y1="553.0" x2="894.5" y2="560.0" stroke="#c8c8c8" stroke-width="1.5"/>
<line x1="1055.5" y1="553.0" x2="1055.5" y2="560.0" stroke="#c8c8c8" stroke-width="1.5"/>
<text x="975.0" y="573.5" font-size="18.5" fill="#dedede" textLength="43.0" lengthAdjust="spacingAndGlyphs" text-anchor="middle">100W</text>
<text x="960.0" y="137.5" font-size="19" fill="#dedede" textLength="49.9" lengthAdjust="spacingAndGlyphs" text-anchor="middle">DeltaH</text>
<line x1="910.5" y1="349.3" x2="1038.5" y2="349.3" stroke="#000" stroke-width="1.6"/>
<rect x="417.5" y="596" width="660" height="210.5" fill="#000"/>
<rect x="437.5" y="605" width="69" height="85.5" fill="#c3c3c6"/>
<rect x="437.5" y="690" width="69" height="85.5" fill="#c4c4c4"/>
<rect x="437.5" y="605" width="69" height="170.5" fill="none" stroke="#e6e6e6" stroke-width="1.4"/>
<text x="472.0" y="796.0" font-size="16.5" fill="#f0f0f0" textLength="35.4" lengthAdjust="spacingAndGlyphs" text-anchor="middle">White</text>
<rect x="518.0" y="605" width="69" height="85.5" fill="#c11600"/>
<rect x="518.0" y="690" width="69" height="85.5" fill="#c00000"/>
<rect x="518.0" y="605" width="69" height="170.5" fill="none" stroke="#e6e6e6" stroke-width="1.4"/>
<text x="552.5" y="796.0" font-size="16.5" fill="#f0f0f0" textLength="25.4" lengthAdjust="spacingAndGlyphs" text-anchor="middle">Red</text>
<rect x="598.5" y="605" width="69" height="85.5" fill="#04c500"/>
<rect x="598.5" y="690" width="69" height="85.5" fill="#26c12f"/>
<rect x="598.5" y="605" width="69" height="170.5" fill="none" stroke="#e6e6e6" stroke-width="1.4"/>
<text x="632.9" y="796.0" font-size="16.5" fill="#f0f0f0" textLength="38.5" lengthAdjust="spacingAndGlyphs" text-anchor="middle">Green</text>
<rect x="679.0" y="605" width="69" height="85.5" fill="#3200c5"/>
<rect x="679.0" y="690" width="69" height="85.5" fill="#1f21be"/>
<rect x="679.0" y="605" width="69" height="170.5" fill="none" stroke="#e6e6e6" stroke-width="1.4"/>
<text x="713.4" y="796.0" font-size="16.5" fill="#f0f0f0" textLength="27.7" lengthAdjust="spacingAndGlyphs" text-anchor="middle">Blue</text>
<rect x="759.5" y="605" width="69" height="85.5" fill="#00c0c1"/>
<rect x="759.5" y="690" width="69" height="85.5" fill="#06c1c1"/>
<rect x="759.5" y="605" width="69" height="170.5" fill="none" stroke="#e6e6e6" stroke-width="1.4"/>
<text x="793.8" y="796.0" font-size="16.5" fill="#f0f0f0" textLength="32.4" lengthAdjust="spacingAndGlyphs" text-anchor="middle">Cyan</text>
<rect x="840.0" y="605" width="69" height="85.5" fill="#c200c8"/>
<rect x="840.0" y="690" width="69" height="85.5" fill="#c21bbe"/>
<rect x="840.0" y="605" width="69" height="170.5" fill="none" stroke="#e6e6e6" stroke-width="1.4"/>
<text x="874.2" y="796.0" font-size="16.5" fill="#f0f0f0" textLength="53.9" lengthAdjust="spacingAndGlyphs" text-anchor="middle">Magenta</text>
<rect x="920.0" y="605" width="69" height="85.5" fill="#c3c300"/>
<rect x="920.0" y="690" width="69" height="85.5" fill="#c3c130"/>
<rect x="920.0" y="605" width="69" height="170.5" fill="none" stroke="#e6e6e6" stroke-width="1.4"/>
<text x="954.7" y="796.0" font-size="16.5" fill="#f0f0f0" textLength="39.6" lengthAdjust="spacingAndGlyphs" text-anchor="middle">Yellow</text>
<rect x="1000.5" y="605" width="69" height="85.5" fill="#fafafc"/>
<rect x="1000.5" y="690" width="69" height="85.5" fill="#fcfcfc"/>
<rect x="1000.5" y="605" width="69" height="170.5" fill="none" stroke="#e6e6e6" stroke-width="1.4"/>
<text x="1035.2" y="796.0" font-size="16.5" fill="#f0f0f0" textLength="36.2" lengthAdjust="spacingAndGlyphs" text-anchor="middle">100W</text>
<text transform="translate(432.5,642) rotate(-90)" text-anchor="middle" font-size="14.5" fill="#f0f0f0" textLength="44" lengthAdjust="spacingAndGlyphs">Actual</text>
<text transform="translate(432.5,738) rotate(-90)" text-anchor="middle" font-size="14.5" fill="#f0f0f0" textLength="44" lengthAdjust="spacingAndGlyphs">Target</text>
<rect x="1134.0" y="142.3" width="711.5" height="635.2" fill="none" stroke="#9a9a9a" stroke-width="1.5"/>
<text x="1470.0" y="134.5" font-size="19" fill="#dedede" textLength="93.0" lengthAdjust="spacingAndGlyphs" text-anchor="middle">CIE 1976 u'v'</text>
<line x1="1134.0" y1="777.5" x2="1134.0" y2="785.5" stroke="#c8c8c8" stroke-width="1.5"/>
<text x="1133.5" y="805.6" font-size="18.3" fill="#dedede" textLength="8.4" lengthAdjust="spacingAndGlyphs" text-anchor="middle">0</text>
<line x1="1128.0" y1="777.5" x2="1134.0" y2="777.5" stroke="#c8c8c8" stroke-width="1.5"/>
<text x="1127.5" y="784.3" font-size="18.3" fill="#dedede" textLength="8.4" lengthAdjust="spacingAndGlyphs" text-anchor="end">0</text>
<line x1="1193.21" y1="777.5" x2="1193.21" y2="785.5" stroke="#c8c8c8" stroke-width="1.5"/>
<text x="1192.7" y="805.6" font-size="18.3" fill="#dedede" textLength="29.6" lengthAdjust="spacingAndGlyphs" text-anchor="middle">0.05</text>
<line x1="1128.0" y1="724.68" x2="1134.0" y2="724.68" stroke="#c8c8c8" stroke-width="1.5"/>
<text x="1127.5" y="731.5" font-size="18.3" fill="#dedede" textLength="29.6" lengthAdjust="spacingAndGlyphs" text-anchor="end">0.05</text>
<line x1="1252.42" y1="777.5" x2="1252.42" y2="785.5" stroke="#c8c8c8" stroke-width="1.5"/>
<text x="1251.9" y="805.6" font-size="18.3" fill="#dedede" textLength="21.1" lengthAdjust="spacingAndGlyphs" text-anchor="middle">0.1</text>
<line x1="1128.0" y1="671.86" x2="1134.0" y2="671.86" stroke="#c8c8c8" stroke-width="1.5"/>
<text x="1127.5" y="678.7" font-size="18.3" fill="#dedede" textLength="21.1" lengthAdjust="spacingAndGlyphs" text-anchor="end">0.1</text>
<line x1="1311.63" y1="777.5" x2="1311.63" y2="785.5" stroke="#c8c8c8" stroke-width="1.5"/>
<text x="1311.1" y="805.6" font-size="18.3" fill="#dedede" textLength="29.6" lengthAdjust="spacingAndGlyphs" text-anchor="middle">0.15</text>
<line x1="1128.0" y1="619.04" x2="1134.0" y2="619.04" stroke="#c8c8c8" stroke-width="1.5"/>
<text x="1127.5" y="625.8" font-size="18.3" fill="#dedede" textLength="29.6" lengthAdjust="spacingAndGlyphs" text-anchor="end">0.15</text>
<line x1="1370.8400000000001" y1="777.5" x2="1370.8400000000001" y2="785.5" stroke="#c8c8c8" stroke-width="1.5"/>
<text x="1370.3" y="805.6" font-size="18.3" fill="#dedede" textLength="21.1" lengthAdjust="spacingAndGlyphs" text-anchor="middle">0.2</text>
<line x1="1128.0" y1="566.22" x2="1134.0" y2="566.22" stroke="#c8c8c8" stroke-width="1.5"/>
<text x="1127.5" y="573.0" font-size="18.3" fill="#dedede" textLength="21.1" lengthAdjust="spacingAndGlyphs" text-anchor="end">0.2</text>
<line x1="1430.05" y1="777.5" x2="1430.05" y2="785.5" stroke="#c8c8c8" stroke-width="1.5"/>
<text x="1429.5" y="805.6" font-size="18.3" fill="#dedede" textLength="29.6" lengthAdjust="spacingAndGlyphs" text-anchor="middle">0.25</text>
<line x1="1128.0" y1="513.4" x2="1134.0" y2="513.4" stroke="#c8c8c8" stroke-width="1.5"/>
<text x="1127.5" y="520.2" font-size="18.3" fill="#dedede" textLength="29.6" lengthAdjust="spacingAndGlyphs" text-anchor="end">0.25</text>
<line x1="1489.26" y1="777.5" x2="1489.26" y2="785.5" stroke="#c8c8c8" stroke-width="1.5"/>
<text x="1488.8" y="805.6" font-size="18.3" fill="#dedede" textLength="21.1" lengthAdjust="spacingAndGlyphs" text-anchor="middle">0.3</text>
<line x1="1128.0" y1="460.5799999999999" x2="1134.0" y2="460.5799999999999" stroke="#c8c8c8" stroke-width="1.5"/>
<text x="1127.5" y="467.4" font-size="18.3" fill="#dedede" textLength="21.1" lengthAdjust="spacingAndGlyphs" text-anchor="end">0.3</text>
<line x1="1548.47" y1="777.5" x2="1548.47" y2="785.5" stroke="#c8c8c8" stroke-width="1.5"/>
<text x="1548.0" y="805.6" font-size="18.3" fill="#dedede" textLength="29.6" lengthAdjust="spacingAndGlyphs" text-anchor="middle">0.35</text>
<line x1="1128.0" y1="407.75999999999993" x2="1134.0" y2="407.75999999999993" stroke="#c8c8c8" stroke-width="1.5"/>
<text x="1127.5" y="414.6" font-size="18.3" fill="#dedede" textLength="29.6" lengthAdjust="spacingAndGlyphs" text-anchor="end">0.35</text>
<line x1="1607.68" y1="777.5" x2="1607.68" y2="785.5" stroke="#c8c8c8" stroke-width="1.5"/>
<text x="1607.2" y="805.6" font-size="18.3" fill="#dedede" textLength="21.1" lengthAdjust="spacingAndGlyphs" text-anchor="middle">0.4</text>
<line x1="1128.0" y1="354.93999999999994" x2="1134.0" y2="354.93999999999994" stroke="#c8c8c8" stroke-width="1.5"/>
<text x="1127.5" y="361.7" font-size="18.3" fill="#dedede" textLength="21.1" lengthAdjust="spacingAndGlyphs" text-anchor="end">0.4</text>
<line x1="1666.8899999999999" y1="777.5" x2="1666.8899999999999" y2="785.5" stroke="#c8c8c8" stroke-width="1.5"/>
<text x="1666.4" y="805.6" font-size="18.3" fill="#dedede" textLength="29.6" lengthAdjust="spacingAndGlyphs" text-anchor="middle">0.45</text>
<line x1="1128.0" y1="302.11999999999995" x2="1134.0" y2="302.11999999999995" stroke="#c8c8c8" stroke-width="1.5"/>
<text x="1127.5" y="308.9" font-size="18.3" fill="#dedede" textLength="29.6" lengthAdjust="spacingAndGlyphs" text-anchor="end">0.45</text>
<line x1="1726.1" y1="777.5" x2="1726.1" y2="785.5" stroke="#c8c8c8" stroke-width="1.5"/>
<text x="1725.6" y="805.6" font-size="18.3" fill="#dedede" textLength="21.1" lengthAdjust="spacingAndGlyphs" text-anchor="middle">0.5</text>
<line x1="1128.0" y1="249.29999999999995" x2="1134.0" y2="249.29999999999995" stroke="#c8c8c8" stroke-width="1.5"/>
<text x="1127.5" y="256.1" font-size="18.3" fill="#dedede" textLength="21.1" lengthAdjust="spacingAndGlyphs" text-anchor="end">0.5</text>
<line x1="1785.31" y1="777.5" x2="1785.31" y2="785.5" stroke="#c8c8c8" stroke-width="1.5"/>
<text x="1784.8" y="805.6" font-size="18.3" fill="#dedede" textLength="29.6" lengthAdjust="spacingAndGlyphs" text-anchor="middle">0.55</text>
<line x1="1128.0" y1="196.4799999999999" x2="1134.0" y2="196.4799999999999" stroke="#c8c8c8" stroke-width="1.5"/>
<text x="1127.5" y="203.3" font-size="18.3" fill="#dedede" textLength="29.6" lengthAdjust="spacingAndGlyphs" text-anchor="end">0.55</text>
<rect x="1561" y="736" width="281.5" height="35" fill="#333"/>
<text x="1562.0" y="763.1" font-size="24.4" fill="#f0f0f0" textLength="172.0" lengthAdjust="spacingAndGlyphs">Gamut Coverage:</text>
<text x="1747.4" y="763.1" font-size="24.4" fill="#f0f0f0" textLength="61.0" lengthAdjust="spacingAndGlyphs">98.3%</text>
<rect x="1360.2" y="272.3" width="15" height="17.4" fill="none" stroke="#000" stroke-width="1.9"/>
<rect x="1660.0" y="214.5" width="15" height="17.4" fill="none" stroke="#fff" stroke-width="1.7"/>
<rect x="1273.8" y="172.6" width="15" height="17.4" fill="none" stroke="#fff" stroke-width="1.7"/>
<rect x="1333.6" y="600.8" width="15" height="17.4" fill="none" stroke="#fff" stroke-width="1.7"/>
<rect x="1289.6" y="285.9" width="15" height="17.4" fill="none" stroke="#fff" stroke-width="1.7"/>
<rect x="1487.3" y="418.9" width="15" height="17.4" fill="none" stroke="#fff" stroke-width="1.7"/>
<rect x="1367.4" y="182.8" width="15" height="17.4" fill="none" stroke="#fff" stroke-width="1.7"/>
<ellipse cx="1367.3" cy="283.1" rx="4.5" ry="5.1" fill="#ffffff" stroke="#000" stroke-width="1.6"/>
<ellipse cx="1653.2" cy="220.8" rx="4.5" ry="5.1" fill="#c60800" stroke="#000" stroke-width="1.6"/>
<ellipse cx="1276.7" cy="174.7" rx="4.5" ry="5.1" fill="#04b800" stroke="#000" stroke-width="1.6"/>
<ellipse cx="1355.7" cy="633.8" rx="4.5" ry="5.1" fill="#1400a4" stroke="#000" stroke-width="1.6"/>
<ellipse cx="1297.8" cy="298.3" rx="4.5" ry="5.1" fill="#00bcbc" stroke="#000" stroke-width="1.6"/>
<ellipse cx="1497.1" cy="439.0" rx="4.5" ry="5.1" fill="#b000c4" stroke="#000" stroke-width="1.6"/>
<ellipse cx="1370.6" cy="185.8" rx="4.5" ry="5.1" fill="#c6c400" stroke="#000" stroke-width="1.6"/>
<text x="16.4" y="908.6" font-size="39.8" fill="#f0f0f0" textLength="244.5" lengthAdjust="spacingAndGlyphs" stroke="#f0f0f0" stroke-width="0.5">Current Reading</text>
<text x="17.0" y="997.3" font-size="33" fill="#f0f0f0" textLength="114.0" lengthAdjust="spacingAndGlyphs" stroke="#f0f0f0" stroke-width="0.45">x: 0.3098</text>
<text x="191.0" y="997.3" font-size="33" fill="#f0f0f0" textLength="114.0" lengthAdjust="spacingAndGlyphs" stroke="#f0f0f0" stroke-width="0.45">y: 0.3257</text>
<text x="17.0" y="1051.3" font-size="33" fill="#f0f0f0" textLength="122.5" lengthAdjust="spacingAndGlyphs" stroke="#f0f0f0" stroke-width="0.45">fL: 122.75</text>
<text x="17.0" y="1103.7" font-size="33" fill="#f0f0f0" textLength="177.0" lengthAdjust="spacingAndGlyphs" stroke="#f0f0f0" stroke-width="0.45">cd/m²: 420.58</text>
<rect x="384.5" y="874.5" width="291.29999999999995" height="231.5999999999999" fill="#232323" stroke="#8a8a8a" stroke-width="1.5"/>
<line x1="384.5" y1="874.0" x2="675.8" y2="874.0" stroke="#8a8a8a" stroke-width="2.5"/>
<line x1="378.5" y1="874.5" x2="384.5" y2="874.5" stroke="#c8c8c8" stroke-width="1.5"/>
<text x="377.5" y="881.5" font-size="18.5" fill="#dedede" textLength="8.5" lengthAdjust="spacingAndGlyphs" text-anchor="end">4</text>
<line x1="384.5" y1="932.4" x2="675.8" y2="932.4" stroke="#8a8a8a" stroke-width="1.7"/>
<line x1="378.5" y1="932.4" x2="384.5" y2="932.4" stroke="#c8c8c8" stroke-width="1.5"/>
<text x="377.5" y="939.4" font-size="18.5" fill="#dedede" textLength="8.5" lengthAdjust="spacingAndGlyphs" text-anchor="end">2</text>
<line x1="384.5" y1="990.3" x2="675.8" y2="990.3" stroke="#8a8a8a" stroke-width="1.7"/>
<line x1="378.5" y1="990.3" x2="384.5" y2="990.3" stroke="#c8c8c8" stroke-width="1.5"/>
<text x="377.5" y="997.3" font-size="18.5" fill="#dedede" textLength="8.5" lengthAdjust="spacingAndGlyphs" text-anchor="end">0</text>
<line x1="384.5" y1="1048.2" x2="675.8" y2="1048.2" stroke="#8a8a8a" stroke-width="1.7"/>
<line x1="378.5" y1="1048.2" x2="384.5" y2="1048.2" stroke="#c8c8c8" stroke-width="1.5"/>
<text x="377.5" y="1055.2" font-size="18.5" fill="#dedede" textLength="13.7" lengthAdjust="spacingAndGlyphs" text-anchor="end">-2</text>
<line x1="378.5" y1="1106.1" x2="384.5" y2="1106.1" stroke="#c8c8c8" stroke-width="1.5"/>
<text x="377.5" y="1113.1" font-size="18.5" fill="#dedede" textLength="13.7" lengthAdjust="spacingAndGlyphs" text-anchor="end">-4</text>
<line x1="384.5" y1="1106.1" x2="384.5" y2="1113.1" stroke="#c8c8c8" stroke-width="1.5"/>
<line x1="675.8" y1="1106.1" x2="675.8" y2="1113.1" stroke="#c8c8c8" stroke-width="1.5"/>
<text x="520.0" y="865.5" font-size="19" fill="#dedede" textLength="92.0" lengthAdjust="spacingAndGlyphs" text-anchor="middle">RGB Balance</text>
<text x="530.0" y="1126.5" font-size="18.5" fill="#dedede" textLength="40.1" lengthAdjust="spacingAndGlyphs" text-anchor="middle">100W</text>
<line x1="489" y1="989.8" x2="568" y2="989.8" stroke="#000" stroke-width="2.2"/>
<rect x="413.5" y="990.3" width="76.5" height="42.5" fill="url(#gRedV)" stroke="#000" stroke-width="1.6"/>
<rect x="568" y="883.5" width="76.5" height="106.79999999999995" fill="url(#gBlueV)" stroke="#000" stroke-width="1.6"/>
<text x="898.0" y="856.0" font-size="19" fill="#dedede" textLength="84.0" lengthAdjust="spacingAndGlyphs" text-anchor="middle">CIE 1931 xy</text>
<rect x="709.0" y="862.5" width="379.5" height="255.5" fill="none" stroke="#9a9a9a" stroke-width="1.6"/>
<rect x="891" y="981" width="16" height="16.5" fill="none" stroke="#000" stroke-width="1.6"/>
<circle cx="875.9" cy="1007" r="4.6" fill="none" stroke="#000" stroke-width="1.5"/>
<g clip-path="url(#cpTab)">
<rect x="1108" y="844" width="706" height="50.2" fill="url(#gHdr)"/>
<rect x="1108" y="844" width="16.5" height="50.2" fill="#000"/>
<rect x="1124.5" y="894.2" width="690" height="46.799999999999955" fill="#3c3c3c"/>
<rect x="1108" y="894.2" width="16.5" height="46.799999999999955" fill="#2a2a2a"/>
<rect x="1124.5" y="941" width="690" height="46.200000000000045" fill="#808080"/>
<rect x="1108" y="941" width="16.5" height="46.200000000000045" fill="#343434"/>
<rect x="1124.5" y="987.2" width="690" height="46.5" fill="#3c3c3c"/>
<rect x="1108" y="987.2" width="16.5" height="46.5" fill="#2a2a2a"/>
<rect x="1124.5" y="1033.7" width="690" height="46.899999999999864" fill="#808080"/>
<rect x="1108" y="1033.7" width="16.5" height="46.899999999999864" fill="#343434"/>
<rect x="1124.5" y="1080.6" width="690" height="46.40000000000009" fill="#3c3c3c"/>
<rect x="1108" y="1080.6" width="16.5" height="46.40000000000009" fill="#2a2a2a"/>
<text x="1210.2" y="878.8" font-size="27.8" fill="#f4f4f4" textLength="46.7" lengthAdjust="spacingAndGlyphs">White</text>
<text x="1298.0" y="878.8" font-size="27.8" fill="#f4f4f4" textLength="32.4" lengthAdjust="spacingAndGlyphs">Red</text>
<text x="1375.6" y="878.8" font-size="27.8" fill="#f4f4f4" textLength="49.1" lengthAdjust="spacingAndGlyphs">Green</text>
<text x="1464.0" y="878.8" font-size="27.8" fill="#f4f4f4" textLength="35.3" lengthAdjust="spacingAndGlyphs">Blue</text>
<text x="1541.4" y="878.8" font-size="27.8" fill="#f4f4f4" textLength="41.2" lengthAdjust="spacingAndGlyphs">Cyan</text>
<text x="1630.0" y="878.8" font-size="27.8" fill="#f4f4f4" textLength="68.7" lengthAdjust="spacingAndGlyphs">Magenta</text>
<text x="1709.0" y="878.8" font-size="27.8" fill="#f4f4f4" textLength="48.2" lengthAdjust="spacingAndGlyphs">Yellow</text>
<text x="1797.7" y="878.8" font-size="27.8" fill="#f4f4f4" textLength="46.1" lengthAdjust="spacingAndGlyphs">100W</text>
<text x="1129.9" y="928.5" font-size="27.8" fill="#f4f4f4" textLength="63.8" lengthAdjust="spacingAndGlyphs">x: CIE31</text>
<text x="1210.2" y="928.5" font-size="27.8" fill="#f4f4f4" textLength="55.7" lengthAdjust="spacingAndGlyphs">0.3098</text>
<text x="1298.0" y="928.5" font-size="27.8" fill="#f4f4f4" textLength="55.7" lengthAdjust="spacingAndGlyphs">0.6330</text>
<text x="1375.6" y="928.5" font-size="27.8" fill="#f4f4f4" textLength="55.7" lengthAdjust="spacingAndGlyphs">0.2993</text>
<text x="1464.0" y="928.5" font-size="27.8" fill="#f4f4f4" textLength="55.7" lengthAdjust="spacingAndGlyphs">0.1537</text>
<text x="1541.4" y="928.5" font-size="27.8" fill="#f4f4f4" textLength="55.7" lengthAdjust="spacingAndGlyphs">0.2224</text>
<text x="1630.0" y="928.5" font-size="27.8" fill="#f4f4f4" textLength="55.7" lengthAdjust="spacingAndGlyphs">0.3157</text>
<text x="1709.0" y="928.5" font-size="27.8" fill="#f4f4f4" textLength="54.3" lengthAdjust="spacingAndGlyphs">0.4211</text>
<text x="1797.7" y="928.5" font-size="27.8" fill="#f4f4f4" textLength="55.7" lengthAdjust="spacingAndGlyphs">0.3098</text>
<text x="1129.9" y="974.8" font-size="27.8" fill="#f4f4f4" textLength="63.8" lengthAdjust="spacingAndGlyphs">y: CIE31</text>
<text x="1210.2" y="974.8" font-size="27.8" fill="#f4f4f4" textLength="55.7" lengthAdjust="spacingAndGlyphs">0.3255</text>
<text x="1298.0" y="974.8" font-size="27.8" fill="#f4f4f4" textLength="55.7" lengthAdjust="spacingAndGlyphs">0.3370</text>
<text x="1375.6" y="974.8" font-size="27.8" fill="#f4f4f4" textLength="55.7" lengthAdjust="spacingAndGlyphs">0.6268</text>
<text x="1464.0" y="974.8" font-size="27.8" fill="#f4f4f4" textLength="55.7" lengthAdjust="spacingAndGlyphs">0.0491</text>
<text x="1541.4" y="974.8" font-size="27.8" fill="#f4f4f4" textLength="55.7" lengthAdjust="spacingAndGlyphs">0.3224</text>
<text x="1630.0" y="974.8" font-size="27.8" fill="#f4f4f4" textLength="55.7" lengthAdjust="spacingAndGlyphs">0.1459</text>
<text x="1709.0" y="974.8" font-size="27.8" fill="#f4f4f4" textLength="55.7" lengthAdjust="spacingAndGlyphs">0.5226</text>
<text x="1797.7" y="974.8" font-size="27.8" fill="#f4f4f4" textLength="55.7" lengthAdjust="spacingAndGlyphs">0.3257</text>
<text x="1129.9" y="1021.4" font-size="27.8" fill="#f4f4f4" textLength="10.5" lengthAdjust="spacingAndGlyphs">Y</text>
<text x="1210.2" y="1021.4" font-size="27.8" fill="#f4f4f4" textLength="75.9" lengthAdjust="spacingAndGlyphs">223.6743</text>
<text x="1298.0" y="1021.4" font-size="27.8" fill="#f4f4f4" textLength="65.8" lengthAdjust="spacingAndGlyphs">48.4763</text>
<text x="1375.6" y="1021.4" font-size="27.8" fill="#f4f4f4" textLength="75.9" lengthAdjust="spacingAndGlyphs">158.4134</text>
<text x="1464.0" y="1021.4" font-size="27.8" fill="#f4f4f4" textLength="65.8" lengthAdjust="spacingAndGlyphs">13.8347</text>
<text x="1541.4" y="1021.4" font-size="27.8" fill="#f4f4f4" textLength="75.9" lengthAdjust="spacingAndGlyphs">173.3407</text>
<text x="1630.0" y="1021.4" font-size="27.8" fill="#f4f4f4" textLength="65.8" lengthAdjust="spacingAndGlyphs">62.4235</text>
<text x="1709.0" y="1021.4" font-size="27.8" fill="#f4f4f4" textLength="75.9" lengthAdjust="spacingAndGlyphs">208.2188</text>
<text x="1797.7" y="1021.4" font-size="27.8" fill="#f4f4f4" textLength="74.6" lengthAdjust="spacingAndGlyphs">420.5811</text>
<text x="1129.9" y="1068.0" font-size="27.8" fill="#f4f4f4" textLength="66.5" lengthAdjust="spacingAndGlyphs">Target Y</text>
<text x="1210.2" y="1068.0" font-size="27.8" fill="#f4f4f4" textLength="75.9" lengthAdjust="spacingAndGlyphs">223.6743</text>
<text x="1298.0" y="1068.0" font-size="27.8" fill="#f4f4f4" textLength="65.8" lengthAdjust="spacingAndGlyphs">47.5657</text>
<text x="1375.6" y="1068.0" font-size="27.8" fill="#f4f4f4" textLength="75.9" lengthAdjust="spacingAndGlyphs">159.9626</text>
<text x="1464.0" y="1068.0" font-size="27.8" fill="#f4f4f4" textLength="65.8" lengthAdjust="spacingAndGlyphs">16.1461</text>
<text x="1541.4" y="1068.0" font-size="27.8" fill="#f4f4f4" textLength="75.9" lengthAdjust="spacingAndGlyphs">176.1086</text>
<text x="1630.0" y="1068.0" font-size="27.8" fill="#f4f4f4" textLength="64.5" lengthAdjust="spacingAndGlyphs">63.7117</text>
<text x="1709.0" y="1068.0" font-size="27.8" fill="#f4f4f4" textLength="75.9" lengthAdjust="spacingAndGlyphs">207.5282</text>
<text x="1797.7" y="1068.0" font-size="27.8" fill="#f4f4f4" textLength="74.6" lengthAdjust="spacingAndGlyphs">420.5811</text>
<text x="1129.9" y="1114.6" font-size="27.8" fill="#f4f4f4" textLength="67.0" lengthAdjust="spacingAndGlyphs">ΔE 2000</text>
<text x="1210.2" y="1114.6" font-size="27.8" fill="#f4f4f4" textLength="55.7" lengthAdjust="spacingAndGlyphs">1.5013</text>
<text x="1298.0" y="1114.6" font-size="27.8" fill="#f4f4f4" textLength="55.7" lengthAdjust="spacingAndGlyphs">1.3299</text>
<text x="1375.6" y="1114.6" font-size="27.8" fill="#f4f4f4" textLength="55.7" lengthAdjust="spacingAndGlyphs">1.8493</text>
<text x="1464.0" y="1114.6" font-size="27.8" fill="#f4f4f4" textLength="55.7" lengthAdjust="spacingAndGlyphs">3.9535</text>
<text x="1541.4" y="1114.6" font-size="27.8" fill="#f4f4f4" textLength="55.7" lengthAdjust="spacingAndGlyphs">1.4891</text>
<text x="1630.0" y="1114.6" font-size="27.8" fill="#f4f4f4" textLength="55.7" lengthAdjust="spacingAndGlyphs">1.1766</text>
<text x="1709.0" y="1114.6" font-size="27.8" fill="#f4f4f4" textLength="55.7" lengthAdjust="spacingAndGlyphs">2.0999</text>
<text x="1797.7" y="1114.6" font-size="27.8" fill="#f4f4f4" textLength="55.7" lengthAdjust="spacingAndGlyphs">1.7651</text>
</g>
<rect x="1814" y="895" width="18.8" height="203" fill="#626262" rx="4"/>
<rect x="1815.5" y="897.5" width="15.8" height="24" fill="url(#gArrowBtn)" rx="3.5"/>
<path d="M1817.6 916l5.8-12.5 5.8 12.5z" fill="#3e3e3e" stroke="#b8b8b8" stroke-width="0.9"/>
<rect x="1816" y="925.5" width="14.8" height="113" fill="#444" rx="7"/>
<rect x="1815.5" y="1072.8" width="15.8" height="24" fill="url(#gArrowBtn)" rx="3.5"/>
<path d="M1817.6 1078.8l5.8 12.5 5.8-12.5z" fill="#3e3e3e" stroke="#b8b8b8" stroke-width="0.9"/>
<rect x="1125" y="1099.7" width="688" height="28.8" fill="#626262" rx="4"/>
<rect x="1127.5" y="1102.5" width="15" height="23.5" fill="url(#gArrowBtn)" rx="3.5"/>
<path d="M1139 1105.5l-7 8.8 7 8.8z" fill="#3e3e3e" stroke="#b8b8b8" stroke-width="0.9"/>
<rect x="1146" y="1102" width="589.2" height="24" fill="#444" rx="11"/>
<rect x="1796.3" y="1102.5" width="15" height="23.5" fill="url(#gArrowBtn)" rx="3.5"/>
<path d="M1800.3 1105.5l7 8.8-7 8.8z" fill="#3e3e3e" stroke="#b8b8b8" stroke-width="0.9"/>
<rect x="0" y="1140" width="1593" height="60" fill="url(#gBar)"/>
<rect x="1400" y="1140" width="193" height="60" fill="url(#gBarH)"/>
<rect x="1.3" y="1140.3" width="144.7" height="59.2" fill="url(#gSwBtn)" rx="5"/>
<rect x="6.5" y="1145.5" width="134.5" height="34" fill="#c0c0c0" rx="3.5"/>
<text x="73.6" y="1194.7" font-size="10.5" fill="#303030" textLength="28.0" lengthAdjust="spacingAndGlyphs" text-anchor="middle" font-weight="bold">White</text>
<rect x="148.4" y="1140.3" width="144.7" height="59.2" fill="url(#gSwBtn)" rx="5"/>
<rect x="153.6" y="1145.5" width="134.5" height="34" fill="#c00000" rx="3.5"/>
<text x="220.7" y="1194.7" font-size="10.5" fill="#303030" textLength="19.4" lengthAdjust="spacingAndGlyphs" text-anchor="middle" font-weight="bold">Red</text>
<rect x="295.5" y="1140.3" width="144.7" height="59.2" fill="url(#gSwBtn)" rx="5"/>
<rect x="300.7" y="1145.5" width="134.5" height="34" fill="#00c000" rx="3.5"/>
<text x="367.8" y="1194.7" font-size="10.5" fill="#303030" textLength="29.7" lengthAdjust="spacingAndGlyphs" text-anchor="middle" font-weight="bold">Green</text>
<rect x="442.6" y="1140.3" width="144.7" height="59.2" fill="url(#gSwBtn)" rx="5"/>
<rect x="447.8" y="1145.5" width="134.5" height="34" fill="#0000c0" rx="3.5"/>
<text x="514.9" y="1194.7" font-size="10.5" fill="#303030" textLength="22.3" lengthAdjust="spacingAndGlyphs" text-anchor="middle" font-weight="bold">Blue</text>
<rect x="589.7" y="1140.3" width="144.7" height="59.2" fill="url(#gSwBtn)" rx="5"/>
<rect x="594.9" y="1145.5" width="134.5" height="34" fill="#00c0c0" rx="3.5"/>
<text x="662.0" y="1194.7" font-size="10.5" fill="#303030" textLength="25.2" lengthAdjust="spacingAndGlyphs" text-anchor="middle" font-weight="bold">Cyan</text>
<rect x="736.8" y="1140.3" width="144.7" height="59.2" fill="url(#gSwBtn)" rx="5"/>
<rect x="742.0" y="1145.5" width="134.5" height="34" fill="#c000c0" rx="3.5"/>
<text x="809.1" y="1194.7" font-size="10.5" fill="#303030" textLength="41.7" lengthAdjust="spacingAndGlyphs" text-anchor="middle" font-weight="bold">Magenta</text>
<rect x="883.9" y="1140.3" width="144.7" height="59.2" fill="url(#gSwBtn)" rx="5"/>
<rect x="889.1" y="1145.5" width="134.5" height="34" fill="#c4c400" rx="3.5"/>
<text x="956.2" y="1194.7" font-size="10.5" fill="#303030" textLength="32.0" lengthAdjust="spacingAndGlyphs" text-anchor="middle" font-weight="bold">Yellow</text>
<rect x="1031.0" y="1140.3" width="144.7" height="59.2" fill="url(#gSel)" rx="5"/>
<rect x="1036.2" y="1145.5" width="134.5" height="34" fill="#ffffff" rx="3.5"/>
<text x="1103.3" y="1194.7" font-size="10.5" fill="#fff" textLength="26.9" lengthAdjust="spacingAndGlyphs" text-anchor="middle" font-weight="bold">100W</text>
<rect x="1545.5" y="1140.5" width="46" height="17" fill="url(#gCtl)" stroke="#4a4a4a" stroke-width="1" rx="3"/>
<circle cx="1568.5" cy="1148" r="6.5" fill="#747474"/><path d="M1564.3 1150.5l4.2-4.6 4.2 4.6z" fill="#2a2a2a"/>
<rect x="1545.5" y="1158" width="46" height="44" fill="url(#gCtl)" stroke="#4a4a4a" stroke-width="1" rx="3"/>
<rect x="1555" y="1165" width="27" height="27" fill="url(#gStop)" stroke="#222" stroke-width="2.4" rx="4.5"/>
<rect x="1562.3" y="1172" width="12.8" height="13" fill="#060606"/>
<rect x="1593" y="1140" width="44.59999999999991" height="28.7" fill="url(#gCtl)" stroke="#555" stroke-width="0.8"/>
<circle cx="1615.3" cy="1154.5" r="9.4" fill="#707070" opacity="0.85"/>
<rect x="1611.3" y="1150.5" width="8" height="8" fill="#2c2c2c"/>
<rect x="1637.6" y="1140" width="43.80000000000018" height="28.7" fill="url(#gCtl)" stroke="#555" stroke-width="0.8"/>
<circle cx="1659.5" cy="1154.5" r="9.4" fill="#707070" opacity="0.85"/>
<path d="M1656.3 1149.7l8 4.8-8 4.8z" fill="#2c2c2c"/>
<rect x="1681.4" y="1140" width="43.19999999999982" height="28.7" fill="url(#gCtl)" stroke="#555" stroke-width="0.8"/>
<circle cx="1703.0" cy="1154.5" r="9.4" fill="#707070" opacity="0.85"/>
<text x="1703.0" y="1158.1" font-size="10.5" fill="#2c2c2c" textLength="11.5" lengthAdjust="spacingAndGlyphs" text-anchor="middle" font-weight="bold">[   ]</text>
<path d="M1700.4 1154.5h5.2M1701.4 1153.2l-1.4 1.3 1.4 1.3M1704.6 1153.2l1.4 1.3-1.4 1.3" stroke="#2c2c2c" stroke-width="0.9" fill="none"/>
<rect x="1724.6" y="1140" width="43.700000000000045" height="28.7" fill="url(#gCtl)" stroke="#555" stroke-width="0.8"/>
<circle cx="1746.4" cy="1154.5" r="9.4" fill="#707070" opacity="0.85"/>
<text x="1746.4" y="1159.0" font-size="15" fill="#2c2c2c" textLength="10.7" lengthAdjust="spacingAndGlyphs" text-anchor="middle" font-weight="bold">∞</text>
<rect x="1768.3" y="1140" width="43.700000000000045" height="28.7" fill="url(#gCtl)" stroke="#555" stroke-width="0.8"/>
<circle cx="1790.2" cy="1154.5" r="9.4" fill="#707070" opacity="0.85"/>
<path d="M1785.7 1153.5a4.6 4.6 0 0 1 8.5-2M1794.7 1155.5a4.6 4.6 0 0 1-8.5 2" fill="none" stroke="#2c2c2c" stroke-width="2"/><path d="M1795.7 1148.5v4.5h-4.5zM1784.7 1160.5v-4.5h4.5z" fill="#2c2c2c"/>
<text x="1833.5" y="1167.2" font-size="35.5" fill="#300" text-anchor="middle" style="font-family:'DejaVu Sans',sans-serif" opacity="0.7">✱</text>
<text x="1832.5" y="1166.2" font-size="35.5" fill="#e20808" text-anchor="middle" style="font-family:'DejaVu Sans',sans-serif">✱</text>
<rect x="1593" y="1170.4" width="131.6" height="34" fill="url(#gCtl)" stroke="#555" stroke-width="0.8" rx="3"/>
<rect x="1724.6" y="1170.4" width="136" height="34" fill="url(#gCtl)" stroke="#555" stroke-width="0.8" rx="3"/>
<circle cx="1622.5" cy="1184.5" r="9.4" fill="#7a7a7a"/><circle cx="1828.5" cy="1184.5" r="9.4" fill="#7a7a7a"/>
<text x="1622.5" y="1189.0" font-size="15" fill="#383838" textLength="8.3" lengthAdjust="spacingAndGlyphs" text-anchor="middle">«</text>
<text x="1828.5" y="1189.0" font-size="15" fill="#383838" textLength="8.3" lengthAdjust="spacingAndGlyphs" text-anchor="middle">»</text>
<text x="1648.7" y="1191.8" font-size="20.3" fill="#333" textLength="48.0" lengthAdjust="spacingAndGlyphs" font-weight="bold">Back</text>
<text x="1752.0" y="1191.8" font-size="20.3" fill="#333" textLength="49.6" lengthAdjust="spacingAndGlyphs" font-weight="bold">Next</text>
</svg>
</div></body></html>
